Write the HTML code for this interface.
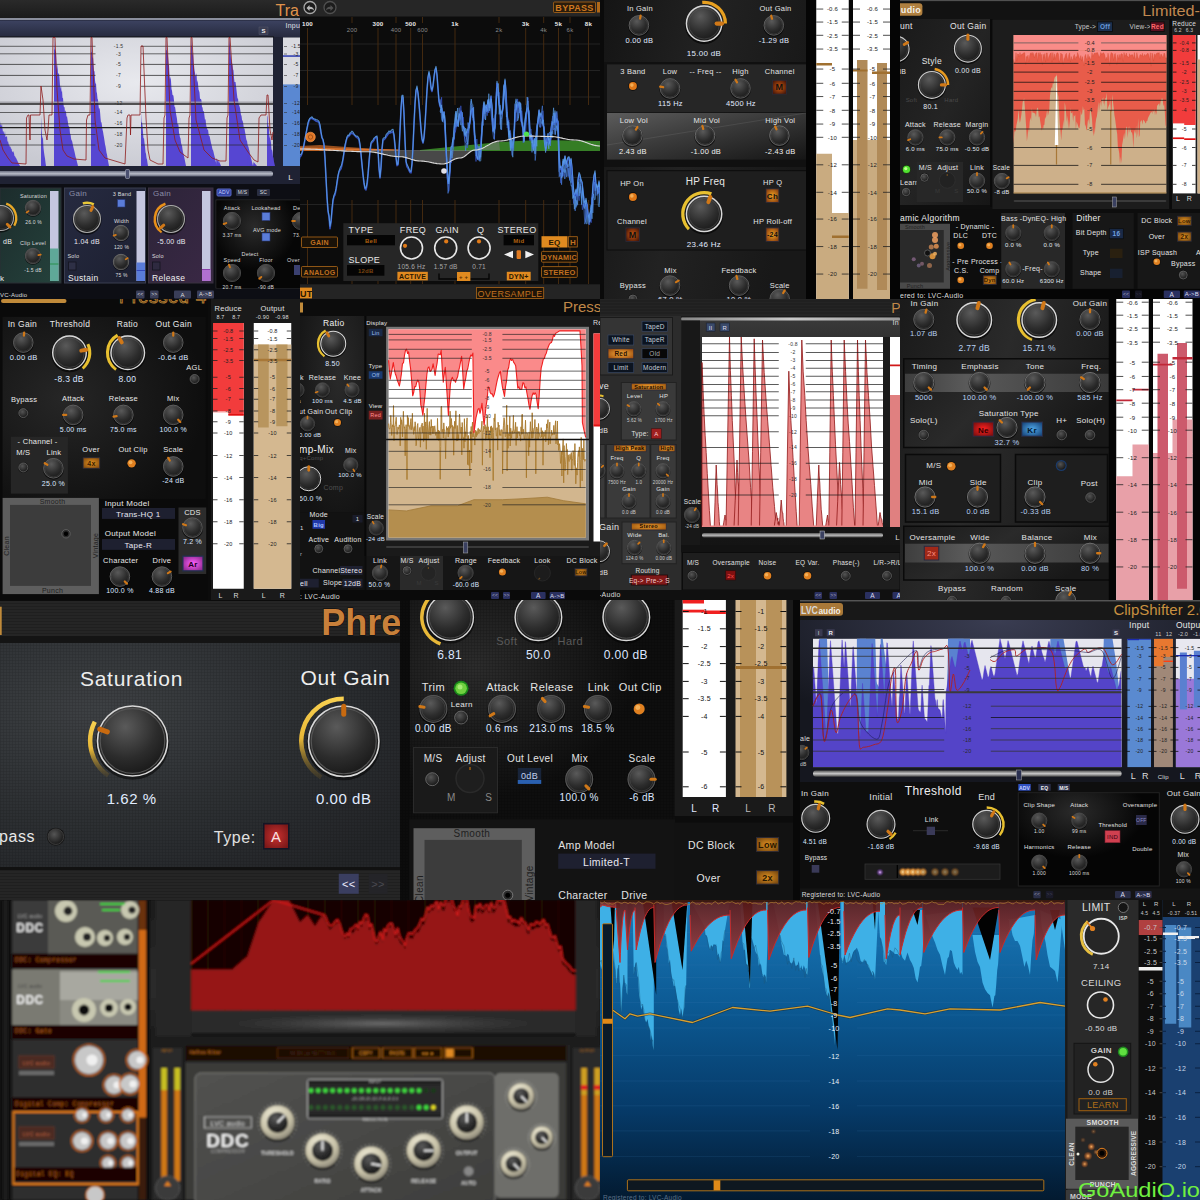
<!DOCTYPE html>
<html><head><meta charset="utf-8"><style>html,body{margin:0;padding:0;background:#000;overflow:hidden}svg{display:block}text{font-family:"Liberation Sans",sans-serif}</style></head>
<body><svg width="1200" height="1200" viewBox="0 0 1200 1200">
<defs>
<radialGradient id="kb" cx="0.4" cy="0.3" r="0.8"><stop offset="0" stop-color="#5a5a5a"/><stop offset="0.55" stop-color="#2c2c2c"/><stop offset="1" stop-color="#111"/></radialGradient>
<radialGradient id="ledd" cx="0.4" cy="0.35" r="0.7"><stop offset="0" stop-color="#555"/><stop offset="1" stop-color="#151515"/></radialGradient>
<radialGradient id="kbw" cx="0.4" cy="0.3" r="0.8"><stop offset="0" stop-color="#f0ecd8"/><stop offset="0.6" stop-color="#c8c2a8"/><stop offset="1" stop-color="#7a766a"/></radialGradient>
<clipPath id="cA"><rect x="0" y="0" width="300" height="299"/></clipPath>
<linearGradient id="hdrA" x1="0" y1="0" x2="0" y2="1"><stop offset="0" stop-color="#2a2a2a"/><stop offset="1" stop-color="#1a1a1a"/></linearGradient>
<linearGradient id="navA" x1="0" y1="0" x2="0" y2="1"><stop offset="0" stop-color="#3c4260"/><stop offset="1" stop-color="#262a3e"/></linearGradient>
<radialGradient id="grA" cx="0.5" cy="0.35" r="0.7"><stop offset="0" stop-color="#e8e9ee"/><stop offset="1" stop-color="#c9cad2"/></radialGradient>
<linearGradient id="slA" x1="0" y1="0" x2="0" y2="1"><stop offset="0" stop-color="#6a6e80"/><stop offset="0.5" stop-color="#b8bcc8"/><stop offset="1" stop-color="#5a5e70"/></linearGradient>
<linearGradient id="grnA" x1="0" y1="0" x2="1" y2="1"><stop offset="0" stop-color="#1c2c2c"/><stop offset="1" stop-color="#25423c"/></linearGradient>
<linearGradient id="nvA" x1="0" y1="0" x2="1" y2="1"><stop offset="0" stop-color="#262a40"/><stop offset="1" stop-color="#1c1f30"/></linearGradient>
<linearGradient id="ppA" x1="0" y1="0" x2="1" y2="1"><stop offset="0" stop-color="#2c2438"/><stop offset="1" stop-color="#3a2845"/></linearGradient>
<radialGradient id="blkA" cx="0.45" cy="0.3" r="0.5"><stop offset="0" stop-color="#2a2a2a"/><stop offset="1" stop-color="#060606"/></radialGradient>
<clipPath id="cB"><rect x="300" y="0" width="300" height="300"/></clipPath>
<clipPath id="cC"><rect x="600" y="0" width="210" height="300"/></clipPath>
<linearGradient id="p2C" x1="0" y1="0" x2="1" y2="1"><stop offset="0" stop-color="#5c5c5c"/><stop offset="0.45" stop-color="#3a3a3a"/><stop offset="1" stop-color="#151515"/></linearGradient>
<linearGradient id="bgC" x1="0" y1="0" x2="1" y2="0.3"><stop offset="0" stop-color="#141414"/><stop offset="0.5" stop-color="#222"/><stop offset="1" stop-color="#181818"/></linearGradient>
<radialGradient id="vb77280" cx="0.5" cy="0.5" r="0.6"><stop offset="0" stop-color="#d05a10"/><stop offset="1" stop-color="#4a1808"/></radialGradient>
<radialGradient id="vb766188" cx="0.5" cy="0.5" r="0.6"><stop offset="0" stop-color="#f0a020"/><stop offset="1" stop-color="#8a4010"/></radialGradient>
<radialGradient id="vb625227" cx="0.5" cy="0.5" r="0.6"><stop offset="0" stop-color="#d05a10"/><stop offset="1" stop-color="#4a1808"/></radialGradient>
<radialGradient id="vb766227" cx="0.5" cy="0.5" r="0.6"><stop offset="0" stop-color="#f0a020"/><stop offset="1" stop-color="#8a4010"/></radialGradient>
<clipPath id="cCm"><rect x="806" y="0" width="94" height="300"/></clipPath>
<clipPath id="cD"><rect x="900" y="0" width="300" height="300"/></clipPath>
<linearGradient id="bgD" x1="0" y1="0" x2="1" y2="1"><stop offset="0" stop-color="#1a1a1a"/><stop offset="0.5" stop-color="#242424"/><stop offset="1" stop-color="#161616"/></linearGradient>
<radialGradient id="vb983275" cx="0.5" cy="0.5" r="0.6"><stop offset="0" stop-color="#e09020"/><stop offset="1" stop-color="#8a5010"/></radialGradient>
<radialGradient id="vb1177216" cx="0.5" cy="0.5" r="0.6"><stop offset="0" stop-color="#e09020"/><stop offset="1" stop-color="#7a4a10"/></radialGradient>
<radialGradient id="vb1177232" cx="0.5" cy="0.5" r="0.6"><stop offset="0" stop-color="#e09020"/><stop offset="1" stop-color="#7a4a10"/></radialGradient>
<clipPath id="cE"><rect x="0" y="299" width="300" height="301"/></clipPath>
<radialGradient id="bgE" cx="0.3" cy="0.45" r="0.7"><stop offset="0" stop-color="#262626"/><stop offset="1" stop-color="#0e0e0e"/></radialGradient>
<radialGradient id="vb83457" cx="0.5" cy="0.5" r="0.6"><stop offset="0" stop-color="#e09020"/><stop offset="1" stop-color="#8a5010"/></radialGradient>
<radialGradient id="arE" cx="0.5" cy="0.5" r="0.6"><stop offset="0" stop-color="#ff60ff"/><stop offset="1" stop-color="#902a90"/></radialGradient>
<clipPath id="cF"><rect x="300" y="299" width="300" height="301"/></clipPath>
<radialGradient id="bgF" cx="0.6" cy="0.3" r="0.8"><stop offset="0" stop-color="#2a2a2a"/><stop offset="1" stop-color="#121212"/></radialGradient>
<radialGradient id="vb575568" cx="0.5" cy="0.5" r="0.6"><stop offset="0" stop-color="#e09020"/><stop offset="1" stop-color="#7a4a10"/></radialGradient>
<clipPath id="cG"><rect x="600" y="299" width="300" height="301"/></clipPath>
<radialGradient id="vb608348" cx="0.5" cy="0.5" r="0.6"><stop offset="0" stop-color="#f8b040"/><stop offset="1" stop-color="#a05010"/></radialGradient>
<radialGradient id="vb631383" cx="0.5" cy="0.5" r="0.6"><stop offset="0" stop-color="#f0a030"/><stop offset="1" stop-color="#a05810"/></radialGradient>
<radialGradient id="vb613445" cx="0.5" cy="0.5" r="0.6"><stop offset="0" stop-color="#f0a030"/><stop offset="1" stop-color="#a05810"/></radialGradient>
<radialGradient id="vb658445" cx="0.5" cy="0.5" r="0.6"><stop offset="0" stop-color="#f0a030"/><stop offset="1" stop-color="#a05810"/></radialGradient>
<radialGradient id="vb631523" cx="0.5" cy="0.5" r="0.6"><stop offset="0" stop-color="#f0a030"/><stop offset="1" stop-color="#a05810"/></radialGradient>
<linearGradient id="frG" x1="0" y1="0" x2="0" y2="1"><stop offset="0" stop-color="#3a3a3a"/><stop offset="0.3" stop-color="#202020"/><stop offset="1" stop-color="#141414"/></linearGradient>
<linearGradient id="ftG" x1="0" y1="0" x2="1" y2="0"><stop offset="0" stop-color="#888"/><stop offset="0.5" stop-color="#c8c8c8"/><stop offset="1" stop-color="#999"/></linearGradient>
<linearGradient id="slG" x1="0" y1="0" x2="0" y2="1"><stop offset="0" stop-color="#555"/><stop offset="0.5" stop-color="#bbb"/><stop offset="1" stop-color="#444"/></linearGradient>
<clipPath id="cH"><rect x="900" y="299" width="300" height="301"/></clipPath>
<linearGradient id="bgH" x1="0" y1="0" x2="1" y2="0.4"><stop offset="0" stop-color="#1a1a1a"/><stop offset="0.5" stop-color="#2a2a2a"/><stop offset="1" stop-color="#181818"/></linearGradient>
<linearGradient id="stH" x1="0" y1="0" x2="1" y2="0"><stop offset="0" stop-color="#3e3e3e"/><stop offset="0.3" stop-color="#5a5a5a"/><stop offset="1" stop-color="#3a3a3a"/></linearGradient>
<radialGradient id="neH" cx="0.5" cy="0.5" r="0.6"><stop offset="0" stop-color="#ff2020"/><stop offset="1" stop-color="#801010"/></radialGradient>
<radialGradient id="krH" cx="0.5" cy="0.5" r="0.6"><stop offset="0" stop-color="#50a8e8"/><stop offset="1" stop-color="#1a4a80"/></radialGradient>
<clipPath id="cI"><rect x="0" y="600" width="400" height="300"/></clipPath>
<radialGradient id="bgI" cx="0.25" cy="0.3" r="0.9"><stop offset="0" stop-color="#3e4144"/><stop offset="0.5" stop-color="#2e3134"/><stop offset="1" stop-color="#232528"/></radialGradient>
<pattern id="grdI" width="3" height="3" patternUnits="userSpaceOnUse"><rect width="3" height="3" fill="none"/><path d="M0,0.5 H3 M0.5,0 V3" stroke="#000" stroke-width="0.5" opacity="0.18"/></pattern>
<pattern id="strI" width="4" height="3" patternUnits="userSpaceOnUse"><rect width="4" height="3" fill="#1f1f1f"/><rect y="1.5" width="4" height="1" fill="#2a2a2a"/></pattern>
<linearGradient id="arcI1" x1="0" y1="1" x2="0" y2="0"><stop offset="0" stop-color="#8a6a20" stop-opacity="0.2"/><stop offset="0.5" stop-color="#e8b838"/><stop offset="1" stop-color="#f8d050"/></linearGradient>
<radialGradient id="tyI" cx="0.5" cy="0.5" r="0.6"><stop offset="0" stop-color="#c83030"/><stop offset="1" stop-color="#7a1818"/></radialGradient>
<clipPath id="cJ"><rect x="400" y="600" width="400" height="300"/></clipPath>
<radialGradient id="bgJ" cx="0.25" cy="0.3" r="0.6"><stop offset="0" stop-color="#2c2c2c"/><stop offset="1" stop-color="#0e0e0e"/></radialGradient>
<pattern id="grdJ" width="3" height="3" patternUnits="userSpaceOnUse"><path d="M0,0.5 H3 M0.5,0 V3" stroke="#000" stroke-width="0.5" opacity="0.25"/></pattern>
<radialGradient id="vb756837" cx="0.5" cy="0.5" r="0.6"><stop offset="0" stop-color="#e09020"/><stop offset="1" stop-color="#7a4a10"/></radialGradient>
<radialGradient id="vb756870" cx="0.5" cy="0.5" r="0.6"><stop offset="0" stop-color="#e09020"/><stop offset="1" stop-color="#7a4a10"/></radialGradient>
<clipPath id="cK"><rect x="800" y="600" width="400" height="300"/></clipPath>
<radialGradient id="frK" cx="0.5" cy="0" r="0.7"><stop offset="0" stop-color="#3a3d52"/><stop offset="1" stop-color="#15171f"/></radialGradient>
<radialGradient id="advK" cx="0.4" cy="0.2" r="0.5"><stop offset="0" stop-color="#2a2a2a"/><stop offset="1" stop-color="#050505"/></radialGradient>
<linearGradient id="slK" x1="0" y1="0" x2="0" y2="1"><stop offset="0" stop-color="#555"/><stop offset="0.5" stop-color="#c8c8c8"/><stop offset="1" stop-color="#444"/></linearGradient>
<radialGradient id="glK"><stop offset="0" stop-color="#ffe0a0"/><stop offset="0.5" stop-color="#f0a040" stop-opacity="0.8"/><stop offset="1" stop-color="#a05010" stop-opacity="0"/></radialGradient>
<radialGradient id="glP"><stop offset="0" stop-color="#e0b0ff"/><stop offset="1" stop-color="#6020a0" stop-opacity="0"/></radialGradient>
<clipPath id="cL"><rect x="0" y="900" width="600" height="300"/></clipPath>
<linearGradient id="bzL" x1="0" y1="0" x2="0" y2="1"><stop offset="0" stop-color="#1c1c1c"/><stop offset="0.6" stop-color="#2c2c2c"/><stop offset="1" stop-color="#1a1a1a"/></linearGradient>
<radialGradient id="hlL" cx="0.5" cy="0.5" r="0.5"><stop offset="0" stop-color="#6a6a6a"/><stop offset="1" stop-color="#2a2a2a" stop-opacity="0"/></radialGradient>
<filter id="blL" x="0" y="0" width="1" height="1"><feGaussianBlur stdDeviation="1.0"/></filter>
<linearGradient id="fpL" x1="0" y1="0" x2="1" y2="1"><stop offset="0" stop-color="#525250"/><stop offset="1" stop-color="#3e3e3c"/></linearGradient>
<clipPath id="cM"><rect x="600" y="900" width="600" height="300"/></clipPath>
<linearGradient id="bgM" x1="0" y1="0" x2="0" y2="1"><stop offset="0" stop-color="#1a78b8"/><stop offset="0.35" stop-color="#0c5a94"/><stop offset="0.7" stop-color="#063a68"/><stop offset="1" stop-color="#031a30"/></linearGradient>
<linearGradient id="rdM" x1="0" y1="0" x2="0" y2="1"><stop offset="0" stop-color="#5a1a1a"/><stop offset="1" stop-color="#9a3a3a"/></linearGradient>
<radialGradient id="obM"><stop offset="0" stop-color="#ffb060"/><stop offset="1" stop-color="#c05010" stop-opacity="0.2"/></radialGradient></defs>
<rect x="0" y="0" width="1200" height="1200" fill="#101010"/>
<g clip-path="url(#cA)">
<rect x="0" y="0" width="300" height="19" fill="url(#hdrA)"/>
<text x="275.5" y="15.5" fill="#e0934c" font-size="16">Tra</text>
<rect x="0" y="18" width="300" height="2.5" fill="#8a8e9c"/>
<rect x="0" y="20" width="300" height="164" fill="#1f2233"/>
<rect x="0" y="20.5" width="300" height="16.5" fill="url(#navA)"/>
<rect x="0" y="36.5" width="274" height="1.0" fill="#111"/>
<text x="285.5" y="27.5" fill="#e0e0e8" font-size="7" letter-spacing="0.25">Input</text>
<rect x="259" y="27" width="9" height="7.5" fill="#3a3d52" stroke="#55596e" stroke-width="0.5"/>
<text x="263.5" y="33.2" fill="#f0f0f0" font-size="6" text-anchor="middle" font-weight="bold" letter-spacing="0.21">S</text>
<rect x="0" y="37.5" width="273" height="128.5" fill="url(#grA)"/>
<polygon points="-6.0,166.0 -6.0,99.0 -5.5,99.4 -5.0,105.3 -4.5,105.4 -4.0,109.9 -3.5,111.9 -3.0,107.7 -2.5,108.8 -2.0,118.9 -1.5,114.6 -1.0,115.9 -0.5,124.6 0.0,121.0 0.5,125.7 1.0,123.8 1.5,126.6 2.0,123.8 2.5,129.1 3.0,132.1 3.5,130.7 4.0,133.5 4.5,134.2 5.0,131.1 5.5,137.1 6.0,137.1 6.5,136.4 7.0,136.0 7.5,142.1 8.0,141.0 8.5,143.4 9.0,145.3 9.5,145.5 10.0,147.5 10.5,146.2 11.0,149.0 11.5,148.6 12.0,151.5 12.5,152.2 13.0,150.7 13.5,151.9 14.0,153.2 14.5,156.2 15.0,155.9 15.5,157.4 16.0,157.7 16.5,159.1 17.0,160.0 17.5,160.9 18.0,162.2 18.5,163.1 19.0,164.2 19.5,165.1 20.0,166.0 20.0,166.0" fill="#5646d2"/>
<polygon points="41.0,166.0 41.0,116.0 41.5,128.7 42.0,135.7 42.5,137.7 43.0,138.7 43.5,147.9 44.0,152.3 44.5,155.7 45.0,158.5 45.5,162.5 46.0,166.0 46.0,166.0" fill="#5646d2"/>
<polygon points="54.0,166.0 54.0,37.5 54.5,48.4 55.0,50.2 55.5,51.1 56.0,52.6 56.5,64.9 57.0,69.7 57.5,63.6 58.0,74.0 58.5,73.2 59.0,73.8 59.5,78.2 60.0,85.4 60.5,89.0 61.0,84.6 61.5,92.2 62.0,90.2 62.5,98.2 63.0,97.8 63.5,104.4 64.0,107.5 64.5,106.7 65.0,112.3 65.5,110.3 66.0,111.4 66.5,116.9 67.0,116.1 67.5,119.4 68.0,122.8 68.5,126.1 69.0,126.3 69.5,128.1 70.0,133.8 70.5,133.8 71.0,138.3 71.5,140.2 72.0,140.7 72.5,143.1 73.0,145.4 73.5,147.8 74.0,149.8 74.5,151.8 75.0,153.9 75.5,156.4 76.0,157.9 76.5,159.9 77.0,162.1 77.5,163.9 78.0,166.0 78.0,166.0" fill="#5646d2"/>
<polygon points="91.0,166.0 91.0,37.5 91.5,51.8 92.0,52.4 92.5,58.0 93.0,57.0 93.5,65.9 94.0,71.8 94.5,70.5 95.0,80.2 95.5,84.1 96.0,82.9 96.5,91.4 97.0,93.6 97.5,98.7 98.0,99.7 98.5,105.6 99.0,109.0 99.5,107.7 100.0,111.3 100.5,118.1 101.0,122.7 101.5,122.0 102.0,126.1 102.5,129.7 103.0,131.6 103.5,134.8 104.0,137.5 104.5,140.7 105.0,144.2 105.5,146.3 106.0,149.3 106.5,152.8 107.0,154.5 107.5,158.0 108.0,160.8 108.5,163.3 109.0,166.0 109.0,166.0" fill="#5646d2"/>
<polygon points="141.0,166.0 141.0,112.0 141.5,122.8 142.0,121.9 142.5,126.1 143.0,132.5 143.5,138.5 144.0,137.9 144.5,143.0 145.0,146.6 145.5,152.2 146.0,153.7 146.5,158.0 147.0,159.5 147.5,162.9 148.0,166.0 148.0,166.0" fill="#5646d2"/>
<polygon points="166.0,166.0 166.0,37.5 166.5,50.1 167.0,50.5 167.5,52.9 168.0,56.3 168.5,64.8 169.0,65.3 169.5,75.3 170.0,79.2 170.5,76.5 171.0,80.9 171.5,89.0 172.0,90.8 172.5,95.3 173.0,94.8 173.5,96.3 174.0,100.6 174.5,107.2 175.0,106.6 175.5,110.1 176.0,113.4 176.5,116.3 177.0,119.1 177.5,124.5 178.0,123.5 178.5,125.6 179.0,132.4 179.5,134.7 180.0,137.6 180.5,138.2 181.0,142.4 181.5,144.8 182.0,145.5 182.5,149.3 183.0,151.9 183.5,154.0 184.0,156.3 184.5,158.5 185.0,161.1 185.5,163.5 186.0,166.0 186.0,166.0" fill="#5646d2"/>
<polygon points="191.0,166.0 191.0,37.5 191.5,45.2 192.0,46.2 192.5,56.1 193.0,51.2 193.5,64.1 194.0,65.0 194.5,70.5 195.0,73.1 195.5,75.9 196.0,75.6 196.5,73.0 197.0,82.5 197.5,80.0 198.0,83.8 198.5,89.5 199.0,90.8 199.5,92.4 200.0,98.9 200.5,98.7 201.0,99.1 201.5,100.8 202.0,107.4 202.5,107.0 203.0,111.3 203.5,110.8 204.0,112.1 204.5,116.3 205.0,120.0 205.5,118.7 206.0,124.0 206.5,126.7 207.0,128.2 207.5,130.3 208.0,128.9 208.5,133.5 209.0,136.4 209.5,135.5 210.0,138.3 210.5,140.4 211.0,143.1 211.5,144.8 212.0,146.9 212.5,149.5 213.0,149.9 213.5,152.1 214.0,154.2 214.5,156.2 215.0,158.1 215.5,160.7 216.0,162.4 216.5,164.0 217.0,166.0 217.0,166.0" fill="#5646d2"/>
<polygon points="229.0,166.0 229.0,37.5 229.5,42.4 230.0,47.2 230.5,51.9 231.0,59.0 231.5,62.0 232.0,63.1 232.5,64.7 233.0,69.3 233.5,70.4 234.0,77.7 234.5,82.1 235.0,81.9 235.5,82.1 236.0,85.8 236.5,90.2 237.0,94.7 237.5,98.7 238.0,98.2 238.5,103.8 239.0,105.0 239.5,106.2 240.0,108.3 240.5,111.5 241.0,115.1 241.5,115.8 242.0,119.7 242.5,120.8 243.0,122.0 243.5,125.7 244.0,128.7 244.5,128.3 245.0,132.0 245.5,134.2 246.0,138.0 246.5,140.3 247.0,140.7 247.5,144.3 248.0,146.1 248.5,146.9 249.0,149.5 249.5,151.0 250.0,154.2 250.5,156.0 251.0,158.3 251.5,160.1 252.0,162.0 252.5,164.0 253.0,166.0 253.0,166.0" fill="#5646d2"/>
<polygon points="267.0,166.0 267.0,115.0 267.5,116.9 268.0,126.6 268.5,124.7 269.0,129.8 269.5,138.6 270.0,136.0 270.5,139.7 271.0,142.9 271.5,150.1 272.0,149.4 272.5,151.7 273.0,157.1 273.5,157.8 274.0,161.7 274.5,163.7 275.0,166.0 275.0,166.0" fill="#5646d2"/>
<polygon points="216.0,166.0 216.5,158.0 220.0,166.0" fill="#5646d2"/>
<polygon points="218.0,166.0 218.5,160.0 221.0,166.0" fill="#5646d2"/>
<polygon points="247.0,166.0 247.5,150.0 250.0,166.0" fill="#5646d2"/>
<polygon points="253.0,166.0 253.5,162.0 257.0,166.0" fill="#5646d2"/>
<line x1="0" y1="46.3" x2="95.5" y2="46.3" stroke="#2a2a2a" stroke-width="0.8" opacity="0.85"/>
<line x1="141" y1="46.3" x2="273" y2="46.3" stroke="#2a2a2a" stroke-width="0.8" opacity="0.85"/>
<line x1="0" y1="53.8" x2="95.5" y2="53.8" stroke="#2a2a2a" stroke-width="0.8" opacity="0.85"/>
<line x1="141" y1="53.8" x2="273" y2="53.8" stroke="#2a2a2a" stroke-width="0.8" opacity="0.85"/>
<line x1="0" y1="64.4" x2="95.5" y2="64.4" stroke="#2a2a2a" stroke-width="0.9" opacity="0.85"/>
<line x1="141" y1="64.4" x2="273" y2="64.4" stroke="#2a2a2a" stroke-width="0.9" opacity="0.85"/>
<line x1="0" y1="75.4" x2="95.5" y2="75.4" stroke="#2a2a2a" stroke-width="0.9" opacity="0.85"/>
<line x1="141" y1="75.4" x2="273" y2="75.4" stroke="#2a2a2a" stroke-width="0.9" opacity="0.85"/>
<line x1="0" y1="86.3" x2="95.5" y2="86.3" stroke="#2a2a2a" stroke-width="0.8" opacity="0.85"/>
<line x1="141" y1="86.3" x2="273" y2="86.3" stroke="#2a2a2a" stroke-width="0.8" opacity="0.85"/>
<line x1="0" y1="112.5" x2="95.5" y2="112.5" stroke="#2a2a2a" stroke-width="0.8" opacity="0.85"/>
<line x1="141" y1="112.5" x2="273" y2="112.5" stroke="#2a2a2a" stroke-width="0.8" opacity="0.85"/>
<line x1="0" y1="123.8" x2="95.5" y2="123.8" stroke="#2a2a2a" stroke-width="0.8" opacity="0.85"/>
<line x1="141" y1="123.8" x2="273" y2="123.8" stroke="#2a2a2a" stroke-width="0.8" opacity="0.85"/>
<line x1="0" y1="134.4" x2="95.5" y2="134.4" stroke="#2a2a2a" stroke-width="0.8" opacity="0.85"/>
<line x1="141" y1="134.4" x2="273" y2="134.4" stroke="#2a2a2a" stroke-width="0.8" opacity="0.85"/>
<line x1="0" y1="145" x2="95.5" y2="145" stroke="#2a2a2a" stroke-width="0.8" opacity="0.85"/>
<line x1="141" y1="145" x2="273" y2="145" stroke="#2a2a2a" stroke-width="0.8" opacity="0.85"/>
<rect x="0" y="101.5" width="273" height="1.5" fill="#9a9aa0" opacity="0.8"/>
<line x1="0" y1="104" x2="273" y2="104" stroke="#202020" stroke-width="1.3"/>
<line x1="0" y1="127.6" x2="273" y2="127.6" stroke="#202020" stroke-width="1.3"/>
<text x="118.5" y="48" fill="#333" font-size="5" text-anchor="middle" letter-spacing="0.18">-1.5</text>
<text x="118.5" y="55.5" fill="#333" font-size="5" text-anchor="middle" letter-spacing="0.18">-3</text>
<text x="118.5" y="66" fill="#333" font-size="5" text-anchor="middle" letter-spacing="0.18">-5</text>
<text x="118.5" y="77" fill="#333" font-size="5" text-anchor="middle" letter-spacing="0.18">-7</text>
<text x="118.5" y="88" fill="#333" font-size="5" text-anchor="middle" letter-spacing="0.18">-9</text>
<text x="118.5" y="105" fill="#333" font-size="5" text-anchor="middle" letter-spacing="0.18">-12</text>
<text x="118.5" y="114" fill="#333" font-size="5" text-anchor="middle" letter-spacing="0.18">-14</text>
<text x="118.5" y="125" fill="#333" font-size="5" text-anchor="middle" letter-spacing="0.18">-16</text>
<text x="118.5" y="136" fill="#333" font-size="5" text-anchor="middle" letter-spacing="0.18">-18</text>
<text x="118.5" y="147" fill="#333" font-size="5" text-anchor="middle" letter-spacing="0.18">-20</text>
<polyline points="0.0,140.0 3.0,150.0 8.0,158.0 12.0,163.0 13.0,163.0 26.0,164.0 26.5,118.0 28.0,115.0 29.0,115.0 30.0,140.0 30.5,115.0 40.0,115.0 41.0,86.0 43.0,100.0 45.0,130.0 47.0,140.0 48.0,130.0 49.0,115.0 52.0,115.0 53.0,37.5 55.0,37.5 57.0,90.0 60.0,130.0 63.0,150.0 67.0,156.0 74.0,159.0 86.0,160.0 86.5,120.0 88.0,115.0 90.0,115.0 91.0,37.5 92.0,37.5 95.0,120.0 99.0,150.0 105.0,158.0 125.0,164.0 127.0,118.0 128.0,115.0 130.0,115.0 130.5,135.0 131.0,115.0 140.0,115.0 141.0,46.0 143.0,46.0 146.0,118.0 148.0,150.0 150.0,160.0 158.0,164.0 163.0,164.0 164.0,118.0 165.0,115.0 166.0,37.5 167.0,37.5 170.0,110.0 175.0,140.0 180.0,152.0 188.0,158.0 189.0,118.0 190.0,115.0 191.0,37.5 192.0,37.5 196.0,120.0 204.0,150.0 212.0,158.0 220.0,161.0 226.0,161.0 227.0,118.0 228.0,115.0 229.0,37.5 230.0,37.5 234.0,100.0 240.0,140.0 248.0,152.0 254.0,160.0 258.0,162.0 259.0,118.0 261.0,115.0 266.0,115.0 267.0,95.0 268.0,95.0 270.0,130.0 272.0,140.0 273.0,132.0" fill="none" stroke="#8e1c1c" stroke-width="0.8" stroke-linejoin="round"/>
<rect x="283" y="37.5" width="17" height="128.5" fill="#d9dae0"/>
<rect x="283" y="84.4" width="17" height="81.6" fill="#5a88d2"/>
<rect x="283" y="55.3" width="17" height="1.5" fill="#2b3ab0"/>
<line x1="284" y1="46.5" x2="287" y2="46.5" stroke="#333" stroke-width="0.6"/>
<text x="296" y="48" fill="#222" font-size="5" text-anchor="middle" letter-spacing="0.18">-1.5</text>
<line x1="284" y1="54" x2="287" y2="54" stroke="#333" stroke-width="0.6"/>
<text x="296" y="55.5" fill="#222" font-size="5" text-anchor="middle" letter-spacing="0.18">-3</text>
<line x1="284" y1="64.5" x2="287" y2="64.5" stroke="#333" stroke-width="0.6"/>
<text x="296" y="66" fill="#222" font-size="5" text-anchor="middle" letter-spacing="0.18">-5</text>
<line x1="284" y1="75.5" x2="287" y2="75.5" stroke="#333" stroke-width="0.6"/>
<text x="296" y="77" fill="#222" font-size="5" text-anchor="middle" letter-spacing="0.18">-7</text>
<line x1="284" y1="86.5" x2="287" y2="86.5" stroke="#333" stroke-width="0.6"/>
<text x="296" y="88" fill="#222" font-size="5" text-anchor="middle" letter-spacing="0.18">-9</text>
<line x1="284" y1="103.5" x2="287" y2="103.5" stroke="#333" stroke-width="0.6"/>
<text x="296" y="105" fill="#222" font-size="5" text-anchor="middle" letter-spacing="0.18">-12</text>
<line x1="284" y1="112.5" x2="287" y2="112.5" stroke="#333" stroke-width="0.6"/>
<text x="296" y="114" fill="#222" font-size="5" text-anchor="middle" letter-spacing="0.18">-14</text>
<line x1="284" y1="123.5" x2="287" y2="123.5" stroke="#333" stroke-width="0.6"/>
<text x="296" y="125" fill="#222" font-size="5" text-anchor="middle" letter-spacing="0.18">-16</text>
<line x1="284" y1="134.5" x2="287" y2="134.5" stroke="#333" stroke-width="0.6"/>
<text x="296" y="136" fill="#222" font-size="5" text-anchor="middle" letter-spacing="0.18">-18</text>
<line x1="284" y1="145.5" x2="287" y2="145.5" stroke="#333" stroke-width="0.6"/>
<text x="296" y="147" fill="#222" font-size="5" text-anchor="middle" letter-spacing="0.18">-20</text>
<rect x="-3" y="171" width="276" height="5.5" fill="url(#slA)" rx="2.5"/>
<rect x="125.5" y="169.5" width="4.0" height="9.0" fill="#4a5070" rx="1" stroke="#c0c4d0" stroke-width="0.5"/>
<text x="290.5" y="180" fill="#e8e8e8" font-size="8" text-anchor="middle" letter-spacing="0.28">L</text>
<rect x="0" y="184" width="300" height="115" fill="#0d0e14"/>
<rect x="0" y="188" width="61" height="95" fill="url(#grnA)" stroke="#2a2e35" stroke-width="1"/>
<rect x="64.5" y="188" width="81.0" height="95" fill="url(#nvA)" stroke="#3a3e50" stroke-width="1"/>
<rect x="148.5" y="188" width="64.5" height="95" fill="url(#ppA)" stroke="#3a3240" stroke-width="1"/>
<rect x="216" y="200" width="84" height="88" fill="#060606" stroke="#2a2a2a" stroke-width="1"/>
<path d="M6.20,203.72 A15.2,15.2 0 0 1 14.16,225.60" fill="none" stroke="#e8a828" stroke-width="2.34" stroke-linecap="butt"/>
<circle cx="1" cy="219.04" r="13.52" fill="#000" opacity="0.6"/>
<circle cx="1" cy="218" r="13" fill="url(#kb)"/>
<circle cx="1" cy="218" r="12.48" fill="none" stroke="#aaa" stroke-width="1.04"/>
<circle cx="1" cy="218" r="10.92" fill="none" stroke="#5a5a5a" stroke-width="0.45500000000000007" opacity="0.8"/>
<line x1="7.25" y1="224.25" x2="10.01" y2="227.01" stroke="#d07818" stroke-width="2.86" stroke-linecap="round"/>
<text x="33.5" y="197.5" fill="#d8d8d8" font-size="5.5" text-anchor="middle" letter-spacing="0.19">Saturation</text>
<circle cx="33" cy="208.64" r="8.32" fill="#000" opacity="0.6"/>
<circle cx="33" cy="208" r="8" fill="url(#kb)"/>
<circle cx="33" cy="208" r="7.68" fill="none" stroke="#666" stroke-width="0.64"/>
<circle cx="33" cy="208" r="6.72" fill="none" stroke="#5a5a5a" stroke-width="0.4" opacity="0.8"/>
<line x1="28.54" y1="211.12" x2="26.58" y2="212.5" stroke="#d07818" stroke-width="1.76" stroke-linecap="round"/>
<text x="33.5" y="224" fill="#ddd" font-size="5" text-anchor="middle" letter-spacing="0.18">26.0 %</text>
<text x="33" y="245" fill="#d8d8d8" font-size="5.5" text-anchor="middle" letter-spacing="0.19">Clip Level</text>
<circle cx="33" cy="256.64" r="8.32" fill="#000" opacity="0.6"/>
<circle cx="33" cy="256" r="8" fill="url(#kb)"/>
<circle cx="33" cy="256" r="7.68" fill="none" stroke="#666" stroke-width="0.64"/>
<circle cx="33" cy="256" r="6.72" fill="none" stroke="#5a5a5a" stroke-width="0.4" opacity="0.8"/>
<line x1="38.36" y1="255.06" x2="40.72" y2="254.64" stroke="#d07818" stroke-width="1.76" stroke-linecap="round"/>
<text x="33" y="272" fill="#ddd" font-size="5" text-anchor="middle" letter-spacing="0.18">-1.5 dB</text>
<text x="3" y="244" fill="#eee" font-size="7" letter-spacing="0.25">dB</text>
<text x="0" y="281" fill="#eee" font-size="8" letter-spacing="0.28">k</text>
<rect x="50" y="191" width="8.5" height="90" fill="#c4c6df"/>
<rect x="50" y="248.5" width="8.5" height="32.5" fill="#5fa898"/>
<line x1="50" y1="264" x2="58.5" y2="264" stroke="#1c8a3a" stroke-width="0.8"/>
<text x="69" y="196" fill="#8a8ea8" font-size="8" letter-spacing="0.28">Gain</text>
<path d="M82.81,203.35 A16.2,16.2 0 0 1 93.85,204.32" fill="none" stroke="#e8c838" stroke-width="2.52" stroke-linecap="butt"/>
<circle cx="87" cy="220.12" r="14.56" fill="#000" opacity="0.6"/>
<circle cx="87" cy="219" r="14" fill="url(#kb)"/>
<circle cx="87" cy="219" r="13.44" fill="none" stroke="#aaa" stroke-width="1.12"/>
<circle cx="87" cy="219" r="11.76" fill="none" stroke="#5a5a5a" stroke-width="0.49000000000000005" opacity="0.8"/>
<line x1="91.02" y1="210.37" x2="92.8" y2="206.57" stroke="#d07818" stroke-width="3.08" stroke-linecap="round"/>
<text x="87" y="244" fill="#e8e8f0" font-size="7" text-anchor="middle" letter-spacing="0.25">1.04 dB</text>
<text x="67.5" y="257.5" fill="#ddd" font-size="5.5" letter-spacing="0.19">Solo</text>
<rect x="68.5" y="262" width="7.5" height="8" fill="#2e3046" stroke="#151520" stroke-width="0.8"/>
<text x="68" y="281" fill="#eee" font-size="8.5" letter-spacing="0.3">Sustain</text>
<text x="122" y="195.5" fill="#ddd" font-size="5.5" text-anchor="middle" letter-spacing="0.19">3 Band</text>
<rect x="117.5" y="199.5" width="7.5" height="7.5" fill="#5a7cd8" stroke="#2a3a7a" stroke-width="0.6"/>
<text x="121.5" y="223" fill="#ddd" font-size="5.5" text-anchor="middle" letter-spacing="0.19">Width</text>
<circle cx="121" cy="233.64" r="8.32" fill="#000" opacity="0.6"/>
<circle cx="121" cy="233" r="8" fill="url(#kb)"/>
<circle cx="121" cy="233" r="7.68" fill="none" stroke="#888" stroke-width="0.64"/>
<circle cx="121" cy="233" r="6.72" fill="none" stroke="#5a5a5a" stroke-width="0.4" opacity="0.8"/>
<line x1="115.89" y1="234.86" x2="113.63" y2="235.68" stroke="#d07818" stroke-width="1.76" stroke-linecap="round"/>
<text x="121.5" y="249" fill="#ddd" font-size="5" text-anchor="middle" letter-spacing="0.18">120 %</text>
<circle cx="121" cy="262.64" r="8.32" fill="#000" opacity="0.6"/>
<circle cx="121" cy="262" r="8" fill="url(#kb)"/>
<circle cx="121" cy="262" r="7.68" fill="none" stroke="#888" stroke-width="0.64"/>
<circle cx="121" cy="262" r="6.72" fill="none" stroke="#5a5a5a" stroke-width="0.4" opacity="0.8"/>
<line x1="125.71" y1="259.28" x2="127.79" y2="258.08" stroke="#d07818" stroke-width="1.76" stroke-linecap="round"/>
<text x="121.5" y="277" fill="#ddd" font-size="5" text-anchor="middle" letter-spacing="0.18">75 %</text>
<rect x="136.5" y="191" width="8.5" height="90" fill="#c4c6df"/>
<rect x="136.5" y="262.5" width="8.5" height="18.5" fill="#5a7cd8"/>
<line x1="136.5" y1="270.5" x2="145" y2="270.5" stroke="#2a3ab0" stroke-width="0.8"/>
<text x="153" y="196" fill="#8a8ea8" font-size="8" letter-spacing="0.28">Gain</text>
<path d="M161.71,232.27 A16.2,16.2 0 0 1 165.46,203.78" fill="none" stroke="#e8901a" stroke-width="2.52" stroke-linecap="butt"/>
<circle cx="171" cy="220.12" r="14.56" fill="#000" opacity="0.6"/>
<circle cx="171" cy="219" r="14" fill="url(#kb)"/>
<circle cx="171" cy="219" r="13.44" fill="none" stroke="#aaa" stroke-width="1.12"/>
<circle cx="171" cy="219" r="11.76" fill="none" stroke="#5a5a5a" stroke-width="0.49000000000000005" opacity="0.8"/>
<line x1="163.71" y1="225.12" x2="160.49" y2="227.82" stroke="#d07818" stroke-width="3.08" stroke-linecap="round"/>
<text x="171.5" y="244" fill="#e8e8f0" font-size="7" text-anchor="middle" letter-spacing="0.25">-5.00 dB</text>
<text x="152" y="257.5" fill="#ddd" font-size="5.5" letter-spacing="0.19">Solo</text>
<rect x="152.5" y="262" width="7.5" height="8" fill="#2e2a40" stroke="#151520" stroke-width="0.8"/>
<text x="152" y="281" fill="#eee" font-size="8.5" letter-spacing="0.3">Release</text>
<rect x="202" y="191" width="8.5" height="90" fill="#c4c6df"/>
<rect x="202" y="269" width="8.5" height="12" fill="#b070d0"/>
<line x1="202" y1="269.5" x2="210.5" y2="269.5" stroke="#8030a0" stroke-width="0.8"/>
<rect x="217" y="189" width="14" height="7" fill="#3040a0" rx="1" stroke="#5a68c0" stroke-width="1"/>
<text x="224.0" y="194.3" fill="#c8d0ff" font-size="5" text-anchor="middle" letter-spacing="0.18">ADV</text>
<rect x="236" y="189" width="13" height="7" fill="#2a2e40" rx="1"/>
<text x="242.5" y="194.3" fill="#ddd" font-size="5" text-anchor="middle" letter-spacing="0.18">M/S</text>
<rect x="257" y="189" width="13" height="7" fill="#2a2e40" rx="1"/>
<text x="263.5" y="194.3" fill="#ddd" font-size="5" text-anchor="middle" letter-spacing="0.18">SC</text>
<rect x="216.5" y="200.5" width="83.5" height="87.5" fill="url(#blkA)"/>
<text x="232" y="210" fill="#ddd" font-size="5.5" text-anchor="middle" letter-spacing="0.19">Attack</text>
<circle cx="232" cy="221.72" r="9.36" fill="#000" opacity="0.6"/>
<circle cx="232" cy="221" r="9" fill="url(#kb)"/>
<circle cx="232" cy="221" r="8.64" fill="none" stroke="#555" stroke-width="0.72"/>
<circle cx="232" cy="221" r="7.56" fill="none" stroke="#5a5a5a" stroke-width="0.4" opacity="0.8"/>
<line x1="226.25" y1="223.09" x2="223.71" y2="224.02" stroke="#d07818" stroke-width="1.98" stroke-linecap="round"/>
<text x="232" y="237" fill="#ddd" font-size="5" text-anchor="middle" letter-spacing="0.18">3.37 ms</text>
<text x="266" y="210" fill="#ddd" font-size="5.5" text-anchor="middle" letter-spacing="0.19">Lookahead</text>
<rect x="262" y="212.5" width="8" height="8.0" fill="#5a7cd8" stroke="#2a3a7a" stroke-width="0.6"/>
<text x="267" y="231.5" fill="#ddd" font-size="5.5" text-anchor="middle" letter-spacing="0.19">AVG mode</text>
<rect x="262" y="233" width="8" height="8" fill="#5a7cd8" stroke="#2a3a7a" stroke-width="0.6"/>
<text x="250" y="255.5" fill="#ddd" font-size="5.5" text-anchor="middle" letter-spacing="0.19">Detect</text>
<text x="232" y="262" fill="#ddd" font-size="5.5" text-anchor="middle" letter-spacing="0.19">Speed</text>
<circle cx="232" cy="273.72" r="9.36" fill="#000" opacity="0.6"/>
<circle cx="232" cy="273" r="9" fill="url(#kb)"/>
<circle cx="232" cy="273" r="8.64" fill="none" stroke="#555" stroke-width="0.72"/>
<circle cx="232" cy="273" r="7.56" fill="none" stroke="#5a5a5a" stroke-width="0.4" opacity="0.8"/>
<line x1="229.91" y1="267.25" x2="228.98" y2="264.71" stroke="#d07818" stroke-width="1.98" stroke-linecap="round"/>
<text x="232" y="289" fill="#ddd" font-size="5" text-anchor="middle" letter-spacing="0.18">20.7 ms</text>
<text x="266" y="262" fill="#ddd" font-size="5.5" text-anchor="middle" letter-spacing="0.19">Floor</text>
<circle cx="266" cy="273.72" r="9.36" fill="#000" opacity="0.6"/>
<circle cx="266" cy="273" r="9" fill="url(#kb)"/>
<circle cx="266" cy="273" r="8.64" fill="none" stroke="#555" stroke-width="0.72"/>
<circle cx="266" cy="273" r="7.56" fill="none" stroke="#5a5a5a" stroke-width="0.4" opacity="0.8"/>
<line x1="261.31" y1="276.93" x2="259.24" y2="278.67" stroke="#d07818" stroke-width="1.98" stroke-linecap="round"/>
<text x="266" y="289" fill="#ddd" font-size="5" text-anchor="middle" letter-spacing="0.18">-90 dB</text>
<text x="293" y="210" fill="#ddd" font-size="5.5" letter-spacing="0.19">Decay</text>
<circle cx="301" cy="221.72" r="9.36" fill="#000" opacity="0.6"/>
<circle cx="301" cy="221" r="9" fill="url(#kb)"/>
<circle cx="301" cy="221" r="8.64" fill="none" stroke="#555" stroke-width="0.72"/>
<circle cx="301" cy="221" r="7.56" fill="none" stroke="#5a5a5a" stroke-width="0.4" opacity="0.8"/>
<line x1="294.88" y1="221" x2="292.18" y2="221" stroke="#d07818" stroke-width="1.98" stroke-linecap="round"/>
<text x="293" y="237" fill="#ddd" font-size="5" letter-spacing="0.18">73.2</text>
<text x="287" y="262" fill="#ddd" font-size="5.5" letter-spacing="0.19">Oversample</text>
<rect x="294" y="265" width="8" height="10" fill="#3a4070"/>
<text x="0" y="297" fill="#ddd" font-size="6" letter-spacing="0.21">VC-Audio</text>
<rect x="136" y="290.5" width="8.5" height="8.0" fill="#3a3e58" rx="1"/>
<text x="140.25" y="296.3" fill="#ddd" font-size="5" text-anchor="middle" letter-spacing="0.18">&lt;&lt;</text>
<rect x="150" y="290.5" width="8.5" height="8.0" fill="#3a3e58" rx="1"/>
<text x="154.25" y="296.3" fill="#ddd" font-size="5" text-anchor="middle" letter-spacing="0.18">&gt;&gt;</text>
<rect x="174" y="290.5" width="17" height="8.0" fill="#3a3e58" rx="1"/>
<text x="182.5" y="296.66" fill="#ddd" font-size="6" text-anchor="middle" letter-spacing="0.21">A</text>
<rect x="197" y="290.5" width="17" height="8.0" fill="#3a3e58" rx="1"/>
<text x="205.5" y="296.48" fill="#ddd" font-size="5.5" text-anchor="middle" letter-spacing="0.19">A-&gt;B</text>
</g>
<g clip-path="url(#cB)">
<rect x="300" y="0" width="300" height="300" fill="#0c0c0c"/>
<rect x="300" y="0" width="300" height="16.5" fill="#262626"/>
<circle cx="310" cy="7.5" r="6" fill="#1c1c1c" stroke="#a8a8a8" stroke-width="1.3"/>
<path d="M306.5,8 L309.5,5 L309.5,6.8 Q313.5,6.5 314,10.5 Q312,8.5 309.5,9.2 L309.5,11 Z" fill="#b8b8b8"/>
<circle cx="330" cy="7.5" r="6" fill="#1c1c1c" stroke="#505050" stroke-width="1.3"/>
<path d="M333.5,8 L330.5,5 L330.5,6.8 Q326.5,6.5 326,10.5 Q328,8.5 330.5,9.2 L330.5,11 Z" fill="#505050"/>
<rect x="553.5" y="2" width="42.0" height="10.5" fill="#2a1c0c" rx="1" stroke="#b06818" stroke-width="0.8"/>
<text x="574.5" y="11" fill="#d07a20" font-size="9" text-anchor="middle" font-weight="bold" letter-spacing="0.32">BYPASS</text>
<rect x="597" y="2" width="4" height="10.5" fill="#b06818"/>
<line x1="300" y1="44" x2="600" y2="44" stroke="#2a2a2a" stroke-width="0.8"/>
<line x1="300" y1="70.5" x2="600" y2="70.5" stroke="#2a2a2a" stroke-width="0.8"/>
<line x1="300" y1="97" x2="600" y2="97" stroke="#2a2a2a" stroke-width="0.8"/>
<line x1="300" y1="124" x2="600" y2="124" stroke="#2a2a2a" stroke-width="0.8"/>
<line x1="300" y1="150.5" x2="600" y2="150.5" stroke="#2a2a2a" stroke-width="0.8"/>
<line x1="300" y1="177.5" x2="600" y2="177.5" stroke="#2a2a2a" stroke-width="0.8"/>
<line x1="300" y1="204.5" x2="600" y2="204.5" stroke="#2a2a2a" stroke-width="0.8"/>
<line x1="307.5" y1="28" x2="307.5" y2="105" stroke="#4a2c10" stroke-width="0.9"/>
<line x1="307.5" y1="200" x2="307.5" y2="284" stroke="#4a2c10" stroke-width="0.9"/>
<text x="307.5" y="25.5" fill="#e8e8e8" font-size="6.2" text-anchor="middle" font-weight="bold" letter-spacing="0.22">100</text>
<line x1="352" y1="17" x2="352" y2="23" stroke="#4a2c10" stroke-width="0.9"/>
<line x1="352" y1="34" x2="352" y2="105" stroke="#4a2c10" stroke-width="0.9"/>
<line x1="352" y1="200" x2="352" y2="284" stroke="#4a2c10" stroke-width="0.9"/>
<text x="352" y="31.7" fill="#8a8a8a" font-size="6" text-anchor="middle" letter-spacing="0.21">200</text>
<line x1="378" y1="28" x2="378" y2="105" stroke="#4a2c10" stroke-width="0.9"/>
<line x1="378" y1="200" x2="378" y2="284" stroke="#4a2c10" stroke-width="0.9"/>
<text x="378" y="25.5" fill="#e8e8e8" font-size="6.2" text-anchor="middle" font-weight="bold" letter-spacing="0.22">300</text>
<line x1="396" y1="17" x2="396" y2="23" stroke="#4a2c10" stroke-width="0.9"/>
<line x1="396" y1="34" x2="396" y2="105" stroke="#4a2c10" stroke-width="0.9"/>
<line x1="396" y1="200" x2="396" y2="284" stroke="#4a2c10" stroke-width="0.9"/>
<text x="396" y="31.7" fill="#8a8a8a" font-size="6" text-anchor="middle" letter-spacing="0.21">400</text>
<line x1="410.7" y1="28" x2="410.7" y2="105" stroke="#4a2c10" stroke-width="0.9"/>
<line x1="410.7" y1="200" x2="410.7" y2="284" stroke="#4a2c10" stroke-width="0.9"/>
<text x="410.7" y="25.5" fill="#e8e8e8" font-size="6.2" text-anchor="middle" font-weight="bold" letter-spacing="0.22">500</text>
<line x1="422.5" y1="17" x2="422.5" y2="23" stroke="#4a2c10" stroke-width="0.9"/>
<line x1="422.5" y1="34" x2="422.5" y2="105" stroke="#4a2c10" stroke-width="0.9"/>
<line x1="422.5" y1="200" x2="422.5" y2="284" stroke="#4a2c10" stroke-width="0.9"/>
<text x="422.5" y="31.7" fill="#8a8a8a" font-size="6" text-anchor="middle" letter-spacing="0.21">600</text>
<line x1="455" y1="28" x2="455" y2="105" stroke="#4a2c10" stroke-width="0.9"/>
<line x1="455" y1="200" x2="455" y2="284" stroke="#4a2c10" stroke-width="0.9"/>
<text x="455" y="25.5" fill="#e8e8e8" font-size="6.2" text-anchor="middle" font-weight="bold" letter-spacing="0.22">1k</text>
<line x1="499" y1="17" x2="499" y2="23" stroke="#4a2c10" stroke-width="0.9"/>
<line x1="499" y1="34" x2="499" y2="105" stroke="#4a2c10" stroke-width="0.9"/>
<line x1="499" y1="200" x2="499" y2="284" stroke="#4a2c10" stroke-width="0.9"/>
<text x="499" y="31.7" fill="#8a8a8a" font-size="6" text-anchor="middle" letter-spacing="0.21">2k</text>
<line x1="525.7" y1="28" x2="525.7" y2="105" stroke="#4a2c10" stroke-width="0.9"/>
<line x1="525.7" y1="200" x2="525.7" y2="284" stroke="#4a2c10" stroke-width="0.9"/>
<text x="525.7" y="25.5" fill="#e8e8e8" font-size="6.2" text-anchor="middle" font-weight="bold" letter-spacing="0.22">3k</text>
<line x1="543.7" y1="17" x2="543.7" y2="23" stroke="#4a2c10" stroke-width="0.9"/>
<line x1="543.7" y1="34" x2="543.7" y2="105" stroke="#4a2c10" stroke-width="0.9"/>
<line x1="543.7" y1="200" x2="543.7" y2="284" stroke="#4a2c10" stroke-width="0.9"/>
<text x="543.7" y="31.7" fill="#8a8a8a" font-size="6" text-anchor="middle" letter-spacing="0.21">4k</text>
<line x1="558.5" y1="28" x2="558.5" y2="105" stroke="#4a2c10" stroke-width="0.9"/>
<line x1="558.5" y1="200" x2="558.5" y2="284" stroke="#4a2c10" stroke-width="0.9"/>
<text x="558.5" y="25.5" fill="#e8e8e8" font-size="6.2" text-anchor="middle" font-weight="bold" letter-spacing="0.22">5k</text>
<line x1="570" y1="17" x2="570" y2="23" stroke="#4a2c10" stroke-width="0.9"/>
<line x1="570" y1="34" x2="570" y2="105" stroke="#4a2c10" stroke-width="0.9"/>
<line x1="570" y1="200" x2="570" y2="284" stroke="#4a2c10" stroke-width="0.9"/>
<text x="570" y="31.7" fill="#8a8a8a" font-size="6" text-anchor="middle" letter-spacing="0.21">6k</text>
<line x1="588.5" y1="28" x2="588.5" y2="105" stroke="#4a2c10" stroke-width="0.9"/>
<line x1="588.5" y1="200" x2="588.5" y2="284" stroke="#4a2c10" stroke-width="0.9"/>
<text x="588.5" y="25.5" fill="#e8e8e8" font-size="6.2" text-anchor="middle" font-weight="bold" letter-spacing="0.22">8k</text>
<text x="600" y="31.7" fill="#8a8a8a" font-size="6" letter-spacing="0.21">10k</text>
<polygon points="300.0,146.0 320.0,145.0 340.0,146.5 370.0,148.5 400.0,150.0 400.0,151.0 300.0,151.0" fill="#b05a20" opacity="0.85"/>
<polygon points="300.0,147.5 400.0,149.5 400.0,150.5 300.0,150.5" fill="#e07830" opacity="0.9"/>
<polygon points="420.0,150.0 460.0,146.0 500.0,142.0 540.0,140.0 600.0,141.0 600.0,151.0 420.0,151.0" fill="#3a8a28" opacity="0.9"/>
<polygon points="370.0,151.8 371.0,151.9 372.0,152.0 373.0,152.1 374.0,152.3 375.0,152.4 376.0,152.6 377.0,152.8 378.0,153.0 379.0,153.2 380.0,153.4 381.0,153.7 382.0,153.9 383.0,154.1 384.0,154.4 385.0,154.6 386.0,154.8 387.0,155.0 388.0,155.3 389.0,155.5 390.0,155.7 391.0,155.9 392.0,156.0 393.0,156.2 394.0,156.3 395.0,156.4 396.0,156.5 397.0,156.6 398.0,156.7 399.0,156.7 400.0,156.7 401.0,156.7 402.0,156.8 403.0,156.9 404.0,157.1 405.0,157.3 406.0,157.6 407.0,157.9 408.0,158.2 409.0,158.5 410.0,158.8 411.0,159.2 412.0,159.5 413.0,159.8 414.0,160.1 415.0,160.4 416.0,160.6 417.0,160.8 418.0,160.9 419.0,161.0 420.0,161.0 421.0,161.0 422.0,161.1 423.0,161.1 424.0,161.2 425.0,161.4 426.0,161.5 427.0,161.7 428.0,161.8 429.0,162.0 430.0,162.2 431.0,162.4 432.0,162.7 433.0,162.9 434.0,163.1 435.0,163.2 436.0,163.4 437.0,163.6 438.0,163.7 439.0,163.8 440.0,163.9 441.0,164.0 442.0,164.0 443.0,164.0 444.0,163.9 445.0,163.7 446.0,163.4 447.0,163.1 448.0,162.7 449.0,162.2 450.0,161.7 451.0,161.1 452.0,160.6 453.0,160.1 454.0,159.6 455.0,159.1 456.0,158.7 457.0,158.4 458.0,158.2 459.0,158.0 460.0,158.0 461.0,157.9 462.0,157.7 463.0,157.2 464.0,156.7 465.0,156.0 466.0,155.2 467.0,154.4 468.0,153.6 469.0,152.8 470.0,152.0 471.0,151.3 472.0,150.8 473.0,150.3 474.0,150.1 475.0,150.0 476.0,150.0 477.0,149.9 478.0,149.7 479.0,149.4 480.0,149.1 481.0,148.8 482.0,148.4 483.0,147.9 484.0,147.4 485.0,146.9 486.0,146.3 487.0,145.8 488.0,145.2 489.0,144.7 490.0,144.1 491.0,143.6 492.0,143.1 493.0,142.6 494.0,142.2 495.0,141.9 496.0,141.6 497.0,141.3 498.0,141.1 499.0,141.0 500.0,150.0 370.0,150.0" fill="#7a7a7a" opacity="0.55"/>
<polyline points="298.0,165.0 299.0,160.8 300.0,156.7 301.0,155.9 302.0,153.5 303.0,149.8 304.0,145.1 305.0,139.7 306.0,134.2 307.0,128.9 308.0,124.3 309.0,120.9 310.0,118.8 311.0,118.3 312.0,118.5 313.0,119.0 314.0,119.6 315.0,120.3 316.0,121.0 317.0,121.5 318.0,121.7 319.0,122.7 320.0,127.0 321.0,133.0 322.0,138.0 323.0,140.0 324.0,145.1 325.0,159.2 326.0,178.3 327.0,197.5 328.0,211.6 329.0,216.7 330.0,228.6 331.0,222.2 332.0,211.1 333.0,200.8 334.0,196.7 335.0,194.9 336.0,190.0 337.0,183.3 338.0,176.7 339.0,171.8 340.0,170.0 341.0,168.7 342.0,165.1 343.0,159.7 344.0,153.3 345.0,147.0 346.0,141.6 347.0,138.0 348.0,136.7 349.0,136.1 350.0,134.8 351.0,133.6 352.0,133.3 353.0,133.8 354.0,134.7 355.0,135.8 356.0,136.9 357.0,137.7 358.0,138.0 359.0,140.1 360.0,146.0 361.0,154.8 362.0,165.0 363.0,175.1 364.0,183.5 365.0,188.7 366.0,189.9 367.0,185.3 368.0,175.5 369.0,163.1 370.0,151.6 371.0,144.1 372.0,142.4 373.0,141.6 374.0,140.0 375.0,138.2 376.0,137.0 377.0,137.5 378.0,150.6 379.0,169.3 380.0,178.0 381.0,168.5 382.0,149.5 383.0,140.0 384.0,139.7 385.0,138.7 386.0,137.3 387.0,135.7 388.0,134.3 389.0,133.3 390.0,133.0 391.0,132.7 392.0,132.0 393.0,131.7 394.0,135.8 395.0,146.2 396.0,157.9 397.0,165.6 398.0,164.9 399.0,151.9 400.0,130.8 401.0,109.8 402.0,96.8 403.0,97.5 404.0,115.3 405.0,141.4 406.0,161.9 407.0,166.8 408.0,168.1 409.0,170.4 410.0,172.4 411.0,172.8 412.0,164.6 413.0,147.0 414.0,124.9 415.0,104.3 416.0,90.9 417.0,88.3 418.0,93.6 419.0,104.2 420.0,117.6 421.0,130.4 422.0,139.7 423.0,143.0 424.0,138.3 425.0,125.5 426.0,108.0 427.0,90.5 428.0,77.7 429.0,73.0 430.0,78.6 431.0,88.8 432.0,91.4 433.0,86.4 434.0,77.8 435.0,70.4 436.0,68.5 437.0,75.5 438.0,88.9 439.0,101.6 440.0,106.7 441.0,107.0 442.0,110.7 443.0,118.0 444.0,112.5 445.0,123.4 446.0,149.2 447.0,168.3 448.0,183.2 449.0,180.0 450.0,170.6 451.0,149.2 452.0,147.2 453.0,139.9 454.0,139.3 455.0,127.1 456.0,113.6 457.0,126.0 458.0,124.0 459.0,117.9 460.0,116.6 461.0,111.9 462.0,114.5 463.0,127.9 464.0,127.6 465.0,134.0 466.0,136.4 467.0,131.6 468.0,132.5 469.0,124.9 470.0,122.8 471.0,111.9 472.0,109.9 473.0,109.6 474.0,126.3 475.0,141.4 476.0,146.9 477.0,157.7 478.0,159.4 479.0,159.0 480.0,157.9 481.0,145.8 482.0,128.7 483.0,113.6 484.0,104.0 485.0,113.1 486.0,106.1 487.0,109.9 488.0,100.9 489.0,107.1 490.0,104.9 491.0,97.4 492.0,110.9 493.0,131.4 494.0,129.6 495.0,128.7 496.0,102.6 497.0,83.6 498.0,90.9 499.0,104.0 500.0,110.7 501.0,114.2 502.0,112.7 503.0,109.5 504.0,94.6 505.0,80.7 506.0,93.4 507.0,113.4 508.0,123.8 509.0,136.5 510.0,133.8 511.0,145.8 512.0,148.7 513.0,143.7 514.0,137.7 515.0,112.4 516.0,112.0 517.0,104.3 518.0,107.6 519.0,103.8 520.0,104.3 521.0,118.1 522.0,125.5 523.0,128.2 524.0,140.4 525.0,125.3 526.0,115.2 527.0,111.4 528.0,108.7 529.0,113.0 530.0,140.3 531.0,136.0 532.0,138.1 533.0,148.8 534.0,146.1 535.0,147.1 536.0,138.9 537.0,126.8 538.0,121.3 539.0,111.4 540.0,116.9 541.0,114.7 542.0,116.7 543.0,125.3 544.0,128.0 545.0,140.9 546.0,150.1 547.0,139.5 548.0,136.4 549.0,144.3 550.0,141.9 551.0,131.1 552.0,123.4 553.0,124.2 554.0,124.2 555.0,113.2 556.0,122.5 557.0,120.5 558.0,122.2 559.0,153.2 560.0,169.5 561.0,167.1 562.0,176.3 563.0,161.5 564.0,164.3 565.0,156.6 566.0,164.8 567.0,162.2 568.0,158.7 569.0,157.7 570.0,165.6 571.0,159.6 572.0,169.9 573.0,184.6 574.0,196.8 575.0,196.6 576.0,190.5 577.0,195.7 578.0,181.0 579.0,174.7 580.0,176.8 581.0,181.6 582.0,182.5 583.0,191.8 584.0,200.8 585.0,206.0 586.0,200.6 587.0,205.7 588.0,215.4 589.0,218.5 590.0,214.7 591.0,212.1 592.0,202.5 593.0,186.2 594.0,176.6 595.0,173.3 596.0,186.7 597.0,186.3 598.0,193.0 599.0,182.3 600.0,191.9 601.0,194.8 602.0,203.2" fill="none" stroke="#3a58d0" stroke-width="1.6" stroke-linejoin="round" opacity="0.9"/>
<polyline points="298.0,163.1 299.0,160.3 300.0,154.4 301.0,154.5 302.0,152.5 303.0,149.1 304.0,144.1 305.0,138.6 306.0,133.3 307.0,128.2 308.0,122.5 309.0,119.7 310.0,118.1 311.0,117.5 312.0,116.8 313.0,118.1 314.0,118.8 315.0,119.0 316.0,119.7 317.0,119.7 318.0,120.4 319.0,121.4 320.0,124.7 321.0,131.7 322.0,137.5 323.0,139.3 324.0,144.1 325.0,157.5 326.0,177.3 327.0,196.2 328.0,209.9 329.0,215.9 330.0,226.3 331.0,221.2 332.0,208.6 333.0,199.5 334.0,195.2 335.0,192.9 336.0,188.9 337.0,181.8 338.0,175.4 339.0,171.1 340.0,168.0 341.0,166.3 342.0,163.2 343.0,158.6 344.0,151.3 345.0,144.8 346.0,140.9 347.0,136.8 348.0,135.1 349.0,135.4 350.0,132.9 351.0,132.4 352.0,131.2 353.0,132.1 354.0,133.8 355.0,135.2 356.0,136.2 357.0,136.0 358.0,136.7 359.0,138.2 360.0,143.8 361.0,153.3 362.0,164.2 363.0,174.3 364.0,182.4 365.0,188.1 366.0,187.9 367.0,183.2 368.0,173.9 369.0,161.1 370.0,149.5 371.0,142.5 372.0,141.2 373.0,140.1 374.0,138.1 375.0,137.4 376.0,136.4 377.0,135.9 378.0,148.2 379.0,166.9 380.0,177.2 381.0,166.1 382.0,148.4 383.0,138.6 384.0,137.8 385.0,137.8 386.0,134.8 387.0,133.5 388.0,132.7 389.0,130.9 390.0,132.2 391.0,130.6 392.0,129.8 393.0,129.3 394.0,134.6 395.0,144.6 396.0,156.7 397.0,164.5 398.0,164.1 399.0,151.3 400.0,129.7 401.0,107.7 402.0,95.2 403.0,95.3 404.0,112.8 405.0,139.9 406.0,160.8 407.0,164.6 408.0,166.2 409.0,168.6 410.0,171.3 411.0,171.3 412.0,163.3 413.0,146.0 414.0,123.1 415.0,103.3 416.0,90.2 417.0,86.0 418.0,92.9 419.0,103.1 420.0,115.3 421.0,128.8 422.0,138.4 423.0,142.3 424.0,136.6 425.0,124.1 426.0,107.3 427.0,89.6 428.0,77.1 429.0,71.4 430.0,77.4 431.0,86.7 432.0,90.3 433.0,85.5 434.0,76.6 435.0,69.4 436.0,66.4 437.0,74.8 438.0,88.4 439.0,101.0 440.0,105.3 441.0,106.0 442.0,108.8 443.0,117.3 444.0,111.7 445.0,121.6 446.0,146.9 447.0,166.7 448.0,181.8 449.0,179.0 450.0,169.1 451.0,146.7 452.0,146.4 453.0,137.5 454.0,138.4 455.0,124.9 456.0,111.8 457.0,125.1 458.0,121.8 459.0,115.7 460.0,115.2 461.0,110.8 462.0,113.6 463.0,126.8 464.0,127.0 465.0,132.5 466.0,135.8 467.0,129.2 468.0,130.4 469.0,123.4 470.0,120.9 471.0,110.8 472.0,108.7 473.0,108.1 474.0,125.5 475.0,140.0 476.0,145.0 477.0,156.0 478.0,158.6 479.0,158.3 480.0,155.8 481.0,145.0 482.0,128.2 483.0,112.2 484.0,102.6 485.0,111.0 486.0,104.7 487.0,108.4 488.0,99.6 489.0,104.6 490.0,104.3 491.0,95.9 492.0,109.2 493.0,130.5 494.0,128.2 495.0,127.2 496.0,101.5 497.0,81.3 498.0,89.5 499.0,102.4 500.0,110.1 501.0,113.6 502.0,110.7 503.0,107.9 504.0,92.3 505.0,79.0 506.0,92.6 507.0,112.7 508.0,122.3 509.0,134.6 510.0,131.6 511.0,144.6 512.0,148.0 513.0,141.4 514.0,136.8 515.0,109.9 516.0,109.9 517.0,102.2 518.0,106.5 519.0,102.0 520.0,102.5 521.0,116.9 522.0,123.2 523.0,127.2 524.0,138.1 525.0,123.8 526.0,113.2 527.0,109.3 528.0,107.3 529.0,111.4 530.0,138.5 531.0,134.3 532.0,136.6 533.0,146.6 534.0,144.0 535.0,145.9 536.0,137.7 537.0,125.3 538.0,120.5 539.0,110.1 540.0,116.1 541.0,112.7 542.0,115.7 543.0,124.4 544.0,127.3 545.0,139.0 546.0,148.3 547.0,138.8 548.0,134.3 549.0,143.8 550.0,141.2 551.0,128.9 552.0,121.4 553.0,123.2 554.0,122.2 555.0,110.9 556.0,121.6 557.0,118.8 558.0,121.3 559.0,150.9 560.0,167.8 561.0,166.0 562.0,173.8 563.0,159.4 564.0,163.2 565.0,155.9 566.0,164.2 567.0,159.9 568.0,157.3 569.0,156.7 570.0,164.1 571.0,158.4 572.0,167.8 573.0,182.2 574.0,194.5 575.0,194.2 576.0,189.1 577.0,194.2 578.0,179.7 579.0,172.5 580.0,174.6 581.0,179.5 582.0,181.7 583.0,191.3 584.0,200.1 585.0,203.7 586.0,198.2 587.0,205.1 588.0,213.8 589.0,217.5 590.0,212.9 591.0,210.5 592.0,201.0 593.0,184.6 594.0,175.3 595.0,170.8 596.0,185.6 597.0,185.5 598.0,190.9 599.0,180.8 600.0,190.9 601.0,193.1 602.0,201.1" fill="none" stroke="#5aa0e8" stroke-width="1.1" stroke-linejoin="round" opacity="0.85"/>
<polyline points="440.0,98.7 440.8,107.6 441.6,97.2 442.4,120.3 443.2,119.6 444.0,117.9 444.8,128.3 445.6,140.3 446.4,156.5 447.2,178.7 448.0,183.1 448.8,191.4 449.6,178.9 450.4,155.6 451.2,163.0 452.0,155.9 452.8,153.8 453.6,147.2 454.4,128.1 455.2,132.4 456.0,129.1 456.8,124.2 457.6,124.7 458.4,123.1 459.2,113.2 460.0,120.3 460.8,105.8 461.6,115.3 462.4,122.9 463.2,117.1 464.0,130.3 464.8,140.9 465.6,142.7 466.4,133.3 467.2,148.0 468.0,137.0 468.8,123.4 469.6,124.8 470.4,116.8 471.2,111.4 472.0,105.3 472.8,120.3 473.6,120.5 474.4,136.4 475.2,151.0 476.0,161.5 476.8,139.0 477.6,154.5 478.4,159.0 479.2,148.7 480.0,152.6 480.8,139.9 481.6,132.1 482.4,122.6 483.2,104.7 484.0,104.0 484.8,119.3 485.6,109.5 486.4,106.7 487.2,115.7 488.0,104.1 488.8,112.8 489.6,103.4 490.4,108.2 491.2,96.0 492.0,117.3 492.8,130.0 493.6,118.3 494.4,139.0 495.2,110.7 496.0,103.3 496.8,83.6 497.6,87.5 498.4,95.2 499.2,92.4 500.0,124.6 500.8,117.8 501.6,118.8 502.4,113.1 503.2,97.1 504.0,85.8 504.8,89.9 505.6,91.7 506.4,100.5 507.2,127.9 508.0,125.1 508.8,119.9 509.6,129.5 510.4,130.1 511.2,137.9 512.0,155.5 512.8,146.6 513.6,150.6 514.4,133.3 515.2,104.1 516.0,121.7 516.8,120.4 517.6,98.9 518.4,118.1 519.2,106.0 520.0,107.0 520.8,121.5 521.6,110.9 522.4,126.1 523.2,142.9 524.0,140.3 524.8,130.5 525.6,133.5 526.4,119.3 527.2,108.0 528.0,97.5 528.8,118.6 529.6,126.8 530.4,130.4 531.2,129.3 532.0,142.1 532.8,135.2 533.6,145.9 534.4,153.5 535.2,148.7 536.0,139.2 536.8,137.2 537.6,122.6 538.4,123.6 539.2,115.8 540.0,127.4 540.8,127.2 541.6,122.7 542.4,111.2 543.2,110.9 544.0,137.6 544.8,144.6 545.6,147.1 546.4,141.4 547.2,138.0 548.0,145.7 548.8,140.6 549.6,139.9 550.4,140.2 551.2,139.6 552.0,120.3 552.8,116.0 553.6,130.0 554.4,127.9 555.2,134.3 556.0,113.1 556.8,112.7 557.6,117.7 558.4,138.4 559.2,172.0 560.0,173.5 560.8,183.1 561.6,169.3 562.4,166.0 563.2,176.5 564.0,170.6 564.8,171.2 565.6,165.0 566.4,167.9 567.2,162.1 568.0,165.9 568.8,176.0 569.6,178.6 570.4,160.8 571.2,165.8 572.0,189.1 572.8,192.8 573.6,203.6 574.4,195.0 575.2,201.1 576.0,195.8 576.8,206.1 577.6,191.9 578.4,195.2 579.2,200.7 580.0,183.8 580.8,190.7 581.6,199.7 582.4,209.8 583.2,204.1 584.0,207.5 584.8,203.2 585.6,222.3 586.4,204.2 587.2,206.0 588.0,219.5 588.8,219.1 589.6,224.8 590.4,215.2 591.2,222.7 592.0,199.1 592.8,194.3 593.6,197.8 594.4,179.1 595.2,183.3 596.0,194.4 596.8,195.5 597.6,188.1 598.4,187.1 599.2,194.0 600.0,203.4 600.8,198.2 601.6,197.9" fill="none" stroke="#3a58d0" stroke-width="0.9" stroke-linejoin="round" opacity="0.7"/>
<polyline points="440.0,111.7 440.8,109.0 441.6,118.9 442.4,121.4 443.2,122.3 444.0,111.5 444.8,127.0 445.6,132.5 446.4,154.4 447.2,173.9 448.0,193.4 448.8,189.3 449.6,165.6 450.4,158.1 451.2,149.9 452.0,146.7 452.8,144.6 453.6,136.9 454.4,123.0 455.2,124.4 456.0,127.1 456.8,120.5 457.6,126.3 458.4,118.2 459.2,107.7 460.0,121.2 460.8,125.2 461.6,113.9 462.4,112.2 463.2,129.2 464.0,134.8 464.8,139.2 465.6,150.9 466.4,143.3 467.2,144.6 468.0,122.5 468.8,128.4 469.6,127.9 470.4,105.2 471.2,100.6 472.0,113.7 472.8,117.8 473.6,107.1 474.4,134.8 475.2,136.2 476.0,155.9 476.8,154.1 477.6,145.6 478.4,146.6 479.2,160.9 480.0,155.5 480.8,157.1 481.6,136.9 482.4,121.7 483.2,125.5 484.0,114.1 484.8,109.4 485.6,109.2 486.4,111.8 487.2,109.5 488.0,112.5 488.8,98.8 489.6,107.9 490.4,104.7 491.2,114.7 492.0,122.3 492.8,131.8 493.6,138.6 494.4,139.6 495.2,122.2 496.0,104.6 496.8,96.6 497.6,94.8 498.4,90.6 499.2,101.1 500.0,105.4 500.8,125.5 501.6,129.9 502.4,107.7 503.2,92.4 504.0,83.9 504.8,84.4 505.6,85.2 506.4,117.0 507.2,112.1 508.0,125.4 508.8,122.3 509.6,139.2 510.4,147.7 511.2,138.5 512.0,138.9 512.8,148.3 513.6,143.0 514.4,137.1 515.2,103.8 516.0,100.6 516.8,102.2 517.6,102.4 518.4,102.0 519.2,113.0 520.0,109.8 520.8,103.5 521.6,109.4 522.4,120.2 523.2,124.5 524.0,141.2 524.8,126.8 525.6,123.2 526.4,119.3 527.2,105.0 528.0,101.0 528.8,124.9 529.6,137.8 530.4,133.7 531.2,141.2 532.0,152.4 532.8,143.8 533.6,140.6 534.4,138.6 535.2,160.5 536.0,152.1 536.8,132.5 537.6,125.2 538.4,117.3 539.2,109.6 540.0,127.2 540.8,120.1 541.6,110.8 542.4,105.8 543.2,119.5 544.0,125.1 544.8,144.9 545.6,149.2 546.4,147.4 547.2,135.2 548.0,133.0 548.8,134.8 549.6,131.9 550.4,145.9 551.2,133.9 552.0,131.0 552.8,133.9 553.6,112.9 554.4,118.7 555.2,116.8 556.0,130.7 556.8,111.3 557.6,131.0 558.4,148.5 559.2,176.8 560.0,173.0 560.8,176.6 561.6,184.7 562.4,166.3 563.2,171.8 564.0,168.7 564.8,179.0 565.6,170.2 566.4,177.0 567.2,164.3 568.0,176.6 568.8,168.2 569.6,180.5 570.4,161.2 571.2,182.7 572.0,174.7 572.8,190.8 573.6,197.7 574.4,193.6 575.2,210.9 576.0,197.0 576.8,194.2 577.6,184.9 578.4,186.8 579.2,188.1 580.0,193.2 580.8,186.2 581.6,198.3 582.4,190.3 583.2,203.3 584.0,209.7 584.8,224.1 585.6,221.2 586.4,218.1 587.2,204.3 588.0,215.0 588.8,224.5 589.6,214.1 590.4,221.5 591.2,215.1 592.0,197.5 592.8,213.0 593.6,201.1 594.4,182.1 595.2,190.8 596.0,183.9 596.8,187.9 597.6,194.3 598.4,190.8 599.2,193.5 600.0,195.4 600.8,205.5 601.6,201.2" fill="none" stroke="#4a80e0" stroke-width="0.9" stroke-linejoin="round" opacity="0.7"/>
<polyline points="440.0,99.5 440.8,112.9 441.6,104.8 442.4,121.5 443.2,113.9 444.0,118.4 444.8,115.6 445.6,145.0 446.4,149.0 447.2,167.7 448.0,173.3 448.8,184.1 449.6,176.6 450.4,153.7 451.2,150.8 452.0,158.1 452.8,149.4 453.6,129.8 454.4,123.8 455.2,114.6 456.0,111.0 456.8,117.3 457.6,108.0 458.4,126.8 459.2,113.7 460.0,115.3 460.8,119.6 461.6,125.5 462.4,131.3 463.2,126.1 464.0,129.7 464.8,135.5 465.6,128.1 466.4,137.3 467.2,142.1 468.0,144.5 468.8,134.2 469.6,124.9 470.4,117.8 471.2,99.0 472.0,103.9 472.8,104.5 473.6,120.7 474.4,122.2 475.2,141.8 476.0,150.2 476.8,157.4 477.6,159.5 478.4,155.9 479.2,146.3 480.0,161.4 480.8,160.4 481.6,140.6 482.4,122.0 483.2,114.3 484.0,101.4 484.8,114.7 485.6,120.0 486.4,106.9 487.2,109.6 488.0,110.6 488.8,93.7 489.6,110.8 490.4,103.8 491.2,98.9 492.0,105.0 492.8,117.7 493.6,131.1 494.4,133.4 495.2,114.7 496.0,114.3 496.8,88.2 497.6,86.7 498.4,83.5 499.2,114.4 500.0,105.1 500.8,129.4 501.6,119.2 502.4,112.2 503.2,101.8 504.0,85.3 504.8,96.0 505.6,102.0 506.4,113.3 507.2,125.2 508.0,120.9 508.8,139.3 509.6,130.5 510.4,150.6 511.2,139.9 512.0,151.2 512.8,157.2 513.6,133.5 514.4,128.5 515.2,104.8 516.0,98.8 516.8,102.1 517.6,120.8 518.4,118.9 519.2,111.5 520.0,102.9 520.8,114.2 521.6,122.7 522.4,122.7 523.2,134.6 524.0,142.3 524.8,119.7 525.6,114.8 526.4,111.0 527.2,97.0 528.0,104.0 528.8,117.3 529.6,120.1 530.4,138.0 531.2,134.4 532.0,143.1 532.8,140.2 533.6,150.7 534.4,138.4 535.2,153.9 536.0,136.3 536.8,146.3 537.6,127.0 538.4,116.2 539.2,112.9 540.0,118.4 540.8,120.8 541.6,123.3 542.4,123.5 543.2,119.8 544.0,140.1 544.8,145.9 545.6,152.6 546.4,142.6 547.2,141.9 548.0,142.8 548.8,148.8 549.6,138.3 550.4,137.6 551.2,131.9 552.0,137.5 552.8,117.7 553.6,107.8 554.4,123.3 555.2,134.8 556.0,129.7 556.8,125.6 557.6,129.3 558.4,135.5 559.2,171.3 560.0,172.7 560.8,173.1 561.6,178.2 562.4,176.0 563.2,169.8 564.0,158.7 564.8,172.7 565.6,168.7 566.4,162.2 567.2,164.4 568.0,167.1 568.8,163.8 569.6,160.1 570.4,180.9 571.2,186.1 572.0,185.7 572.8,198.6 573.6,195.2 574.4,209.2 575.2,196.3 576.0,207.5 576.8,200.3 577.6,204.7 578.4,181.8 579.2,195.9 580.0,179.0 580.8,190.4 581.6,204.6 582.4,187.7 583.2,199.7 584.0,205.8 584.8,208.7 585.6,202.8 586.4,223.8 587.2,223.6 588.0,215.4 588.8,216.0 589.6,222.4 590.4,209.1 591.2,204.8 592.0,218.8 592.8,196.6 593.6,193.9 594.4,199.6 595.2,199.5 596.0,188.3 596.8,183.8 597.6,188.4 598.4,205.8 599.2,206.9 600.0,190.7 600.8,209.6 601.6,203.5" fill="none" stroke="#5aa0e8" stroke-width="0.9" stroke-linejoin="round" opacity="0.7"/>
<polyline points="300.0,149.0 301.0,149.0 302.0,149.0 303.0,149.0 304.0,149.0 305.0,149.0 306.0,149.1 307.0,149.1 308.0,149.1 309.0,149.1 310.0,149.1 311.0,149.2 312.0,149.2 313.0,149.2 314.0,149.3 315.0,149.3 316.0,149.4 317.0,149.4 318.0,149.5 319.0,149.5 320.0,149.6 321.0,149.6 322.0,149.7 323.0,149.7 324.0,149.8 325.0,149.8 326.0,149.9 327.0,150.0 328.0,150.0 329.0,150.1 330.0,150.1 331.0,150.2 332.0,150.3 333.0,150.3 334.0,150.4 335.0,150.5 336.0,150.5 337.0,150.6 338.0,150.6 339.0,150.7 340.0,150.8 341.0,150.8 342.0,150.9 343.0,150.9 344.0,151.0 345.0,151.1 346.0,151.1 347.0,151.2 348.0,151.2 349.0,151.3 350.0,151.3 351.0,151.3 352.0,151.4 353.0,151.4 354.0,151.5 355.0,151.5 356.0,151.5 357.0,151.6 358.0,151.6 359.0,151.6 360.0,151.6 361.0,151.7 362.0,151.7 363.0,151.7 364.0,151.7 365.0,151.7 366.0,151.7 367.0,151.7 368.0,151.7 369.0,151.8 370.0,151.8 371.0,151.9 372.0,152.0 373.0,152.1 374.0,152.3 375.0,152.4 376.0,152.6 377.0,152.8 378.0,153.0 379.0,153.2 380.0,153.4 381.0,153.7 382.0,153.9 383.0,154.1 384.0,154.4 385.0,154.6 386.0,154.8 387.0,155.0 388.0,155.3 389.0,155.5 390.0,155.7 391.0,155.9 392.0,156.0 393.0,156.2 394.0,156.3 395.0,156.4 396.0,156.5 397.0,156.6 398.0,156.7 399.0,156.7 400.0,156.7 401.0,156.7 402.0,156.8 403.0,156.9 404.0,157.1 405.0,157.3 406.0,157.6 407.0,157.9 408.0,158.2 409.0,158.5 410.0,158.8 411.0,159.2 412.0,159.5 413.0,159.8 414.0,160.1 415.0,160.4 416.0,160.6 417.0,160.8 418.0,160.9 419.0,161.0 420.0,161.0 421.0,161.0 422.0,161.1 423.0,161.1 424.0,161.2 425.0,161.4 426.0,161.5 427.0,161.7 428.0,161.8 429.0,162.0 430.0,162.2 431.0,162.4 432.0,162.7 433.0,162.9 434.0,163.1 435.0,163.2 436.0,163.4 437.0,163.6 438.0,163.7 439.0,163.8 440.0,163.9 441.0,164.0 442.0,164.0 443.0,164.0 444.0,163.9 445.0,163.7 446.0,163.4 447.0,163.1 448.0,162.7 449.0,162.2 450.0,161.7 451.0,161.1 452.0,160.6 453.0,160.1 454.0,159.6 455.0,159.1 456.0,158.7 457.0,158.4 458.0,158.2 459.0,158.0 460.0,158.0 461.0,157.9 462.0,157.7 463.0,157.2 464.0,156.7 465.0,156.0 466.0,155.2 467.0,154.4 468.0,153.6 469.0,152.8 470.0,152.0 471.0,151.3 472.0,150.8 473.0,150.3 474.0,150.1 475.0,150.0 476.0,150.0 477.0,149.9 478.0,149.7 479.0,149.4 480.0,149.1 481.0,148.8 482.0,148.4 483.0,147.9 484.0,147.4 485.0,146.9 486.0,146.3 487.0,145.8 488.0,145.2 489.0,144.7 490.0,144.1 491.0,143.6 492.0,143.1 493.0,142.6 494.0,142.2 495.0,141.9 496.0,141.6 497.0,141.3 498.0,141.1 499.0,141.0 500.0,141.0 501.0,141.0 502.0,140.9 503.0,140.8 504.0,140.7 505.0,140.5 506.0,140.3 507.0,140.1 508.0,139.8 509.0,139.6 510.0,139.3 511.0,139.0 512.0,138.7 513.0,138.3 514.0,138.0 515.0,137.7 516.0,137.4 517.0,137.2 518.0,136.9 519.0,136.7 520.0,136.5 521.0,136.3 522.0,136.2 523.0,136.1 524.0,136.0 525.0,136.0 526.0,136.0 527.0,136.0 528.0,136.0 529.0,136.0 530.0,136.0 531.0,136.1 532.0,136.1 533.0,136.1 534.0,136.1 535.0,136.2 536.0,136.2 537.0,136.2 538.0,136.3 539.0,136.3 540.0,136.3 541.0,136.4 542.0,136.4 543.0,136.4 544.0,136.4 545.0,136.5 546.0,136.5 547.0,136.5 548.0,136.5 549.0,136.5 550.0,136.5 551.0,136.5 552.0,136.6 553.0,136.6 554.0,136.7 555.0,136.8 556.0,137.0 557.0,137.1 558.0,137.3 559.0,137.5 560.0,137.7 561.0,137.9 562.0,138.1 563.0,138.4 564.0,138.6 565.0,138.8 566.0,139.0 567.0,139.2 568.0,139.4 569.0,139.5 570.0,139.7 571.0,139.8 572.0,139.9 573.0,139.9 574.0,140.0 575.0,140.0 576.0,140.0 577.0,140.1 578.0,140.2 579.0,140.4 580.0,140.6 581.0,140.8 582.0,141.1 583.0,141.4 584.0,141.7 585.0,142.1 586.0,142.4 587.0,142.8 588.0,143.2 589.0,143.6 590.0,143.9 591.0,144.3 592.0,144.6 593.0,144.9 594.0,145.2 595.0,145.4 596.0,145.6 597.0,145.8 598.0,145.9 599.0,146.0 600.0,146.0" fill="none" stroke="#d8d8d8" stroke-width="1.1" stroke-linejoin="round"/>
<circle cx="310.5" cy="137" r="4.8" fill="#e07828" stroke="#ffa050" stroke-width="0.6"/>
<circle cx="310.5" cy="137" r="2.2" fill="none" stroke="#7a3a10" stroke-width="0.6"/>
<circle cx="444" cy="171" r="2.8" fill="#e0e0e8"/>
<circle cx="526.5" cy="134" r="2.6" fill="#50e050"/>
<rect x="301.5" y="237" width="36.0" height="10.5" fill="#1a1208" rx="1" stroke="#b06818" stroke-width="0.8"/>
<text x="319.5" y="245.2" fill="#c07020" font-size="7" text-anchor="middle" font-weight="bold" letter-spacing="0.25">GAIN</text>
<rect x="301.5" y="266.5" width="36.0" height="10.5" fill="#1a1208" rx="1" stroke="#b06818" stroke-width="0.8"/>
<text x="319.5" y="274.7" fill="#c07020" font-size="7" text-anchor="middle" font-weight="bold" letter-spacing="0.25">ANALOG</text>
<rect x="343.3" y="223.2" width="194.99999999999994" height="57.80000000000001" fill="#262626"/>
<text x="348.5" y="232.8" fill="#e8e8e8" font-size="9" letter-spacing="0.32">TYPE</text>
<rect x="347" y="235" width="48" height="10.300000000000011" fill="#050505"/>
<text x="371" y="242.5" fill="#b06010" font-size="6" text-anchor="middle" font-weight="bold" letter-spacing="0.21">Bell</text>
<text x="348.5" y="262.7" fill="#e8e8e8" font-size="9" letter-spacing="0.32">SLOPE</text>
<rect x="347" y="265" width="37.39999999999998" height="10.699999999999989" fill="#050505"/>
<text x="365.7" y="272.8" fill="#7a4410" font-size="6" text-anchor="middle" font-weight="bold" letter-spacing="0.21">12dB</text>
<text x="413.0" y="232.8" fill="#e8e8e8" font-size="9" text-anchor="middle" letter-spacing="0.32">FREQ</text>
<circle cx="411.5" cy="248" r="11" fill="#222" stroke="#e8e8e8" stroke-width="1.6"/>
<circle cx="405" cy="245.8" r="2.1" fill="#e07a18"/>
<text x="411.5" y="269" fill="#a8a8a8" font-size="6.5" text-anchor="middle" letter-spacing="0.23">105.6 Hz</text>
<text x="447.2" y="232.8" fill="#e8e8e8" font-size="9" text-anchor="middle" letter-spacing="0.32">GAIN</text>
<circle cx="445.7" cy="248" r="11" fill="#222" stroke="#e8e8e8" stroke-width="1.6"/>
<circle cx="446.2" cy="241.4" r="2.1" fill="#e07a18"/>
<text x="445.7" y="269" fill="#a8a8a8" font-size="6.5" text-anchor="middle" letter-spacing="0.23">1.57 dB</text>
<text x="480.6" y="232.8" fill="#e8e8e8" font-size="9" text-anchor="middle" letter-spacing="0.32">Q</text>
<circle cx="479.1" cy="248" r="11" fill="#222" stroke="#e8e8e8" stroke-width="1.6"/>
<circle cx="479" cy="241.4" r="2.1" fill="#e07a18"/>
<text x="479.1" y="269" fill="#a8a8a8" font-size="6.5" text-anchor="middle" letter-spacing="0.23">0.71</text>
<rect x="397.4" y="271.8" width="30.400000000000034" height="8.599999999999966" fill="#e08a20"/>
<text x="412.6" y="278.6" fill="#2a1800" font-size="7" text-anchor="middle" font-weight="bold" letter-spacing="0.25">ACTIVE</text>
<path d="M439,273.5 L439,279 L489,279 L489,273.5" fill="none" stroke="#050505" stroke-width="1.4"/>
<rect x="457" y="272" width="13.399999999999977" height="9" fill="#e08a20"/>
<text x="463.7" y="278.5" fill="#5a3000" font-size="6" text-anchor="middle" font-weight="bold" letter-spacing="0.21">+ +</text>
<text x="517" y="232.8" fill="#e8e8e8" font-size="9" text-anchor="middle" letter-spacing="0.32">STEREO</text>
<rect x="503.6" y="235" width="30.399999999999977" height="10.300000000000011" fill="#050505"/>
<text x="518.8" y="242.5" fill="#b06010" font-size="6" text-anchor="middle" font-weight="bold" letter-spacing="0.21">Mid</text>
<polygon points="504.0,254.5 513.0,250.8 513.0,258.3" fill="#f0f0f0"/>
<rect x="516.6" y="250.3" width="4.399999999999977" height="8.699999999999989" fill="#e07a20" rx="1"/>
<polygon points="534.0,254.5 525.3,250.8 525.3,258.3" fill="#f0f0f0"/>
<rect x="506.8" y="271.8" width="23.900000000000034" height="8.599999999999966" fill="#e08a20"/>
<text x="518.7" y="278.6" fill="#2a1800" font-size="7" text-anchor="middle" font-weight="bold" letter-spacing="0.25">DYN+</text>
<rect x="541.5" y="236.2" width="26.0" height="11.300000000000011" fill="#e08a20"/>
<text x="554.5" y="245" fill="#2a1800" font-size="8" text-anchor="middle" font-weight="bold" letter-spacing="0.28">EQ</text>
<rect x="568.6" y="236.7" width="8.699999999999932" height="10.300000000000011" fill="#1a1208" stroke="#b06818" stroke-width="0.8"/>
<text x="573" y="245" fill="#c07020" font-size="8" text-anchor="middle" font-weight="bold" letter-spacing="0.28">H</text>
<rect x="541.5" y="251.4" width="35.799999999999955" height="10.799999999999983" fill="#1a1208" rx="1" stroke="#b06818" stroke-width="0.8"/>
<text x="559.4" y="259.8" fill="#c07020" font-size="7.2" text-anchor="middle" font-weight="bold" letter-spacing="0.25">DYNAMIC</text>
<rect x="541.5" y="266.6" width="35.799999999999955" height="10.799999999999955" fill="#1a1208" rx="1" stroke="#b06818" stroke-width="0.8"/>
<text x="559.4" y="275" fill="#c07020" font-size="7.5" text-anchor="middle" font-weight="bold" letter-spacing="0.26">STEREO</text>
<rect x="300" y="284.3" width="300" height="15.699999999999989" fill="#242424"/>
<rect x="300" y="287.6" width="12" height="10.799999999999955" fill="#e08a20"/>
<text x="300" y="296.5" fill="#2a1800" font-size="9" font-weight="bold" letter-spacing="0.32">UT</text>
<rect x="476.5" y="287.6" width="67.20000000000005" height="10.799999999999955" fill="#1e1408" stroke="#b06818" stroke-width="0.8"/>
<text x="510.1" y="296.6" fill="#c07020" font-size="9" text-anchor="middle" letter-spacing="0.32">OVERSAMPLE</text>
</g>
<g clip-path="url(#cC)">
<rect x="600" y="0" width="210" height="300" fill="url(#bgC)"/>
<rect x="600" y="0" width="4" height="300" fill="#0a0a0a"/>
<text x="639.9" y="11.4" fill="#e4e4e4" font-size="7.5" text-anchor="middle" letter-spacing="0.26">In Gain</text>
<circle cx="638.9" cy="26.215999999999998" r="10.607999999999999" fill="#000" opacity="0.6"/>
<circle cx="638.9" cy="25.4" r="10.2" fill="url(#kb)"/>
<circle cx="638.9" cy="25.4" r="9.792" fill="none" stroke="#666" stroke-width="0.816"/>
<circle cx="638.9" cy="25.4" r="8.568" fill="none" stroke="#5a5a5a" stroke-width="0.4" opacity="0.8"/>
<line x1="640.1" y1="18.57" x2="640.64" y2="15.56" stroke="#d07818" stroke-width="2.24" stroke-linecap="round"/>
<text x="639.4" y="42.5" fill="#e0eaff" font-size="7.5" text-anchor="middle" letter-spacing="0.26">0.00 dB</text>
<path d="M702.24,2.39 A21.29142857142857,21.29142857142857 0 0 1 725.39,23.60" fill="none" stroke="#e8a020" stroke-width="3.312" stroke-linecap="butt"/>
<circle cx="704.1" cy="25.072000000000003" r="19.136" fill="#000" opacity="0.6"/>
<circle cx="704.1" cy="23.6" r="18.4" fill="url(#kb)"/>
<circle cx="704.1" cy="23.6" r="17.663999999999998" fill="none" stroke="#d8d8d8" stroke-width="1.472"/>
<circle cx="704.1" cy="23.6" r="15.455999999999998" fill="none" stroke="#5a5a5a" stroke-width="0.644" opacity="0.8"/>
<line x1="716.61" y1="23.6" x2="722.13" y2="23.6" stroke="#d07818" stroke-width="4.05" stroke-linecap="round"/>
<text x="704" y="55.7" fill="#e0eaff" font-size="8" text-anchor="middle" letter-spacing="0.28">15.00 dB</text>
<text x="775.5" y="11.4" fill="#e4e4e4" font-size="7.5" text-anchor="middle" letter-spacing="0.26">Out Gain</text>
<circle cx="773.8" cy="26.215999999999998" r="10.607999999999999" fill="#000" opacity="0.6"/>
<circle cx="773.8" cy="25.4" r="10.2" fill="url(#kb)"/>
<circle cx="773.8" cy="25.4" r="9.792" fill="none" stroke="#666" stroke-width="0.816"/>
<circle cx="773.8" cy="25.4" r="8.568" fill="none" stroke="#5a5a5a" stroke-width="0.4" opacity="0.8"/>
<line x1="772" y1="18.7" x2="771.21" y2="15.74" stroke="#d07818" stroke-width="2.24" stroke-linecap="round"/>
<text x="774" y="42.5" fill="#e0eaff" font-size="7.5" text-anchor="middle" letter-spacing="0.26">-1.29 dB</text>
<rect x="604" y="62" width="204" height="105" fill="#101010"/>
<rect x="607" y="64.4" width="199.5" height="47.599999999999994" fill="#262626"/>
<text x="632.9" y="74.4" fill="#e4e4e4" font-size="7.5" text-anchor="middle" letter-spacing="0.26">3 Band</text>
<circle cx="632.9" cy="86.1" r="4.8" fill="#111"/>
<circle cx="632.9" cy="86.1" r="4" fill="#e07818"/>
<circle cx="631.9" cy="85.1" r="1.8" fill="#ffd080" opacity="0.6"/>
<text x="670" y="74.4" fill="#e4e4e4" font-size="7.5" text-anchor="middle" letter-spacing="0.26">Low</text>
<circle cx="670" cy="89.21600000000001" r="10.607999999999999" fill="#000" opacity="0.6"/>
<circle cx="670" cy="88.4" r="10.2" fill="url(#kb)"/>
<circle cx="670" cy="88.4" r="9.792" fill="none" stroke="#666" stroke-width="0.816"/>
<circle cx="670" cy="88.4" r="8.568" fill="none" stroke="#5a5a5a" stroke-width="0.4" opacity="0.8"/>
<line x1="663.17" y1="87.2" x2="660.16" y2="86.66" stroke="#d07818" stroke-width="2.24" stroke-linecap="round"/>
<text x="670.5" y="105.5" fill="#e0eaff" font-size="7.5" text-anchor="middle" letter-spacing="0.26">115 Hz</text>
<text x="705.5" y="74.4" fill="#e4e4e4" font-size="7.5" text-anchor="middle" letter-spacing="0.26">-- Freq --</text>
<text x="740.5" y="74.4" fill="#e4e4e4" font-size="7.5" text-anchor="middle" letter-spacing="0.26">High</text>
<circle cx="740.5" cy="89.21600000000001" r="10.607999999999999" fill="#000" opacity="0.6"/>
<circle cx="740.5" cy="88.4" r="10.2" fill="url(#kb)"/>
<circle cx="740.5" cy="88.4" r="9.792" fill="none" stroke="#666" stroke-width="0.816"/>
<circle cx="740.5" cy="88.4" r="8.568" fill="none" stroke="#5a5a5a" stroke-width="0.4" opacity="0.8"/>
<line x1="737.03" y1="82.39" x2="735.5" y2="79.74" stroke="#d07818" stroke-width="2.24" stroke-linecap="round"/>
<text x="741" y="105.5" fill="#e0eaff" font-size="7.5" text-anchor="middle" letter-spacing="0.26">4500 Hz</text>
<text x="779.7" y="74.4" fill="#e4e4e4" font-size="7.5" text-anchor="middle" letter-spacing="0.26">Channel</text>
<rect x="772.4" y="80.2" width="14.0" height="14.0" fill="url(#vb77280)" stroke="#2a2a3a" stroke-width="0.8"/>
<text x="779.4" y="90.44" fill="#111" font-size="9" text-anchor="middle" font-weight="bold" letter-spacing="0.32">M</text>
<rect x="607" y="112.9" width="199.5" height="46.69999999999999" fill="url(#p2C)"/>
<line x1="607" y1="145" x2="806.5" y2="112.9" stroke="#888" stroke-width="0.6" opacity="0.35"/>
<text x="633.8" y="122.5" fill="#e4e4e4" font-size="7.5" text-anchor="middle" letter-spacing="0.26">Low Vol</text>
<circle cx="632.4" cy="136.416" r="10.607999999999999" fill="#000" opacity="0.6"/>
<circle cx="632.4" cy="135.6" r="10.2" fill="url(#kb)"/>
<circle cx="632.4" cy="135.6" r="9.792" fill="none" stroke="#777" stroke-width="0.816"/>
<circle cx="632.4" cy="135.6" r="8.568" fill="none" stroke="#5a5a5a" stroke-width="0.4" opacity="0.8"/>
<line x1="635.87" y1="129.59" x2="637.4" y2="126.94" stroke="#d07818" stroke-width="2.24" stroke-linecap="round"/>
<text x="632.9" y="154" fill="#f0f0f0" font-size="7.5" text-anchor="middle" letter-spacing="0.26">2.43 dB</text>
<text x="706.8" y="122.5" fill="#e4e4e4" font-size="7.5" text-anchor="middle" letter-spacing="0.26">Mid Vol</text>
<circle cx="705" cy="136.416" r="10.607999999999999" fill="#000" opacity="0.6"/>
<circle cx="705" cy="135.6" r="10.2" fill="url(#kb)"/>
<circle cx="705" cy="135.6" r="9.792" fill="none" stroke="#777" stroke-width="0.816"/>
<circle cx="705" cy="135.6" r="8.568" fill="none" stroke="#5a5a5a" stroke-width="0.4" opacity="0.8"/>
<line x1="703.2" y1="128.9" x2="702.41" y2="125.94" stroke="#d07818" stroke-width="2.24" stroke-linecap="round"/>
<text x="705.9" y="154" fill="#f0f0f0" font-size="7.5" text-anchor="middle" letter-spacing="0.26">-1.00 dB</text>
<text x="780.3" y="122.5" fill="#e4e4e4" font-size="7.5" text-anchor="middle" letter-spacing="0.26">High Vol</text>
<circle cx="779.4" cy="136.416" r="10.607999999999999" fill="#000" opacity="0.6"/>
<circle cx="779.4" cy="135.6" r="10.2" fill="url(#kb)"/>
<circle cx="779.4" cy="135.6" r="9.792" fill="none" stroke="#777" stroke-width="0.816"/>
<circle cx="779.4" cy="135.6" r="8.568" fill="none" stroke="#5a5a5a" stroke-width="0.4" opacity="0.8"/>
<line x1="776.47" y1="129.31" x2="775.18" y2="126.54" stroke="#d07818" stroke-width="2.24" stroke-linecap="round"/>
<text x="780.3" y="154" fill="#f0f0f0" font-size="7.5" text-anchor="middle" letter-spacing="0.26">-2.43 dB</text>
<rect x="607" y="170.7" width="199.5" height="79.30000000000001" fill="#1e1e1e" stroke="#0c0c0c" stroke-width="1"/>
<text x="632" y="185.9" fill="#e4e4e4" font-size="7.5" text-anchor="middle" letter-spacing="0.26">HP On</text>
<circle cx="632.9" cy="196.9" r="4.8" fill="#111"/>
<circle cx="632.9" cy="196.9" r="4" fill="#e07818"/>
<circle cx="631.9" cy="195.9" r="1.8" fill="#ffd080" opacity="0.6"/>
<text x="705.5" y="185" fill="#e8e8e8" font-size="10" text-anchor="middle" letter-spacing="0.35">HP Freq</text>
<path d="M689.04,228.96 A21.29142857142857,21.29142857142857 0 0 1 711.38,193.89" fill="none" stroke="#e8c030" stroke-width="3.312" stroke-linecap="butt"/>
<circle cx="704.1" cy="215.372" r="19.136" fill="#000" opacity="0.6"/>
<circle cx="704.1" cy="213.9" r="18.4" fill="url(#kb)"/>
<circle cx="704.1" cy="213.9" r="17.663999999999998" fill="none" stroke="#d8d8d8" stroke-width="1.472"/>
<circle cx="704.1" cy="213.9" r="15.455999999999998" fill="none" stroke="#5a5a5a" stroke-width="0.644" opacity="0.8"/>
<line x1="708.38" y1="202.14" x2="710.27" y2="196.96" stroke="#d07818" stroke-width="4.05" stroke-linecap="round"/>
<text x="704" y="246.8" fill="#e0eaff" font-size="8" text-anchor="middle" letter-spacing="0.28">23.46 Hz</text>
<text x="772.7" y="184.7" fill="#e4e4e4" font-size="7.5" text-anchor="middle" letter-spacing="0.26">HP Q</text>
<rect x="766" y="188.9" width="12.899999999999977" height="13.599999999999994" fill="url(#vb766188)" stroke="#2a2a3a" stroke-width="0.8"/>
<text x="772.45" y="198.57999999999998" fill="#111" font-size="8" text-anchor="middle" font-weight="bold" letter-spacing="0.28">Ch</text>
<text x="632" y="223.5" fill="#e4e4e4" font-size="7.5" text-anchor="middle" letter-spacing="0.26">Channel</text>
<rect x="625.9" y="227.9" width="13.5" height="13.5" fill="url(#vb625227)" stroke="#2a2a3a" stroke-width="0.8"/>
<text x="632.65" y="237.89000000000001" fill="#111" font-size="9" text-anchor="middle" font-weight="bold" letter-spacing="0.32">M</text>
<text x="772.7" y="223.5" fill="#e4e4e4" font-size="7.5" text-anchor="middle" letter-spacing="0.26">HP Roll-off</text>
<rect x="766" y="227.9" width="12.899999999999977" height="13.5" fill="url(#vb766227)" stroke="#2a2a3a" stroke-width="0.8"/>
<text x="772.45" y="237.17000000000002" fill="#111" font-size="7" text-anchor="middle" font-weight="bold" letter-spacing="0.25">-24</text>
<text x="670.5" y="273.4" fill="#e4e4e4" font-size="7.5" text-anchor="middle" letter-spacing="0.26">Mix</text>
<circle cx="670" cy="286.416" r="10.607999999999999" fill="#000" opacity="0.6"/>
<circle cx="670" cy="285.6" r="10.2" fill="url(#kb)"/>
<circle cx="670" cy="285.6" r="9.792" fill="none" stroke="#666" stroke-width="0.816"/>
<circle cx="670" cy="285.6" r="8.568" fill="none" stroke="#5a5a5a" stroke-width="0.4" opacity="0.8"/>
<line x1="676.01" y1="282.13" x2="678.66" y2="280.6" stroke="#d07818" stroke-width="2.24" stroke-linecap="round"/>
<text x="670.5" y="302" fill="#e0eaff" font-size="7.5" text-anchor="middle" letter-spacing="0.26">67.0 %</text>
<text x="632.9" y="288.3" fill="#e4e4e4" font-size="7.5" text-anchor="middle" letter-spacing="0.26">Bypass</text>
<circle cx="632.9" cy="299" r="4.8" fill="#111"/>
<circle cx="632.9" cy="299" r="4" fill="url(#ledd)" stroke="#7a7a7a" stroke-width="0.6"/>
<text x="739" y="273.4" fill="#e4e4e4" font-size="7.5" text-anchor="middle" letter-spacing="0.26">Feedback</text>
<circle cx="739.1" cy="286.416" r="10.607999999999999" fill="#000" opacity="0.6"/>
<circle cx="739.1" cy="285.6" r="10.2" fill="url(#kb)"/>
<circle cx="739.1" cy="285.6" r="9.792" fill="none" stroke="#666" stroke-width="0.816"/>
<circle cx="739.1" cy="285.6" r="8.568" fill="none" stroke="#5a5a5a" stroke-width="0.4" opacity="0.8"/>
<line x1="737.3" y1="278.9" x2="736.51" y2="275.94" stroke="#d07818" stroke-width="2.24" stroke-linecap="round"/>
<text x="739" y="302" fill="#e0eaff" font-size="7.5" text-anchor="middle" letter-spacing="0.26">10.0 %</text>
<text x="779.7" y="288.3" fill="#e4e4e4" font-size="7.5" text-anchor="middle" letter-spacing="0.26">Scale</text>
<circle cx="779.7" cy="299.816" r="10.607999999999999" fill="#000" opacity="0.6"/>
<circle cx="779.7" cy="299" r="10.2" fill="url(#kb)"/>
<circle cx="779.7" cy="299" r="9.792" fill="none" stroke="#666" stroke-width="0.816"/>
<circle cx="779.7" cy="299" r="8.568" fill="none" stroke="#5a5a5a" stroke-width="0.4" opacity="0.8"/>
<line x1="783.17" y1="292.99" x2="784.7" y2="290.34" stroke="#d07818" stroke-width="2.24" stroke-linecap="round"/>
</g>
<g clip-path="url(#cCm)">
<rect x="806" y="0" width="94" height="300" fill="#050505"/>
<rect x="816.25" y="0" width="32.5" height="300" fill="#ffffff"/>
<rect x="816.25" y="153.75" width="15.75" height="60.25" fill="#c9ab80"/>
<rect x="816.25" y="213" width="32.5" height="87" fill="#c9ab80"/>
<rect x="816.25" y="63" width="15.75" height="2.5" fill="#a07030"/>
<rect x="832" y="235.5" width="16.75" height="2.5" fill="#a07030"/>
<rect x="853" y="0" width="37" height="300" fill="#ffffff"/>
<rect x="853" y="140" width="37" height="160" fill="#c9ab80"/>
<rect x="857" y="60" width="10.5" height="228.75" fill="#b08a58"/>
<rect x="877" y="63" width="10" height="227" fill="#b08a58"/>
<rect x="853" y="69.5" width="14.5" height="2.0" fill="#a07030"/>
<rect x="872" y="71.5" width="18" height="2.5" fill="#a07030"/>
<line x1="816.25" y1="9.05" x2="823.25" y2="9.05" stroke="#222" stroke-width="0.8"/>
<line x1="841.75" y1="9.05" x2="848.75" y2="9.05" stroke="#222" stroke-width="0.8"/>
<text x="832.5" y="11.25" fill="#222" font-size="6" text-anchor="middle" letter-spacing="0.21">-0.6</text>
<line x1="853" y1="9.05" x2="860" y2="9.05" stroke="#222" stroke-width="0.8"/>
<line x1="883" y1="9.05" x2="890" y2="9.05" stroke="#222" stroke-width="0.8"/>
<text x="872.5" y="11.25" fill="#222" font-size="6" text-anchor="middle" letter-spacing="0.21">-0.6</text>
<line x1="816.25" y1="22.05" x2="823.25" y2="22.05" stroke="#222" stroke-width="0.8"/>
<line x1="841.75" y1="22.05" x2="848.75" y2="22.05" stroke="#222" stroke-width="0.8"/>
<text x="832.5" y="24.25" fill="#222" font-size="6" text-anchor="middle" letter-spacing="0.21">-1.5</text>
<line x1="853" y1="22.05" x2="860" y2="22.05" stroke="#222" stroke-width="0.8"/>
<line x1="883" y1="22.05" x2="890" y2="22.05" stroke="#222" stroke-width="0.8"/>
<text x="872.5" y="24.25" fill="#222" font-size="6" text-anchor="middle" letter-spacing="0.21">-1.5</text>
<line x1="816.25" y1="35.3" x2="823.25" y2="35.3" stroke="#222" stroke-width="0.8"/>
<line x1="841.75" y1="35.3" x2="848.75" y2="35.3" stroke="#222" stroke-width="0.8"/>
<text x="832.5" y="37.5" fill="#222" font-size="6" text-anchor="middle" letter-spacing="0.21">-2.5</text>
<line x1="853" y1="35.3" x2="860" y2="35.3" stroke="#222" stroke-width="0.8"/>
<line x1="883" y1="35.3" x2="890" y2="35.3" stroke="#222" stroke-width="0.8"/>
<text x="872.5" y="37.5" fill="#222" font-size="6" text-anchor="middle" letter-spacing="0.21">-2.5</text>
<line x1="816.25" y1="49.05" x2="823.25" y2="49.05" stroke="#222" stroke-width="0.8"/>
<line x1="841.75" y1="49.05" x2="848.75" y2="49.05" stroke="#222" stroke-width="0.8"/>
<text x="832.5" y="51.25" fill="#222" font-size="6" text-anchor="middle" letter-spacing="0.21">-3.5</text>
<line x1="853" y1="49.05" x2="860" y2="49.05" stroke="#222" stroke-width="0.8"/>
<line x1="883" y1="49.05" x2="890" y2="49.05" stroke="#222" stroke-width="0.8"/>
<text x="872.5" y="51.25" fill="#222" font-size="6" text-anchor="middle" letter-spacing="0.21">-3.5</text>
<line x1="816.25" y1="69.05" x2="823.25" y2="69.05" stroke="#222" stroke-width="0.8"/>
<line x1="841.75" y1="69.05" x2="848.75" y2="69.05" stroke="#222" stroke-width="0.8"/>
<text x="832.5" y="71.25" fill="#222" font-size="6" text-anchor="middle" letter-spacing="0.21">-5</text>
<line x1="853" y1="69.05" x2="860" y2="69.05" stroke="#222" stroke-width="0.8"/>
<line x1="883" y1="69.05" x2="890" y2="69.05" stroke="#222" stroke-width="0.8"/>
<text x="872.5" y="71.25" fill="#222" font-size="6" text-anchor="middle" letter-spacing="0.21">-5</text>
<line x1="816.25" y1="83.3" x2="823.25" y2="83.3" stroke="#222" stroke-width="0.8"/>
<line x1="841.75" y1="83.3" x2="848.75" y2="83.3" stroke="#222" stroke-width="0.8"/>
<text x="832.5" y="85.5" fill="#222" font-size="6" text-anchor="middle" letter-spacing="0.21">-6</text>
<line x1="853" y1="83.3" x2="860" y2="83.3" stroke="#222" stroke-width="0.8"/>
<line x1="883" y1="83.3" x2="890" y2="83.3" stroke="#222" stroke-width="0.8"/>
<text x="872.5" y="85.5" fill="#222" font-size="6" text-anchor="middle" letter-spacing="0.21">-6</text>
<line x1="816.25" y1="96.55" x2="823.25" y2="96.55" stroke="#222" stroke-width="0.8"/>
<line x1="841.75" y1="96.55" x2="848.75" y2="96.55" stroke="#222" stroke-width="0.8"/>
<text x="832.5" y="98.75" fill="#222" font-size="6" text-anchor="middle" letter-spacing="0.21">-7</text>
<line x1="853" y1="96.55" x2="860" y2="96.55" stroke="#222" stroke-width="0.8"/>
<line x1="883" y1="96.55" x2="890" y2="96.55" stroke="#222" stroke-width="0.8"/>
<text x="872.5" y="98.75" fill="#222" font-size="6" text-anchor="middle" letter-spacing="0.21">-7</text>
<line x1="816.25" y1="110.3" x2="823.25" y2="110.3" stroke="#222" stroke-width="0.8"/>
<line x1="841.75" y1="110.3" x2="848.75" y2="110.3" stroke="#222" stroke-width="0.8"/>
<text x="832.5" y="112.5" fill="#222" font-size="6" text-anchor="middle" letter-spacing="0.21">-8</text>
<line x1="853" y1="110.3" x2="860" y2="110.3" stroke="#222" stroke-width="0.8"/>
<line x1="883" y1="110.3" x2="890" y2="110.3" stroke="#222" stroke-width="0.8"/>
<text x="872.5" y="112.5" fill="#222" font-size="6" text-anchor="middle" letter-spacing="0.21">-8</text>
<line x1="816.25" y1="124.05" x2="823.25" y2="124.05" stroke="#222" stroke-width="0.8"/>
<line x1="841.75" y1="124.05" x2="848.75" y2="124.05" stroke="#222" stroke-width="0.8"/>
<text x="832.5" y="126.25" fill="#222" font-size="6" text-anchor="middle" letter-spacing="0.21">-9</text>
<line x1="853" y1="124.05" x2="860" y2="124.05" stroke="#222" stroke-width="0.8"/>
<line x1="883" y1="124.05" x2="890" y2="124.05" stroke="#222" stroke-width="0.8"/>
<text x="872.5" y="126.25" fill="#222" font-size="6" text-anchor="middle" letter-spacing="0.21">-9</text>
<line x1="816.25" y1="137.3" x2="823.25" y2="137.3" stroke="#222" stroke-width="0.8"/>
<line x1="841.75" y1="137.3" x2="848.75" y2="137.3" stroke="#222" stroke-width="0.8"/>
<text x="832.5" y="139.5" fill="#222" font-size="6" text-anchor="middle" letter-spacing="0.21">-10</text>
<line x1="853" y1="137.3" x2="860" y2="137.3" stroke="#222" stroke-width="0.8"/>
<line x1="883" y1="137.3" x2="890" y2="137.3" stroke="#222" stroke-width="0.8"/>
<text x="872.5" y="139.5" fill="#222" font-size="6" text-anchor="middle" letter-spacing="0.21">-10</text>
<line x1="816.25" y1="164.8" x2="823.25" y2="164.8" stroke="#222" stroke-width="0.8"/>
<line x1="841.75" y1="164.8" x2="848.75" y2="164.8" stroke="#222" stroke-width="0.8"/>
<text x="832.5" y="167" fill="#222" font-size="6" text-anchor="middle" letter-spacing="0.21">-12</text>
<line x1="853" y1="164.8" x2="860" y2="164.8" stroke="#222" stroke-width="0.8"/>
<line x1="883" y1="164.8" x2="890" y2="164.8" stroke="#222" stroke-width="0.8"/>
<text x="872.5" y="167" fill="#222" font-size="6" text-anchor="middle" letter-spacing="0.21">-12</text>
<line x1="816.25" y1="192.3" x2="823.25" y2="192.3" stroke="#222" stroke-width="0.8"/>
<line x1="841.75" y1="192.3" x2="848.75" y2="192.3" stroke="#222" stroke-width="0.8"/>
<text x="832.5" y="194.5" fill="#222" font-size="6" text-anchor="middle" letter-spacing="0.21">-14</text>
<line x1="853" y1="192.3" x2="860" y2="192.3" stroke="#222" stroke-width="0.8"/>
<line x1="883" y1="192.3" x2="890" y2="192.3" stroke="#222" stroke-width="0.8"/>
<text x="872.5" y="194.5" fill="#222" font-size="6" text-anchor="middle" letter-spacing="0.21">-14</text>
<line x1="816.25" y1="219.05" x2="823.25" y2="219.05" stroke="#222" stroke-width="0.8"/>
<line x1="841.75" y1="219.05" x2="848.75" y2="219.05" stroke="#222" stroke-width="0.8"/>
<text x="832.5" y="221.25" fill="#222" font-size="6" text-anchor="middle" letter-spacing="0.21">-16</text>
<line x1="853" y1="219.05" x2="860" y2="219.05" stroke="#222" stroke-width="0.8"/>
<line x1="883" y1="219.05" x2="890" y2="219.05" stroke="#222" stroke-width="0.8"/>
<text x="872.5" y="221.25" fill="#222" font-size="6" text-anchor="middle" letter-spacing="0.21">-16</text>
<line x1="816.25" y1="246.55" x2="823.25" y2="246.55" stroke="#222" stroke-width="0.8"/>
<line x1="841.75" y1="246.55" x2="848.75" y2="246.55" stroke="#222" stroke-width="0.8"/>
<text x="832.5" y="248.75" fill="#222" font-size="6" text-anchor="middle" letter-spacing="0.21">-18</text>
<line x1="853" y1="246.55" x2="860" y2="246.55" stroke="#222" stroke-width="0.8"/>
<line x1="883" y1="246.55" x2="890" y2="246.55" stroke="#222" stroke-width="0.8"/>
<text x="872.5" y="248.75" fill="#222" font-size="6" text-anchor="middle" letter-spacing="0.21">-18</text>
<line x1="816.25" y1="274.05" x2="823.25" y2="274.05" stroke="#222" stroke-width="0.8"/>
<line x1="841.75" y1="274.05" x2="848.75" y2="274.05" stroke="#222" stroke-width="0.8"/>
<text x="832.5" y="276.25" fill="#222" font-size="6" text-anchor="middle" letter-spacing="0.21">-20</text>
<line x1="853" y1="274.05" x2="860" y2="274.05" stroke="#222" stroke-width="0.8"/>
<line x1="883" y1="274.05" x2="890" y2="274.05" stroke="#222" stroke-width="0.8"/>
<text x="872.5" y="276.25" fill="#222" font-size="6" text-anchor="middle" letter-spacing="0.21">-20</text>
</g>
<g clip-path="url(#cD)">
<rect x="900" y="0" width="300" height="300" fill="#0e0e0e"/>
<rect x="900" y="0" width="300" height="1.4" fill="#505050"/>
<rect x="900" y="1.4" width="300" height="17.6" fill="#121212"/>
<rect x="898" y="3.2" width="24.399999999999977" height="12.55" fill="#b08040" rx="3"/>
<text x="911" y="13.2" fill="#f4f0e8" font-size="9" text-anchor="middle" font-weight="bold" letter-spacing="0.32">udio</text>
<text x="1142.3" y="16.1" fill="#c08850" font-size="15" textLength="67.5" lengthAdjust="spacingAndGlyphs">Limited-Z</text>
<rect x="900" y="19" width="90" height="186" fill="url(#bgD)"/>
<rect x="990" y="19" width="2.5" height="188" fill="#0a0a0a"/>
<text x="900" y="28.9" fill="#e4e4e4" font-size="8.5" letter-spacing="0.3">unt</text>
<circle cx="896.5" cy="50.048" r="13.624" fill="#000" opacity="0.6"/>
<circle cx="896.5" cy="49" r="13.1" fill="url(#kb)"/>
<circle cx="896.5" cy="49" r="12.576" fill="none" stroke="#ccc" stroke-width="1.048"/>
<circle cx="896.5" cy="49" r="11.004" fill="none" stroke="#5a5a5a" stroke-width="0.4585" opacity="0.8"/>
<line x1="904.21" y1="44.55" x2="907.62" y2="42.58" stroke="#d07818" stroke-width="2.88" stroke-linecap="round"/>
<text x="897" y="73.5" fill="#e4e4e4" font-size="7" letter-spacing="0.25">dB</text>
<text x="968.25" y="28.9" fill="#e4e4e4" font-size="8.5" text-anchor="middle" letter-spacing="0.3">Out Gain</text>
<circle cx="967.9" cy="49.769999999999996" r="14.56" fill="#000" opacity="0.6"/>
<circle cx="967.9" cy="48.65" r="14" fill="url(#kb)"/>
<circle cx="967.9" cy="48.65" r="13.44" fill="none" stroke="#ccc" stroke-width="1.12"/>
<circle cx="967.9" cy="48.65" r="11.76" fill="none" stroke="#5a5a5a" stroke-width="0.49000000000000005" opacity="0.8"/>
<line x1="967.9" y1="39.13" x2="967.9" y2="34.93" stroke="#d07818" stroke-width="3.08" stroke-linecap="round"/>
<text x="967.9" y="73.2" fill="#e0e8f0" font-size="7" text-anchor="middle" letter-spacing="0.25">0.00 dB</text>
<text x="931.85" y="63.9" fill="#e4e4e4" font-size="8.5" text-anchor="middle" letter-spacing="0.3">Style</text>
<path d="M934.66,68.95 A16.2,16.2 0 0 1 948.05,84.90" fill="none" stroke="#e89a20" stroke-width="2.52" stroke-linecap="butt"/>
<circle cx="931.85" cy="86.02000000000001" r="14.56" fill="#000" opacity="0.6"/>
<circle cx="931.85" cy="84.9" r="14" fill="url(#kb)"/>
<circle cx="931.85" cy="84.9" r="13.44" fill="none" stroke="#ccc" stroke-width="1.12"/>
<circle cx="931.85" cy="84.9" r="11.76" fill="none" stroke="#5a5a5a" stroke-width="0.49000000000000005" opacity="0.8"/>
<line x1="941.37" y1="84.9" x2="945.57" y2="84.9" stroke="#d07818" stroke-width="3.08" stroke-linecap="round"/>
<text x="911.4" y="101.5" fill="#4a4a4a" font-size="6" text-anchor="middle" letter-spacing="0.21">Soft</text>
<text x="951.3" y="101.5" fill="#4a4a4a" font-size="6" text-anchor="middle" letter-spacing="0.21">Hard</text>
<text x="930.6" y="109.4" fill="#e0e8f0" font-size="7" text-anchor="middle" letter-spacing="0.25">80.1</text>
<text x="915.4" y="126.9" fill="#e4e4e4" font-size="7" text-anchor="middle" letter-spacing="0.25">Attack</text>
<circle cx="915.4" cy="138.04" r="8.32" fill="#000" opacity="0.6"/>
<circle cx="915.4" cy="137.4" r="8" fill="url(#kb)"/>
<circle cx="915.4" cy="137.4" r="7.68" fill="none" stroke="#666" stroke-width="0.64"/>
<circle cx="915.4" cy="137.4" r="6.72" fill="none" stroke="#5a5a5a" stroke-width="0.4" opacity="0.8"/>
<line x1="910.29" y1="139.26" x2="908.03" y2="140.08" stroke="#d07818" stroke-width="1.76" stroke-linecap="round"/>
<text x="915.4" y="150.5" fill="#e0e8f0" font-size="6" text-anchor="middle" letter-spacing="0.21">6.0 ms</text>
<text x="947.25" y="126.9" fill="#e4e4e4" font-size="7" text-anchor="middle" letter-spacing="0.25">Release</text>
<circle cx="947.25" cy="138.04" r="8.32" fill="#000" opacity="0.6"/>
<circle cx="947.25" cy="137.4" r="8" fill="url(#kb)"/>
<circle cx="947.25" cy="137.4" r="7.68" fill="none" stroke="#666" stroke-width="0.64"/>
<circle cx="947.25" cy="137.4" r="6.72" fill="none" stroke="#5a5a5a" stroke-width="0.4" opacity="0.8"/>
<line x1="941.81" y1="137.4" x2="939.41" y2="137.4" stroke="#d07818" stroke-width="1.76" stroke-linecap="round"/>
<text x="947.25" y="150.5" fill="#e0e8f0" font-size="6" text-anchor="middle" letter-spacing="0.21">75.0 ms</text>
<text x="977" y="126.9" fill="#e4e4e4" font-size="7" text-anchor="middle" letter-spacing="0.25">Margin</text>
<circle cx="977" cy="138.04" r="8.32" fill="#000" opacity="0.6"/>
<circle cx="977" cy="137.4" r="8" fill="url(#kb)"/>
<circle cx="977" cy="137.4" r="7.68" fill="none" stroke="#666" stroke-width="0.64"/>
<circle cx="977" cy="137.4" r="6.72" fill="none" stroke="#5a5a5a" stroke-width="0.4" opacity="0.8"/>
<line x1="980.85" y1="133.55" x2="982.54" y2="131.86" stroke="#d07818" stroke-width="1.76" stroke-linecap="round"/>
<text x="977" y="150.5" fill="#e0e8f0" font-size="6" text-anchor="middle" letter-spacing="0.21">-0.50 dB</text>
<circle cx="906.5" cy="169.4" r="4.5" fill="#1a3a10"/>
<circle cx="906.5" cy="169.4" r="3.6" fill="#50e030"/>
<circle cx="905.8" cy="168.6" r="1.6" fill="#c0ff90"/>
<text x="900" y="184.6" fill="#e4e4e4" font-size="7" letter-spacing="0.25">Learn</text>
<circle cx="906.1" cy="192" r="4.6" fill="#111"/>
<circle cx="906.1" cy="192" r="3.8" fill="url(#ledd)" stroke="#7a7a7a" stroke-width="0.6"/>
<rect x="916.6" y="161.9" width="46.39999999999998" height="40.19999999999999" fill="#272727"/>
<text x="925.4" y="169.75" fill="#e4e4e4" font-size="7" text-anchor="middle" letter-spacing="0.25">M/S</text>
<circle cx="924.5" cy="177.6" r="4.6" fill="#111"/>
<circle cx="924.5" cy="177.6" r="3.8" fill="url(#ledd)" stroke="#7a7a7a" stroke-width="0.6"/>
<text x="947.8" y="169.75" fill="#e4e4e4" font-size="7" text-anchor="middle" letter-spacing="0.25">Adjust</text>
<circle cx="947.25" cy="180.25" r="8" fill="#222" stroke="#2e2e2e" stroke-width="1"/>
<line x1="947.25" y1="174" x2="947.25" y2="176" stroke="#6a4a20" stroke-width="1.2"/>
<text x="937.6" y="192.5" fill="#3a3a3a" font-size="6" text-anchor="middle" letter-spacing="0.21">M</text>
<text x="956.35" y="192.5" fill="#3a3a3a" font-size="6" text-anchor="middle" letter-spacing="0.21">S</text>
<text x="977" y="169.75" fill="#e4e4e4" font-size="7" text-anchor="middle" letter-spacing="0.25">Link</text>
<circle cx="977" cy="181.44" r="8.32" fill="#000" opacity="0.6"/>
<circle cx="977" cy="180.8" r="8" fill="url(#kb)"/>
<circle cx="977" cy="180.8" r="7.68" fill="none" stroke="#666" stroke-width="0.64"/>
<circle cx="977" cy="180.8" r="6.72" fill="none" stroke="#5a5a5a" stroke-width="0.4" opacity="0.8"/>
<line x1="977" y1="175.36" x2="977" y2="172.96" stroke="#d07818" stroke-width="1.76" stroke-linecap="round"/>
<text x="977" y="193.4" fill="#e0e8f0" font-size="6" text-anchor="middle" letter-spacing="0.21">50.0 %</text>
<rect x="992.5" y="19.6" width="176.9000000000001" height="189.4" fill="#1c1c1c"/>
<text x="1085.4" y="28.9" fill="#ccc" font-size="6.5" text-anchor="middle" letter-spacing="0.23">Type-&gt;</text>
<rect x="1097.6" y="21.9" width="14.900000000000091" height="9.600000000000001" fill="#1a3050" stroke="#0a0a0a" stroke-width="0.8"/>
<text x="1105" y="29.3" fill="#6a9ad8" font-size="6.5" text-anchor="middle" font-weight="bold" letter-spacing="0.23">Off</text>
<text x="1140.2" y="28.9" fill="#ccc" font-size="6.5" text-anchor="middle" letter-spacing="0.23">View-&gt;</text>
<rect x="1150.7" y="21.9" width="13.399999999999864" height="9.600000000000001" fill="#5a1020" stroke="#0a0a0a" stroke-width="0.8"/>
<text x="1157.4" y="29.3" fill="#ff6868" font-size="6.5" text-anchor="middle" font-weight="bold" letter-spacing="0.23">Red</text>
<rect x="1013.6" y="35" width="152.80000000000007" height="158.4" fill="#cdb08a"/>
<rect x="1013.6" y="35" width="152.80000000000007" height="15.75" fill="#f98c88"/>
<polygon points="1013.6,50.8 1013.6,144.0 1014.3,132.5 1015.0,130.3 1015.7,131.7 1016.4,125.3 1017.1,122.0 1017.8,118.8 1018.5,108.9 1019.2,118.8 1019.9,123.0 1020.6,119.5 1021.3,115.3 1022.0,109.3 1022.7,101.8 1023.4,100.8 1024.1,98.1 1024.8,106.5 1025.5,117.2 1026.2,127.7 1026.9,141.5 1027.6,135.8 1028.3,127.2 1029.0,132.8 1029.7,122.1 1030.4,117.3 1031.1,120.9 1031.8,107.9 1032.5,112.7 1033.2,112.6 1033.9,113.0 1034.6,113.3 1035.3,113.7 1036.0,117.2 1036.7,109.8 1037.4,107.4 1038.1,108.4 1038.8,117.5 1039.5,116.0 1040.2,121.3 1040.9,125.6 1041.6,130.7 1042.3,127.3 1043.0,130.1 1043.7,124.9 1044.4,124.7 1045.1,116.4 1045.8,119.0 1046.5,114.1 1047.2,109.1 1047.9,116.0 1048.6,112.8 1049.3,109.2 1050.0,95.8 1050.7,90.0 1051.4,87.1 1052.1,88.7 1052.8,82.9 1053.5,84.1 1054.2,79.2 1054.9,76.9 1055.6,76.4 1056.3,76.0 1057.0,75.3 1057.7,93.0 1058.4,96.7 1059.1,111.4 1059.8,124.3 1060.5,130.8 1061.2,140.5 1061.9,130.2 1062.6,129.0 1063.3,119.7 1064.0,127.6 1064.7,102.2 1065.4,105.7 1066.1,112.9 1066.8,121.8 1067.5,115.5 1068.2,129.3 1068.9,119.4 1069.6,128.9 1070.3,108.1 1071.0,113.5 1071.7,112.7 1072.4,112.3 1073.1,121.9 1073.8,115.1 1074.5,116.5 1075.2,114.4 1075.9,129.7 1076.6,121.4 1077.3,123.6 1078.0,125.7 1078.7,127.8 1079.4,128.5 1080.1,123.6 1080.8,110.8 1081.5,115.2 1082.2,113.3 1082.9,106.0 1083.6,110.5 1084.3,108.8 1085.0,127.1 1085.7,124.2 1086.4,130.6 1087.1,128.6 1087.8,121.0 1088.5,119.1 1089.2,124.5 1089.9,111.7 1090.6,108.6 1091.3,113.4 1092.0,119.0 1092.7,129.9 1093.4,136.5 1094.1,127.7 1094.8,134.8 1095.5,123.8 1096.2,118.8 1096.9,116.3 1097.6,110.8 1098.3,101.4 1099.0,112.4 1099.7,103.4 1100.4,101.3 1101.1,106.7 1101.8,99.2 1102.5,98.1 1103.2,104.6 1103.9,96.4 1104.6,106.5 1105.3,97.8 1106.0,98.5 1106.7,92.4 1107.4,110.2 1108.1,107.6 1108.8,105.6 1109.5,104.2 1110.2,97.8 1110.9,110.9 1111.6,112.0 1112.3,94.3 1113.0,102.0 1113.7,107.6 1114.4,114.9 1115.1,118.8 1115.8,124.4 1116.5,129.4 1117.2,134.1 1117.9,147.5 1118.6,149.3 1119.3,153.8 1120.0,164.5 1120.7,156.7 1121.4,163.2 1122.1,144.9 1122.8,141.2 1123.5,137.0 1124.2,132.8 1124.9,139.6 1125.6,130.3 1126.3,127.4 1127.0,126.5 1127.7,137.9 1128.4,129.0 1129.1,126.1 1129.8,132.8 1130.5,127.6 1131.2,132.8 1131.9,132.0 1132.6,135.5 1133.3,148.6 1134.0,133.9 1134.7,129.7 1135.4,133.9 1136.1,125.4 1136.8,138.3 1137.5,133.0 1138.2,118.3 1138.9,137.3 1139.6,135.2 1140.3,122.1 1141.0,121.0 1141.7,119.9 1142.4,124.8 1143.1,119.8 1143.8,120.5 1144.5,121.2 1145.2,122.8 1145.9,123.4 1146.6,120.9 1147.3,121.0 1148.0,118.0 1148.7,116.6 1149.4,115.2 1150.1,113.8 1150.8,112.4 1151.5,111.5 1152.2,114.0 1152.9,110.1 1153.6,112.3 1154.3,108.7 1155.0,115.6 1155.7,110.7 1156.4,115.1 1157.1,105.7 1157.8,104.9 1158.5,104.1 1159.2,103.2 1159.9,106.6 1160.6,101.5 1161.3,99.7 1162.0,97.9 1162.7,99.2 1163.4,106.3 1164.1,103.9 1164.8,111.6 1165.5,124.8 1166.2,127.2 1166.4,50.8" fill="#e85c4a"/>
<polygon points="1013.6,50.8 1013.6,59.0 1014.4,63.0 1015.2,62.1 1016.0,52.7 1016.8,61.1 1017.6,53.9 1018.4,54.1 1019.2,56.9 1020.0,52.5 1020.8,56.1 1021.6,54.2 1022.4,54.0 1023.2,53.6 1024.0,52.5 1024.8,53.1 1025.6,64.5 1026.4,56.4 1027.2,57.6 1028.0,55.2 1028.8,61.8 1029.6,56.2 1030.4,53.3 1031.2,52.6 1032.0,55.0 1032.8,52.5 1033.6,54.0 1034.4,58.0 1035.2,54.6 1036.0,53.1 1036.8,52.8 1037.6,61.4 1038.4,52.7 1039.2,55.5 1040.0,52.5 1040.8,54.9 1041.6,54.6 1042.4,64.8 1043.2,54.2 1044.0,58.2 1044.8,53.6 1045.6,62.1 1046.4,53.0 1047.2,52.9 1048.0,60.4 1048.8,56.9 1049.6,54.9 1050.4,53.3 1051.2,52.7 1052.0,62.1 1052.8,52.6 1053.6,59.9 1054.4,53.8 1055.2,59.4 1056.0,55.2 1056.8,53.2 1057.6,52.7 1058.4,54.0 1059.2,62.2 1060.0,59.5 1060.8,53.1 1061.6,54.3 1062.4,54.4 1063.2,64.4 1064.0,58.7 1064.8,57.5 1065.6,54.5 1066.4,53.3 1067.2,57.7 1068.0,60.9 1068.8,54.9 1069.6,52.8 1070.4,62.0 1071.2,56.5 1072.0,60.0 1072.8,59.6 1073.6,56.1 1074.4,54.4 1075.2,59.9 1076.0,56.4 1076.8,57.8 1077.6,52.6 1078.4,54.9 1079.2,57.8 1080.0,59.7 1080.8,55.6 1081.6,61.1 1082.4,56.6 1083.2,60.9 1084.0,65.6 1084.8,56.3 1085.6,54.4 1086.4,58.8 1087.2,59.5 1088.0,54.3 1088.8,58.8 1089.6,56.4 1090.4,59.3 1091.2,58.9 1092.0,52.6 1092.8,56.5 1093.6,54.6 1094.4,52.9 1095.2,54.0 1096.0,52.6 1096.8,53.3 1097.6,52.6 1098.4,55.0 1099.2,57.6 1100.0,55.5 1100.8,52.5 1101.6,54.1 1102.4,53.8 1103.2,52.7 1104.0,53.3 1104.8,55.1 1105.6,60.3 1106.4,57.3 1107.2,59.8 1108.0,53.2 1108.8,57.2 1109.6,65.5 1110.4,55.5 1111.2,52.5 1112.0,53.4 1112.8,53.7 1113.6,60.4 1114.4,54.8 1115.2,53.4 1116.0,57.7 1116.8,64.8 1117.6,54.7 1118.4,59.3 1119.2,54.4 1120.0,59.3 1120.8,54.4 1121.6,53.6 1122.4,54.3 1123.2,61.5 1124.0,52.6 1124.8,56.1 1125.6,55.2 1126.4,53.1 1127.2,56.6 1128.0,56.5 1128.8,58.0 1129.6,53.7 1130.4,55.7 1131.2,55.0 1132.0,54.7 1132.8,54.8 1133.6,58.7 1134.4,52.6 1135.2,58.3 1136.0,59.3 1136.8,52.7 1137.6,55.9 1138.4,58.8 1139.2,58.7 1140.0,54.6 1140.8,54.8 1141.6,55.9 1142.4,53.3 1143.2,56.7 1144.0,55.6 1144.8,54.3 1145.6,56.2 1146.4,54.8 1147.2,53.8 1148.0,53.3 1148.8,55.1 1149.6,59.9 1150.4,52.8 1151.2,66.2 1152.0,53.0 1152.8,55.1 1153.6,61.1 1154.4,53.8 1155.2,56.3 1156.0,53.8 1156.8,53.4 1157.6,52.9 1158.4,53.1 1159.2,52.6 1160.0,58.5 1160.8,54.2 1161.6,54.4 1162.4,56.6 1163.2,57.4 1164.0,53.0 1164.8,53.8 1165.6,58.9 1166.4,57.3 1166.4,50.8" fill="#f98c88"/>
<polyline points="1013.6,59.0 1014.4,63.0 1015.2,62.1 1016.0,52.7 1016.8,61.1 1017.6,53.9 1018.4,54.1 1019.2,56.9 1020.0,52.5 1020.8,56.1 1021.6,54.2 1022.4,54.0 1023.2,53.6 1024.0,52.5 1024.8,53.1 1025.6,64.5 1026.4,56.4 1027.2,57.6 1028.0,55.2 1028.8,61.8 1029.6,56.2 1030.4,53.3 1031.2,52.6 1032.0,55.0 1032.8,52.5 1033.6,54.0 1034.4,58.0 1035.2,54.6 1036.0,53.1 1036.8,52.8 1037.6,61.4 1038.4,52.7 1039.2,55.5 1040.0,52.5 1040.8,54.9 1041.6,54.6 1042.4,64.8 1043.2,54.2 1044.0,58.2 1044.8,53.6 1045.6,62.1 1046.4,53.0 1047.2,52.9 1048.0,60.4 1048.8,56.9 1049.6,54.9 1050.4,53.3 1051.2,52.7 1052.0,62.1 1052.8,52.6 1053.6,59.9 1054.4,53.8 1055.2,59.4 1056.0,55.2 1056.8,53.2 1057.6,52.7 1058.4,54.0 1059.2,62.2 1060.0,59.5 1060.8,53.1 1061.6,54.3 1062.4,54.4 1063.2,64.4 1064.0,58.7 1064.8,57.5 1065.6,54.5 1066.4,53.3 1067.2,57.7 1068.0,60.9 1068.8,54.9 1069.6,52.8 1070.4,62.0 1071.2,56.5 1072.0,60.0 1072.8,59.6 1073.6,56.1 1074.4,54.4 1075.2,59.9 1076.0,56.4 1076.8,57.8 1077.6,52.6 1078.4,54.9 1079.2,57.8 1080.0,59.7 1080.8,55.6 1081.6,61.1 1082.4,56.6 1083.2,60.9 1084.0,65.6 1084.8,56.3 1085.6,54.4 1086.4,58.8 1087.2,59.5 1088.0,54.3 1088.8,58.8 1089.6,56.4 1090.4,59.3 1091.2,58.9 1092.0,52.6 1092.8,56.5 1093.6,54.6 1094.4,52.9 1095.2,54.0 1096.0,52.6 1096.8,53.3 1097.6,52.6 1098.4,55.0 1099.2,57.6 1100.0,55.5 1100.8,52.5 1101.6,54.1 1102.4,53.8 1103.2,52.7 1104.0,53.3 1104.8,55.1 1105.6,60.3 1106.4,57.3 1107.2,59.8 1108.0,53.2 1108.8,57.2 1109.6,65.5 1110.4,55.5 1111.2,52.5 1112.0,53.4 1112.8,53.7 1113.6,60.4 1114.4,54.8 1115.2,53.4 1116.0,57.7 1116.8,64.8 1117.6,54.7 1118.4,59.3 1119.2,54.4 1120.0,59.3 1120.8,54.4 1121.6,53.6 1122.4,54.3 1123.2,61.5 1124.0,52.6 1124.8,56.1 1125.6,55.2 1126.4,53.1 1127.2,56.6 1128.0,56.5 1128.8,58.0 1129.6,53.7 1130.4,55.7 1131.2,55.0 1132.0,54.7 1132.8,54.8 1133.6,58.7 1134.4,52.6 1135.2,58.3 1136.0,59.3 1136.8,52.7 1137.6,55.9 1138.4,58.8 1139.2,58.7 1140.0,54.6 1140.8,54.8 1141.6,55.9 1142.4,53.3 1143.2,56.7 1144.0,55.6 1144.8,54.3 1145.6,56.2 1146.4,54.8 1147.2,53.8 1148.0,53.3 1148.8,55.1 1149.6,59.9 1150.4,52.8 1151.2,66.2 1152.0,53.0 1152.8,55.1 1153.6,61.1 1154.4,53.8 1155.2,56.3 1156.0,53.8 1156.8,53.4 1157.6,52.9 1158.4,53.1 1159.2,52.6 1160.0,58.5 1160.8,54.2 1161.6,54.4 1162.4,56.6 1163.2,57.4 1164.0,53.0 1164.8,53.8 1165.6,58.9 1166.4,57.3" fill="none" stroke="#d04a30" stroke-width="0.5" stroke-linejoin="round" opacity="0.7"/>
<polygon points="1054.8,145.0 1056.5,73.5 1058.3,145.0" fill="#ffffff"/>
<line x1="1056.5" y1="145" x2="1056.5" y2="164.5" stroke="#a87838" stroke-width="1.2"/>
<line x1="1110.75" y1="110" x2="1110.75" y2="164.5" stroke="#a87838" stroke-width="1.2"/>
<line x1="1013.6" y1="42.9" x2="1078.4" y2="42.9" stroke="#555" stroke-width="0.9" opacity="0.85"/>
<line x1="1101.1" y1="42.9" x2="1166.4" y2="42.9" stroke="#555" stroke-width="0.9" opacity="0.85"/>
<text x="1089.75" y="44.9" fill="#222" font-size="5.5" text-anchor="middle" letter-spacing="0.19">-0.4</text>
<line x1="1013.6" y1="50.4" x2="1078.4" y2="50.4" stroke="#111" stroke-width="0.9" opacity="0.85"/>
<line x1="1101.1" y1="50.4" x2="1166.4" y2="50.4" stroke="#111" stroke-width="0.9" opacity="0.85"/>
<text x="1089.75" y="52.4" fill="#222" font-size="5.5" text-anchor="middle" letter-spacing="0.19">-0.8</text>
<line x1="1013.6" y1="63.35" x2="1078.4" y2="63.35" stroke="#111" stroke-width="0.9" opacity="0.85"/>
<line x1="1101.1" y1="63.35" x2="1166.4" y2="63.35" stroke="#111" stroke-width="0.9" opacity="0.85"/>
<text x="1089.75" y="65.35" fill="#222" font-size="5.5" text-anchor="middle" letter-spacing="0.19">-1.5</text>
<line x1="1013.6" y1="72.1" x2="1078.4" y2="72.1" stroke="#111" stroke-width="0.9" opacity="0.85"/>
<line x1="1101.1" y1="72.1" x2="1166.4" y2="72.1" stroke="#111" stroke-width="0.9" opacity="0.85"/>
<text x="1089.75" y="74.1" fill="#222" font-size="5.5" text-anchor="middle" letter-spacing="0.19">-2</text>
<line x1="1013.6" y1="82.25" x2="1078.4" y2="82.25" stroke="#111" stroke-width="0.9" opacity="0.85"/>
<line x1="1101.1" y1="82.25" x2="1166.4" y2="82.25" stroke="#111" stroke-width="0.9" opacity="0.85"/>
<text x="1089.75" y="84.25" fill="#222" font-size="5.5" text-anchor="middle" letter-spacing="0.19">-2.5</text>
<line x1="1013.6" y1="91.35" x2="1078.4" y2="91.35" stroke="#111" stroke-width="0.9" opacity="0.85"/>
<line x1="1101.1" y1="91.35" x2="1166.4" y2="91.35" stroke="#111" stroke-width="0.9" opacity="0.85"/>
<text x="1089.75" y="93.35" fill="#222" font-size="5.5" text-anchor="middle" letter-spacing="0.19">-3</text>
<line x1="1013.6" y1="100.3" x2="1078.4" y2="100.3" stroke="#111" stroke-width="0.9" opacity="0.85"/>
<line x1="1101.1" y1="100.3" x2="1166.4" y2="100.3" stroke="#111" stroke-width="0.9" opacity="0.85"/>
<text x="1089.75" y="102.3" fill="#222" font-size="5.5" text-anchor="middle" letter-spacing="0.19">-3.5</text>
<line x1="1013.6" y1="110.25" x2="1078.4" y2="110.25" stroke="#111" stroke-width="0.9" opacity="0.85"/>
<line x1="1101.1" y1="110.25" x2="1166.4" y2="110.25" stroke="#111" stroke-width="0.9" opacity="0.85"/>
<text x="1089.75" y="112.25" fill="#222" font-size="5.5" text-anchor="middle" letter-spacing="0.19">-4</text>
<line x1="1013.6" y1="129" x2="1078.4" y2="129" stroke="#111" stroke-width="0.9" opacity="0.85"/>
<line x1="1101.1" y1="129" x2="1166.4" y2="129" stroke="#111" stroke-width="0.9" opacity="0.85"/>
<text x="1089.75" y="131" fill="#222" font-size="5.5" text-anchor="middle" letter-spacing="0.19">-5</text>
<line x1="1013.6" y1="147.5" x2="1078.4" y2="147.5" stroke="#111" stroke-width="0.9" opacity="0.85"/>
<line x1="1101.1" y1="147.5" x2="1166.4" y2="147.5" stroke="#111" stroke-width="0.9" opacity="0.85"/>
<text x="1089.75" y="149.5" fill="#222" font-size="5.5" text-anchor="middle" letter-spacing="0.19">-6</text>
<line x1="1013.6" y1="165.4" x2="1078.4" y2="165.4" stroke="#111" stroke-width="0.9" opacity="0.85"/>
<line x1="1101.1" y1="165.4" x2="1166.4" y2="165.4" stroke="#111" stroke-width="0.9" opacity="0.85"/>
<text x="1089.75" y="167.4" fill="#222" font-size="5.5" text-anchor="middle" letter-spacing="0.19">-7</text>
<line x1="1013.6" y1="184.3" x2="1078.4" y2="184.3" stroke="#111" stroke-width="0.9" opacity="0.85"/>
<line x1="1101.1" y1="184.3" x2="1166.4" y2="184.3" stroke="#111" stroke-width="0.9" opacity="0.85"/>
<text x="1089.75" y="186.3" fill="#222" font-size="5.5" text-anchor="middle" letter-spacing="0.19">-8</text>
<rect x="1013.6" y="192.5" width="152.80000000000007" height="0.9000000000000057" fill="#a07a40"/>
<text x="1001.4" y="169.75" fill="#e4e4e4" font-size="6.5" text-anchor="middle" letter-spacing="0.23">Scale</text>
<circle cx="1001.9" cy="181.73999999999998" r="8.32" fill="#000" opacity="0.6"/>
<circle cx="1001.9" cy="181.1" r="8" fill="url(#kb)"/>
<circle cx="1001.9" cy="181.1" r="7.68" fill="none" stroke="#666" stroke-width="0.64"/>
<circle cx="1001.9" cy="181.1" r="6.72" fill="none" stroke="#5a5a5a" stroke-width="0.4" opacity="0.8"/>
<line x1="1006.61" y1="178.38" x2="1008.69" y2="177.18" stroke="#d07818" stroke-width="1.76" stroke-linecap="round"/>
<text x="1001.9" y="193.9" fill="#e0e8f0" font-size="6" text-anchor="middle" letter-spacing="0.21">-8 dB</text>
<rect x="1013.6" y="200" width="152.80000000000007" height="2" fill="#3a3a3a" rx="1"/>
<rect x="1112.5" y="197" width="3.900000000000091" height="10" fill="#3a4060" stroke="#aaa" stroke-width="0.5"/>
<rect x="1169.4" y="19.6" width="2.599999999999909" height="189.4" fill="#0a0a0a"/>
<rect x="1172" y="19.6" width="28" height="189.4" fill="#1e1e1e"/>
<text x="1184.25" y="25.9" fill="#ddd" font-size="6.5" text-anchor="middle" letter-spacing="0.23">Reduce</text>
<text x="1178.1" y="32.4" fill="#ccc" font-size="5" text-anchor="middle" letter-spacing="0.18">6.2</text>
<text x="1189.5" y="32.4" fill="#ccc" font-size="5" text-anchor="middle" letter-spacing="0.18">6.3</text>
<rect x="1172.9" y="35" width="22.699999999999818" height="158.4" fill="#ffffff"/>
<rect x="1172.9" y="35" width="22.699999999999818" height="88.4" fill="#f23c3c"/>
<rect x="1184.2" y="123" width="11.399999999999864" height="2" fill="#f23c3c"/>
<rect x="1172.9" y="137.4" width="11.299999999999955" height="1.6999999999999886" fill="#e01010"/>
<rect x="1184.2" y="138.3" width="11.399999999999864" height="1.6999999999999886" fill="#e01010"/>
<line x1="1172.9" y1="42.9" x2="1176.5" y2="42.9" stroke="#111" stroke-width="0.8"/>
<line x1="1192" y1="42.9" x2="1195.6" y2="42.9" stroke="#111" stroke-width="0.8"/>
<text x="1184.25" y="44.9" fill="#222" font-size="5" text-anchor="middle" letter-spacing="0.18">-0.4</text>
<line x1="1172.9" y1="50.4" x2="1176.5" y2="50.4" stroke="#111" stroke-width="0.8"/>
<line x1="1192" y1="50.4" x2="1195.6" y2="50.4" stroke="#111" stroke-width="0.8"/>
<text x="1184.25" y="52.4" fill="#222" font-size="5" text-anchor="middle" letter-spacing="0.18">-0.8</text>
<line x1="1172.9" y1="63.35" x2="1176.5" y2="63.35" stroke="#111" stroke-width="0.8"/>
<line x1="1192" y1="63.35" x2="1195.6" y2="63.35" stroke="#111" stroke-width="0.8"/>
<text x="1184.25" y="65.35" fill="#222" font-size="5" text-anchor="middle" letter-spacing="0.18">-1.5</text>
<line x1="1172.9" y1="72.1" x2="1176.5" y2="72.1" stroke="#111" stroke-width="0.8"/>
<line x1="1192" y1="72.1" x2="1195.6" y2="72.1" stroke="#111" stroke-width="0.8"/>
<text x="1184.25" y="74.1" fill="#222" font-size="5" text-anchor="middle" letter-spacing="0.18">-2</text>
<line x1="1172.9" y1="82.25" x2="1176.5" y2="82.25" stroke="#111" stroke-width="0.8"/>
<line x1="1192" y1="82.25" x2="1195.6" y2="82.25" stroke="#111" stroke-width="0.8"/>
<text x="1184.25" y="84.25" fill="#222" font-size="5" text-anchor="middle" letter-spacing="0.18">-2.5</text>
<line x1="1172.9" y1="91.35" x2="1176.5" y2="91.35" stroke="#111" stroke-width="0.8"/>
<line x1="1192" y1="91.35" x2="1195.6" y2="91.35" stroke="#111" stroke-width="0.8"/>
<text x="1184.25" y="93.35" fill="#222" font-size="5" text-anchor="middle" letter-spacing="0.18">-3</text>
<line x1="1172.9" y1="100.3" x2="1176.5" y2="100.3" stroke="#111" stroke-width="0.8"/>
<line x1="1192" y1="100.3" x2="1195.6" y2="100.3" stroke="#111" stroke-width="0.8"/>
<text x="1184.25" y="102.3" fill="#222" font-size="5" text-anchor="middle" letter-spacing="0.18">-3.5</text>
<line x1="1172.9" y1="110.25" x2="1176.5" y2="110.25" stroke="#111" stroke-width="0.8"/>
<line x1="1192" y1="110.25" x2="1195.6" y2="110.25" stroke="#111" stroke-width="0.8"/>
<text x="1184.25" y="112.25" fill="#222" font-size="5" text-anchor="middle" letter-spacing="0.18">-4</text>
<line x1="1172.9" y1="129" x2="1176.5" y2="129" stroke="#111" stroke-width="0.8"/>
<line x1="1192" y1="129" x2="1195.6" y2="129" stroke="#111" stroke-width="0.8"/>
<text x="1184.25" y="131" fill="#222" font-size="5" text-anchor="middle" letter-spacing="0.18">-5</text>
<line x1="1172.9" y1="147.5" x2="1176.5" y2="147.5" stroke="#111" stroke-width="0.8"/>
<line x1="1192" y1="147.5" x2="1195.6" y2="147.5" stroke="#111" stroke-width="0.8"/>
<text x="1184.25" y="149.5" fill="#222" font-size="5" text-anchor="middle" letter-spacing="0.18">-6</text>
<line x1="1172.9" y1="165.4" x2="1176.5" y2="165.4" stroke="#111" stroke-width="0.8"/>
<line x1="1192" y1="165.4" x2="1195.6" y2="165.4" stroke="#111" stroke-width="0.8"/>
<text x="1184.25" y="167.4" fill="#222" font-size="5" text-anchor="middle" letter-spacing="0.18">-7</text>
<line x1="1172.9" y1="184.3" x2="1176.5" y2="184.3" stroke="#111" stroke-width="0.8"/>
<line x1="1192" y1="184.3" x2="1195.6" y2="184.3" stroke="#111" stroke-width="0.8"/>
<text x="1184.25" y="186.3" fill="#222" font-size="5" text-anchor="middle" letter-spacing="0.18">-8</text>
<rect x="1197.5" y="35" width="2.5" height="158.4" fill="#ffffff"/>
<rect x="1197.5" y="59.5" width="2.5" height="133.9" fill="#cdb08a"/>
<text x="1178.1" y="201" fill="#ddd" font-size="7" text-anchor="middle" letter-spacing="0.25">L</text>
<text x="1189.5" y="201" fill="#ddd" font-size="7" text-anchor="middle" letter-spacing="0.25">R</text>
<rect x="900" y="209" width="300" height="80" fill="#0d0d0d"/>
<text x="900" y="221.25" fill="#eee" font-size="8.5" letter-spacing="0.3">amic Algorithm</text>
<rect x="900" y="223.75" width="50" height="65.0" fill="#4a4a4a"/>
<rect x="900" y="230" width="43.75" height="52.5" fill="#2a2a2a"/>
<text x="915" y="228.5" fill="#222" font-size="5.5" text-anchor="middle" letter-spacing="0.19">Smooth</text>
<text x="915" y="287.5" fill="#222" font-size="5.5" text-anchor="middle" letter-spacing="0.19">Punch</text>
<text x="947.5" y="256.25" fill="#222" font-size="5.5" text-anchor="middle" letter-spacing="0.19" transform="rotate(-90 947.5 256.25)" dy="2">Aggressive</text>
<circle cx="935.0" cy="235.0" r="3" fill="#f0a060" opacity="0.85"/>
<circle cx="935.0" cy="240.0" r="3" fill="#f0a060" opacity="0.85"/>
<circle cx="936.25" cy="246.25" r="2.5" fill="#e09050" opacity="0.85"/>
<circle cx="931.25" cy="247.0" r="2.5" fill="#c08050" opacity="0.85"/>
<circle cx="932.5" cy="256.25" r="3" fill="#f0a040" opacity="0.85"/>
<circle cx="929.5" cy="265.5" r="2.5" fill="#a07050" opacity="0.85"/>
<circle cx="913.75" cy="259.25" r="2" fill="#806080" opacity="0.85"/>
<circle cx="918.75" cy="265.5" r="2" fill="#706080" opacity="0.85"/>
<circle cx="922.0" cy="263.75" r="2" fill="#806070" opacity="0.85"/>
<circle cx="935.0" cy="253.75" r="2" fill="#f0b060" opacity="0.85"/>
<circle cx="927.5" cy="253" r="3" fill="#111" stroke="#777" stroke-width="0.6"/>
<text x="975" y="229.25" fill="#e4e4e4" font-size="7" text-anchor="middle" letter-spacing="0.25">- Dynamic -</text>
<text x="960.75" y="238.25" fill="#e4e4e4" font-size="7" text-anchor="middle" letter-spacing="0.25">DLC</text>
<circle cx="960.75" cy="245.75" r="4.1" fill="#111"/>
<circle cx="960.75" cy="245.75" r="3.3" fill="#e08020"/>
<circle cx="959.925" cy="244.925" r="1.4849999999999999" fill="#ffd080" opacity="0.6"/>
<text x="989.5" y="238.25" fill="#e4e4e4" font-size="7" text-anchor="middle" letter-spacing="0.25">DTC</text>
<circle cx="989.5" cy="245.75" r="4.1" fill="#111"/>
<circle cx="989.5" cy="245.75" r="3.3" fill="#e08020"/>
<circle cx="988.675" cy="244.925" r="1.4849999999999999" fill="#ffd080" opacity="0.6"/>
<text x="977.5" y="264.25" fill="#e4e4e4" font-size="7" text-anchor="middle" letter-spacing="0.25">- Pre Process -</text>
<text x="961.25" y="272.5" fill="#e4e4e4" font-size="7" text-anchor="middle" letter-spacing="0.25">C.S.</text>
<circle cx="960.75" cy="280" r="4.1" fill="#111"/>
<circle cx="960.75" cy="280" r="3.3" fill="#e08020"/>
<circle cx="959.925" cy="279.175" r="1.4849999999999999" fill="#ffd080" opacity="0.6"/>
<text x="989.5" y="272.5" fill="#e4e4e4" font-size="7" text-anchor="middle" letter-spacing="0.25">Comp</text>
<rect x="983.25" y="275.75" width="13.0" height="8.75" fill="url(#vb983275)" stroke="#2a2a3a" stroke-width="0.8"/>
<text x="989.75" y="282.285" fill="#3a2000" font-size="6" text-anchor="middle" font-weight="bold" letter-spacing="0.21">Dyn</text>
<rect x="1001.25" y="213" width="63.75" height="75.75" fill="#282828"/>
<text x="1033.75" y="221.25" fill="#e4e4e4" font-size="7" text-anchor="middle" letter-spacing="0.25">Bass -DynEQ- High</text>
<circle cx="1013.25" cy="233.64" r="8.32" fill="#000" opacity="0.6"/>
<circle cx="1013.25" cy="233" r="8" fill="url(#kb)"/>
<circle cx="1013.25" cy="233" r="7.68" fill="none" stroke="#555" stroke-width="0.64"/>
<circle cx="1013.25" cy="233" r="6.72" fill="none" stroke="#5a5a5a" stroke-width="0.4" opacity="0.8"/>
<line x1="1013.25" y1="227.56" x2="1013.25" y2="225.16" stroke="#d07818" stroke-width="1.76" stroke-linecap="round"/>
<text x="1013.25" y="246.75" fill="#e0e8f0" font-size="6" text-anchor="middle" letter-spacing="0.21">0.0 %</text>
<circle cx="1051.75" cy="233.64" r="8.32" fill="#000" opacity="0.6"/>
<circle cx="1051.75" cy="233" r="8" fill="url(#kb)"/>
<circle cx="1051.75" cy="233" r="7.68" fill="none" stroke="#555" stroke-width="0.64"/>
<circle cx="1051.75" cy="233" r="6.72" fill="none" stroke="#5a5a5a" stroke-width="0.4" opacity="0.8"/>
<line x1="1051.75" y1="227.56" x2="1051.75" y2="225.16" stroke="#d07818" stroke-width="1.76" stroke-linecap="round"/>
<text x="1051.75" y="246.75" fill="#e0e8f0" font-size="6" text-anchor="middle" letter-spacing="0.21">0.0 %</text>
<circle cx="1013.25" cy="269.89" r="8.32" fill="#000" opacity="0.6"/>
<circle cx="1013.25" cy="269.25" r="8" fill="url(#kb)"/>
<circle cx="1013.25" cy="269.25" r="7.68" fill="none" stroke="#555" stroke-width="0.64"/>
<circle cx="1013.25" cy="269.25" r="6.72" fill="none" stroke="#5a5a5a" stroke-width="0.4" opacity="0.8"/>
<line x1="1010.53" y1="264.54" x2="1009.33" y2="262.46" stroke="#d07818" stroke-width="1.76" stroke-linecap="round"/>
<text x="1013.25" y="283.0" fill="#e0e8f0" font-size="6" text-anchor="middle" letter-spacing="0.21">60.0 Hz</text>
<circle cx="1051.75" cy="269.89" r="8.32" fill="#000" opacity="0.6"/>
<circle cx="1051.75" cy="269.25" r="8" fill="url(#kb)"/>
<circle cx="1051.75" cy="269.25" r="7.68" fill="none" stroke="#555" stroke-width="0.64"/>
<circle cx="1051.75" cy="269.25" r="6.72" fill="none" stroke="#5a5a5a" stroke-width="0.4" opacity="0.8"/>
<line x1="1049.03" y1="264.54" x2="1047.83" y2="262.46" stroke="#d07818" stroke-width="1.76" stroke-linecap="round"/>
<text x="1051.75" y="283.0" fill="#e0e8f0" font-size="6" text-anchor="middle" letter-spacing="0.21">6300 Hz</text>
<text x="1032.5" y="271.25" fill="#e4e4e4" font-size="7" text-anchor="middle" letter-spacing="0.25">-Freq-</text>
<rect x="1072.5" y="213" width="61.25" height="75.75" fill="#171717"/>
<text x="1076.25" y="220.5" fill="#eee" font-size="8.5" letter-spacing="0.3">Dither</text>
<text x="1091.25" y="235" fill="#e4e4e4" font-size="7" text-anchor="middle" letter-spacing="0.25">Bit Depth</text>
<rect x="1109.5" y="228.75" width="13.75" height="10.0" fill="#1a2a48" stroke="#0a0a0a" stroke-width="0.6"/>
<text x="1116.4" y="236.2" fill="#70a0e0" font-size="6.5" text-anchor="middle" font-weight="bold" letter-spacing="0.23">16</text>
<text x="1090.75" y="255" fill="#e4e4e4" font-size="7" text-anchor="middle" letter-spacing="0.25">Type</text>
<rect x="1110" y="248.75" width="12.5" height="9.25" fill="#2a2010"/>
<text x="1090.75" y="275" fill="#e4e4e4" font-size="7" text-anchor="middle" letter-spacing="0.25">Shape</text>
<rect x="1110" y="268.75" width="12.5" height="9.25" fill="#182030"/>
<rect x="1137.5" y="213" width="62.5" height="75.75" fill="#171717"/>
<text x="1156.75" y="223" fill="#e4e4e4" font-size="7" text-anchor="middle" letter-spacing="0.25">DC Block</text>
<rect x="1177.5" y="216.25" width="13.75" height="9.25" fill="url(#vb1177216)" stroke="#2a2a3a" stroke-width="0.8"/>
<text x="1184.375" y="223.035" fill="#3a2000" font-size="6" text-anchor="middle" font-weight="bold" letter-spacing="0.21">Low</text>
<text x="1156.75" y="238.75" fill="#e4e4e4" font-size="7" text-anchor="middle" letter-spacing="0.25">Over</text>
<rect x="1177.5" y="232" width="13.75" height="9.25" fill="url(#vb1177232)" stroke="#2a2a3a" stroke-width="0.8"/>
<text x="1184.375" y="238.965" fill="#3a2000" font-size="6.5" text-anchor="middle" font-weight="bold" letter-spacing="0.23">2x</text>
<text x="1157.5" y="254.5" fill="#e4e4e4" font-size="7" text-anchor="middle" letter-spacing="0.25">ISP Squash</text>
<circle cx="1156.75" cy="261.75" r="4.1" fill="#111"/>
<circle cx="1156.75" cy="261.75" r="3.3" fill="#e08020"/>
<circle cx="1155.925" cy="260.925" r="1.4849999999999999" fill="#ffd080" opacity="0.6"/>
<text x="1183.25" y="266.25" fill="#e4e4e4" font-size="7" text-anchor="middle" letter-spacing="0.25">Bypass</text>
<circle cx="1183.25" cy="275" r="4.8" fill="#111"/>
<circle cx="1183.25" cy="275" r="4" fill="url(#ledd)" stroke="#7a7a7a" stroke-width="0.6"/>
<text x="1196" y="254.5" fill="#e4e4e4" font-size="7" letter-spacing="0.25">A</text>
<rect x="900" y="289" width="300" height="11" fill="#050505"/>
<text x="900" y="298" fill="#ddd" font-size="7" letter-spacing="0.25">ered to: LVC-Audio</text>
<rect x="1122" y="290.5" width="8" height="7.5" fill="#2a3060" rx="1"/>
<text x="1126.0" y="296.05" fill="#aab" font-size="5" text-anchor="middle" letter-spacing="0.18">&lt;&lt;</text>
<rect x="1135" y="290.5" width="7" height="7.5" fill="#151520" rx="1"/>
<text x="1138.5" y="296.05" fill="#334" font-size="5" text-anchor="middle" letter-spacing="0.18">&gt;&gt;</text>
<rect x="1163.75" y="290.5" width="16.25" height="7.5" fill="#2a3060" rx="1"/>
<text x="1171.875" y="296.59" fill="#dde" font-size="6.5" text-anchor="middle" letter-spacing="0.23">A</text>
<rect x="1183.75" y="290.5" width="16.25" height="7.5" fill="#2a3060" rx="1"/>
<text x="1191.875" y="296.41" fill="#dde" font-size="6" text-anchor="middle" letter-spacing="0.21">A-&gt;B</text>
</g>
<g clip-path="url(#cE)">
<rect x="0" y="299" width="300" height="301" fill="#0a0a0a"/>
<rect x="1" y="299" width="65.5" height="4" fill="#c08a3a" rx="2"/>
<text x="119" y="302.5" fill="none" font-size="18" letter-spacing="0.63" stroke="#b07a30" stroke-width="1">Pressed-4</text>
<rect x="2.6" y="316.9" width="203.0" height="182.0" fill="url(#bgE)"/>
<text x="22.4" y="326.85" fill="#e8e8e8" font-size="8.5" text-anchor="middle" letter-spacing="0.3">In Gain</text>
<circle cx="23.3" cy="343.416" r="10.607999999999999" fill="#000" opacity="0.6"/>
<circle cx="23.3" cy="342.6" r="10.2" fill="url(#kb)"/>
<circle cx="23.3" cy="342.6" r="9.792" fill="none" stroke="#666" stroke-width="0.816"/>
<circle cx="23.3" cy="342.6" r="8.568" fill="none" stroke="#5a5a5a" stroke-width="0.4" opacity="0.8"/>
<line x1="23.9" y1="335.69" x2="24.17" y2="332.64" stroke="#d07818" stroke-width="2.24" stroke-linecap="round"/>
<text x="23.6" y="359.75" fill="#dce6ff" font-size="7.5" text-anchor="middle" letter-spacing="0.26">0.00 dB</text>
<text x="70" y="326.85" fill="#e8e8e8" font-size="8.5" text-anchor="middle" letter-spacing="0.3">Threshold</text>
<path d="M87.85,344.19 A20.25,20.25 0 0 1 82.52,368.26" fill="none" stroke="#e8c030" stroke-width="3.15" stroke-linecap="butt"/>
<circle cx="69.5" cy="354.15" r="18.2" fill="#000" opacity="0.6"/>
<circle cx="69.5" cy="352.75" r="17.5" fill="url(#kb)"/>
<circle cx="69.5" cy="352.75" r="16.8" fill="none" stroke="#d8d8d8" stroke-width="1.4000000000000001"/>
<circle cx="69.5" cy="352.75" r="14.7" fill="none" stroke="#5a5a5a" stroke-width="0.6125" opacity="0.8"/>
<line x1="81.22" y1="350.68" x2="86.39" y2="349.77" stroke="#d07818" stroke-width="3.85" stroke-linecap="round"/>
<text x="69.1" y="381.6" fill="#dce6ff" font-size="8.5" text-anchor="middle" letter-spacing="0.3">-8.3 dB</text>
<text x="127.4" y="326.85" fill="#e8e8e8" font-size="8.5" text-anchor="middle" letter-spacing="0.3">Ratio</text>
<path d="M116.14,369.34 A20.25,20.25 0 0 1 117.62,335.21" fill="none" stroke="#e8c030" stroke-width="3.15" stroke-linecap="butt"/>
<circle cx="127.75" cy="354.15" r="18.2" fill="#000" opacity="0.6"/>
<circle cx="127.75" cy="352.75" r="17.5" fill="url(#kb)"/>
<circle cx="127.75" cy="352.75" r="16.8" fill="none" stroke="#d8d8d8" stroke-width="1.4000000000000001"/>
<circle cx="127.75" cy="352.75" r="14.7" fill="none" stroke="#5a5a5a" stroke-width="0.6125" opacity="0.8"/>
<line x1="121.8" y1="342.44" x2="119.17" y2="337.9" stroke="#d07818" stroke-width="3.85" stroke-linecap="round"/>
<text x="127.4" y="381.6" fill="#dce6ff" font-size="8.5" text-anchor="middle" letter-spacing="0.3">8.00</text>
<text x="173.8" y="326.85" fill="#e8e8e8" font-size="8.5" text-anchor="middle" letter-spacing="0.3">Out Gain</text>
<circle cx="173.25" cy="343.416" r="10.607999999999999" fill="#000" opacity="0.6"/>
<circle cx="173.25" cy="342.6" r="10.2" fill="url(#kb)"/>
<circle cx="173.25" cy="342.6" r="9.792" fill="none" stroke="#666" stroke-width="0.816"/>
<circle cx="173.25" cy="342.6" r="8.568" fill="none" stroke="#5a5a5a" stroke-width="0.4" opacity="0.8"/>
<line x1="173.25" y1="335.66" x2="173.25" y2="332.6" stroke="#d07818" stroke-width="2.24" stroke-linecap="round"/>
<text x="173.25" y="359.75" fill="#dce6ff" font-size="7.5" text-anchor="middle" letter-spacing="0.26">-0.64 dB</text>
<text x="194.25" y="370.25" fill="#e8e8e8" font-size="7.5" text-anchor="middle" letter-spacing="0.26">AGL</text>
<circle cx="194.6" cy="379" r="5.3" fill="#111"/>
<circle cx="194.6" cy="379" r="4.5" fill="url(#ledd)" stroke="#7a7a7a" stroke-width="0.6"/>
<text x="24.15" y="402.1" fill="#e8e8e8" font-size="7.5" text-anchor="middle" letter-spacing="0.26">Bypass</text>
<circle cx="23.3" cy="413.1" r="5.3" fill="#111"/>
<circle cx="23.3" cy="413.1" r="4.5" fill="url(#ledd)" stroke="#7a7a7a" stroke-width="0.6"/>
<text x="73.15" y="400.9" fill="#e8e8e8" font-size="7.5" text-anchor="middle" letter-spacing="0.26">Attack</text>
<circle cx="73.15" cy="415.71599999999995" r="10.607999999999999" fill="#000" opacity="0.6"/>
<circle cx="73.15" cy="414.9" r="10.2" fill="url(#kb)"/>
<circle cx="73.15" cy="414.9" r="9.792" fill="none" stroke="#666" stroke-width="0.816"/>
<circle cx="73.15" cy="414.9" r="8.568" fill="none" stroke="#5a5a5a" stroke-width="0.4" opacity="0.8"/>
<line x1="66.21" y1="414.9" x2="63.15" y2="414.9" stroke="#d07818" stroke-width="2.24" stroke-linecap="round"/>
<text x="73.15" y="431.5" fill="#dce6ff" font-size="7" text-anchor="middle" letter-spacing="0.25">5.00 ms</text>
<text x="123.4" y="400.9" fill="#e8e8e8" font-size="7.5" text-anchor="middle" letter-spacing="0.26">Release</text>
<circle cx="123.4" cy="415.71599999999995" r="10.607999999999999" fill="#000" opacity="0.6"/>
<circle cx="123.4" cy="414.9" r="10.2" fill="url(#kb)"/>
<circle cx="123.4" cy="414.9" r="9.792" fill="none" stroke="#666" stroke-width="0.816"/>
<circle cx="123.4" cy="414.9" r="8.568" fill="none" stroke="#5a5a5a" stroke-width="0.4" opacity="0.8"/>
<line x1="116.57" y1="416.1" x2="113.56" y2="416.64" stroke="#d07818" stroke-width="2.24" stroke-linecap="round"/>
<text x="123.4" y="431.5" fill="#dce6ff" font-size="7" text-anchor="middle" letter-spacing="0.25">75.0 ms</text>
<text x="173.25" y="400.9" fill="#e8e8e8" font-size="7.5" text-anchor="middle" letter-spacing="0.26">Mix</text>
<circle cx="173.25" cy="415.71599999999995" r="10.607999999999999" fill="#000" opacity="0.6"/>
<circle cx="173.25" cy="414.9" r="10.2" fill="url(#kb)"/>
<circle cx="173.25" cy="414.9" r="9.792" fill="none" stroke="#666" stroke-width="0.816"/>
<circle cx="173.25" cy="414.9" r="8.568" fill="none" stroke="#5a5a5a" stroke-width="0.4" opacity="0.8"/>
<line x1="178.15" y1="419.8" x2="180.32" y2="421.97" stroke="#d07818" stroke-width="2.24" stroke-linecap="round"/>
<text x="173.25" y="431.5" fill="#dce6ff" font-size="7" text-anchor="middle" letter-spacing="0.25">100.0 %</text>
<rect x="10.85" y="436.75" width="57.050000000000004" height="56.85000000000002" fill="#262626"/>
<text x="37.6" y="443.75" fill="#e8e8e8" font-size="7.5" text-anchor="middle" letter-spacing="0.26">- Channel -</text>
<text x="23.3" y="455.1" fill="#e8e8e8" font-size="7.5" text-anchor="middle" letter-spacing="0.26">M/S</text>
<circle cx="23.3" cy="467.4" r="5.3" fill="#111"/>
<circle cx="23.3" cy="467.4" r="4.5" fill="url(#ledd)" stroke="#7a7a7a" stroke-width="0.6"/>
<text x="53.9" y="455.1" fill="#e8e8e8" font-size="7.5" text-anchor="middle" letter-spacing="0.26">Link</text>
<circle cx="53.4" cy="469.066" r="10.607999999999999" fill="#000" opacity="0.6"/>
<circle cx="53.4" cy="468.25" r="10.2" fill="url(#kb)"/>
<circle cx="53.4" cy="468.25" r="9.792" fill="none" stroke="#666" stroke-width="0.816"/>
<circle cx="53.4" cy="468.25" r="8.568" fill="none" stroke="#5a5a5a" stroke-width="0.4" opacity="0.8"/>
<line x1="47.39" y1="464.78" x2="44.74" y2="463.25" stroke="#d07818" stroke-width="2.24" stroke-linecap="round"/>
<text x="53.4" y="486.1" fill="#dce6ff" font-size="7" text-anchor="middle" letter-spacing="0.25">25.0 %</text>
<text x="91" y="452.15" fill="#e8e8e8" font-size="7.5" text-anchor="middle" letter-spacing="0.26">Over</text>
<rect x="83.1" y="457.75" width="16.650000000000006" height="10.5" fill="url(#vb83457)" stroke="#2a2a3a" stroke-width="0.8"/>
<text x="91.425" y="465.52" fill="#3a2000" font-size="7" text-anchor="middle" font-weight="bold" letter-spacing="0.25">4x</text>
<text x="133" y="452.15" fill="#e8e8e8" font-size="7.5" text-anchor="middle" letter-spacing="0.26">Out Clip</text>
<circle cx="131.6" cy="463.35" r="5.0" fill="#111"/>
<circle cx="131.6" cy="463.35" r="4.2" fill="#e08020"/>
<circle cx="130.54999999999998" cy="462.3" r="1.8900000000000001" fill="#ffd080" opacity="0.6"/>
<text x="173.25" y="452.15" fill="#e8e8e8" font-size="7.5" text-anchor="middle" letter-spacing="0.26">Scale</text>
<circle cx="173.25" cy="467.316" r="10.607999999999999" fill="#000" opacity="0.6"/>
<circle cx="173.25" cy="466.5" r="10.2" fill="url(#kb)"/>
<circle cx="173.25" cy="466.5" r="9.792" fill="none" stroke="#666" stroke-width="0.816"/>
<circle cx="173.25" cy="466.5" r="8.568" fill="none" stroke="#5a5a5a" stroke-width="0.4" opacity="0.8"/>
<line x1="169.78" y1="460.49" x2="168.25" y2="457.84" stroke="#d07818" stroke-width="2.24" stroke-linecap="round"/>
<text x="173.25" y="483.1" fill="#dce6ff" font-size="7" text-anchor="middle" letter-spacing="0.25">-24 dB</text>
<rect x="2.6" y="497.9" width="96.30000000000001" height="96.20000000000005" fill="#5e5e5e"/>
<rect x="10" y="504.9" width="81" height="81.0" fill="#3c3c3c"/>
<text x="52.5" y="504" fill="#1e1e1e" font-size="7" text-anchor="middle" letter-spacing="0.25">Smooth</text>
<text x="52.5" y="592.9" fill="#1e1e1e" font-size="7" text-anchor="middle" letter-spacing="0.25">Punch</text>
<text x="8.8" y="546" fill="#1e1e1e" font-size="7" text-anchor="middle" letter-spacing="0.25" transform="rotate(-90 8.8 546)">Clean</text>
<text x="98" y="545.6" fill="#1e1e1e" font-size="7" text-anchor="middle" letter-spacing="0.25" transform="rotate(-90 98 545.6)">Vintage</text>
<circle cx="66" cy="533.75" r="4.2" fill="#2a2a2a" stroke="#777" stroke-width="0.6"/>
<circle cx="66" cy="533.75" r="2.2" fill="#000"/>
<text x="104.65" y="505.75" fill="#e8e8e8" font-size="8" letter-spacing="0.28">Input Model</text>
<rect x="102" y="508" width="73" height="10.899999999999977" fill="#1e2030"/>
<text x="138.25" y="516.6" fill="#e8e8f0" font-size="8" text-anchor="middle" letter-spacing="0.28">Trans-HQ 1</text>
<text x="104.65" y="536.4" fill="#e8e8e8" font-size="8" letter-spacing="0.28">Output Model</text>
<rect x="102" y="539" width="73" height="10.850000000000023" fill="#1e2030"/>
<text x="138.25" y="547.75" fill="#e8e8f0" font-size="8" text-anchor="middle" letter-spacing="0.28">Tape-R</text>
<text x="120.75" y="563.15" fill="#e8e8e8" font-size="7.5" text-anchor="middle" letter-spacing="0.26">Character</text>
<circle cx="119.9" cy="577.416" r="10.607999999999999" fill="#000" opacity="0.6"/>
<circle cx="119.9" cy="576.6" r="10.2" fill="url(#kb)"/>
<circle cx="119.9" cy="576.6" r="9.792" fill="none" stroke="#666" stroke-width="0.816"/>
<circle cx="119.9" cy="576.6" r="8.568" fill="none" stroke="#5a5a5a" stroke-width="0.4" opacity="0.8"/>
<line x1="124.8" y1="581.5" x2="126.97" y2="583.67" stroke="#d07818" stroke-width="2.24" stroke-linecap="round"/>
<text x="119.9" y="593.25" fill="#dce6ff" font-size="7" text-anchor="middle" letter-spacing="0.25">100.0 %</text>
<text x="161.9" y="563.15" fill="#e8e8e8" font-size="7.5" text-anchor="middle" letter-spacing="0.26">Drive</text>
<circle cx="161.9" cy="577.416" r="10.607999999999999" fill="#000" opacity="0.6"/>
<circle cx="161.9" cy="576.6" r="10.2" fill="url(#kb)"/>
<circle cx="161.9" cy="576.6" r="9.792" fill="none" stroke="#666" stroke-width="0.816"/>
<circle cx="161.9" cy="576.6" r="8.568" fill="none" stroke="#5a5a5a" stroke-width="0.4" opacity="0.8"/>
<line x1="167.91" y1="573.13" x2="170.56" y2="571.6" stroke="#d07818" stroke-width="2.24" stroke-linecap="round"/>
<text x="161.9" y="593.25" fill="#dce6ff" font-size="7" text-anchor="middle" letter-spacing="0.25">4.88 dB</text>
<rect x="178.5" y="507.5" width="27.69999999999999" height="66.5" fill="#2c2c2c"/>
<text x="192.5" y="514.5" fill="#e8e8e8" font-size="7.5" text-anchor="middle" letter-spacing="0.26">CDS</text>
<circle cx="192.5" cy="528.416" r="10.607999999999999" fill="#000" opacity="0.6"/>
<circle cx="192.5" cy="527.6" r="10.2" fill="url(#kb)"/>
<circle cx="192.5" cy="527.6" r="9.792" fill="none" stroke="#666" stroke-width="0.816"/>
<circle cx="192.5" cy="527.6" r="8.568" fill="none" stroke="#5a5a5a" stroke-width="0.4" opacity="0.8"/>
<line x1="185.98" y1="525.23" x2="183.11" y2="524.18" stroke="#d07818" stroke-width="2.24" stroke-linecap="round"/>
<text x="192.5" y="544.25" fill="#dce6ff" font-size="7" text-anchor="middle" letter-spacing="0.25">7.2 %</text>
<rect x="182.9" y="556.15" width="20.099999999999994" height="14.700000000000045" fill="url(#arE)" stroke="#203050" stroke-width="1.2"/>
<text x="193" y="566.5" fill="#200020" font-size="8" text-anchor="middle" font-weight="bold" letter-spacing="0.28">Ar</text>
<rect x="208" y="299" width="92" height="301" fill="#1a1a1a"/>
<rect x="208" y="299" width="3" height="301" fill="#0c0c0c"/>
<text x="228.25" y="310.5" fill="#e0e0e0" font-size="7.5" text-anchor="middle" letter-spacing="0.26">Reduce</text>
<text x="220.5" y="318.75" fill="#ddd" font-size="5.5" text-anchor="middle" letter-spacing="0.19">8.7</text>
<text x="236.25" y="318.75" fill="#ddd" font-size="5.5" text-anchor="middle" letter-spacing="0.19">8.7</text>
<text x="272.5" y="310.5" fill="#e0e0e0" font-size="7.5" text-anchor="middle" letter-spacing="0.26">Output</text>
<text x="262.5" y="318.75" fill="#ddd" font-size="5.5" text-anchor="middle" letter-spacing="0.19">-0.90</text>
<text x="282" y="318.75" fill="#ddd" font-size="5.5" text-anchor="middle" letter-spacing="0.19">-0.98</text>
<rect x="213" y="323" width="30.75" height="265.75" fill="#ffffff"/>
<rect x="213" y="323" width="30.75" height="89.5" fill="#f23c3c"/>
<rect x="228.4" y="412" width="15.349999999999994" height="3.5" fill="#f23c3c"/>
<rect x="213" y="411.5" width="15.400000000000006" height="1.0" fill="#ffffff"/>
<rect x="228.4" y="414" width="15.349999999999994" height="1.5" fill="#e01010"/>
<rect x="253.75" y="323" width="37.5" height="265.75" fill="#ffffff"/>
<rect x="253.75" y="344.5" width="37.5" height="244.25" fill="#d4b890"/>
<rect x="258" y="344.5" width="10.75" height="83.0" fill="#b8955e"/>
<rect x="276.25" y="344.5" width="11.25" height="81.75" fill="#b8955e"/>
<rect x="253.75" y="358.75" width="37.5" height="2.5" fill="#a87838"/>
<line x1="213" y1="331" x2="217.5" y2="331" stroke="#222" stroke-width="0.8"/>
<line x1="239.25" y1="331" x2="243.75" y2="331" stroke="#222" stroke-width="0.8"/>
<text x="228.25" y="333" fill="#222" font-size="5.5" text-anchor="middle" letter-spacing="0.19">-0.8</text>
<line x1="253.75" y1="331" x2="258.25" y2="331" stroke="#222" stroke-width="0.8"/>
<line x1="286.75" y1="331" x2="291.25" y2="331" stroke="#222" stroke-width="0.8"/>
<text x="272.5" y="333" fill="#222" font-size="5.5" text-anchor="middle" letter-spacing="0.19">-0.8</text>
<line x1="213" y1="338.5" x2="217.5" y2="338.5" stroke="#222" stroke-width="0.8"/>
<line x1="239.25" y1="338.5" x2="243.75" y2="338.5" stroke="#222" stroke-width="0.8"/>
<text x="228.25" y="340.5" fill="#222" font-size="5.5" text-anchor="middle" letter-spacing="0.19">-1.5</text>
<line x1="253.75" y1="338.5" x2="258.25" y2="338.5" stroke="#222" stroke-width="0.8"/>
<line x1="286.75" y1="338.5" x2="291.25" y2="338.5" stroke="#222" stroke-width="0.8"/>
<text x="272.5" y="340.5" fill="#222" font-size="5.5" text-anchor="middle" letter-spacing="0.19">-1.5</text>
<line x1="213" y1="349.75" x2="217.5" y2="349.75" stroke="#222" stroke-width="0.8"/>
<line x1="239.25" y1="349.75" x2="243.75" y2="349.75" stroke="#222" stroke-width="0.8"/>
<text x="228.25" y="351.75" fill="#222" font-size="5.5" text-anchor="middle" letter-spacing="0.19">-2.5</text>
<line x1="253.75" y1="349.75" x2="258.25" y2="349.75" stroke="#222" stroke-width="0.8"/>
<line x1="286.75" y1="349.75" x2="291.25" y2="349.75" stroke="#222" stroke-width="0.8"/>
<text x="272.5" y="351.75" fill="#222" font-size="5.5" text-anchor="middle" letter-spacing="0.19">-2.5</text>
<line x1="213" y1="360.5" x2="217.5" y2="360.5" stroke="#222" stroke-width="0.8"/>
<line x1="239.25" y1="360.5" x2="243.75" y2="360.5" stroke="#222" stroke-width="0.8"/>
<text x="228.25" y="362.5" fill="#222" font-size="5.5" text-anchor="middle" letter-spacing="0.19">-3.5</text>
<line x1="253.75" y1="360.5" x2="258.25" y2="360.5" stroke="#222" stroke-width="0.8"/>
<line x1="286.75" y1="360.5" x2="291.25" y2="360.5" stroke="#222" stroke-width="0.8"/>
<text x="272.5" y="362.5" fill="#222" font-size="5.5" text-anchor="middle" letter-spacing="0.19">-3.5</text>
<line x1="213" y1="377.25" x2="217.5" y2="377.25" stroke="#222" stroke-width="0.8"/>
<line x1="239.25" y1="377.25" x2="243.75" y2="377.25" stroke="#222" stroke-width="0.8"/>
<text x="228.25" y="379.25" fill="#222" font-size="5.5" text-anchor="middle" letter-spacing="0.19">-5</text>
<line x1="253.75" y1="377.25" x2="258.25" y2="377.25" stroke="#222" stroke-width="0.8"/>
<line x1="286.75" y1="377.25" x2="291.25" y2="377.25" stroke="#222" stroke-width="0.8"/>
<text x="272.5" y="379.25" fill="#222" font-size="5.5" text-anchor="middle" letter-spacing="0.19">-5</text>
<line x1="213" y1="388.5" x2="217.5" y2="388.5" stroke="#222" stroke-width="0.8"/>
<line x1="239.25" y1="388.5" x2="243.75" y2="388.5" stroke="#222" stroke-width="0.8"/>
<text x="228.25" y="390.5" fill="#222" font-size="5.5" text-anchor="middle" letter-spacing="0.19">-6</text>
<line x1="253.75" y1="388.5" x2="258.25" y2="388.5" stroke="#222" stroke-width="0.8"/>
<line x1="286.75" y1="388.5" x2="291.25" y2="388.5" stroke="#222" stroke-width="0.8"/>
<text x="272.5" y="390.5" fill="#222" font-size="5.5" text-anchor="middle" letter-spacing="0.19">-6</text>
<line x1="213" y1="399.25" x2="217.5" y2="399.25" stroke="#222" stroke-width="0.8"/>
<line x1="239.25" y1="399.25" x2="243.75" y2="399.25" stroke="#222" stroke-width="0.8"/>
<text x="228.25" y="401.25" fill="#222" font-size="5.5" text-anchor="middle" letter-spacing="0.19">-7</text>
<line x1="253.75" y1="399.25" x2="258.25" y2="399.25" stroke="#222" stroke-width="0.8"/>
<line x1="286.75" y1="399.25" x2="291.25" y2="399.25" stroke="#222" stroke-width="0.8"/>
<text x="272.5" y="401.25" fill="#222" font-size="5.5" text-anchor="middle" letter-spacing="0.19">-7</text>
<line x1="213" y1="411" x2="217.5" y2="411" stroke="#222" stroke-width="0.8"/>
<line x1="239.25" y1="411" x2="243.75" y2="411" stroke="#222" stroke-width="0.8"/>
<text x="228.25" y="413" fill="#222" font-size="5.5" text-anchor="middle" letter-spacing="0.19">-8</text>
<line x1="253.75" y1="411" x2="258.25" y2="411" stroke="#222" stroke-width="0.8"/>
<line x1="286.75" y1="411" x2="291.25" y2="411" stroke="#222" stroke-width="0.8"/>
<text x="272.5" y="413" fill="#222" font-size="5.5" text-anchor="middle" letter-spacing="0.19">-8</text>
<line x1="213" y1="421.75" x2="217.5" y2="421.75" stroke="#222" stroke-width="0.8"/>
<line x1="239.25" y1="421.75" x2="243.75" y2="421.75" stroke="#222" stroke-width="0.8"/>
<text x="228.25" y="423.75" fill="#222" font-size="5.5" text-anchor="middle" letter-spacing="0.19">-9</text>
<line x1="253.75" y1="421.75" x2="258.25" y2="421.75" stroke="#222" stroke-width="0.8"/>
<line x1="286.75" y1="421.75" x2="291.25" y2="421.75" stroke="#222" stroke-width="0.8"/>
<text x="272.5" y="423.75" fill="#222" font-size="5.5" text-anchor="middle" letter-spacing="0.19">-9</text>
<line x1="213" y1="433" x2="217.5" y2="433" stroke="#222" stroke-width="0.8"/>
<line x1="239.25" y1="433" x2="243.75" y2="433" stroke="#222" stroke-width="0.8"/>
<text x="228.25" y="435" fill="#222" font-size="5.5" text-anchor="middle" letter-spacing="0.19">-10</text>
<line x1="253.75" y1="433" x2="258.25" y2="433" stroke="#222" stroke-width="0.8"/>
<line x1="286.75" y1="433" x2="291.25" y2="433" stroke="#222" stroke-width="0.8"/>
<text x="272.5" y="435" fill="#222" font-size="5.5" text-anchor="middle" letter-spacing="0.19">-10</text>
<line x1="213" y1="455.5" x2="217.5" y2="455.5" stroke="#222" stroke-width="0.8"/>
<line x1="239.25" y1="455.5" x2="243.75" y2="455.5" stroke="#222" stroke-width="0.8"/>
<text x="228.25" y="457.5" fill="#222" font-size="5.5" text-anchor="middle" letter-spacing="0.19">-12</text>
<line x1="253.75" y1="455.5" x2="258.25" y2="455.5" stroke="#222" stroke-width="0.8"/>
<line x1="286.75" y1="455.5" x2="291.25" y2="455.5" stroke="#222" stroke-width="0.8"/>
<text x="272.5" y="457.5" fill="#222" font-size="5.5" text-anchor="middle" letter-spacing="0.19">-12</text>
<line x1="213" y1="477.5" x2="217.5" y2="477.5" stroke="#222" stroke-width="0.8"/>
<line x1="239.25" y1="477.5" x2="243.75" y2="477.5" stroke="#222" stroke-width="0.8"/>
<text x="228.25" y="479.5" fill="#222" font-size="5.5" text-anchor="middle" letter-spacing="0.19">-14</text>
<line x1="253.75" y1="477.5" x2="258.25" y2="477.5" stroke="#222" stroke-width="0.8"/>
<line x1="286.75" y1="477.5" x2="291.25" y2="477.5" stroke="#222" stroke-width="0.8"/>
<text x="272.5" y="479.5" fill="#222" font-size="5.5" text-anchor="middle" letter-spacing="0.19">-14</text>
<line x1="213" y1="499.75" x2="217.5" y2="499.75" stroke="#222" stroke-width="0.8"/>
<line x1="239.25" y1="499.75" x2="243.75" y2="499.75" stroke="#222" stroke-width="0.8"/>
<text x="228.25" y="501.75" fill="#222" font-size="5.5" text-anchor="middle" letter-spacing="0.19">-16</text>
<line x1="253.75" y1="499.75" x2="258.25" y2="499.75" stroke="#222" stroke-width="0.8"/>
<line x1="286.75" y1="499.75" x2="291.25" y2="499.75" stroke="#222" stroke-width="0.8"/>
<text x="272.5" y="501.75" fill="#222" font-size="5.5" text-anchor="middle" letter-spacing="0.19">-16</text>
<line x1="213" y1="521.75" x2="217.5" y2="521.75" stroke="#222" stroke-width="0.8"/>
<line x1="239.25" y1="521.75" x2="243.75" y2="521.75" stroke="#222" stroke-width="0.8"/>
<text x="228.25" y="523.75" fill="#222" font-size="5.5" text-anchor="middle" letter-spacing="0.19">-18</text>
<line x1="253.75" y1="521.75" x2="258.25" y2="521.75" stroke="#222" stroke-width="0.8"/>
<line x1="286.75" y1="521.75" x2="291.25" y2="521.75" stroke="#222" stroke-width="0.8"/>
<text x="272.5" y="523.75" fill="#222" font-size="5.5" text-anchor="middle" letter-spacing="0.19">-18</text>
<line x1="213" y1="543.75" x2="217.5" y2="543.75" stroke="#222" stroke-width="0.8"/>
<line x1="239.25" y1="543.75" x2="243.75" y2="543.75" stroke="#222" stroke-width="0.8"/>
<text x="228.25" y="545.75" fill="#222" font-size="5.5" text-anchor="middle" letter-spacing="0.19">-20</text>
<line x1="253.75" y1="543.75" x2="258.25" y2="543.75" stroke="#222" stroke-width="0.8"/>
<line x1="286.75" y1="543.75" x2="291.25" y2="543.75" stroke="#222" stroke-width="0.8"/>
<text x="272.5" y="545.75" fill="#222" font-size="5.5" text-anchor="middle" letter-spacing="0.19">-20</text>
<text x="220.5" y="598" fill="#ddd" font-size="7" text-anchor="middle" letter-spacing="0.25">L</text>
<text x="236.25" y="598" fill="#ddd" font-size="7" text-anchor="middle" letter-spacing="0.25">R</text>
<text x="263.75" y="598" fill="#ddd" font-size="7" text-anchor="middle" letter-spacing="0.25">L</text>
<text x="282.5" y="598" fill="#ddd" font-size="7" text-anchor="middle" letter-spacing="0.25">R</text>
</g>
<g clip-path="url(#cF)">
<rect x="300" y="299" width="300" height="301" fill="#0c0c0c"/>
<rect x="300" y="302.5" width="3" height="10.0" fill="#c08a3a"/>
<text x="563" y="311.5" fill="#c08848" font-size="15">Pressure</text>
<rect x="300" y="316" width="64.5" height="196.5" fill="url(#bgF)"/>
<text x="333.75" y="325.75" fill="#f0f0f0" font-size="8.5" text-anchor="middle" letter-spacing="0.3">Ratio</text>
<path d="M324.53,356.20 A15.2,15.2 0 0 1 325.65,330.59" fill="none" stroke="#e8c030" stroke-width="2.34" stroke-linecap="butt"/>
<circle cx="333.25" cy="344.79" r="13.52" fill="#000" opacity="0.6"/>
<circle cx="333.25" cy="343.75" r="13" fill="url(#kb)"/>
<circle cx="333.25" cy="343.75" r="12.48" fill="none" stroke="#d8d8d8" stroke-width="1.04"/>
<circle cx="333.25" cy="343.75" r="10.92" fill="none" stroke="#5a5a5a" stroke-width="0.45500000000000007" opacity="0.8"/>
<line x1="328.83" y1="336.09" x2="326.88" y2="332.72" stroke="#d07818" stroke-width="2.86" stroke-linecap="round"/>
<text x="332.5" y="365.5" fill="#dce6ff" font-size="7" text-anchor="middle" letter-spacing="0.25">8.50</text>
<text x="300" y="379.5" fill="#e4e4e4" font-size="7" letter-spacing="0.25">k</text>
<circle cx="297" cy="390.6" r="7.800000000000001" fill="#000" opacity="0.6"/>
<circle cx="297" cy="390" r="7.5" fill="url(#kb)"/>
<circle cx="297" cy="390" r="7.2" fill="none" stroke="#555" stroke-width="0.6"/>
<circle cx="297" cy="390" r="6.3" fill="none" stroke="#5a5a5a" stroke-width="0.4" opacity="0.8"/>
<line x1="291.9" y1="390" x2="289.65" y2="390" stroke="#d07818" stroke-width="1.65" stroke-linecap="round"/>
<text x="301" y="402.5" fill="#dce6ff" font-size="6" text-anchor="end" letter-spacing="0.21">ms</text>
<text x="322.5" y="379.5" fill="#e4e4e4" font-size="7" text-anchor="middle" letter-spacing="0.25">Release</text>
<circle cx="322.5" cy="390.6" r="7.800000000000001" fill="#000" opacity="0.6"/>
<circle cx="322.5" cy="390" r="7.5" fill="url(#kb)"/>
<circle cx="322.5" cy="390" r="7.2" fill="none" stroke="#555" stroke-width="0.6"/>
<circle cx="322.5" cy="390" r="6.3" fill="none" stroke="#5a5a5a" stroke-width="0.4" opacity="0.8"/>
<line x1="317.71" y1="391.74" x2="315.59" y2="392.51" stroke="#d07818" stroke-width="1.65" stroke-linecap="round"/>
<text x="322.5" y="402.5" fill="#dce6ff" font-size="6" text-anchor="middle" letter-spacing="0.21">100 ms</text>
<text x="352.5" y="379.5" fill="#e4e4e4" font-size="7" text-anchor="middle" letter-spacing="0.25">Knee</text>
<circle cx="352" cy="390.6" r="7.800000000000001" fill="#000" opacity="0.6"/>
<circle cx="352" cy="390" r="7.5" fill="url(#kb)"/>
<circle cx="352" cy="390" r="7.2" fill="none" stroke="#555" stroke-width="0.6"/>
<circle cx="352" cy="390" r="6.3" fill="none" stroke="#5a5a5a" stroke-width="0.4" opacity="0.8"/>
<line x1="348.72" y1="386.09" x2="347.28" y2="384.37" stroke="#d07818" stroke-width="1.65" stroke-linecap="round"/>
<text x="352.5" y="402.5" fill="#dce6ff" font-size="6" text-anchor="middle" letter-spacing="0.21">4.5 dB</text>
<text x="299" y="413.75" fill="#e4e4e4" font-size="7" letter-spacing="0.25">ut Gain</text>
<circle cx="307.5" cy="424.35" r="7.800000000000001" fill="#000" opacity="0.6"/>
<circle cx="307.5" cy="423.75" r="7.5" fill="url(#kb)"/>
<circle cx="307.5" cy="423.75" r="7.2" fill="none" stroke="#555" stroke-width="0.6"/>
<circle cx="307.5" cy="423.75" r="6.3" fill="none" stroke="#5a5a5a" stroke-width="0.4" opacity="0.8"/>
<line x1="307.5" y1="418.65" x2="307.5" y2="416.4" stroke="#d07818" stroke-width="1.65" stroke-linecap="round"/>
<text x="299" y="437" fill="#dce6ff" font-size="6" letter-spacing="0.21">0.00 dB</text>
<text x="338.75" y="413.75" fill="#e4e4e4" font-size="7" text-anchor="middle" letter-spacing="0.25">Out Clip</text>
<circle cx="337.5" cy="422.5" r="4.3" fill="#111"/>
<circle cx="337.5" cy="422.5" r="3.5" fill="#e08020"/>
<circle cx="336.625" cy="421.625" r="1.575" fill="#ffd080" opacity="0.6"/>
<text x="299" y="452.5" fill="#f0f0f0" font-size="10" letter-spacing="0.35">mp-Mix</text>
<text x="311.25" y="459.5" fill="#505050" font-size="6" text-anchor="middle" letter-spacing="0.21">q+Comp</text>
<circle cx="308.75" cy="479.75" r="13.0" fill="#000" opacity="0.6"/>
<circle cx="308.75" cy="478.75" r="12.5" fill="url(#kb)"/>
<circle cx="308.75" cy="478.75" r="12.0" fill="none" stroke="#d8d8d8" stroke-width="1.0"/>
<circle cx="308.75" cy="478.75" r="10.5" fill="none" stroke="#5a5a5a" stroke-width="0.43750000000000006" opacity="0.8"/>
<line x1="308.75" y1="470.25" x2="308.75" y2="466.5" stroke="#d07818" stroke-width="2.75" stroke-linecap="round"/>
<text x="333.25" y="490" fill="#505050" font-size="7" text-anchor="middle" letter-spacing="0.25">Comp</text>
<text x="299" y="500.5" fill="#dce6ff" font-size="7" letter-spacing="0.25">60.0 %</text>
<text x="350.75" y="453" fill="#e4e4e4" font-size="7" text-anchor="middle" letter-spacing="0.25">Mix</text>
<circle cx="350.75" cy="465.6" r="7.800000000000001" fill="#000" opacity="0.6"/>
<circle cx="350.75" cy="465" r="7.5" fill="url(#kb)"/>
<circle cx="350.75" cy="465" r="7.2" fill="none" stroke="#555" stroke-width="0.6"/>
<circle cx="350.75" cy="465" r="6.3" fill="none" stroke="#5a5a5a" stroke-width="0.4" opacity="0.8"/>
<line x1="353.3" y1="469.42" x2="354.43" y2="471.37" stroke="#d07818" stroke-width="1.65" stroke-linecap="round"/>
<text x="350" y="477" fill="#dce6ff" font-size="6" text-anchor="middle" letter-spacing="0.21">100.0 %</text>
<rect x="300" y="512.5" width="64.5" height="78.75" fill="#121212"/>
<text x="318.75" y="517" fill="#e4e4e4" font-size="7" text-anchor="middle" letter-spacing="0.25">Mode</text>
<rect x="312.5" y="520" width="12.5" height="8.75" fill="#2038a8"/>
<text x="318.75" y="527" fill="#a8c0ff" font-size="6" text-anchor="middle" font-weight="bold" letter-spacing="0.21">Big</text>
<rect x="352.5" y="515" width="10.0" height="7.5" fill="#1a1c2a"/>
<text x="357.5" y="521" fill="#ddd" font-size="6" text-anchor="middle" letter-spacing="0.21">1</text>
<text x="300" y="530" fill="#ddd" font-size="6" letter-spacing="0.21">1</text>
<text x="318.75" y="542" fill="#e4e4e4" font-size="7" text-anchor="middle" letter-spacing="0.25">Active</text>
<circle cx="318.75" cy="548.75" r="4.8" fill="#111"/>
<circle cx="318.75" cy="548.75" r="4" fill="url(#ledd)" stroke="#7a7a7a" stroke-width="0.6"/>
<text x="348" y="542" fill="#e4e4e4" font-size="7" text-anchor="middle" letter-spacing="0.25">Audition</text>
<circle cx="348" cy="548.75" r="4.8" fill="#111"/>
<circle cx="348" cy="548.75" r="4" fill="url(#ledd)" stroke="#7a7a7a" stroke-width="0.6"/>
<text x="300" y="556" fill="#aab" font-size="6" letter-spacing="0.21">r</text>
<text x="327.5" y="572.5" fill="#e4e4e4" font-size="7" text-anchor="middle" letter-spacing="0.25">Channel:</text>
<rect x="340" y="566" width="22.5" height="9" fill="#1e2030"/>
<text x="351.25" y="573" fill="#e8e8f0" font-size="7" text-anchor="middle" letter-spacing="0.25">Stereo</text>
<rect x="300" y="578.75" width="18.75" height="8.75" fill="#1e2030"/>
<text x="300" y="585.5" fill="#e8e8f0" font-size="7" letter-spacing="0.25">ell</text>
<text x="333.75" y="585" fill="#e4e4e4" font-size="7" text-anchor="middle" letter-spacing="0.25">Slope:</text>
<rect x="342.5" y="578.75" width="20.0" height="8.75" fill="#1e2030"/>
<text x="352.5" y="585.5" fill="#e8e8f0" font-size="7" text-anchor="middle" letter-spacing="0.25">12dB</text>
<rect x="364.5" y="316" width="2.0" height="240" fill="#080808"/>
<rect x="366.5" y="316" width="226.5" height="240" fill="#1a1a1a"/>
<text x="376.75" y="325" fill="#e4e4e4" font-size="6" text-anchor="middle" letter-spacing="0.21">Display</text>
<rect x="368.75" y="328.75" width="13.75" height="7.5" fill="#1a2a48"/>
<text x="375.6" y="334.5" fill="#a0c0f0" font-size="5.5" text-anchor="middle" letter-spacing="0.19">Lin</text>
<text x="375.5" y="368" fill="#e4e4e4" font-size="6" text-anchor="middle" letter-spacing="0.21">Type</text>
<rect x="368.75" y="371.25" width="13.75" height="7.5" fill="#1a3a70"/>
<text x="375.6" y="377" fill="#a0c0f0" font-size="5.5" text-anchor="middle" letter-spacing="0.19">Off</text>
<text x="375.5" y="408.25" fill="#e4e4e4" font-size="6" text-anchor="middle" letter-spacing="0.21">View</text>
<rect x="368.75" y="410.75" width="13.75" height="8.75" fill="#7a2020"/>
<text x="375.6" y="417" fill="#ff9090" font-size="5.5" text-anchor="middle" letter-spacing="0.19">Red</text>
<text x="375.5" y="518.75" fill="#e4e4e4" font-size="6.5" text-anchor="middle" letter-spacing="0.23">Scale</text>
<circle cx="376.25" cy="528.6" r="7.800000000000001" fill="#000" opacity="0.6"/>
<circle cx="376.25" cy="528" r="7.5" fill="url(#kb)"/>
<circle cx="376.25" cy="528" r="7.2" fill="none" stroke="#555" stroke-width="0.6"/>
<circle cx="376.25" cy="528" r="6.3" fill="none" stroke="#5a5a5a" stroke-width="0.4" opacity="0.8"/>
<line x1="373.7" y1="523.58" x2="372.57" y2="521.63" stroke="#d07818" stroke-width="1.65" stroke-linecap="round"/>
<text x="375.5" y="541.25" fill="#dce6ff" font-size="6" text-anchor="middle" letter-spacing="0.21">-24 dB</text>
<rect x="386.1" y="326.8" width="203.10000000000002" height="213.7" fill="#787878"/>
<rect x="388.6" y="329.3" width="197.10000000000002" height="208.09999999999997" fill="#ffffff"/>
<polygon points="388.6,329.3 388.6,360.3 390.2,379.2 391.2,374.2 392.2,368.6 393.3,362.6 394.3,369.5 395.3,373.7 396.3,376.3 397.3,380.3 398.4,383.1 399.4,386.0 400.4,380.4 401.4,373.9 402.4,363.9 403.5,362.7 404.5,355.2 405.5,350.4 406.5,349.2 407.6,353.5 408.6,351.9 409.6,361.2 410.6,368.6 411.6,380.1 412.7,395.8 413.7,392.5 414.7,386.6 415.7,386.6 416.7,382.4 417.8,380.0 418.8,381.9 419.8,389.7 420.8,404.9 421.8,408.6 422.9,415.3 423.9,405.0 424.9,396.6 425.9,384.9 426.9,374.0 428.0,367.8 429.0,366.8 430.0,371.5 431.0,370.7 432.0,369.3 433.1,363.9 434.1,369.3 435.1,375.5 436.1,368.5 437.1,363.1 438.2,354.0 439.2,354.3 440.2,354.7 441.2,350.3 442.2,368.1 443.3,382.2 444.3,373.7 445.3,367.4 446.3,382.8 447.3,397.4 448.4,415.4 449.4,399.1 450.4,384.1 451.4,379.3 452.4,377.3 453.5,380.7 454.5,380.3 455.5,382.3 456.5,379.2 457.6,376.8 458.6,370.8 459.6,367.2 460.6,361.5 461.6,356.4 462.7,371.6 463.7,388.9 464.7,382.6 465.7,378.3 466.7,371.4 467.8,368.5 468.8,363.0 469.8,358.0 470.8,355.0 471.8,356.0 472.9,353.1 473.9,432.8 474.9,426.1 475.9,417.9 476.9,413.9 478.0,409.1 479.0,408.4 480.0,413.3 481.0,409.1 482.0,403.2 483.1,415.9 484.1,425.2 485.1,415.4 486.1,405.6 487.1,399.5 488.2,386.8 489.2,387.7 490.2,392.7 491.2,393.9 492.2,393.8 493.3,396.9 494.3,394.4 495.3,390.0 496.3,384.7 497.3,379.9 498.4,376.0 499.4,372.8 500.4,371.3 501.4,380.2 502.4,386.8 503.5,391.7 504.5,396.5 505.5,386.6 506.5,381.2 507.6,370.2 508.6,367.8 509.6,361.0 510.6,358.5 511.6,360.5 512.7,359.3 513.7,362.4 514.7,363.8 515.7,365.7 516.7,376.6 517.8,388.1 518.8,386.8 519.8,389.3 520.8,389.4 521.8,389.1 522.9,382.7 523.9,383.3 524.9,388.0 525.9,386.8 526.9,393.0 528.0,398.7 529.0,405.2 530.0,409.3 531.0,401.6 532.0,396.2 533.1,392.8 534.1,394.5 535.1,392.8 536.1,394.6 537.1,401.8 538.2,408.6 539.2,395.7 540.2,379.2 541.2,367.8 542.2,364.2 543.3,359.1 544.3,358.6 545.3,355.0 546.3,353.2 547.3,349.3 548.4,346.5 549.4,344.1 550.4,343.0 551.4,342.6 552.4,339.7 553.5,335.2 554.5,336.4 555.5,333.4 556.5,332.8 557.6,332.1 558.6,331.5 559.6,330.9 560.6,330.9 561.6,330.9 562.7,330.9 563.7,330.9 564.7,330.9 565.7,330.9 566.7,330.9 567.8,330.9 568.8,330.9 569.8,330.9 570.8,330.9 571.8,330.9 572.9,330.9 573.9,330.9 574.9,330.9 575.9,330.9 576.9,330.9 578.0,330.9 579.0,330.9 580.0,330.9 581.0,347.4 582.0,365.8 582.4,422.5 584.1,430.7 585.7,437.4 585.7,329.3" fill="#fa8a8a"/>
<polygon points="388.6,537.4 388.6,423.6 389.0,427.8 389.5,429.1 389.9,428.8 390.4,422.7 390.8,415.4 391.3,427.2 391.7,435.4 392.2,427.0 392.6,424.8 393.1,427.1 393.5,405.6 394.0,440.6 394.4,427.2 394.9,425.9 395.3,424.4 395.8,420.9 396.2,417.2 396.7,426.5 397.1,434.5 397.6,430.9 398.0,426.9 398.4,429.0 398.9,428.7 399.3,424.9 399.8,426.0 400.2,445.9 400.7,417.3 401.1,424.4 401.6,419.8 402.0,423.0 402.5,436.9 402.9,425.0 403.4,411.3 403.8,423.8 404.3,428.2 404.7,426.8 405.2,455.8 405.6,431.2 406.1,424.7 406.5,428.7 407.0,479.6 407.4,415.5 407.9,426.2 408.3,417.6 408.8,426.3 409.2,425.5 409.7,428.2 410.1,429.5 410.6,421.3 411.0,418.5 411.5,429.8 411.9,429.4 412.4,413.3 412.8,428.4 413.3,428.3 413.7,434.4 414.2,426.7 414.6,430.5 415.1,421.8 415.5,425.7 416.0,445.8 416.4,445.0 416.9,431.6 417.3,425.7 417.8,423.5 418.2,437.3 418.7,440.2 419.1,432.2 419.6,429.0 420.0,427.3 420.4,447.2 420.9,430.3 421.3,425.2 421.8,425.2 422.2,423.1 422.7,432.9 423.1,426.1 423.6,441.5 424.0,431.8 424.5,413.3 424.9,439.7 425.4,423.6 425.8,421.9 426.3,449.4 426.7,426.5 427.2,408.3 427.6,432.5 428.1,438.7 428.5,432.3 429.0,424.5 429.4,421.6 429.9,435.0 430.3,426.7 430.8,435.2 431.2,419.5 431.7,427.7 432.1,426.1 432.6,433.7 433.0,426.0 433.5,429.0 433.9,433.8 434.4,426.4 434.8,425.8 435.3,431.4 435.7,435.4 436.2,431.8 436.6,433.4 437.1,438.9 437.5,418.4 438.0,438.1 438.4,430.0 438.9,440.6 439.3,430.8 439.8,434.0 440.2,479.3 440.7,446.4 441.1,406.9 441.6,406.3 442.0,432.1 442.4,431.7 442.9,429.1 443.3,438.1 443.8,422.9 444.2,430.0 444.7,429.9 445.1,434.9 445.6,458.7 446.0,438.2 446.5,426.5 446.9,430.0 447.4,427.9 447.8,432.6 448.3,437.1 448.7,426.5 449.2,434.2 449.6,427.4 450.1,411.2 450.5,428.3 451.0,423.2 451.4,418.5 451.9,427.1 452.3,425.3 452.8,438.7 453.2,426.6 453.7,455.2 454.1,432.5 454.6,421.3 455.0,428.5 455.5,424.1 455.9,410.8 456.4,440.8 456.8,440.6 457.3,425.5 457.7,440.8 458.2,434.6 458.6,438.8 459.1,422.8 459.5,414.2 460.0,421.4 460.4,432.7 460.9,433.3 461.3,427.0 461.8,454.9 462.2,422.5 462.7,432.8 463.1,438.1 463.6,437.7 464.0,448.2 464.4,418.7 464.9,441.9 465.3,431.7 465.8,436.5 466.2,429.0 466.7,423.2 467.1,417.9 467.6,464.6 468.0,436.0 468.5,435.5 468.9,465.3 469.4,450.0 469.8,475.8 470.3,431.2 470.7,440.4 471.2,426.5 471.6,462.8 472.1,427.7 472.5,422.1 473.0,437.0 473.4,433.7 473.9,431.1 474.3,435.9 474.8,445.1 475.2,436.7 475.7,430.2 476.1,437.1 476.6,431.5 477.0,435.4 477.5,434.1 477.9,428.6 478.4,428.3 478.8,433.6 479.3,431.6 479.7,429.5 480.2,430.6 480.6,431.9 481.1,429.5 481.5,426.9 482.0,421.1 482.4,465.2 482.9,430.9 483.3,431.3 483.8,426.1 484.2,428.1 484.7,428.7 485.1,424.7 485.6,440.2 486.0,426.7 486.4,429.7 486.9,438.6 487.3,414.8 487.8,432.3 488.2,426.8 488.7,439.2 489.1,430.3 489.6,441.0 490.0,457.7 490.5,426.7 490.9,431.9 491.4,425.9 491.8,438.4 492.3,428.4 492.7,427.7 493.2,480.5 493.6,432.7 494.1,418.0 494.5,421.4 495.0,413.8 495.4,429.8 495.9,428.3 496.3,436.1 496.8,435.7 497.2,427.5 497.7,450.1 498.1,422.2 498.6,427.0 499.0,425.0 499.5,435.3 499.9,429.7 500.4,433.8 500.8,435.7 501.3,431.0 501.7,429.6 502.2,430.3 502.6,473.7 503.1,430.3 503.5,425.2 504.0,417.7 504.4,419.8 504.9,427.8 505.3,436.7 505.8,435.8 506.2,429.8 506.7,405.2 507.1,470.8 507.6,424.9 508.0,448.3 508.4,434.0 508.9,433.5 509.3,436.0 509.8,416.2 510.2,446.0 510.7,428.2 511.1,433.0 511.6,438.3 512.0,430.8 512.5,431.2 512.9,433.8 513.4,415.4 513.8,428.8 514.3,431.1 514.7,433.2 515.2,431.2 515.6,422.3 516.1,445.5 516.5,435.0 517.0,426.7 517.4,437.9 517.9,431.3 518.3,432.6 518.8,432.9 519.2,431.5 519.7,435.7 520.1,434.6 520.6,441.1 521.0,426.8 521.5,434.3 521.9,414.7 522.4,414.2 522.8,434.1 523.3,429.2 523.7,432.7 524.2,438.6 524.6,439.6 525.1,429.0 525.5,420.2 526.0,437.1 526.4,477.8 526.9,432.5 527.3,433.7 527.8,434.1 528.2,436.9 528.7,455.7 529.1,431.9 529.6,447.2 530.0,431.6 530.4,421.7 530.9,430.8 531.3,431.1 531.8,438.4 532.2,412.8 532.7,438.1 533.1,437.2 533.6,431.0 534.0,427.9 534.5,427.9 534.9,419.5 535.4,433.6 535.8,473.8 536.3,432.3 536.7,427.0 537.2,428.5 537.6,430.3 538.1,439.2 538.5,423.5 539.0,434.0 539.4,433.5 539.9,436.8 540.3,437.5 540.8,437.5 541.2,427.6 541.7,437.0 542.1,434.8 542.6,430.7 543.0,465.2 543.5,435.9 543.9,431.9 544.4,436.4 544.8,436.0 545.3,430.3 545.7,441.9 546.2,438.8 546.6,423.9 547.1,428.0 547.5,424.5 548.0,419.6 548.4,444.9 548.9,437.7 549.3,429.4 549.8,422.1 550.2,443.8 550.7,436.7 551.1,436.4 551.6,430.2 552.0,435.2 552.4,433.3 552.9,434.6 553.3,432.5 553.8,425.4 554.2,434.7 554.7,432.9 555.1,426.3 555.6,420.8 556.0,443.8 556.5,436.3 556.9,432.2 557.4,421.0 557.8,444.9 558.3,440.4 558.7,450.4 559.2,446.2 559.6,443.7 560.1,449.9 560.5,463.4 561.0,460.9 561.4,451.2 561.9,476.0 562.3,455.6 562.8,446.0 563.2,438.9 563.7,482.8 564.1,445.6 564.6,463.0 565.0,470.9 565.5,464.8 565.9,456.5 566.4,443.5 566.8,451.7 567.3,449.5 567.7,474.6 568.2,454.8 568.6,459.9 569.1,461.5 569.5,458.7 570.0,454.3 570.4,457.2 570.9,459.5 571.3,452.5 571.8,470.2 572.2,461.8 572.7,458.2 573.1,450.6 573.6,454.2 574.0,462.7 574.4,465.4 574.9,443.6 575.3,459.7 575.8,483.8 576.2,467.8 576.7,470.0 577.1,475.1 577.6,462.6 578.0,453.6 578.5,450.7 578.9,456.4 579.4,446.9 579.8,465.0 580.3,487.6 580.7,459.3 581.2,437.4 581.6,452.7 582.1,480.9 582.5,448.4 583.0,456.6 583.4,459.6 583.9,439.5 584.3,458.7 584.8,461.3 585.2,460.5 585.7,459.3 585.7,537.4" fill="#d2b68e"/>
<polyline points="388.6,423.6 389.0,427.8 389.5,429.1 389.9,428.8 390.4,422.7 390.8,415.4 391.3,427.2 391.7,435.4 392.2,427.0 392.6,424.8 393.1,427.1 393.5,405.6 394.0,440.6 394.4,427.2 394.9,425.9 395.3,424.4 395.8,420.9 396.2,417.2 396.7,426.5 397.1,434.5 397.6,430.9 398.0,426.9 398.4,429.0 398.9,428.7 399.3,424.9 399.8,426.0 400.2,445.9 400.7,417.3 401.1,424.4 401.6,419.8 402.0,423.0 402.5,436.9 402.9,425.0 403.4,411.3 403.8,423.8 404.3,428.2 404.7,426.8 405.2,455.8 405.6,431.2 406.1,424.7 406.5,428.7 407.0,479.6 407.4,415.5 407.9,426.2 408.3,417.6 408.8,426.3 409.2,425.5 409.7,428.2 410.1,429.5 410.6,421.3 411.0,418.5 411.5,429.8 411.9,429.4 412.4,413.3 412.8,428.4 413.3,428.3 413.7,434.4 414.2,426.7 414.6,430.5 415.1,421.8 415.5,425.7 416.0,445.8 416.4,445.0 416.9,431.6 417.3,425.7 417.8,423.5 418.2,437.3 418.7,440.2 419.1,432.2 419.6,429.0 420.0,427.3 420.4,447.2 420.9,430.3 421.3,425.2 421.8,425.2 422.2,423.1 422.7,432.9 423.1,426.1 423.6,441.5 424.0,431.8 424.5,413.3 424.9,439.7 425.4,423.6 425.8,421.9 426.3,449.4 426.7,426.5 427.2,408.3 427.6,432.5 428.1,438.7 428.5,432.3 429.0,424.5 429.4,421.6 429.9,435.0 430.3,426.7 430.8,435.2 431.2,419.5 431.7,427.7 432.1,426.1 432.6,433.7 433.0,426.0 433.5,429.0 433.9,433.8 434.4,426.4 434.8,425.8 435.3,431.4 435.7,435.4 436.2,431.8 436.6,433.4 437.1,438.9 437.5,418.4 438.0,438.1 438.4,430.0 438.9,440.6 439.3,430.8 439.8,434.0 440.2,479.3 440.7,446.4 441.1,406.9 441.6,406.3 442.0,432.1 442.4,431.7 442.9,429.1 443.3,438.1 443.8,422.9 444.2,430.0 444.7,429.9 445.1,434.9 445.6,458.7 446.0,438.2 446.5,426.5 446.9,430.0 447.4,427.9 447.8,432.6 448.3,437.1 448.7,426.5 449.2,434.2 449.6,427.4 450.1,411.2 450.5,428.3 451.0,423.2 451.4,418.5 451.9,427.1 452.3,425.3 452.8,438.7 453.2,426.6 453.7,455.2 454.1,432.5 454.6,421.3 455.0,428.5 455.5,424.1 455.9,410.8 456.4,440.8 456.8,440.6 457.3,425.5 457.7,440.8 458.2,434.6 458.6,438.8 459.1,422.8 459.5,414.2 460.0,421.4 460.4,432.7 460.9,433.3 461.3,427.0 461.8,454.9 462.2,422.5 462.7,432.8 463.1,438.1 463.6,437.7 464.0,448.2 464.4,418.7 464.9,441.9 465.3,431.7 465.8,436.5 466.2,429.0 466.7,423.2 467.1,417.9 467.6,464.6 468.0,436.0 468.5,435.5 468.9,465.3 469.4,450.0 469.8,475.8 470.3,431.2 470.7,440.4 471.2,426.5 471.6,462.8 472.1,427.7 472.5,422.1 473.0,437.0 473.4,433.7 473.9,431.1 474.3,435.9 474.8,445.1 475.2,436.7 475.7,430.2 476.1,437.1 476.6,431.5 477.0,435.4 477.5,434.1 477.9,428.6 478.4,428.3 478.8,433.6 479.3,431.6 479.7,429.5 480.2,430.6 480.6,431.9 481.1,429.5 481.5,426.9 482.0,421.1 482.4,465.2 482.9,430.9 483.3,431.3 483.8,426.1 484.2,428.1 484.7,428.7 485.1,424.7 485.6,440.2 486.0,426.7 486.4,429.7 486.9,438.6 487.3,414.8 487.8,432.3 488.2,426.8 488.7,439.2 489.1,430.3 489.6,441.0 490.0,457.7 490.5,426.7 490.9,431.9 491.4,425.9 491.8,438.4 492.3,428.4 492.7,427.7 493.2,480.5 493.6,432.7 494.1,418.0 494.5,421.4 495.0,413.8 495.4,429.8 495.9,428.3 496.3,436.1 496.8,435.7 497.2,427.5 497.7,450.1 498.1,422.2 498.6,427.0 499.0,425.0 499.5,435.3 499.9,429.7 500.4,433.8 500.8,435.7 501.3,431.0 501.7,429.6 502.2,430.3 502.6,473.7 503.1,430.3 503.5,425.2 504.0,417.7 504.4,419.8 504.9,427.8 505.3,436.7 505.8,435.8 506.2,429.8 506.7,405.2 507.1,470.8 507.6,424.9 508.0,448.3 508.4,434.0 508.9,433.5 509.3,436.0 509.8,416.2 510.2,446.0 510.7,428.2 511.1,433.0 511.6,438.3 512.0,430.8 512.5,431.2 512.9,433.8 513.4,415.4 513.8,428.8 514.3,431.1 514.7,433.2 515.2,431.2 515.6,422.3 516.1,445.5 516.5,435.0 517.0,426.7 517.4,437.9 517.9,431.3 518.3,432.6 518.8,432.9 519.2,431.5 519.7,435.7 520.1,434.6 520.6,441.1 521.0,426.8 521.5,434.3 521.9,414.7 522.4,414.2 522.8,434.1 523.3,429.2 523.7,432.7 524.2,438.6 524.6,439.6 525.1,429.0 525.5,420.2 526.0,437.1 526.4,477.8 526.9,432.5 527.3,433.7 527.8,434.1 528.2,436.9 528.7,455.7 529.1,431.9 529.6,447.2 530.0,431.6 530.4,421.7 530.9,430.8 531.3,431.1 531.8,438.4 532.2,412.8 532.7,438.1 533.1,437.2 533.6,431.0 534.0,427.9 534.5,427.9 534.9,419.5 535.4,433.6 535.8,473.8 536.3,432.3 536.7,427.0 537.2,428.5 537.6,430.3 538.1,439.2 538.5,423.5 539.0,434.0 539.4,433.5 539.9,436.8 540.3,437.5 540.8,437.5 541.2,427.6 541.7,437.0 542.1,434.8 542.6,430.7 543.0,465.2 543.5,435.9 543.9,431.9 544.4,436.4 544.8,436.0 545.3,430.3 545.7,441.9 546.2,438.8 546.6,423.9 547.1,428.0 547.5,424.5 548.0,419.6 548.4,444.9 548.9,437.7 549.3,429.4 549.8,422.1 550.2,443.8 550.7,436.7 551.1,436.4 551.6,430.2 552.0,435.2 552.4,433.3 552.9,434.6 553.3,432.5 553.8,425.4 554.2,434.7 554.7,432.9 555.1,426.3 555.6,420.8 556.0,443.8 556.5,436.3 556.9,432.2 557.4,421.0 557.8,444.9 558.3,440.4 558.7,450.4 559.2,446.2 559.6,443.7 560.1,449.9 560.5,463.4 561.0,460.9 561.4,451.2 561.9,476.0 562.3,455.6 562.8,446.0 563.2,438.9 563.7,482.8 564.1,445.6 564.6,463.0 565.0,470.9 565.5,464.8 565.9,456.5 566.4,443.5 566.8,451.7 567.3,449.5 567.7,474.6 568.2,454.8 568.6,459.9 569.1,461.5 569.5,458.7 570.0,454.3 570.4,457.2 570.9,459.5 571.3,452.5 571.8,470.2 572.2,461.8 572.7,458.2 573.1,450.6 573.6,454.2 574.0,462.7 574.4,465.4 574.9,443.6 575.3,459.7 575.8,483.8 576.2,467.8 576.7,470.0 577.1,475.1 577.6,462.6 578.0,453.6 578.5,450.7 578.9,456.4 579.4,446.9 579.8,465.0 580.3,487.6 580.7,459.3 581.2,437.4 581.6,452.7 582.1,480.9 582.5,448.4 583.0,456.6 583.4,459.6 583.9,439.5 584.3,458.7 584.8,461.3 585.2,460.5 585.7,459.3" fill="none" stroke="#a8792e" stroke-width="0.9" stroke-linejoin="round"/>
<polygon points="388.6,537.4 388.6,509.9 406.5,510.9 431.0,505.8 457.6,505.8 473.9,499.7 502.4,499.7 522.9,498.7 547.3,497.2 563.7,500.7 585.7,503.8 585.7,537.4" fill="#b48e4e"/>
<polyline points="388.6,509.9 406.5,510.9 431.0,505.8 457.6,505.8 473.9,499.7 502.4,499.7 522.9,498.7 547.3,497.2 563.7,500.7 585.7,503.8" fill="none" stroke="#a07838" stroke-width="0.8" stroke-linejoin="round"/>
<polyline points="388.6,360.3 390.2,379.2 391.2,374.2 392.2,368.6 393.3,362.6 394.3,369.5 395.3,373.7 396.3,376.3 397.3,380.3 398.4,383.1 399.4,386.0 400.4,380.4 401.4,373.9 402.4,363.9 403.5,362.7 404.5,355.2 405.5,350.4 406.5,349.2 407.6,353.5 408.6,351.9 409.6,361.2 410.6,368.6 411.6,380.1 412.7,395.8 413.7,392.5 414.7,386.6 415.7,386.6 416.7,382.4 417.8,380.0 418.8,381.9 419.8,389.7 420.8,404.9 421.8,408.6 422.9,415.3 423.9,405.0 424.9,396.6 425.9,384.9 426.9,374.0 428.0,367.8 429.0,366.8 430.0,371.5 431.0,370.7 432.0,369.3 433.1,363.9 434.1,369.3 435.1,375.5 436.1,368.5 437.1,363.1 438.2,354.0 439.2,354.3 440.2,354.7 441.2,350.3 442.2,368.1 443.3,382.2 444.3,373.7 445.3,367.4 446.3,382.8 447.3,397.4 448.4,415.4 449.4,399.1 450.4,384.1 451.4,379.3 452.4,377.3 453.5,380.7 454.5,380.3 455.5,382.3 456.5,379.2 457.6,376.8 458.6,370.8 459.6,367.2 460.6,361.5 461.6,356.4 462.7,371.6 463.7,388.9 464.7,382.6 465.7,378.3 466.7,371.4 467.8,368.5 468.8,363.0 469.8,358.0 470.8,355.0 471.8,356.0 472.9,353.1 473.9,432.8 474.9,426.1 475.9,417.9 476.9,413.9 478.0,409.1 479.0,408.4 480.0,413.3 481.0,409.1 482.0,403.2 483.1,415.9 484.1,425.2 485.1,415.4 486.1,405.6 487.1,399.5 488.2,386.8 489.2,387.7 490.2,392.7 491.2,393.9 492.2,393.8 493.3,396.9 494.3,394.4 495.3,390.0 496.3,384.7 497.3,379.9 498.4,376.0 499.4,372.8 500.4,371.3 501.4,380.2 502.4,386.8 503.5,391.7 504.5,396.5 505.5,386.6 506.5,381.2 507.6,370.2 508.6,367.8 509.6,361.0 510.6,358.5 511.6,360.5 512.7,359.3 513.7,362.4 514.7,363.8 515.7,365.7 516.7,376.6 517.8,388.1 518.8,386.8 519.8,389.3 520.8,389.4 521.8,389.1 522.9,382.7 523.9,383.3 524.9,388.0 525.9,386.8 526.9,393.0 528.0,398.7 529.0,405.2 530.0,409.3 531.0,401.6 532.0,396.2 533.1,392.8 534.1,394.5 535.1,392.8 536.1,394.6 537.1,401.8 538.2,408.6 539.2,395.7 540.2,379.2 541.2,367.8 542.2,364.2 543.3,359.1 544.3,358.6 545.3,355.0 546.3,353.2 547.3,349.3 548.4,346.5 549.4,344.1 550.4,343.0 551.4,342.6 552.4,339.7 553.5,335.2 554.5,336.4 555.5,333.4 556.5,332.8 557.6,332.1 558.6,331.5 559.6,330.9 560.6,330.9 561.6,330.9 562.7,330.9 563.7,330.9 564.7,330.9 565.7,330.9 566.7,330.9 567.8,330.9 568.8,330.9 569.8,330.9 570.8,330.9 571.8,330.9 572.9,330.9 573.9,330.9 574.9,330.9 575.9,330.9 576.9,330.9 578.0,330.9 579.0,330.9 580.0,330.9 581.0,347.4 582.0,365.8 582.4,422.5 584.1,430.7 585.7,437.4" fill="none" stroke="#f02020" stroke-width="1.1" stroke-linejoin="round"/>
<line x1="388.6" y1="334.39" x2="471.8" y2="334.39" stroke="#222" stroke-width="0.8" opacity="0.85"/>
<line x1="502.4" y1="334.39" x2="585.7" y2="334.39" stroke="#222" stroke-width="0.8" opacity="0.85"/>
<text x="487.1" y="336.18775510204085" fill="#333" font-size="5" text-anchor="middle" letter-spacing="0.18">-0.8</text>
<line x1="388.6" y1="339.9" x2="471.8" y2="339.9" stroke="#222" stroke-width="0.8" opacity="0.85"/>
<line x1="502.4" y1="339.9" x2="585.7" y2="339.9" stroke="#222" stroke-width="0.8" opacity="0.85"/>
<text x="487.1" y="341.6979591836735" fill="#333" font-size="5" text-anchor="middle" letter-spacing="0.18">-1.5</text>
<line x1="388.6" y1="349.29" x2="471.8" y2="349.29" stroke="#222" stroke-width="0.8" opacity="0.85"/>
<line x1="502.4" y1="349.29" x2="585.7" y2="349.29" stroke="#222" stroke-width="0.8" opacity="0.85"/>
<text x="487.1" y="351.0857142857143" fill="#333" font-size="5" text-anchor="middle" letter-spacing="0.18">-2.5</text>
<line x1="388.6" y1="358.27" x2="471.8" y2="358.27" stroke="#222" stroke-width="0.8" opacity="0.85"/>
<line x1="502.4" y1="358.27" x2="585.7" y2="358.27" stroke="#222" stroke-width="0.8" opacity="0.85"/>
<text x="487.1" y="360.065306122449" fill="#333" font-size="5" text-anchor="middle" letter-spacing="0.18">-3.5</text>
<line x1="388.6" y1="371.12" x2="471.8" y2="371.12" stroke="#222" stroke-width="0.8" opacity="0.85"/>
<line x1="502.4" y1="371.12" x2="585.7" y2="371.12" stroke="#222" stroke-width="0.8" opacity="0.85"/>
<text x="487.1" y="372.9224489795918" fill="#333" font-size="5" text-anchor="middle" letter-spacing="0.18">-5</text>
<line x1="388.6" y1="380.31" x2="471.8" y2="380.31" stroke="#222" stroke-width="0.8" opacity="0.85"/>
<line x1="502.4" y1="380.31" x2="585.7" y2="380.31" stroke="#222" stroke-width="0.8" opacity="0.85"/>
<text x="487.1" y="382.1061224489796" fill="#333" font-size="5" text-anchor="middle" letter-spacing="0.18">-6</text>
<line x1="388.6" y1="389.49" x2="471.8" y2="389.49" stroke="#222" stroke-width="0.8" opacity="0.85"/>
<line x1="502.4" y1="389.49" x2="585.7" y2="389.49" stroke="#222" stroke-width="0.8" opacity="0.85"/>
<text x="487.1" y="391.28979591836736" fill="#333" font-size="5" text-anchor="middle" letter-spacing="0.18">-7</text>
<line x1="388.6" y1="398.27" x2="471.8" y2="398.27" stroke="#222" stroke-width="0.8" opacity="0.85"/>
<line x1="502.4" y1="398.27" x2="585.7" y2="398.27" stroke="#222" stroke-width="0.8" opacity="0.85"/>
<text x="487.1" y="400.065306122449" fill="#333" font-size="5" text-anchor="middle" letter-spacing="0.18">-8</text>
<line x1="388.6" y1="406.84" x2="471.8" y2="406.84" stroke="#222" stroke-width="0.8" opacity="0.85"/>
<line x1="502.4" y1="406.84" x2="585.7" y2="406.84" stroke="#222" stroke-width="0.8" opacity="0.85"/>
<text x="487.1" y="408.63673469387754" fill="#333" font-size="5" text-anchor="middle" letter-spacing="0.18">-9</text>
<line x1="388.6" y1="416.02" x2="471.8" y2="416.02" stroke="#222" stroke-width="0.8" opacity="0.85"/>
<line x1="502.4" y1="416.02" x2="585.7" y2="416.02" stroke="#222" stroke-width="0.8" opacity="0.85"/>
<text x="487.1" y="417.8204081632653" fill="#333" font-size="5" text-anchor="middle" letter-spacing="0.18">-10</text>
<line x1="388.6" y1="432.96" x2="471.8" y2="432.96" stroke="#222" stroke-width="0.8" opacity="0.85"/>
<line x1="502.4" y1="432.96" x2="585.7" y2="432.96" stroke="#222" stroke-width="0.8" opacity="0.85"/>
<text x="487.1" y="434.7591836734694" fill="#333" font-size="5" text-anchor="middle" letter-spacing="0.18">-12</text>
<line x1="388.6" y1="451.33" x2="471.8" y2="451.33" stroke="#222" stroke-width="0.8" opacity="0.85"/>
<line x1="502.4" y1="451.33" x2="585.7" y2="451.33" stroke="#222" stroke-width="0.8" opacity="0.85"/>
<text x="487.1" y="453.1265306122449" fill="#333" font-size="5" text-anchor="middle" letter-spacing="0.18">-14</text>
<line x1="388.6" y1="469.49" x2="471.8" y2="469.49" stroke="#222" stroke-width="0.8" opacity="0.85"/>
<line x1="502.4" y1="469.49" x2="585.7" y2="469.49" stroke="#222" stroke-width="0.8" opacity="0.85"/>
<text x="487.1" y="471.28979591836736" fill="#333" font-size="5" text-anchor="middle" letter-spacing="0.18">-16</text>
<line x1="388.6" y1="487.45" x2="471.8" y2="487.45" stroke="#222" stroke-width="0.8" opacity="0.85"/>
<line x1="502.4" y1="487.45" x2="585.7" y2="487.45" stroke="#222" stroke-width="0.8" opacity="0.85"/>
<text x="487.1" y="489.24897959183676" fill="#333" font-size="5" text-anchor="middle" letter-spacing="0.18">-18</text>
<line x1="388.6" y1="504.8" x2="471.8" y2="504.8" stroke="#222" stroke-width="0.8" opacity="0.85"/>
<line x1="502.4" y1="504.8" x2="585.7" y2="504.8" stroke="#222" stroke-width="0.8" opacity="0.85"/>
<text x="487.1" y="506.59591836734694" fill="#333" font-size="5" text-anchor="middle" letter-spacing="0.18">-20</text>
<line x1="386.1" y1="439.5" x2="589.2" y2="439.5" stroke="#101010" stroke-width="1.5"/>
<rect x="386" y="546" width="203" height="2" fill="#3a3a3a" rx="1"/>
<rect x="463.3" y="542" width="4.5" height="11" fill="#3a4060" stroke="#aaa" stroke-width="0.5"/>
<rect x="589.2" y="316" width="10.799999999999955" height="240" fill="#1a1a1a"/>
<text x="593" y="325" fill="#ddd" font-size="7" letter-spacing="0.25">Re</text>
<rect x="593.5" y="333.4" width="6.5" height="208.10000000000002" fill="#ffffff"/>
<rect x="593.5" y="333.4" width="6.5" height="91.80000000000001" fill="#f23c3c"/>
<rect x="593.5" y="424.5" width="6.5" height="2.0" fill="#e01010"/>
<rect x="366.5" y="556" width="233.5" height="34" fill="#161616"/>
<text x="380" y="563.4" fill="#e4e4e4" font-size="7" text-anchor="middle" letter-spacing="0.25">Link</text>
<circle cx="380" cy="573.64" r="8.32" fill="#000" opacity="0.6"/>
<circle cx="380" cy="573" r="8" fill="url(#kb)"/>
<circle cx="380" cy="573" r="7.68" fill="none" stroke="#555" stroke-width="0.64"/>
<circle cx="380" cy="573" r="6.72" fill="none" stroke="#5a5a5a" stroke-width="0.4" opacity="0.8"/>
<line x1="380.94" y1="567.64" x2="381.36" y2="565.28" stroke="#d07818" stroke-width="1.76" stroke-linecap="round"/>
<text x="379.4" y="586.6" fill="#dce6ff" font-size="6.5" text-anchor="middle" letter-spacing="0.23">50.0 %</text>
<rect x="400" y="556" width="43" height="34" fill="#2a2a2a"/>
<text x="407" y="563.4" fill="#e4e4e4" font-size="7" text-anchor="middle" letter-spacing="0.25">M/S</text>
<circle cx="407" cy="570.6" r="4.8" fill="#111"/>
<circle cx="407" cy="570.6" r="4" fill="url(#ledd)" stroke="#7a7a7a" stroke-width="0.6"/>
<text x="429" y="563.4" fill="#e4e4e4" font-size="7" text-anchor="middle" letter-spacing="0.25">Adjust</text>
<circle cx="428.4" cy="573" r="7.5" fill="#242424" stroke="#303030" stroke-width="1"/>
<line x1="428.4" y1="567" x2="428.4" y2="569" stroke="#6a4a20" stroke-width="1.2"/>
<text x="419" y="585" fill="#3a3a3a" font-size="6" text-anchor="middle" letter-spacing="0.21">M</text>
<text x="436.6" y="585" fill="#3a3a3a" font-size="6" text-anchor="middle" letter-spacing="0.21">S</text>
<text x="466" y="563.4" fill="#e4e4e4" font-size="7" text-anchor="middle" letter-spacing="0.25">Range</text>
<circle cx="465.6" cy="573.64" r="8.32" fill="#000" opacity="0.6"/>
<circle cx="465.6" cy="573" r="8" fill="url(#kb)"/>
<circle cx="465.6" cy="573" r="7.68" fill="none" stroke="#555" stroke-width="0.64"/>
<circle cx="465.6" cy="573" r="6.72" fill="none" stroke="#5a5a5a" stroke-width="0.4" opacity="0.8"/>
<line x1="461.75" y1="576.85" x2="460.06" y2="578.54" stroke="#d07818" stroke-width="1.76" stroke-linecap="round"/>
<text x="466" y="586.6" fill="#dce6ff" font-size="6.5" text-anchor="middle" letter-spacing="0.23">-60.0 dB</text>
<text x="504" y="563.4" fill="#e4e4e4" font-size="7" text-anchor="middle" letter-spacing="0.25">Feedback</text>
<circle cx="502.4" cy="572" r="4.3" fill="#111"/>
<circle cx="502.4" cy="572" r="3.5" fill="#e08020"/>
<circle cx="501.525" cy="571.125" r="1.575" fill="#ffd080" opacity="0.6"/>
<text x="542.4" y="563.4" fill="#e4e4e4" font-size="7" text-anchor="middle" letter-spacing="0.25">Look</text>
<circle cx="542.4" cy="573" r="8" fill="#1c1c1c" stroke="#262626" stroke-width="1"/>
<line x1="540" y1="578" x2="538.5" y2="579.5" stroke="#6a4a20" stroke-width="1.2"/>
<text x="582" y="563.4" fill="#e4e4e4" font-size="7" text-anchor="middle" letter-spacing="0.25">DC Block</text>
<rect x="575" y="568.6" width="12" height="7.399999999999977" fill="url(#vb575568)" stroke="#2a2a3a" stroke-width="0.8"/>
<text x="581.0" y="574.28" fill="#3a2000" font-size="5.5" text-anchor="middle" font-weight="bold" letter-spacing="0.19">Low</text>
<rect x="300" y="590" width="300" height="10" fill="#0a0a0a"/>
<text x="300" y="598.75" fill="#ddd" font-size="7" letter-spacing="0.25">: LVC-Audio</text>
<rect x="491" y="592" width="8" height="7" fill="#2a3060" rx="1"/>
<text x="495.0" y="597.3" fill="#aab" font-size="5" text-anchor="middle" letter-spacing="0.18">&lt;&lt;</text>
<rect x="503" y="592" width="7" height="7" fill="#2a3060" rx="1"/>
<text x="506.5" y="597.3" fill="#aab" font-size="5" text-anchor="middle" letter-spacing="0.18">&gt;&gt;</text>
<rect x="531" y="592" width="14.600000000000023" height="7" fill="#2a3060" rx="1"/>
<text x="538.3" y="597.84" fill="#dde" font-size="6.5" text-anchor="middle" letter-spacing="0.23">A</text>
<rect x="549.6" y="592" width="15.399999999999977" height="7" fill="#2a3060" rx="1"/>
<text x="557.3" y="597.66" fill="#dde" font-size="6" text-anchor="middle" letter-spacing="0.21">A-&gt;B</text>
</g>
<g clip-path="url(#cG)">
<rect x="600" y="299" width="300" height="301" fill="#1a1a1a"/>
<rect x="600" y="299" width="300" height="17" fill="#242424"/>
<line x1="600" y1="301" x2="900" y2="301" stroke="#1c1c1c" stroke-width="1"/>
<line x1="600" y1="304" x2="900" y2="304" stroke="#1c1c1c" stroke-width="1"/>
<line x1="600" y1="307" x2="900" y2="307" stroke="#1c1c1c" stroke-width="1"/>
<line x1="600" y1="310" x2="900" y2="310" stroke="#1c1c1c" stroke-width="1"/>
<line x1="600" y1="313" x2="900" y2="313" stroke="#1c1c1c" stroke-width="1"/>
<text x="891.25" y="312.5" fill="#c08848" font-size="14" letter-spacing="0.49">P</text>
<rect x="600" y="316" width="81" height="274" fill="#2c2c2c"/>
<rect x="600" y="317.5" width="72.5" height="57.5" fill="#343434" stroke="#1a1a1a" stroke-width="1"/>
<rect x="642" y="321.25" width="25.5" height="10.0" fill="#0c1420" stroke="#3a4a6a" stroke-width="0.6"/>
<text x="654.75" y="328.59" fill="#c8d0d8" font-size="6.5" text-anchor="middle" letter-spacing="0.23">TapeD</text>
<rect x="608" y="335" width="25.75" height="10" fill="#0c1420" stroke="#3a4a6a" stroke-width="0.6"/>
<text x="620.875" y="342.34" fill="#c8d0d8" font-size="6.5" text-anchor="middle" letter-spacing="0.23">White</text>
<rect x="642" y="335" width="25.5" height="10" fill="#0c1420" stroke="#3a4a6a" stroke-width="0.6"/>
<text x="654.75" y="342.34" fill="#c8d0d8" font-size="6.5" text-anchor="middle" letter-spacing="0.23">TapeR</text>
<rect x="608" y="348.75" width="25.75" height="10.0" fill="url(#vb608348)" stroke="#2a2a3a" stroke-width="0.8"/>
<text x="620.875" y="356.09" fill="#2a1000" font-size="6.5" text-anchor="middle" font-weight="bold" letter-spacing="0.23">Red</text>
<rect x="642" y="348.75" width="25.5" height="10.0" fill="#080808" stroke="#3a4a6a" stroke-width="0.6"/>
<text x="654.75" y="356.09" fill="#a8a8a8" font-size="6.5" text-anchor="middle" letter-spacing="0.23">Old</text>
<rect x="608" y="362.5" width="25.75" height="10.0" fill="#0c1420" stroke="#3a4a6a" stroke-width="0.6"/>
<text x="620.875" y="369.84" fill="#c8d0d8" font-size="6.5" text-anchor="middle" letter-spacing="0.23">Limit</text>
<rect x="642" y="362.5" width="25.5" height="10.0" fill="#0c1420" stroke="#3a4a6a" stroke-width="0.6"/>
<text x="654.75" y="369.84" fill="#c8d0d8" font-size="6.5" text-anchor="middle" letter-spacing="0.23">Modern</text>
<text x="599" y="388.75" fill="#e0e0e0" font-size="9" letter-spacing="0.32">ve</text>
<path d="M587.57,402.15 A13.2,13.2 0 0 1 603.51,396.35" fill="none" stroke="#e8c030" stroke-width="1.98" stroke-linecap="butt"/>
<circle cx="599" cy="409.63" r="11.440000000000001" fill="#000" opacity="0.6"/>
<circle cx="599" cy="408.75" r="11" fill="url(#kb)"/>
<circle cx="599" cy="408.75" r="10.56" fill="none" stroke="#ccc" stroke-width="0.88"/>
<circle cx="599" cy="408.75" r="9.24" fill="none" stroke="#5a5a5a" stroke-width="0.4" opacity="0.8"/>
<line x1="595.26" y1="402.27" x2="593.61" y2="399.41" stroke="#d07818" stroke-width="2.42" stroke-linecap="round"/>
<text x="599" y="432.5" fill="#e0e0e0" font-size="7" letter-spacing="0.25">dB</text>
<rect x="621.25" y="382.5" width="55.0" height="57.5" fill="#3a3a3a" stroke="#222" stroke-width="1"/>
<rect x="631.25" y="383.25" width="35.0" height="6.75" fill="url(#vb631383)" stroke="#2a2a3a" stroke-width="0.8"/>
<text x="648.75" y="388.605" fill="#1a0a00" font-size="5.5" text-anchor="middle" font-weight="bold" letter-spacing="0.19">Saturation</text>
<text x="634.5" y="398" fill="#e0e0e0" font-size="6" text-anchor="middle" letter-spacing="0.21">Level</text>
<circle cx="633.75" cy="409.35" r="7.800000000000001" fill="#000" opacity="0.6"/>
<circle cx="633.75" cy="408.75" r="7.5" fill="url(#kb)"/>
<circle cx="633.75" cy="408.75" r="7.2" fill="none" stroke="#666" stroke-width="0.6"/>
<circle cx="633.75" cy="408.75" r="6.3" fill="none" stroke="#5a5a5a" stroke-width="0.4" opacity="0.8"/>
<line x1="629.33" y1="406.2" x2="627.38" y2="405.07" stroke="#d07818" stroke-width="1.65" stroke-linecap="round"/>
<text x="634.5" y="421.75" fill="#ccc" font-size="4.5" text-anchor="middle" letter-spacing="0.16">5.62 %</text>
<text x="663.75" y="398" fill="#e0e0e0" font-size="6" text-anchor="middle" letter-spacing="0.21">HP</text>
<circle cx="663" cy="409.35" r="7.800000000000001" fill="#000" opacity="0.6"/>
<circle cx="663" cy="408.75" r="7.5" fill="url(#kb)"/>
<circle cx="663" cy="408.75" r="7.2" fill="none" stroke="#666" stroke-width="0.6"/>
<circle cx="663" cy="408.75" r="6.3" fill="none" stroke="#5a5a5a" stroke-width="0.4" opacity="0.8"/>
<line x1="659.39" y1="405.14" x2="657.8" y2="403.55" stroke="#d07818" stroke-width="1.65" stroke-linecap="round"/>
<text x="663.75" y="421.75" fill="#ccc" font-size="4.5" text-anchor="middle" letter-spacing="0.16">1700 Hz</text>
<text x="640" y="435.5" fill="#e0e0e0" font-size="6.5" text-anchor="middle" letter-spacing="0.23">Type:</text>
<rect x="651.25" y="428.75" width="10.0" height="10.0" fill="#a02020" stroke="#401010" stroke-width="0.6"/>
<text x="656.25" y="436" fill="#ffd0d0" font-size="6" text-anchor="middle" letter-spacing="0.21">A</text>
<rect x="600" y="444.5" width="5" height="73.5" fill="#3a3a3a" stroke="#222" stroke-width="1"/>
<circle cx="598" cy="471.35" r="7.800000000000001" fill="#000" opacity="0.6"/>
<circle cx="598" cy="470.75" r="7.5" fill="url(#kb)"/>
<circle cx="598" cy="470.75" r="7.2" fill="none" stroke="#666" stroke-width="0.6"/>
<circle cx="598" cy="470.75" r="6.3" fill="none" stroke="#5a5a5a" stroke-width="0.4" opacity="0.8"/>
<line x1="601.61" y1="467.14" x2="603.2" y2="465.55" stroke="#d07818" stroke-width="1.65" stroke-linecap="round"/>
<rect x="606.25" y="444.5" width="43.75" height="73.5" fill="#3a3a3a" stroke="#222" stroke-width="1"/>
<rect x="613.75" y="445" width="32.5" height="6.75" fill="url(#vb613445)" stroke="#2a2a3a" stroke-width="0.8"/>
<text x="630.0" y="450.355" fill="#1a0a00" font-size="5.5" text-anchor="middle" font-weight="bold" letter-spacing="0.19">High Peak</text>
<text x="617" y="460.0" fill="#e0e0e0" font-size="6" text-anchor="middle" letter-spacing="0.21">Freq</text>
<circle cx="617" cy="471.35" r="7.800000000000001" fill="#000" opacity="0.6"/>
<circle cx="617" cy="470.75" r="7.5" fill="url(#kb)"/>
<circle cx="617" cy="470.75" r="7.2" fill="none" stroke="#666" stroke-width="0.6"/>
<circle cx="617" cy="470.75" r="6.3" fill="none" stroke="#5a5a5a" stroke-width="0.4" opacity="0.8"/>
<line x1="617" y1="465.65" x2="617" y2="463.4" stroke="#d07818" stroke-width="1.65" stroke-linecap="round"/>
<text x="617" y="483.75" fill="#ccc" font-size="4.5" text-anchor="middle" letter-spacing="0.16">7500 Hz</text>
<text x="638.75" y="460.0" fill="#e0e0e0" font-size="6" text-anchor="middle" letter-spacing="0.21">Q</text>
<circle cx="638.75" cy="471.35" r="7.800000000000001" fill="#000" opacity="0.6"/>
<circle cx="638.75" cy="470.75" r="7.5" fill="url(#kb)"/>
<circle cx="638.75" cy="470.75" r="7.2" fill="none" stroke="#666" stroke-width="0.6"/>
<circle cx="638.75" cy="470.75" r="6.3" fill="none" stroke="#5a5a5a" stroke-width="0.4" opacity="0.8"/>
<line x1="638.75" y1="465.65" x2="638.75" y2="463.4" stroke="#d07818" stroke-width="1.65" stroke-linecap="round"/>
<text x="638.75" y="483.75" fill="#ccc" font-size="4.5" text-anchor="middle" letter-spacing="0.16">1.0</text>
<text x="629" y="490.5" fill="#e0e0e0" font-size="6" text-anchor="middle" letter-spacing="0.21">Gain</text>
<circle cx="629" cy="501.85" r="7.800000000000001" fill="#000" opacity="0.6"/>
<circle cx="629" cy="501.25" r="7.5" fill="url(#kb)"/>
<circle cx="629" cy="501.25" r="7.2" fill="none" stroke="#666" stroke-width="0.6"/>
<circle cx="629" cy="501.25" r="6.3" fill="none" stroke="#5a5a5a" stroke-width="0.4" opacity="0.8"/>
<line x1="629" y1="496.15" x2="629" y2="493.9" stroke="#d07818" stroke-width="1.65" stroke-linecap="round"/>
<text x="629" y="514.25" fill="#ccc" font-size="4.5" text-anchor="middle" letter-spacing="0.16">0.0 dB</text>
<rect x="650.75" y="444.5" width="25.5" height="73.5" fill="#3a3a3a" stroke="#222" stroke-width="1"/>
<rect x="658.75" y="445" width="16.25" height="6.75" fill="url(#vb658445)" stroke="#2a2a3a" stroke-width="0.8"/>
<text x="666.875" y="450.355" fill="#1a0a00" font-size="5.5" text-anchor="middle" font-weight="bold" letter-spacing="0.19">High</text>
<text x="663" y="460.0" fill="#e0e0e0" font-size="6" text-anchor="middle" letter-spacing="0.21">Freq</text>
<circle cx="663" cy="471.35" r="7.800000000000001" fill="#000" opacity="0.6"/>
<circle cx="663" cy="470.75" r="7.5" fill="url(#kb)"/>
<circle cx="663" cy="470.75" r="7.2" fill="none" stroke="#666" stroke-width="0.6"/>
<circle cx="663" cy="470.75" r="6.3" fill="none" stroke="#5a5a5a" stroke-width="0.4" opacity="0.8"/>
<line x1="666.61" y1="474.36" x2="668.2" y2="475.95" stroke="#d07818" stroke-width="1.65" stroke-linecap="round"/>
<text x="663" y="483.75" fill="#ccc" font-size="4.5" text-anchor="middle" letter-spacing="0.16">20000 Hz</text>
<text x="663" y="490.5" fill="#e0e0e0" font-size="6" text-anchor="middle" letter-spacing="0.21">Gain</text>
<circle cx="663" cy="501.85" r="7.800000000000001" fill="#000" opacity="0.6"/>
<circle cx="663" cy="501.25" r="7.5" fill="url(#kb)"/>
<circle cx="663" cy="501.25" r="7.2" fill="none" stroke="#666" stroke-width="0.6"/>
<circle cx="663" cy="501.25" r="6.3" fill="none" stroke="#5a5a5a" stroke-width="0.4" opacity="0.8"/>
<line x1="663" y1="496.15" x2="663" y2="493.9" stroke="#d07818" stroke-width="1.65" stroke-linecap="round"/>
<text x="663" y="514.25" fill="#ccc" font-size="4.5" text-anchor="middle" letter-spacing="0.16">0.0 dB</text>
<text x="599" y="530" fill="#e0e0e0" font-size="9" letter-spacing="0.32">Gain</text>
<circle cx="599" cy="552.13" r="11.440000000000001" fill="#000" opacity="0.6"/>
<circle cx="599" cy="551.25" r="11" fill="url(#kb)"/>
<circle cx="599" cy="551.25" r="10.56" fill="none" stroke="#ccc" stroke-width="0.88"/>
<circle cx="599" cy="551.25" r="9.24" fill="none" stroke="#5a5a5a" stroke-width="0.4" opacity="0.8"/>
<line x1="604.29" y1="545.96" x2="606.62" y2="543.63" stroke="#d07818" stroke-width="2.42" stroke-linecap="round"/>
<text x="599" y="575" fill="#e0e0e0" font-size="7" letter-spacing="0.25">dB</text>
<rect x="622" y="522" width="54.25" height="41.75" fill="#3a3a3a" stroke="#222" stroke-width="1"/>
<rect x="631.25" y="523" width="35.0" height="7" fill="url(#vb631523)" stroke="#2a2a3a" stroke-width="0.8"/>
<text x="648.75" y="528.48" fill="#1a0a00" font-size="5.5" text-anchor="middle" font-weight="bold" letter-spacing="0.19">Stereo</text>
<text x="634.5" y="537" fill="#e0e0e0" font-size="6" text-anchor="middle" letter-spacing="0.21">Wide</text>
<circle cx="634.5" cy="548.1" r="7.800000000000001" fill="#000" opacity="0.6"/>
<circle cx="634.5" cy="547.5" r="7.5" fill="url(#kb)"/>
<circle cx="634.5" cy="547.5" r="7.2" fill="none" stroke="#666" stroke-width="0.6"/>
<circle cx="634.5" cy="547.5" r="6.3" fill="none" stroke="#5a5a5a" stroke-width="0.4" opacity="0.8"/>
<line x1="638.11" y1="543.89" x2="639.7" y2="542.3" stroke="#d07818" stroke-width="1.65" stroke-linecap="round"/>
<text x="634.5" y="560" fill="#ccc" font-size="4.5" text-anchor="middle" letter-spacing="0.16">124.0 %</text>
<text x="663.75" y="537" fill="#e0e0e0" font-size="6" text-anchor="middle" letter-spacing="0.21">Bal.</text>
<circle cx="663.75" cy="548.1" r="7.800000000000001" fill="#000" opacity="0.6"/>
<circle cx="663.75" cy="547.5" r="7.5" fill="url(#kb)"/>
<circle cx="663.75" cy="547.5" r="7.2" fill="none" stroke="#666" stroke-width="0.6"/>
<circle cx="663.75" cy="547.5" r="6.3" fill="none" stroke="#5a5a5a" stroke-width="0.4" opacity="0.8"/>
<line x1="663.75" y1="542.4" x2="663.75" y2="540.15" stroke="#d07818" stroke-width="1.65" stroke-linecap="round"/>
<text x="663.75" y="560" fill="#ccc" font-size="4.5" text-anchor="middle" letter-spacing="0.16">0.00 dB</text>
<text x="647.5" y="572.5" fill="#e0e0e0" font-size="6.5" text-anchor="middle" letter-spacing="0.23">Routing</text>
<rect x="631.25" y="575" width="36.25" height="10" fill="#801818" stroke="#200808" stroke-width="0.8"/>
<text x="649.4" y="582.6" fill="#f0d0d0" font-size="6.5" text-anchor="middle" letter-spacing="0.23">Eq-&gt; Pre-&gt; S</text>
<rect x="681.25" y="317.5" width="218.75" height="227.5" fill="url(#frG)"/>
<rect x="681.25" y="317.5" width="218.75" height="3.0" fill="url(#ftG)" rx="1"/>
<rect x="681.25" y="320.5" width="18.75" height="224.5" fill="#181818"/>
<rect x="706.25" y="323" width="8.75" height="8.25" fill="#3a4a6a" stroke="#1a2030" stroke-width="0.6"/>
<text x="710.6" y="329.8" fill="#dde" font-size="6" text-anchor="middle" letter-spacing="0.21">II</text>
<rect x="720" y="323" width="9.5" height="8.25" fill="#3a4a6a" stroke="#1a2030" stroke-width="0.6"/>
<text x="724.75" y="329.8" fill="#dde" font-size="6" text-anchor="middle" letter-spacing="0.21">R</text>
<rect x="702" y="337" width="181" height="190" fill="#ffffff"/>
<polygon points="702.0,527.0 702.0,461.2 702.0,362.5 703.1,390.8 704.1,413.8 705.2,435.8 706.2,452.4 707.3,473.7 708.4,493.1 709.4,510.5 710.5,527.0" fill="#e88484"/>
<polyline points="702.0,527.0 702.0,461.2 702.0,362.5 703.1,390.8 704.1,413.8 705.2,435.8 706.2,452.4 707.3,473.7 708.4,493.1 709.4,510.5 710.5,527.0" fill="none" stroke="#901818" stroke-width="0.8" stroke-linejoin="round"/>
<polygon points="714.2,527.0 715.0,502.2 716.2,465.0 716.7,476.0 717.1,484.6 717.6,492.0 718.0,502.3 718.4,506.7 718.9,513.3 719.3,521.6 719.8,527.0" fill="#e88484"/>
<polyline points="714.2,527.0 715.0,502.2 716.2,465.0 716.7,476.0 717.1,484.6 717.6,492.0 718.0,502.3 718.4,506.7 718.9,513.3 719.3,521.6 719.8,527.0" fill="none" stroke="#901818" stroke-width="0.8" stroke-linejoin="round"/>
<polygon points="723.0,527.0 723.8,522.2 725.0,515.0 725.4,516.5 725.8,517.8 726.1,520.2 726.5,518.9 726.9,523.7 727.2,525.5 727.6,525.5 728.0,527.0" fill="#e88484"/>
<polyline points="723.0,527.0 723.8,522.2 725.0,515.0 725.4,516.5 725.8,517.8 726.1,520.2 726.5,518.9 726.9,523.7 727.2,525.5 727.6,525.5 728.0,527.0" fill="none" stroke="#901818" stroke-width="0.8" stroke-linejoin="round"/>
<polygon points="726.0,527.0 727.4,451.0 729.5,337.0 730.4,370.6 731.4,395.7 732.3,420.6 733.2,440.0 734.2,461.8 735.1,488.0 736.1,506.0 737.0,527.0" fill="#e88484"/>
<polyline points="726.0,527.0 727.4,451.0 729.5,337.0 730.4,370.6 731.4,395.7 732.3,420.6 733.2,440.0 734.2,461.8 735.1,488.0 736.1,506.0 737.0,527.0" fill="none" stroke="#901818" stroke-width="0.8" stroke-linejoin="round"/>
<polygon points="734.0,527.0 735.2,500.2 737.0,460.0 737.6,472.5 738.1,481.8 738.7,486.9 739.2,496.1 739.8,503.4 740.4,511.4 740.9,518.5 741.5,527.0" fill="#e88484"/>
<polyline points="734.0,527.0 735.2,500.2 737.0,460.0 737.6,472.5 738.1,481.8 738.7,486.9 739.2,496.1 739.8,503.4 740.4,511.4 740.9,518.5 741.5,527.0" fill="none" stroke="#901818" stroke-width="0.8" stroke-linejoin="round"/>
<polygon points="738.2,527.0 739.5,451.0 741.2,337.0 742.8,368.9 744.4,395.0 745.9,417.7 747.5,440.0 749.1,461.7 750.6,487.5 752.2,507.3 753.8,527.0" fill="#e88484"/>
<polyline points="738.2,527.0 739.5,451.0 741.2,337.0 742.8,368.9 744.4,395.0 745.9,417.7 747.5,440.0 749.1,461.7 750.6,487.5 752.2,507.3 753.8,527.0" fill="none" stroke="#901818" stroke-width="0.8" stroke-linejoin="round"/>
<polygon points="751.2,527.0 752.5,451.7 754.2,338.8 755.2,369.9 756.1,395.0 757.1,418.3 758.0,442.0 758.9,462.4 759.9,485.1 760.8,506.0 761.8,527.0" fill="#e88484"/>
<polyline points="751.2,527.0 752.5,451.7 754.2,338.8 755.2,369.9 756.1,395.0 757.1,418.3 758.0,442.0 758.9,462.4 759.9,485.1 760.8,506.0 761.8,527.0" fill="none" stroke="#901818" stroke-width="0.8" stroke-linejoin="round"/>
<polygon points="759.5,527.0 760.7,452.2 762.5,340.0 764.2,372.4 765.9,397.4 767.7,421.1 769.4,442.9 771.1,465.6 772.8,487.8 774.5,506.4 776.2,527.0" fill="#e88484"/>
<polyline points="759.5,527.0 760.7,452.2 762.5,340.0 764.2,372.4 765.9,397.4 767.7,421.1 769.4,442.9 771.1,465.6 772.8,487.8 774.5,506.4 776.2,527.0" fill="none" stroke="#901818" stroke-width="0.8" stroke-linejoin="round"/>
<polygon points="774.2,527.0 775.0,521.2 776.2,512.5 776.6,514.9 777.0,516.4 777.4,520.4 777.8,518.1 778.1,524.4 778.5,521.6 778.9,525.6 779.2,527.0" fill="#e88484"/>
<polyline points="774.2,527.0 775.0,521.2 776.2,512.5 776.6,514.9 777.0,516.4 777.4,520.4 777.8,518.1 778.1,524.4 778.5,521.6 778.9,525.6 779.2,527.0" fill="none" stroke="#901818" stroke-width="0.8" stroke-linejoin="round"/>
<polygon points="779.2,527.0 780.0,516.2 781.2,500.0 781.6,504.1 782.0,510.1 782.4,512.9 782.8,512.9 783.1,518.1 783.5,521.7 783.9,522.8 784.2,527.0" fill="#e88484"/>
<polyline points="779.2,527.0 780.0,516.2 781.2,500.0 781.6,504.1 782.0,510.1 782.4,512.9 782.8,512.9 783.1,518.1 783.5,521.7 783.9,522.8 784.2,527.0" fill="none" stroke="#901818" stroke-width="0.8" stroke-linejoin="round"/>
<polygon points="786.2,527.0 787.2,464.7 788.8,371.2 789.8,398.1 790.9,420.3 791.9,438.7 793.0,457.2 794.1,475.7 795.1,492.1 796.2,511.3 797.2,527.0" fill="#e88484"/>
<polyline points="786.2,527.0 787.2,464.7 788.8,371.2 789.8,398.1 790.9,420.3 791.9,438.7 793.0,457.2 794.1,475.7 795.1,492.1 796.2,511.3 797.2,527.0" fill="none" stroke="#901818" stroke-width="0.8" stroke-linejoin="round"/>
<polygon points="799.2,527.0 800.2,452.2 801.8,340.0 803.2,371.9 804.8,395.3 806.2,420.6 807.8,445.6 809.2,464.4 810.8,484.6 812.2,506.1 813.8,527.0" fill="#e88484"/>
<polyline points="799.2,527.0 800.2,452.2 801.8,340.0 803.2,371.9 804.8,395.3 806.2,420.6 807.8,445.6 809.2,464.4 810.8,484.6 812.2,506.1 813.8,527.0" fill="none" stroke="#901818" stroke-width="0.8" stroke-linejoin="round"/>
<polygon points="816.2,527.0 817.2,502.2 818.8,465.0 819.2,475.9 819.8,483.1 820.2,492.7 820.8,501.0 821.2,509.3 821.8,515.1 822.2,520.2 822.8,527.0" fill="#e88484"/>
<polyline points="816.2,527.0 817.2,502.2 818.8,465.0 819.2,475.9 819.8,483.1 820.2,492.7 820.8,501.0 821.2,509.3 821.8,515.1 822.2,520.2 822.8,527.0" fill="none" stroke="#901818" stroke-width="0.8" stroke-linejoin="round"/>
<polygon points="825.5,527.0 826.3,522.2 827.5,515.0 827.9,518.2 828.2,520.4 828.6,521.7 829.0,522.2 829.4,523.1 829.8,526.0 830.1,526.1 830.5,527.0" fill="#e88484"/>
<polyline points="825.5,527.0 826.3,522.2 827.5,515.0 827.9,518.2 828.2,520.4 828.6,521.7 829.0,522.2 829.4,523.1 829.8,526.0 830.1,526.1 830.5,527.0" fill="none" stroke="#901818" stroke-width="0.8" stroke-linejoin="round"/>
<polygon points="828.8,527.0 829.8,452.2 831.2,340.0 832.3,371.2 833.4,395.6 834.4,419.9 835.5,444.3 836.6,465.8 837.6,485.0 838.7,506.1 839.8,527.0" fill="#e88484"/>
<polyline points="828.8,527.0 829.8,452.2 831.2,340.0 832.3,371.2 833.4,395.6 834.4,419.9 835.5,444.3 836.6,465.8 837.6,485.0 838.7,506.1 839.8,527.0" fill="none" stroke="#901818" stroke-width="0.8" stroke-linejoin="round"/>
<polygon points="836.5,527.0 837.7,501.2 839.5,462.5 840.1,472.3 840.6,484.4 841.2,492.1 841.8,498.7 842.3,508.7 842.9,513.9 843.4,518.7 844.0,527.0" fill="#e88484"/>
<polyline points="836.5,527.0 837.7,501.2 839.5,462.5 840.1,472.3 840.6,484.4 841.2,492.1 841.8,498.7 842.3,508.7 842.9,513.9 843.4,518.7 844.0,527.0" fill="none" stroke="#901818" stroke-width="0.8" stroke-linejoin="round"/>
<polygon points="841.8,527.0 842.8,452.2 844.2,340.0 845.6,371.7 846.9,399.5 848.2,423.1 849.5,441.5 850.8,462.7 852.1,484.2 853.4,507.7 854.8,527.0" fill="#e88484"/>
<polyline points="841.8,527.0 842.8,452.2 844.2,340.0 845.6,371.7 846.9,399.5 848.2,423.1 849.5,441.5 850.8,462.7 852.1,484.2 853.4,507.7 854.8,527.0" fill="none" stroke="#901818" stroke-width="0.8" stroke-linejoin="round"/>
<polygon points="855.0,527.0 856.0,452.2 857.5,340.0 858.4,371.2 859.2,395.7 860.1,420.5 861.0,445.6 861.9,466.8 862.8,488.2 863.6,508.2 864.5,527.0" fill="#e88484"/>
<polyline points="855.0,527.0 856.0,452.2 857.5,340.0 858.4,371.2 859.2,395.7 860.1,420.5 861.0,445.6 861.9,466.8 862.8,488.2 863.6,508.2 864.5,527.0" fill="none" stroke="#901818" stroke-width="0.8" stroke-linejoin="round"/>
<polygon points="863.0,527.0 864.0,452.2 865.5,340.0 867.0,372.8 868.5,395.3 870.0,418.3 871.5,446.0 873.0,466.1 874.5,485.6 876.0,505.9 877.5,527.0" fill="#e88484"/>
<polyline points="863.0,527.0 864.0,452.2 865.5,340.0 867.0,372.8 868.5,395.3 870.0,418.3 871.5,446.0 873.0,466.1 874.5,485.6 876.0,505.9 877.5,527.0" fill="none" stroke="#901818" stroke-width="0.8" stroke-linejoin="round"/>
<polygon points="878.0,527.0 878.8,521.2 880.0,512.5 880.4,514.5 880.8,516.9 881.1,518.5 881.5,518.7 881.9,519.8 882.2,522.5 882.6,524.4 883.0,527.0" fill="#e88484"/>
<polyline points="878.0,527.0 878.8,521.2 880.0,512.5 880.4,514.5 880.8,516.9 881.1,518.5 881.5,518.7 881.9,519.8 882.2,522.5 882.6,524.4 883.0,527.0" fill="none" stroke="#901818" stroke-width="0.8" stroke-linejoin="round"/>
<rect x="702" y="525.5" width="181" height="1.5" fill="#e88484"/>
<line x1="702" y1="343.75" x2="778.75" y2="343.75" stroke="#1a1a1a" stroke-width="0.8" opacity="0.9"/>
<line x1="805.75" y1="343.75" x2="883" y2="343.75" stroke="#1a1a1a" stroke-width="0.8" opacity="0.9"/>
<text x="793" y="345.55" fill="#333" font-size="5" text-anchor="middle" letter-spacing="0.18">-0.8</text>
<line x1="702" y1="352.5" x2="778.75" y2="352.5" stroke="#1a1a1a" stroke-width="0.8" opacity="0.9"/>
<line x1="805.75" y1="352.5" x2="883" y2="352.5" stroke="#1a1a1a" stroke-width="0.8" opacity="0.9"/>
<text x="793" y="354.3" fill="#333" font-size="5" text-anchor="middle" letter-spacing="0.18">-2</text>
<line x1="702" y1="360.5" x2="778.75" y2="360.5" stroke="#1a1a1a" stroke-width="0.8" opacity="0.9"/>
<line x1="805.75" y1="360.5" x2="883" y2="360.5" stroke="#1a1a1a" stroke-width="0.8" opacity="0.9"/>
<text x="793" y="362.3" fill="#333" font-size="5" text-anchor="middle" letter-spacing="0.18">-3</text>
<line x1="702" y1="368.25" x2="778.75" y2="368.25" stroke="#1a1a1a" stroke-width="0.8" opacity="0.9"/>
<line x1="805.75" y1="368.25" x2="883" y2="368.25" stroke="#1a1a1a" stroke-width="0.8" opacity="0.9"/>
<text x="793" y="370.05" fill="#333" font-size="5" text-anchor="middle" letter-spacing="0.18">-4</text>
<line x1="702" y1="376.25" x2="778.75" y2="376.25" stroke="#1a1a1a" stroke-width="0.8" opacity="0.9"/>
<line x1="805.75" y1="376.25" x2="883" y2="376.25" stroke="#1a1a1a" stroke-width="0.8" opacity="0.9"/>
<text x="793" y="378.05" fill="#333" font-size="5" text-anchor="middle" letter-spacing="0.18">-5</text>
<line x1="702" y1="384.5" x2="778.75" y2="384.5" stroke="#1a1a1a" stroke-width="0.8" opacity="0.9"/>
<line x1="805.75" y1="384.5" x2="883" y2="384.5" stroke="#1a1a1a" stroke-width="0.8" opacity="0.9"/>
<text x="793" y="386.3" fill="#333" font-size="5" text-anchor="middle" letter-spacing="0.18">-6</text>
<line x1="702" y1="391.75" x2="778.75" y2="391.75" stroke="#1a1a1a" stroke-width="0.8" opacity="0.9"/>
<line x1="805.75" y1="391.75" x2="883" y2="391.75" stroke="#1a1a1a" stroke-width="0.8" opacity="0.9"/>
<text x="793" y="393.55" fill="#333" font-size="5" text-anchor="middle" letter-spacing="0.18">-7</text>
<line x1="702" y1="400" x2="778.75" y2="400" stroke="#1a1a1a" stroke-width="0.8" opacity="0.9"/>
<line x1="805.75" y1="400" x2="883" y2="400" stroke="#1a1a1a" stroke-width="0.8" opacity="0.9"/>
<text x="793" y="401.8" fill="#333" font-size="5" text-anchor="middle" letter-spacing="0.18">-8</text>
<line x1="702" y1="408" x2="778.75" y2="408" stroke="#1a1a1a" stroke-width="0.8" opacity="0.9"/>
<line x1="805.75" y1="408" x2="883" y2="408" stroke="#1a1a1a" stroke-width="0.8" opacity="0.9"/>
<text x="793" y="409.8" fill="#333" font-size="5" text-anchor="middle" letter-spacing="0.18">-9</text>
<line x1="702" y1="415.75" x2="778.75" y2="415.75" stroke="#1a1a1a" stroke-width="0.8" opacity="0.9"/>
<line x1="805.75" y1="415.75" x2="883" y2="415.75" stroke="#1a1a1a" stroke-width="0.8" opacity="0.9"/>
<text x="793" y="417.55" fill="#333" font-size="5" text-anchor="middle" letter-spacing="0.18">-10</text>
<line x1="702" y1="431.75" x2="778.75" y2="431.75" stroke="#1a1a1a" stroke-width="0.8" opacity="0.9"/>
<line x1="805.75" y1="431.75" x2="883" y2="431.75" stroke="#1a1a1a" stroke-width="0.8" opacity="0.9"/>
<text x="793" y="433.55" fill="#333" font-size="5" text-anchor="middle" letter-spacing="0.18">-12</text>
<line x1="702" y1="447.5" x2="778.75" y2="447.5" stroke="#1a1a1a" stroke-width="0.8" opacity="0.9"/>
<line x1="805.75" y1="447.5" x2="883" y2="447.5" stroke="#1a1a1a" stroke-width="0.8" opacity="0.9"/>
<text x="793" y="449.3" fill="#333" font-size="5" text-anchor="middle" letter-spacing="0.18">-14</text>
<line x1="702" y1="463.25" x2="778.75" y2="463.25" stroke="#1a1a1a" stroke-width="0.8" opacity="0.9"/>
<line x1="805.75" y1="463.25" x2="883" y2="463.25" stroke="#1a1a1a" stroke-width="0.8" opacity="0.9"/>
<text x="793" y="465.05" fill="#333" font-size="5" text-anchor="middle" letter-spacing="0.18">-16</text>
<line x1="702" y1="479.25" x2="778.75" y2="479.25" stroke="#1a1a1a" stroke-width="0.8" opacity="0.9"/>
<line x1="805.75" y1="479.25" x2="883" y2="479.25" stroke="#1a1a1a" stroke-width="0.8" opacity="0.9"/>
<text x="793" y="481.05" fill="#333" font-size="5" text-anchor="middle" letter-spacing="0.18">-18</text>
<line x1="702" y1="495" x2="778.75" y2="495" stroke="#1a1a1a" stroke-width="0.8" opacity="0.9"/>
<line x1="805.75" y1="495" x2="883" y2="495" stroke="#1a1a1a" stroke-width="0.8" opacity="0.9"/>
<text x="793" y="496.8" fill="#333" font-size="5" text-anchor="middle" letter-spacing="0.18">-20</text>
<rect x="883" y="337" width="7" height="190" fill="#1a1a1a"/>
<rect x="890" y="337" width="10" height="190" fill="#ffffff"/>
<rect x="890" y="395" width="10" height="132" fill="#e08080"/>
<rect x="890" y="364.5" width="10" height="1.75" fill="#d01818"/>
<text x="892.5" y="325" fill="#ddd" font-size="7" letter-spacing="0.25">In</text>
<text x="692.5" y="503.75" fill="#e0e0e0" font-size="6.5" text-anchor="middle" letter-spacing="0.23">Scale</text>
<circle cx="692" cy="515.64" r="8.32" fill="#000" opacity="0.6"/>
<circle cx="692" cy="515" r="8" fill="url(#kb)"/>
<circle cx="692" cy="515" r="7.68" fill="none" stroke="#555" stroke-width="0.64"/>
<circle cx="692" cy="515" r="6.72" fill="none" stroke="#5a5a5a" stroke-width="0.4" opacity="0.8"/>
<line x1="694.72" y1="510.29" x2="695.92" y2="508.21" stroke="#d07818" stroke-width="1.76" stroke-linecap="round"/>
<text x="692" y="528" fill="#ccc" font-size="4.5" text-anchor="middle" letter-spacing="0.16">-24 dB</text>
<rect x="702" y="533" width="181" height="4.5" fill="url(#slG)" rx="2"/>
<rect x="820" y="531" width="4.5" height="8" fill="#3a4060" stroke="#ccc" stroke-width="0.5"/>
<text x="897.5" y="539.5" fill="#ddd" font-size="8" text-anchor="middle" letter-spacing="0.28">L</text>
<rect x="681" y="545" width="219" height="7.5" fill="#121212"/>
<rect x="682.5" y="552.5" width="217.5" height="37.5" fill="#1e1e1e" stroke="#0c0c0c" stroke-width="1"/>
<text x="693" y="564.5" fill="#e0e0e0" font-size="6.5" text-anchor="middle" letter-spacing="0.23">M/S</text>
<circle cx="692.5" cy="575.75" r="5.3" fill="#111"/>
<circle cx="692.5" cy="575.75" r="4.5" fill="url(#ledd)" stroke="#7a7a7a" stroke-width="0.6"/>
<text x="731.25" y="564.5" fill="#e0e0e0" font-size="6.5" text-anchor="middle" letter-spacing="0.23">Oversample</text>
<rect x="725.75" y="570.75" width="9.75" height="9.25" fill="#801010" stroke="#300808" stroke-width="0.6"/>
<text x="730.6" y="577.8" fill="#ff5050" font-size="6" text-anchor="middle" letter-spacing="0.21">2x</text>
<text x="767.5" y="564.5" fill="#e0e0e0" font-size="6.5" text-anchor="middle" letter-spacing="0.23">Noise</text>
<circle cx="767.5" cy="575.75" r="4.6" fill="#111"/>
<circle cx="767.5" cy="575.75" r="3.8" fill="#e08020"/>
<circle cx="766.55" cy="574.8" r="1.71" fill="#ffd080" opacity="0.6"/>
<text x="807.5" y="564.5" fill="#e0e0e0" font-size="6.5" text-anchor="middle" letter-spacing="0.23">EQ Var.</text>
<circle cx="807.5" cy="575.75" r="4.6" fill="#111"/>
<circle cx="807.5" cy="575.75" r="3.8" fill="#e08020"/>
<circle cx="806.55" cy="574.8" r="1.71" fill="#ffd080" opacity="0.6"/>
<text x="846.25" y="564.5" fill="#e0e0e0" font-size="6.5" text-anchor="middle" letter-spacing="0.23">Phase(-)</text>
<circle cx="845.75" cy="575.75" r="5.3" fill="#111"/>
<circle cx="845.75" cy="575.75" r="4.5" fill="url(#ledd)" stroke="#7a7a7a" stroke-width="0.6"/>
<text x="887.5" y="564.5" fill="#e0e0e0" font-size="6.5" text-anchor="middle" letter-spacing="0.23">L/R-&gt;R/L</text>
<circle cx="887.0" cy="575.75" r="5.3" fill="#111"/>
<circle cx="887.0" cy="575.75" r="4.5" fill="url(#ledd)" stroke="#7a7a7a" stroke-width="0.6"/>
<rect x="600" y="590" width="300" height="10" fill="#101010"/>
<text x="599" y="597" fill="#ddd" font-size="7" letter-spacing="0.25">-Audio</text>
<rect x="814.5" y="592" width="7.5" height="7" fill="#2a3060" rx="1"/>
<text x="818.25" y="597.3" fill="#aab" font-size="5" text-anchor="middle" letter-spacing="0.18">&lt;&lt;</text>
<rect x="829.5" y="592" width="7.5" height="7" fill="#2a3060" rx="1"/>
<text x="833.25" y="597.3" fill="#aab" font-size="5" text-anchor="middle" letter-spacing="0.18">&gt;&gt;</text>
<rect x="865" y="592" width="15" height="7" fill="#2a3060" rx="1"/>
<text x="872.5" y="597.84" fill="#dde" font-size="6.5" text-anchor="middle" letter-spacing="0.23">A</text>
<rect x="892.5" y="592" width="12.5" height="7" fill="#2a3060" rx="1"/>
<text x="898.75" y="597.84" fill="#dde" font-size="6.5" text-anchor="middle" letter-spacing="0.23">A</text>
</g>
<g clip-path="url(#cH)">
<rect x="900" y="299" width="210" height="301" fill="url(#bgH)"/>
<text x="924.5" y="305.5" fill="#e4e4e4" font-size="8" text-anchor="middle" letter-spacing="0.28">In Gain</text>
<circle cx="923.75" cy="320.34" r="10.92" fill="#000" opacity="0.6"/>
<circle cx="923.75" cy="319.5" r="10.5" fill="url(#kb)"/>
<circle cx="923.75" cy="319.5" r="10.08" fill="none" stroke="#666" stroke-width="0.84"/>
<circle cx="923.75" cy="319.5" r="8.82" fill="none" stroke="#5a5a5a" stroke-width="0.4" opacity="0.8"/>
<line x1="925.6" y1="312.6" x2="926.41" y2="309.56" stroke="#d07818" stroke-width="2.31" stroke-linecap="round"/>
<text x="923.75" y="336.25" fill="#b8d0f0" font-size="7.5" text-anchor="middle" letter-spacing="0.26">1.07 dB</text>
<circle cx="974.25" cy="321.44" r="18.72" fill="#000" opacity="0.6"/>
<circle cx="974.25" cy="320" r="18" fill="url(#kb)"/>
<circle cx="974.25" cy="320" r="17.28" fill="none" stroke="#d8d8d8" stroke-width="1.44"/>
<circle cx="974.25" cy="320" r="15.12" fill="none" stroke="#5a5a5a" stroke-width="0.6300000000000001" opacity="0.8"/>
<line x1="977.42" y1="308.18" x2="978.82" y2="302.96" stroke="#d07818" stroke-width="3.96" stroke-linecap="round"/>
<text x="974.25" y="351.25" fill="#b8d0f0" font-size="8.5" text-anchor="middle" letter-spacing="0.3">2.77 dB</text>
<path d="M1032.13,339.57 A20.82857142857143,20.82857142857143 0 0 1 1035.63,299.49" fill="none" stroke="#e8c030" stroke-width="3.2399999999999998" stroke-linecap="butt"/>
<circle cx="1039.25" cy="321.44" r="18.72" fill="#000" opacity="0.6"/>
<circle cx="1039.25" cy="320" r="18" fill="url(#kb)"/>
<circle cx="1039.25" cy="320" r="17.28" fill="none" stroke="#d8d8d8" stroke-width="1.44"/>
<circle cx="1039.25" cy="320" r="15.12" fill="none" stroke="#5a5a5a" stroke-width="0.6300000000000001" opacity="0.8"/>
<line x1="1042.42" y1="308.18" x2="1043.82" y2="302.96" stroke="#d07818" stroke-width="3.96" stroke-linecap="round"/>
<text x="1039.25" y="351.25" fill="#b8d0f0" font-size="8.5" text-anchor="middle" letter-spacing="0.3">15.71 %</text>
<text x="1090" y="305.5" fill="#e4e4e4" font-size="8" text-anchor="middle" letter-spacing="0.28">Out Gain</text>
<circle cx="1090" cy="320.34" r="10.92" fill="#000" opacity="0.6"/>
<circle cx="1090" cy="319.5" r="10.5" fill="url(#kb)"/>
<circle cx="1090" cy="319.5" r="10.08" fill="none" stroke="#666" stroke-width="0.84"/>
<circle cx="1090" cy="319.5" r="8.82" fill="none" stroke="#5a5a5a" stroke-width="0.4" opacity="0.8"/>
<line x1="1090" y1="312.36" x2="1090" y2="309.21" stroke="#d07818" stroke-width="2.31" stroke-linecap="round"/>
<text x="1090" y="336.25" fill="#b8d0f0" font-size="7.5" text-anchor="middle" letter-spacing="0.26">0.00 dB</text>
<rect x="903.75" y="358.75" width="207.5" height="88.75" fill="url(#bgH)" stroke="#0a0a0a" stroke-width="1.5"/>
<text x="924.5" y="368.75" fill="#e4e4e4" font-size="8" text-anchor="middle" letter-spacing="0.28">Timing</text>
<text x="980" y="368.75" fill="#e4e4e4" font-size="8" text-anchor="middle" letter-spacing="0.28">Emphasis</text>
<text x="1035" y="368.75" fill="#e4e4e4" font-size="8" text-anchor="middle" letter-spacing="0.28">Tone</text>
<text x="1091.25" y="368.75" fill="#e4e4e4" font-size="8" text-anchor="middle" letter-spacing="0.28">Freq.</text>
<rect x="905" y="373.75" width="203.75" height="18.25" fill="url(#stH)"/>
<circle cx="923.75" cy="383.34" r="10.92" fill="#000" opacity="0.6"/>
<circle cx="923.75" cy="382.5" r="10.5" fill="url(#kb)"/>
<circle cx="923.75" cy="382.5" r="10.08" fill="none" stroke="#777" stroke-width="0.84"/>
<circle cx="923.75" cy="382.5" r="8.82" fill="none" stroke="#5a5a5a" stroke-width="0.4" opacity="0.8"/>
<line x1="928.8" y1="387.55" x2="931.03" y2="389.78" stroke="#d07818" stroke-width="2.31" stroke-linecap="round"/>
<text x="923.75" y="399.5" fill="#b8d0f0" font-size="7.5" text-anchor="middle" letter-spacing="0.26">5000</text>
<circle cx="979.5" cy="383.34" r="10.92" fill="#000" opacity="0.6"/>
<circle cx="979.5" cy="382.5" r="10.5" fill="url(#kb)"/>
<circle cx="979.5" cy="382.5" r="10.08" fill="none" stroke="#777" stroke-width="0.84"/>
<circle cx="979.5" cy="382.5" r="8.82" fill="none" stroke="#5a5a5a" stroke-width="0.4" opacity="0.8"/>
<line x1="984.55" y1="387.55" x2="986.78" y2="389.78" stroke="#d07818" stroke-width="2.31" stroke-linecap="round"/>
<text x="979.5" y="399.5" fill="#b8d0f0" font-size="7.5" text-anchor="middle" letter-spacing="0.26">100.00 %</text>
<circle cx="1035" cy="383.34" r="10.92" fill="#000" opacity="0.6"/>
<circle cx="1035" cy="382.5" r="10.5" fill="url(#kb)"/>
<circle cx="1035" cy="382.5" r="10.08" fill="none" stroke="#777" stroke-width="0.84"/>
<circle cx="1035" cy="382.5" r="8.82" fill="none" stroke="#5a5a5a" stroke-width="0.4" opacity="0.8"/>
<line x1="1029.95" y1="387.55" x2="1027.72" y2="389.78" stroke="#d07818" stroke-width="2.31" stroke-linecap="round"/>
<text x="1035" y="399.5" fill="#b8d0f0" font-size="7.5" text-anchor="middle" letter-spacing="0.26">-100.00 %</text>
<circle cx="1090" cy="383.34" r="10.92" fill="#000" opacity="0.6"/>
<circle cx="1090" cy="382.5" r="10.5" fill="url(#kb)"/>
<circle cx="1090" cy="382.5" r="10.08" fill="none" stroke="#777" stroke-width="0.84"/>
<circle cx="1090" cy="382.5" r="8.82" fill="none" stroke="#5a5a5a" stroke-width="0.4" opacity="0.8"/>
<line x1="1083.82" y1="378.93" x2="1081.09" y2="377.36" stroke="#d07818" stroke-width="2.31" stroke-linecap="round"/>
<text x="1090" y="399.5" fill="#b8d0f0" font-size="7.5" text-anchor="middle" letter-spacing="0.26">585 Hz</text>
<text x="1008.75" y="415.5" fill="#e4e4e4" font-size="8" text-anchor="middle" letter-spacing="0.28">Saturation Type</text>
<text x="923.75" y="422.5" fill="#e4e4e4" font-size="8" text-anchor="middle" letter-spacing="0.28">Solo(L)</text>
<circle cx="923.75" cy="435" r="5.6" fill="#111"/>
<circle cx="923.75" cy="435" r="4.8" fill="url(#ledd)" stroke="#7a7a7a" stroke-width="0.6"/>
<rect x="973" y="422" width="20.75" height="14.25" fill="url(#neH)" stroke="#2a2a40" stroke-width="1"/>
<text x="983.4" y="432.5" fill="#300000" font-size="8" text-anchor="middle" font-weight="bold" letter-spacing="0.28">Ne</text>
<circle cx="1007" cy="428.34" r="10.92" fill="#000" opacity="0.6"/>
<circle cx="1007" cy="427.5" r="10.5" fill="url(#kb)"/>
<circle cx="1007" cy="427.5" r="10.08" fill="none" stroke="#777" stroke-width="0.84"/>
<circle cx="1007" cy="427.5" r="8.82" fill="none" stroke="#5a5a5a" stroke-width="0.4" opacity="0.8"/>
<line x1="1001.95" y1="422.45" x2="999.72" y2="420.22" stroke="#d07818" stroke-width="2.31" stroke-linecap="round"/>
<text x="1007" y="444.5" fill="#b8d0f0" font-size="7.5" text-anchor="middle" letter-spacing="0.26">32.7 %</text>
<rect x="1021.75" y="422" width="20.75" height="14.25" fill="url(#krH)" stroke="#2a2a40" stroke-width="1"/>
<text x="1032.1" y="432.5" fill="#001830" font-size="8" text-anchor="middle" font-weight="bold" letter-spacing="0.28">Kr</text>
<text x="1061.75" y="422.5" fill="#e4e4e4" font-size="8" text-anchor="middle" letter-spacing="0.28">H+</text>
<circle cx="1061.75" cy="435" r="5.6" fill="#111"/>
<circle cx="1061.75" cy="435" r="4.8" fill="url(#ledd)" stroke="#7a7a7a" stroke-width="0.6"/>
<text x="1090.75" y="422.5" fill="#e4e4e4" font-size="8" text-anchor="middle" letter-spacing="0.28">Solo(H)</text>
<circle cx="1090" cy="435" r="5.6" fill="#111"/>
<circle cx="1090" cy="435" r="4.8" fill="url(#ledd)" stroke="#7a7a7a" stroke-width="0.6"/>
<rect x="905.5" y="454.5" width="95.0" height="67.5" fill="#1e1e1e" stroke="#0a0a0a" stroke-width="1.5"/>
<text x="933.75" y="468" fill="#e4e4e4" font-size="8" text-anchor="middle" letter-spacing="0.28">M/S</text>
<circle cx="951.25" cy="466.25" r="5.1" fill="#111"/>
<circle cx="951.25" cy="466.25" r="4.3" fill="#e08020"/>
<circle cx="950.175" cy="465.175" r="1.935" fill="#ffd080" opacity="0.6"/>
<text x="925.7" y="485" fill="#e4e4e4" font-size="8" text-anchor="middle" letter-spacing="0.28">Mid</text>
<circle cx="925" cy="497.84" r="10.92" fill="#000" opacity="0.6"/>
<circle cx="925" cy="497" r="10.5" fill="url(#kb)"/>
<circle cx="925" cy="497" r="10.08" fill="none" stroke="#777" stroke-width="0.84"/>
<circle cx="925" cy="497" r="8.82" fill="none" stroke="#5a5a5a" stroke-width="0.4" opacity="0.8"/>
<line x1="932.14" y1="497" x2="935.29" y2="497" stroke="#d07818" stroke-width="2.31" stroke-linecap="round"/>
<text x="925.7" y="513.75" fill="#b8d0f0" font-size="7.5" text-anchor="middle" letter-spacing="0.26">15.1 dB</text>
<text x="978.2" y="485" fill="#e4e4e4" font-size="8" text-anchor="middle" letter-spacing="0.28">Side</text>
<circle cx="977.5" cy="497.84" r="10.92" fill="#000" opacity="0.6"/>
<circle cx="977.5" cy="497" r="10.5" fill="url(#kb)"/>
<circle cx="977.5" cy="497" r="10.08" fill="none" stroke="#777" stroke-width="0.84"/>
<circle cx="977.5" cy="497" r="8.82" fill="none" stroke="#5a5a5a" stroke-width="0.4" opacity="0.8"/>
<line x1="977.5" y1="489.86" x2="977.5" y2="486.71" stroke="#d07818" stroke-width="2.31" stroke-linecap="round"/>
<text x="978.2" y="513.75" fill="#b8d0f0" font-size="7.5" text-anchor="middle" letter-spacing="0.26">0.0 dB</text>
<rect x="1015.5" y="454.5" width="92.0" height="67.5" fill="#1e1e1e" stroke="#0a0a0a" stroke-width="1.5"/>
<circle cx="1061.25" cy="465.5" r="5.5" fill="#1a3a6a"/>
<circle cx="1061.25" cy="465.5" r="4.3" fill="url(#ledd)"/>
<text x="1035" y="485" fill="#e4e4e4" font-size="8" text-anchor="middle" letter-spacing="0.28">Clip</text>
<circle cx="1035" cy="497.84" r="10.92" fill="#000" opacity="0.6"/>
<circle cx="1035" cy="497" r="10.5" fill="url(#kb)"/>
<circle cx="1035" cy="497" r="10.08" fill="none" stroke="#777" stroke-width="0.84"/>
<circle cx="1035" cy="497" r="8.82" fill="none" stroke="#5a5a5a" stroke-width="0.4" opacity="0.8"/>
<line x1="1040.05" y1="502.05" x2="1042.28" y2="504.28" stroke="#d07818" stroke-width="2.31" stroke-linecap="round"/>
<text x="1035.75" y="513.75" fill="#b8d0f0" font-size="7.5" text-anchor="middle" letter-spacing="0.26">-0.33 dB</text>
<text x="1089.25" y="485.5" fill="#e4e4e4" font-size="8" text-anchor="middle" letter-spacing="0.28">Post</text>
<circle cx="1090.5" cy="497.5" r="5.6" fill="#111"/>
<circle cx="1090.5" cy="497.5" r="4.8" fill="url(#ledd)" stroke="#7a7a7a" stroke-width="0.6"/>
<rect x="903.75" y="526.25" width="207.5" height="53.75" fill="url(#bgH)" stroke="#0a0a0a" stroke-width="1.5"/>
<text x="932.5" y="539.5" fill="#e4e4e4" font-size="8" text-anchor="middle" letter-spacing="0.28">Oversample</text>
<text x="980" y="539.5" fill="#e4e4e4" font-size="8" text-anchor="middle" letter-spacing="0.28">Wide</text>
<text x="1037" y="539.5" fill="#e4e4e4" font-size="8" text-anchor="middle" letter-spacing="0.28">Balance</text>
<text x="1090.5" y="539.5" fill="#e4e4e4" font-size="8" text-anchor="middle" letter-spacing="0.28">Mix</text>
<rect x="905" y="543.75" width="203.75" height="18.75" fill="url(#stH)"/>
<rect x="924.25" y="546.25" width="14.5" height="13.75" fill="#a02818" stroke="#2a2a40" stroke-width="1"/>
<text x="931.5" y="556" fill="#ff9080" font-size="8" text-anchor="middle" letter-spacing="0.28">2x</text>
<circle cx="979.5" cy="554.09" r="10.92" fill="#000" opacity="0.6"/>
<circle cx="979.5" cy="553.25" r="10.5" fill="url(#kb)"/>
<circle cx="979.5" cy="553.25" r="10.08" fill="none" stroke="#777" stroke-width="0.84"/>
<circle cx="979.5" cy="553.25" r="8.82" fill="none" stroke="#5a5a5a" stroke-width="0.4" opacity="0.8"/>
<line x1="983.07" y1="547.07" x2="984.64" y2="544.34" stroke="#d07818" stroke-width="2.31" stroke-linecap="round"/>
<text x="979.5" y="570.5" fill="#b8d0f0" font-size="7.5" text-anchor="middle" letter-spacing="0.26">100.0 %</text>
<circle cx="1035" cy="554.09" r="10.92" fill="#000" opacity="0.6"/>
<circle cx="1035" cy="553.25" r="10.5" fill="url(#kb)"/>
<circle cx="1035" cy="553.25" r="10.08" fill="none" stroke="#777" stroke-width="0.84"/>
<circle cx="1035" cy="553.25" r="8.82" fill="none" stroke="#5a5a5a" stroke-width="0.4" opacity="0.8"/>
<line x1="1035" y1="546.11" x2="1035" y2="542.96" stroke="#d07818" stroke-width="2.31" stroke-linecap="round"/>
<text x="1035" y="570.5" fill="#b8d0f0" font-size="7.5" text-anchor="middle" letter-spacing="0.26">0.00 dB</text>
<circle cx="1090" cy="554.09" r="10.92" fill="#000" opacity="0.6"/>
<circle cx="1090" cy="553.25" r="10.5" fill="url(#kb)"/>
<circle cx="1090" cy="553.25" r="10.08" fill="none" stroke="#777" stroke-width="0.84"/>
<circle cx="1090" cy="553.25" r="8.82" fill="none" stroke="#5a5a5a" stroke-width="0.4" opacity="0.8"/>
<line x1="1097.14" y1="553.25" x2="1100.29" y2="553.25" stroke="#d07818" stroke-width="2.31" stroke-linecap="round"/>
<text x="1090" y="570.5" fill="#b8d0f0" font-size="7.5" text-anchor="middle" letter-spacing="0.26">80 %</text>
<text x="952" y="590.5" fill="#e4e4e4" font-size="8" text-anchor="middle" letter-spacing="0.28">Bypass</text>
<text x="1007" y="590.5" fill="#e4e4e4" font-size="8" text-anchor="middle" letter-spacing="0.28">Random</text>
<text x="1065.75" y="590.5" fill="#e4e4e4" font-size="8" text-anchor="middle" letter-spacing="0.28">Scale</text>
<circle cx="952" cy="601" r="5.6" fill="#111"/>
<circle cx="952" cy="601" r="4.8" fill="url(#ledd)" stroke="#7a7a7a" stroke-width="0.6"/>
<circle cx="1006" cy="601" r="5.6" fill="#111"/>
<circle cx="1006" cy="601" r="4.8" fill="url(#ledd)" stroke="#7a7a7a" stroke-width="0.6"/>
<circle cx="1065.75" cy="601.84" r="10.92" fill="#000" opacity="0.6"/>
<circle cx="1065.75" cy="601" r="10.5" fill="url(#kb)"/>
<circle cx="1065.75" cy="601" r="10.08" fill="none" stroke="#777" stroke-width="0.84"/>
<circle cx="1065.75" cy="601" r="8.82" fill="none" stroke="#5a5a5a" stroke-width="0.4" opacity="0.8"/>
<line x1="1069.32" y1="594.82" x2="1070.89" y2="592.09" stroke="#d07818" stroke-width="2.31" stroke-linecap="round"/>
<rect x="1108.75" y="299" width="91.25" height="301" fill="#050505"/>
<rect x="1116.25" y="299" width="32.5" height="301" fill="#ffffff"/>
<rect x="1116.25" y="476.25" width="32.5" height="123.75" fill="#e8a0a8"/>
<rect x="1132.5" y="444.5" width="16.25" height="32.5" fill="#e8a0a8"/>
<rect x="1116.25" y="399.5" width="16.25" height="1.75" fill="#c02838"/>
<rect x="1132.5" y="388.75" width="16.25" height="1.75" fill="#c02838"/>
<rect x="1153" y="299" width="39.5" height="301" fill="#ffffff"/>
<rect x="1153" y="453" width="39.5" height="147" fill="#e8a0a8"/>
<rect x="1172.5" y="419.5" width="20.0" height="34.5" fill="#e8a0a8"/>
<rect x="1157.5" y="353.75" width="10.5" height="246.25" fill="#cc5a6c"/>
<rect x="1177" y="343" width="10" height="245.75" fill="#cc5a6c"/>
<rect x="1153" y="363.75" width="19.5" height="1.75" fill="#c02838"/>
<rect x="1172.5" y="357" width="20.0" height="2.5" fill="#c02838"/>
<line x1="1116.25" y1="302.2" x2="1123.25" y2="302.2" stroke="#222" stroke-width="0.8"/>
<line x1="1141.75" y1="302.2" x2="1148.75" y2="302.2" stroke="#222" stroke-width="0.8"/>
<text x="1132.5" y="304.5" fill="#222" font-size="6" text-anchor="middle" letter-spacing="0.21">-0.6</text>
<line x1="1153" y1="302.2" x2="1160" y2="302.2" stroke="#222" stroke-width="0.8"/>
<line x1="1185.5" y1="302.2" x2="1192.5" y2="302.2" stroke="#222" stroke-width="0.8"/>
<text x="1172.5" y="304.5" fill="#222" font-size="6" text-anchor="middle" letter-spacing="0.21">-0.6</text>
<line x1="1116.25" y1="315.2" x2="1123.25" y2="315.2" stroke="#222" stroke-width="0.8"/>
<line x1="1141.75" y1="315.2" x2="1148.75" y2="315.2" stroke="#222" stroke-width="0.8"/>
<text x="1132.5" y="317.5" fill="#222" font-size="6" text-anchor="middle" letter-spacing="0.21">-1.5</text>
<line x1="1153" y1="315.2" x2="1160" y2="315.2" stroke="#222" stroke-width="0.8"/>
<line x1="1185.5" y1="315.2" x2="1192.5" y2="315.2" stroke="#222" stroke-width="0.8"/>
<text x="1172.5" y="317.5" fill="#222" font-size="6" text-anchor="middle" letter-spacing="0.21">-1.5</text>
<line x1="1116.25" y1="328.2" x2="1123.25" y2="328.2" stroke="#222" stroke-width="0.8"/>
<line x1="1141.75" y1="328.2" x2="1148.75" y2="328.2" stroke="#222" stroke-width="0.8"/>
<text x="1132.5" y="330.5" fill="#222" font-size="6" text-anchor="middle" letter-spacing="0.21">-2.5</text>
<line x1="1153" y1="328.2" x2="1160" y2="328.2" stroke="#222" stroke-width="0.8"/>
<line x1="1185.5" y1="328.2" x2="1192.5" y2="328.2" stroke="#222" stroke-width="0.8"/>
<text x="1172.5" y="330.5" fill="#222" font-size="6" text-anchor="middle" letter-spacing="0.21">-2.5</text>
<line x1="1116.25" y1="342.2" x2="1123.25" y2="342.2" stroke="#222" stroke-width="0.8"/>
<line x1="1141.75" y1="342.2" x2="1148.75" y2="342.2" stroke="#222" stroke-width="0.8"/>
<text x="1132.5" y="344.5" fill="#222" font-size="6" text-anchor="middle" letter-spacing="0.21">-3.5</text>
<line x1="1153" y1="342.2" x2="1160" y2="342.2" stroke="#222" stroke-width="0.8"/>
<line x1="1185.5" y1="342.2" x2="1192.5" y2="342.2" stroke="#222" stroke-width="0.8"/>
<text x="1172.5" y="344.5" fill="#222" font-size="6" text-anchor="middle" letter-spacing="0.21">-3.5</text>
<line x1="1116.25" y1="362.2" x2="1123.25" y2="362.2" stroke="#222" stroke-width="0.8"/>
<line x1="1141.75" y1="362.2" x2="1148.75" y2="362.2" stroke="#222" stroke-width="0.8"/>
<text x="1132.5" y="364.5" fill="#222" font-size="6" text-anchor="middle" letter-spacing="0.21">-5</text>
<line x1="1153" y1="362.2" x2="1160" y2="362.2" stroke="#222" stroke-width="0.8"/>
<line x1="1185.5" y1="362.2" x2="1192.5" y2="362.2" stroke="#222" stroke-width="0.8"/>
<text x="1172.5" y="364.5" fill="#222" font-size="6" text-anchor="middle" letter-spacing="0.21">-5</text>
<line x1="1116.25" y1="376.45" x2="1123.25" y2="376.45" stroke="#222" stroke-width="0.8"/>
<line x1="1141.75" y1="376.45" x2="1148.75" y2="376.45" stroke="#222" stroke-width="0.8"/>
<text x="1132.5" y="378.75" fill="#222" font-size="6" text-anchor="middle" letter-spacing="0.21">-6</text>
<line x1="1153" y1="376.45" x2="1160" y2="376.45" stroke="#222" stroke-width="0.8"/>
<line x1="1185.5" y1="376.45" x2="1192.5" y2="376.45" stroke="#222" stroke-width="0.8"/>
<text x="1172.5" y="378.75" fill="#222" font-size="6" text-anchor="middle" letter-spacing="0.21">-6</text>
<line x1="1116.25" y1="389.7" x2="1123.25" y2="389.7" stroke="#222" stroke-width="0.8"/>
<line x1="1141.75" y1="389.7" x2="1148.75" y2="389.7" stroke="#222" stroke-width="0.8"/>
<text x="1132.5" y="392" fill="#222" font-size="6" text-anchor="middle" letter-spacing="0.21">-7</text>
<line x1="1153" y1="389.7" x2="1160" y2="389.7" stroke="#222" stroke-width="0.8"/>
<line x1="1185.5" y1="389.7" x2="1192.5" y2="389.7" stroke="#222" stroke-width="0.8"/>
<text x="1172.5" y="392" fill="#222" font-size="6" text-anchor="middle" letter-spacing="0.21">-7</text>
<line x1="1116.25" y1="403.2" x2="1123.25" y2="403.2" stroke="#222" stroke-width="0.8"/>
<line x1="1141.75" y1="403.2" x2="1148.75" y2="403.2" stroke="#222" stroke-width="0.8"/>
<text x="1132.5" y="405.5" fill="#222" font-size="6" text-anchor="middle" letter-spacing="0.21">-8</text>
<line x1="1153" y1="403.2" x2="1160" y2="403.2" stroke="#222" stroke-width="0.8"/>
<line x1="1185.5" y1="403.2" x2="1192.5" y2="403.2" stroke="#222" stroke-width="0.8"/>
<text x="1172.5" y="405.5" fill="#222" font-size="6" text-anchor="middle" letter-spacing="0.21">-8</text>
<line x1="1116.25" y1="417.2" x2="1123.25" y2="417.2" stroke="#222" stroke-width="0.8"/>
<line x1="1141.75" y1="417.2" x2="1148.75" y2="417.2" stroke="#222" stroke-width="0.8"/>
<text x="1132.5" y="419.5" fill="#222" font-size="6" text-anchor="middle" letter-spacing="0.21">-9</text>
<line x1="1153" y1="417.2" x2="1160" y2="417.2" stroke="#222" stroke-width="0.8"/>
<line x1="1185.5" y1="417.2" x2="1192.5" y2="417.2" stroke="#222" stroke-width="0.8"/>
<text x="1172.5" y="419.5" fill="#222" font-size="6" text-anchor="middle" letter-spacing="0.21">-9</text>
<line x1="1116.25" y1="430.2" x2="1123.25" y2="430.2" stroke="#222" stroke-width="0.8"/>
<line x1="1141.75" y1="430.2" x2="1148.75" y2="430.2" stroke="#222" stroke-width="0.8"/>
<text x="1132.5" y="432.5" fill="#222" font-size="6" text-anchor="middle" letter-spacing="0.21">-10</text>
<line x1="1153" y1="430.2" x2="1160" y2="430.2" stroke="#222" stroke-width="0.8"/>
<line x1="1185.5" y1="430.2" x2="1192.5" y2="430.2" stroke="#222" stroke-width="0.8"/>
<text x="1172.5" y="432.5" fill="#222" font-size="6" text-anchor="middle" letter-spacing="0.21">-10</text>
<line x1="1116.25" y1="457.7" x2="1123.25" y2="457.7" stroke="#222" stroke-width="0.8"/>
<line x1="1141.75" y1="457.7" x2="1148.75" y2="457.7" stroke="#222" stroke-width="0.8"/>
<text x="1132.5" y="460" fill="#222" font-size="6" text-anchor="middle" letter-spacing="0.21">-12</text>
<line x1="1153" y1="457.7" x2="1160" y2="457.7" stroke="#222" stroke-width="0.8"/>
<line x1="1185.5" y1="457.7" x2="1192.5" y2="457.7" stroke="#222" stroke-width="0.8"/>
<text x="1172.5" y="460" fill="#222" font-size="6" text-anchor="middle" letter-spacing="0.21">-12</text>
<line x1="1116.25" y1="484.7" x2="1123.25" y2="484.7" stroke="#222" stroke-width="0.8"/>
<line x1="1141.75" y1="484.7" x2="1148.75" y2="484.7" stroke="#222" stroke-width="0.8"/>
<text x="1132.5" y="487" fill="#222" font-size="6" text-anchor="middle" letter-spacing="0.21">-14</text>
<line x1="1153" y1="484.7" x2="1160" y2="484.7" stroke="#222" stroke-width="0.8"/>
<line x1="1185.5" y1="484.7" x2="1192.5" y2="484.7" stroke="#222" stroke-width="0.8"/>
<text x="1172.5" y="487" fill="#222" font-size="6" text-anchor="middle" letter-spacing="0.21">-14</text>
<line x1="1116.25" y1="512.2" x2="1123.25" y2="512.2" stroke="#222" stroke-width="0.8"/>
<line x1="1141.75" y1="512.2" x2="1148.75" y2="512.2" stroke="#222" stroke-width="0.8"/>
<text x="1132.5" y="514.5" fill="#222" font-size="6" text-anchor="middle" letter-spacing="0.21">-16</text>
<line x1="1153" y1="512.2" x2="1160" y2="512.2" stroke="#222" stroke-width="0.8"/>
<line x1="1185.5" y1="512.2" x2="1192.5" y2="512.2" stroke="#222" stroke-width="0.8"/>
<text x="1172.5" y="514.5" fill="#222" font-size="6" text-anchor="middle" letter-spacing="0.21">-16</text>
<line x1="1116.25" y1="539.7" x2="1123.25" y2="539.7" stroke="#222" stroke-width="0.8"/>
<line x1="1141.75" y1="539.7" x2="1148.75" y2="539.7" stroke="#222" stroke-width="0.8"/>
<text x="1132.5" y="542" fill="#222" font-size="6" text-anchor="middle" letter-spacing="0.21">-18</text>
<line x1="1153" y1="539.7" x2="1160" y2="539.7" stroke="#222" stroke-width="0.8"/>
<line x1="1185.5" y1="539.7" x2="1192.5" y2="539.7" stroke="#222" stroke-width="0.8"/>
<text x="1172.5" y="542" fill="#222" font-size="6" text-anchor="middle" letter-spacing="0.21">-18</text>
<line x1="1116.25" y1="566.95" x2="1123.25" y2="566.95" stroke="#222" stroke-width="0.8"/>
<line x1="1141.75" y1="566.95" x2="1148.75" y2="566.95" stroke="#222" stroke-width="0.8"/>
<text x="1132.5" y="569.25" fill="#222" font-size="6" text-anchor="middle" letter-spacing="0.21">-20</text>
<line x1="1153" y1="566.95" x2="1160" y2="566.95" stroke="#222" stroke-width="0.8"/>
<line x1="1185.5" y1="566.95" x2="1192.5" y2="566.95" stroke="#222" stroke-width="0.8"/>
<text x="1172.5" y="569.25" fill="#222" font-size="6" text-anchor="middle" letter-spacing="0.21">-20</text>
</g>
<g clip-path="url(#cI)">
<rect x="0" y="600" width="400" height="300" fill="#0c0c0c"/>
<rect x="0" y="601" width="400" height="37" fill="url(#strI)"/>
<rect x="0" y="606.7" width="1.7" height="28.299999999999955" fill="#c08a3a"/>
<rect x="0" y="636" width="400" height="7" fill="#141414"/>
<text x="321.25" y="635" fill="#c8803a" font-size="36" font-weight="bold" stroke="#0a0a0a" stroke-width="1.2" paint-order="stroke">Phre</text>
<rect x="0" y="643" width="400" height="224" fill="url(#bgI)"/>
<rect x="0" y="643" width="400" height="224" fill="url(#grdI)"/>
<text x="131.5" y="685.8" fill="#eeeeee" font-size="21" text-anchor="middle" letter-spacing="0.74">Saturation</text>
<path d="M108.24,775.65 A42.3,42.3 0 0 1 94.81,721.80" fill="none" stroke="url(#arcI1)" stroke-width="4.5" stroke-linecap="butt"/>
<circle cx="132.5" cy="743" r="36.8" fill="#000" opacity="0.5"/>
<circle cx="132.5" cy="741" r="35.8" fill="url(#kb)"/>
<circle cx="132.5" cy="741" r="35.0" fill="none" stroke="#d8d8d8" stroke-width="1.6"/>
<circle cx="132.5" cy="741" r="32.3" fill="none" stroke="#555" stroke-width="1.2"/>
<line x1="107.32" y1="731.83" x2="99.8" y2="729.1" stroke="#c86a10" stroke-width="5" stroke-linecap="round"/>
<text x="131.7" y="804.2" fill="#e0ecff" font-size="15" text-anchor="middle" letter-spacing="0.53">1.62 %</text>
<text x="345.5" y="685" fill="#eeeeee" font-size="21" text-anchor="middle" letter-spacing="0.74">Out Gain</text>
<path d="M321.23,777.29 A42.5,42.5 0 0 1 343.75,698.75" fill="none" stroke="url(#arcI1)" stroke-width="4.5" stroke-linecap="butt"/>
<circle cx="343.75" cy="743.25" r="37" fill="#000" opacity="0.5"/>
<circle cx="343.75" cy="741.25" r="36" fill="url(#kb)"/>
<circle cx="343.75" cy="741.25" r="35.2" fill="none" stroke="#d8d8d8" stroke-width="1.6"/>
<circle cx="343.75" cy="741.25" r="32.5" fill="none" stroke="#555" stroke-width="1.2"/>
<line x1="343.75" y1="714.25" x2="343.75" y2="706.25" stroke="#c86a10" stroke-width="5" stroke-linecap="round"/>
<text x="343.75" y="803.75" fill="#e0ecff" font-size="15" text-anchor="middle" letter-spacing="0.53">0.00 dB</text>
<text x="-1" y="842" fill="#e8e8e8" font-size="16" letter-spacing="0.56">pass</text>
<circle cx="55.8" cy="836.7" r="9" fill="#151515"/>
<circle cx="55.8" cy="836.7" r="7.8" fill="url(#ledd)" stroke="#444" stroke-width="0.8"/>
<text x="213.75" y="842.5" fill="#e0e0e0" font-size="16" letter-spacing="0.56">Type:</text>
<rect x="263.75" y="823.75" width="25.0" height="25.0" fill="url(#tyI)" stroke="#151525" stroke-width="1.5"/>
<text x="276.25" y="842" fill="#f8e0e0" font-size="15" text-anchor="middle" letter-spacing="0.53">A</text>
<rect x="0" y="867" width="400" height="3" fill="#111"/>
<rect x="0" y="870" width="400" height="30" fill="url(#strI)"/>
<rect x="338.75" y="873.75" width="20.0" height="20.0" fill="#3a3e60"/>
<text x="348.75" y="888" fill="#eef" font-size="11" text-anchor="middle" letter-spacing="0.39">&lt;&lt;</text>
<rect x="368.75" y="873.75" width="18.75" height="20.0" fill="#242428"/>
<text x="378.1" y="888" fill="#4a4a50" font-size="11" text-anchor="middle" letter-spacing="0.39">&gt;&gt;</text>
</g>
<g clip-path="url(#cJ)">
<rect x="400" y="600" width="400" height="300" fill="#0c0c0c"/>
<rect x="410" y="600" width="265" height="220" fill="url(#bgJ)"/>
<rect x="400" y="600" width="275" height="300" fill="url(#grdJ)"/>
<path d="M440.49,643.89 A28.4,28.4 0 0 1 436.00,592.60" fill="none" stroke="#e8b838" stroke-width="3.5" stroke-linecap="butt"/>
<circle cx="450.2" cy="618.7" r="24.9" fill="#000" opacity="0.5"/>
<circle cx="450.2" cy="617.2" r="23.9" fill="url(#kb)"/>
<circle cx="450.2" cy="617.2" r="23.2" fill="none" stroke="#d8d8d8" stroke-width="1.4"/>
<circle cx="450.2" cy="617.2" r="20.9" fill="none" stroke="#4a4a4a" stroke-width="1"/>
<line x1="450.2" y1="598.3" x2="450.2" y2="594.3" stroke="#c86a10" stroke-width="3" stroke-linecap="round"/>
<text x="449.7" y="659.2" fill="#dce6ff" font-size="12" text-anchor="middle" letter-spacing="0.42">6.81</text>
<circle cx="538.4" cy="618.7" r="25" fill="#000" opacity="0.5"/>
<circle cx="538.4" cy="617.2" r="24" fill="url(#kb)"/>
<circle cx="538.4" cy="617.2" r="23.3" fill="none" stroke="#d8d8d8" stroke-width="1.4"/>
<circle cx="538.4" cy="617.2" r="21" fill="none" stroke="#4a4a4a" stroke-width="1"/>
<line x1="538.4" y1="598.2" x2="538.4" y2="594.2" stroke="#c86a10" stroke-width="3" stroke-linecap="round"/>
<text x="506.9" y="645.2" fill="#5a5a5a" font-size="11" text-anchor="middle" letter-spacing="0.39">Soft</text>
<text x="570.3" y="645.2" fill="#5a5a5a" font-size="11" text-anchor="middle" letter-spacing="0.39">Hard</text>
<text x="538.4" y="659.2" fill="#dce6ff" font-size="12" text-anchor="middle" letter-spacing="0.42">50.0</text>
<circle cx="626.3" cy="618.7" r="25" fill="#000" opacity="0.5"/>
<circle cx="626.3" cy="617.2" r="24" fill="url(#kb)"/>
<circle cx="626.3" cy="617.2" r="23.3" fill="none" stroke="#d8d8d8" stroke-width="1.4"/>
<circle cx="626.3" cy="617.2" r="21" fill="none" stroke="#4a4a4a" stroke-width="1"/>
<line x1="626.3" y1="598.2" x2="626.3" y2="594.2" stroke="#c86a10" stroke-width="3" stroke-linecap="round"/>
<text x="625.9" y="659.2" fill="#dce6ff" font-size="12" text-anchor="middle" letter-spacing="0.42">0.00 dB</text>
<text x="433.4" y="690.7" fill="#e4e4e4" font-size="11" text-anchor="middle" letter-spacing="0.39">Trim</text>
<circle cx="461.1" cy="688.3" r="7.5" fill="#1a8a1a"/>
<circle cx="461.1" cy="688.3" r="5.8" fill="#70d040"/>
<circle cx="460" cy="687" r="2.5" fill="#b0f080" opacity="0.8"/>
<text x="461.8" y="707" fill="#e4e4e4" font-size="8" text-anchor="middle" letter-spacing="0.28">Learn</text>
<circle cx="461.1" cy="717.5" r="7.3" fill="#111"/>
<circle cx="461.1" cy="717.5" r="6.5" fill="url(#ledd)" stroke="#7a7a7a" stroke-width="0.78"/>
<circle cx="433.4" cy="710.02" r="14.56" fill="#000" opacity="0.6"/>
<circle cx="433.4" cy="708.9" r="14" fill="url(#kb)"/>
<circle cx="433.4" cy="708.9" r="13.44" fill="none" stroke="#555" stroke-width="1.12"/>
<circle cx="433.4" cy="708.9" r="11.76" fill="none" stroke="#5a5a5a" stroke-width="0.49000000000000005" opacity="0.8"/>
<line x1="424.02" y1="707.25" x2="419.89" y2="706.52" stroke="#d07818" stroke-width="3.08" stroke-linecap="round"/>
<text x="433.4" y="731.5" fill="#dce6ff" font-size="10" text-anchor="middle" letter-spacing="0.35">0.00 dB</text>
<text x="502.7" y="690.7" fill="#e4e4e4" font-size="11" text-anchor="middle" letter-spacing="0.39">Attack</text>
<circle cx="502" cy="710.02" r="14.56" fill="#000" opacity="0.6"/>
<circle cx="502" cy="708.9" r="14" fill="url(#kb)"/>
<circle cx="502" cy="708.9" r="13.44" fill="none" stroke="#555" stroke-width="1.12"/>
<circle cx="502" cy="708.9" r="11.76" fill="none" stroke="#5a5a5a" stroke-width="0.49000000000000005" opacity="0.8"/>
<line x1="493.76" y1="713.66" x2="490.12" y2="715.76" stroke="#d07818" stroke-width="3.08" stroke-linecap="round"/>
<text x="502" y="731.5" fill="#dce6ff" font-size="10" text-anchor="middle" letter-spacing="0.35">0.6 ms</text>
<text x="551.9000000000001" y="690.7" fill="#e4e4e4" font-size="11" text-anchor="middle" letter-spacing="0.39">Release</text>
<circle cx="551.2" cy="710.02" r="14.56" fill="#000" opacity="0.6"/>
<circle cx="551.2" cy="708.9" r="14" fill="url(#kb)"/>
<circle cx="551.2" cy="708.9" r="13.44" fill="none" stroke="#555" stroke-width="1.12"/>
<circle cx="551.2" cy="708.9" r="11.76" fill="none" stroke="#5a5a5a" stroke-width="0.49000000000000005" opacity="0.8"/>
<line x1="545.08" y1="701.61" x2="542.38" y2="698.39" stroke="#d07818" stroke-width="3.08" stroke-linecap="round"/>
<text x="551.2" y="731.5" fill="#dce6ff" font-size="10" text-anchor="middle" letter-spacing="0.35">213.0 ms</text>
<text x="598.6" y="690.7" fill="#e4e4e4" font-size="11" text-anchor="middle" letter-spacing="0.39">Link</text>
<circle cx="597.9" cy="710.02" r="14.56" fill="#000" opacity="0.6"/>
<circle cx="597.9" cy="708.9" r="14" fill="url(#kb)"/>
<circle cx="597.9" cy="708.9" r="13.44" fill="none" stroke="#555" stroke-width="1.12"/>
<circle cx="597.9" cy="708.9" r="11.76" fill="none" stroke="#5a5a5a" stroke-width="0.49000000000000005" opacity="0.8"/>
<line x1="588.52" y1="707.25" x2="584.39" y2="706.52" stroke="#d07818" stroke-width="3.08" stroke-linecap="round"/>
<text x="597.9" y="731.5" fill="#dce6ff" font-size="10" text-anchor="middle" letter-spacing="0.35">18.5 %</text>
<text x="640.3" y="690.7" fill="#e4e4e4" font-size="11" text-anchor="middle" letter-spacing="0.39">Out Clip</text>
<circle cx="639.2" cy="708.9" r="6.3" fill="#111"/>
<circle cx="639.2" cy="708.9" r="5.5" fill="#e08020"/>
<circle cx="637.825" cy="707.525" r="2.475" fill="#ffd080" opacity="0.6"/>
<rect x="413.5" y="747.5" width="84.0" height="65.29999999999995" fill="#1a1a1a" stroke="#2a2a2a" stroke-width="1"/>
<text x="433.1" y="761.5" fill="#e4e4e4" font-size="10" text-anchor="middle" letter-spacing="0.35">M/S</text>
<circle cx="432.2" cy="779.2" r="7.3" fill="#111"/>
<circle cx="432.2" cy="779.2" r="6.5" fill="url(#ledd)" stroke="#7a7a7a" stroke-width="0.78"/>
<text x="470.7" y="761.5" fill="#e4e4e4" font-size="10" text-anchor="middle" letter-spacing="0.35">Adjust</text>
<circle cx="470" cy="778.5" r="14" fill="#1e1e1e" stroke="#2a2a2a" stroke-width="1.5"/>
<line x1="470" y1="767" x2="470" y2="770" stroke="#7a4a10" stroke-width="2"/>
<text x="451.3" y="801.1" fill="#888" font-size="10" text-anchor="middle" letter-spacing="0.35">M</text>
<text x="488.7" y="801.1" fill="#888" font-size="10" text-anchor="middle" letter-spacing="0.35">S</text>
<text x="530" y="761.5" fill="#e4e4e4" font-size="10" text-anchor="middle" letter-spacing="0.35">Out Level</text>
<rect x="517.8" y="768" width="23.40000000000009" height="15.899999999999977" fill="#18243a"/>
<rect x="517.8" y="780" width="23.40000000000009" height="3.8999999999999773" fill="#2a60b0"/>
<text x="529.5" y="779" fill="#c0d0f0" font-size="9" text-anchor="middle" letter-spacing="0.32">0dB</text>
<text x="579.7" y="761.5" fill="#e4e4e4" font-size="10" text-anchor="middle" letter-spacing="0.35">Mix</text>
<circle cx="579.2" cy="780.32" r="14.56" fill="#000" opacity="0.6"/>
<circle cx="579.2" cy="779.2" r="14" fill="url(#kb)"/>
<circle cx="579.2" cy="779.2" r="13.44" fill="none" stroke="#555" stroke-width="1.12"/>
<circle cx="579.2" cy="779.2" r="11.76" fill="none" stroke="#5a5a5a" stroke-width="0.49000000000000005" opacity="0.8"/>
<line x1="585.93" y1="785.93" x2="588.9" y2="788.9" stroke="#d07818" stroke-width="3.08" stroke-linecap="round"/>
<text x="579.2" y="801.1" fill="#dce6ff" font-size="10" text-anchor="middle" letter-spacing="0.35">100.0 %</text>
<text x="642" y="761.5" fill="#e4e4e4" font-size="10" text-anchor="middle" letter-spacing="0.35">Scale</text>
<circle cx="641.5" cy="780.32" r="14.56" fill="#000" opacity="0.6"/>
<circle cx="641.5" cy="779.2" r="14" fill="url(#kb)"/>
<circle cx="641.5" cy="779.2" r="13.44" fill="none" stroke="#555" stroke-width="1.12"/>
<circle cx="641.5" cy="779.2" r="11.76" fill="none" stroke="#5a5a5a" stroke-width="0.49000000000000005" opacity="0.8"/>
<line x1="651.02" y1="779.2" x2="655.22" y2="779.2" stroke="#d07818" stroke-width="3.08" stroke-linecap="round"/>
<text x="642" y="801.1" fill="#dce6ff" font-size="10" text-anchor="middle" letter-spacing="0.35">-6 dB</text>
<rect x="409.3" y="819.3" width="265.7" height="80.70000000000005" fill="#131313"/>
<rect x="413.5" y="828.2" width="121.39999999999998" height="76.79999999999995" fill="#5e5e5e"/>
<rect x="424.5" y="839.9" width="97.29999999999995" height="65.10000000000002" fill="#3c3c3c"/>
<text x="471.9" y="836.8" fill="#1e1e1e" font-size="10" text-anchor="middle" letter-spacing="0.35">Smooth</text>
<text x="422.5" y="889" fill="#1e1e1e" font-size="10" text-anchor="middle" letter-spacing="0.35" transform="rotate(-90 422.5 889)">Clean</text>
<text x="533" y="883.5" fill="#1e1e1e" font-size="10" text-anchor="middle" letter-spacing="0.35" transform="rotate(-90 533 883.5)">Vintage</text>
<circle cx="507.8" cy="895.2" r="5" fill="#2a2a2a" stroke="#888" stroke-width="0.8"/>
<circle cx="507.8" cy="895.2" r="2.5" fill="#000"/>
<text x="558.2" y="849.2" fill="#e4e4e4" font-size="10.5" letter-spacing="0.37">Amp Model</text>
<rect x="558.2" y="853.6" width="97.29999999999995" height="15.199999999999932" fill="#1e2030"/>
<text x="606.5" y="866" fill="#e8e8f0" font-size="10.5" text-anchor="middle" letter-spacing="0.37">Limited-T</text>
<text x="558.2" y="899.1" fill="#e4e4e4" font-size="10.5" letter-spacing="0.37">Character</text>
<text x="621.2" y="899.1" fill="#e4e4e4" font-size="10.5" letter-spacing="0.37">Drive</text>
<rect x="674.6" y="599.6" width="118.60000000000002" height="216.39999999999998" fill="#1a1a1a"/>
<rect x="682.7" y="599.6" width="43.19999999999993" height="197.39999999999998" fill="#ffffff"/>
<rect x="682.7" y="599.6" width="21.299999999999955" height="3.8999999999999773" fill="#f02020"/>
<rect x="682.7" y="609.7" width="21.299999999999955" height="2.7999999999999545" fill="#f02020"/>
<rect x="704" y="610.5" width="21.899999999999977" height="3.5" fill="#f02020"/>
<rect x="735.5" y="599.6" width="50.89999999999998" height="197.39999999999998" fill="#d4b890"/>
<rect x="740" y="599.6" width="16" height="197.39999999999998" fill="#b8925a"/>
<rect x="766" y="599.6" width="16" height="197.39999999999998" fill="#b8925a"/>
<rect x="735.5" y="666" width="50.89999999999998" height="3" fill="#a07030"/>
<line x1="682.7" y1="611.5" x2="688.7" y2="611.5" stroke="#111" stroke-width="1"/>
<line x1="719.9" y1="611.5" x2="725.9" y2="611.5" stroke="#111" stroke-width="1"/>
<text x="704.3" y="614.0" fill="#111" font-size="7" text-anchor="middle" letter-spacing="0.25">-1</text>
<line x1="735.5" y1="611.5" x2="741.5" y2="611.5" stroke="#111" stroke-width="1"/>
<line x1="780.4" y1="611.5" x2="786.4" y2="611.5" stroke="#111" stroke-width="1"/>
<text x="761" y="614.0" fill="#111" font-size="7" text-anchor="middle" letter-spacing="0.25">-1</text>
<line x1="682.7" y1="628.8" x2="688.7" y2="628.8" stroke="#111" stroke-width="1"/>
<line x1="719.9" y1="628.8" x2="725.9" y2="628.8" stroke="#111" stroke-width="1"/>
<text x="704.3" y="631.3" fill="#111" font-size="7" text-anchor="middle" letter-spacing="0.25">-1.5</text>
<line x1="735.5" y1="628.8" x2="741.5" y2="628.8" stroke="#111" stroke-width="1"/>
<line x1="780.4" y1="628.8" x2="786.4" y2="628.8" stroke="#111" stroke-width="1"/>
<text x="761" y="631.3" fill="#111" font-size="7" text-anchor="middle" letter-spacing="0.25">-1.5</text>
<line x1="682.7" y1="646.6" x2="688.7" y2="646.6" stroke="#111" stroke-width="1"/>
<line x1="719.9" y1="646.6" x2="725.9" y2="646.6" stroke="#111" stroke-width="1"/>
<text x="704.3" y="649.1" fill="#111" font-size="7" text-anchor="middle" letter-spacing="0.25">-2</text>
<line x1="735.5" y1="646.6" x2="741.5" y2="646.6" stroke="#111" stroke-width="1"/>
<line x1="780.4" y1="646.6" x2="786.4" y2="646.6" stroke="#111" stroke-width="1"/>
<text x="761" y="649.1" fill="#111" font-size="7" text-anchor="middle" letter-spacing="0.25">-2</text>
<line x1="682.7" y1="663.6" x2="688.7" y2="663.6" stroke="#111" stroke-width="1"/>
<line x1="719.9" y1="663.6" x2="725.9" y2="663.6" stroke="#111" stroke-width="1"/>
<text x="704.3" y="666.1" fill="#111" font-size="7" text-anchor="middle" letter-spacing="0.25">-2.5</text>
<line x1="735.5" y1="663.6" x2="741.5" y2="663.6" stroke="#111" stroke-width="1"/>
<line x1="780.4" y1="663.6" x2="786.4" y2="663.6" stroke="#111" stroke-width="1"/>
<text x="761" y="666.1" fill="#111" font-size="7" text-anchor="middle" letter-spacing="0.25">-2.5</text>
<line x1="682.7" y1="681.4" x2="688.7" y2="681.4" stroke="#111" stroke-width="1"/>
<line x1="719.9" y1="681.4" x2="725.9" y2="681.4" stroke="#111" stroke-width="1"/>
<text x="704.3" y="683.9" fill="#111" font-size="7" text-anchor="middle" letter-spacing="0.25">-3</text>
<line x1="735.5" y1="681.4" x2="741.5" y2="681.4" stroke="#111" stroke-width="1"/>
<line x1="780.4" y1="681.4" x2="786.4" y2="681.4" stroke="#111" stroke-width="1"/>
<text x="761" y="683.9" fill="#111" font-size="7" text-anchor="middle" letter-spacing="0.25">-3</text>
<line x1="682.7" y1="698.7" x2="688.7" y2="698.7" stroke="#111" stroke-width="1"/>
<line x1="719.9" y1="698.7" x2="725.9" y2="698.7" stroke="#111" stroke-width="1"/>
<text x="704.3" y="701.2" fill="#111" font-size="7" text-anchor="middle" letter-spacing="0.25">-3.5</text>
<line x1="735.5" y1="698.7" x2="741.5" y2="698.7" stroke="#111" stroke-width="1"/>
<line x1="780.4" y1="698.7" x2="786.4" y2="698.7" stroke="#111" stroke-width="1"/>
<text x="761" y="701.2" fill="#111" font-size="7" text-anchor="middle" letter-spacing="0.25">-3.5</text>
<line x1="682.7" y1="716.4" x2="688.7" y2="716.4" stroke="#111" stroke-width="1"/>
<line x1="719.9" y1="716.4" x2="725.9" y2="716.4" stroke="#111" stroke-width="1"/>
<text x="704.3" y="718.9" fill="#111" font-size="7" text-anchor="middle" letter-spacing="0.25">-4</text>
<line x1="735.5" y1="716.4" x2="741.5" y2="716.4" stroke="#111" stroke-width="1"/>
<line x1="780.4" y1="716.4" x2="786.4" y2="716.4" stroke="#111" stroke-width="1"/>
<text x="761" y="718.9" fill="#111" font-size="7" text-anchor="middle" letter-spacing="0.25">-4</text>
<line x1="682.7" y1="752" x2="688.7" y2="752" stroke="#111" stroke-width="1"/>
<line x1="719.9" y1="752" x2="725.9" y2="752" stroke="#111" stroke-width="1"/>
<text x="704.3" y="754.5" fill="#111" font-size="7" text-anchor="middle" letter-spacing="0.25">-5</text>
<line x1="735.5" y1="752" x2="741.5" y2="752" stroke="#111" stroke-width="1"/>
<line x1="780.4" y1="752" x2="786.4" y2="752" stroke="#111" stroke-width="1"/>
<text x="761" y="754.5" fill="#111" font-size="7" text-anchor="middle" letter-spacing="0.25">-5</text>
<line x1="682.7" y1="786.8" x2="688.7" y2="786.8" stroke="#111" stroke-width="1"/>
<line x1="719.9" y1="786.8" x2="725.9" y2="786.8" stroke="#111" stroke-width="1"/>
<text x="704.3" y="789.3" fill="#111" font-size="7" text-anchor="middle" letter-spacing="0.25">-6</text>
<line x1="735.5" y1="786.8" x2="741.5" y2="786.8" stroke="#111" stroke-width="1"/>
<line x1="780.4" y1="786.8" x2="786.4" y2="786.8" stroke="#111" stroke-width="1"/>
<text x="761" y="789.3" fill="#111" font-size="7" text-anchor="middle" letter-spacing="0.25">-6</text>
<text x="694.1" y="812" fill="#e0e8ff" font-size="10" text-anchor="middle" letter-spacing="0.35">L</text>
<text x="715.7" y="812" fill="#e0e8ff" font-size="10" text-anchor="middle" letter-spacing="0.35">R</text>
<text x="748.3" y="812" fill="#bbb" font-size="10" text-anchor="middle" letter-spacing="0.35">L</text>
<text x="772.1" y="812" fill="#bbb" font-size="10" text-anchor="middle" letter-spacing="0.35">R</text>
<rect x="674.6" y="822.4" width="118.60000000000002" height="77.60000000000002" fill="#121212"/>
<text x="711.4" y="849" fill="#e4e4e4" font-size="10.5" text-anchor="middle" letter-spacing="0.37">DC Block</text>
<rect x="756.4" y="837.6" width="22.300000000000068" height="14.0" fill="url(#vb756837)" stroke="#2a2a3a" stroke-width="0.8"/>
<text x="767.55" y="847.84" fill="#2a1800" font-size="9" text-anchor="middle" font-weight="bold" letter-spacing="0.32">Low</text>
<text x="708.6" y="881.6" fill="#e4e4e4" font-size="10.5" text-anchor="middle" letter-spacing="0.37">Over</text>
<rect x="756.4" y="870.7" width="22.300000000000068" height="13.399999999999977" fill="url(#vb756870)" stroke="#2a2a3a" stroke-width="0.8"/>
<text x="767.55" y="880.6400000000001" fill="#2a1800" font-size="9" text-anchor="middle" font-weight="bold" letter-spacing="0.32">2x</text>
<rect x="793.2" y="600" width="6.7999999999999545" height="300" fill="#080808"/>
</g>
<g clip-path="url(#cK)">
<rect x="800" y="600" width="400" height="300" fill="#0e0e0e"/>
<rect x="800" y="600" width="400" height="1.7000000000000455" fill="#555"/>
<rect x="800" y="601.7" width="400" height="18.299999999999955" fill="#181818"/>
<rect x="798" y="603" width="45" height="12.799999999999955" fill="#a87838" rx="3"/>
<text x="801" y="613.8" fill="#d8d8d8" font-size="11" font-weight="bold" textLength="17" lengthAdjust="spacingAndGlyphs">LVC</text>
<text x="818.5" y="613.5" fill="#f4f0e8" font-size="9" font-weight="bold" textLength="22" lengthAdjust="spacingAndGlyphs">audio</text>
<text x="1113.4" y="615.4" fill="#c89040" font-size="14.5" textLength="94.3" lengthAdjust="spacingAndGlyphs">ClipShifter 2.0</text>
<rect x="800" y="620" width="400" height="162" fill="url(#frK)"/>
<rect x="815" y="629.2" width="7.5" height="7.099999999999909" fill="#3a3a50"/>
<text x="818.75" y="635" fill="#ccc" font-size="6" text-anchor="middle" letter-spacing="0.21">I</text>
<rect x="826.7" y="629.2" width="8.0" height="7.099999999999909" fill="#3a3a50"/>
<text x="830.7" y="635" fill="#eee" font-size="6" text-anchor="middle" font-weight="bold" letter-spacing="0.21">R</text>
<rect x="1112.5" y="629.4" width="7.0" height="6.5" fill="#3a3a50"/>
<text x="1116" y="635" fill="#eee" font-size="6" text-anchor="middle" font-weight="bold" letter-spacing="0.21">S</text>
<rect x="813" y="638.8" width="308.5999999999999" height="128.30000000000007" fill="#e6e6ee"/>
<polygon points="816.2,738.3 819.2,638.7 827.0,638.7 830.0,738.3" fill="#5a82d0"/>
<polygon points="856.7,743.3 859.7,638.7 875.3,638.7 878.3,743.3" fill="#5a82d0"/>
<polygon points="946.7,691.7 949.7,638.7 963.7,638.7 966.7,691.7" fill="#5a82d0"/>
<polygon points="817.3,742.0 818.0,683.3 820.0,656.7 821.3,638.7 822.7,663.3 826.0,683.3 830.0,710.0 830.7,742.0" fill="#5a82d0"/>
<polygon points="856.7,744.7 856.9,638.7 866.0,638.7 868.7,656.7 872.7,670.0 876.7,683.3 880.7,690.0 881.3,744.7" fill="#5a82d0"/>
<polygon points="878.7,723.3 880.7,638.7 882.7,638.7 886.7,670.0 890.0,690.0 892.7,723.3" fill="#5a82d0"/>
<polygon points="947.3,692.7 948.0,638.7 970.0,638.7 970.0,692.7" fill="#5a82d0"/>
<polygon points="1049.5,692.8 1050.4,638.9 1063.5,638.9 1068.8,670.0 1072.3,692.8" fill="#5a82d0"/>
<polygon points="1102.0,692.8 1103.8,638.9 1112.5,638.9 1116.0,661.3 1119.5,692.8" fill="#5a82d0"/>
<polygon points="813.0,767.1 812.9,677.4 813.3,667.4 813.7,666.7 814.1,672.3 814.5,677.9 814.9,683.5 815.3,689.1 815.7,694.7 816.1,700.3 816.5,705.6 816.9,695.6 817.3,685.6 817.7,675.6 818.1,665.6 818.5,655.6 818.9,645.6 819.3,640.4 819.7,646.0 820.1,651.6 820.5,657.2 820.9,662.8 821.3,668.4 821.7,674.0 822.1,679.6 822.5,685.2 822.9,690.8 823.3,696.4 823.7,702.0 824.1,707.6 824.5,713.2 824.9,718.8 825.3,724.4 825.7,730.0 826.1,735.6 826.5,736.9 826.9,726.9 827.3,716.9 827.7,706.9 828.1,696.9 828.5,686.9 828.9,676.9 829.3,666.9 829.7,656.9 830.1,646.9 830.5,640.7 830.9,646.3 831.3,651.9 831.7,657.5 832.1,663.1 832.5,668.7 832.9,674.3 833.3,679.9 833.7,685.5 834.1,691.1 834.5,696.7 834.9,702.3 835.3,707.9 835.7,713.5 836.1,719.1 836.5,724.7 836.9,730.3 837.3,733.7 837.7,733.6 838.1,733.4 838.5,726.5 838.9,716.5 839.3,706.5 839.7,696.5 840.1,686.5 840.5,676.5 840.9,666.5 841.3,656.5 841.7,646.5 842.1,639.9 842.5,645.5 842.9,651.1 843.3,656.7 843.7,662.3 844.1,667.9 844.5,661.6 844.9,651.6 845.3,641.6 845.7,643.6 846.1,649.2 846.5,654.8 846.9,660.4 847.3,666.0 847.7,671.6 848.1,677.2 848.5,682.8 848.9,688.4 849.3,694.0 849.7,699.6 850.1,705.2 850.5,707.2 850.9,697.2 851.3,687.2 851.7,677.2 852.1,667.2 852.5,657.2 852.9,647.2 853.3,646.7 853.7,652.3 854.1,657.9 854.5,663.5 854.9,669.1 855.3,674.7 855.7,680.3 856.1,685.9 856.5,691.5 856.9,697.1 857.3,702.7 857.7,708.3 858.1,713.9 858.5,719.5 858.9,725.1 859.3,730.7 859.7,736.3 860.1,737.6 860.5,733.1 860.9,723.1 861.3,713.1 861.7,703.1 862.1,693.1 862.5,683.4 862.9,689.0 863.3,694.6 863.7,700.2 864.1,705.8 864.5,711.4 864.9,717.0 865.3,722.6 865.7,728.2 866.1,732.4 866.5,732.0 866.9,731.7 867.3,731.3 867.7,731.8 868.1,732.2 868.5,732.7 868.9,723.0 869.3,713.0 869.7,703.0 870.1,693.0 870.5,683.0 870.9,673.0 871.3,663.0 871.7,653.0 872.1,643.5 872.5,649.1 872.9,654.7 873.3,660.3 873.7,665.9 874.1,671.5 874.5,677.1 874.9,682.7 875.3,688.3 875.7,693.9 876.1,699.5 876.5,705.1 876.9,710.7 877.3,716.3 877.7,711.3 878.1,701.3 878.5,691.3 878.9,681.3 879.3,671.3 879.7,661.3 880.1,651.3 880.5,644.5 880.9,650.1 881.3,655.7 881.7,661.3 882.1,666.9 882.5,672.5 882.9,678.1 883.3,683.7 883.7,689.3 884.1,694.9 884.5,695.9 884.9,685.9 885.3,675.9 885.7,672.3 886.1,662.7 886.5,652.7 886.9,642.7 887.3,643.1 887.7,648.7 888.1,654.3 888.5,659.9 888.9,665.5 889.3,671.1 889.7,676.7 890.1,682.3 890.5,687.9 890.9,693.5 891.3,699.1 891.7,704.7 892.1,706.7 892.5,696.7 892.9,686.7 893.3,676.7 893.7,671.8 894.1,677.4 894.5,683.0 894.9,688.6 895.3,694.2 895.7,699.8 896.1,705.4 896.5,711.0 896.9,716.6 897.3,719.6 897.7,719.0 898.1,718.3 898.5,717.7 898.9,707.8 899.3,697.8 899.7,695.1 900.1,685.1 900.5,675.1 900.9,665.1 901.3,667.9 901.7,673.5 902.1,679.1 902.5,684.7 902.9,690.3 903.3,695.9 903.7,701.5 904.1,707.1 904.5,712.7 904.9,713.1 905.3,703.1 905.7,693.1 906.1,683.1 906.5,673.1 906.9,673.8 907.3,679.4 907.7,685.0 908.1,690.6 908.5,696.2 908.9,701.8 909.3,707.4 909.7,713.0 910.1,714.7 910.5,704.7 910.9,694.7 911.3,684.7 911.7,674.7 912.1,664.7 912.5,654.7 912.9,644.7 913.3,640.9 913.7,646.5 914.1,652.1 914.5,657.7 914.9,663.3 915.3,668.9 915.7,674.5 916.1,680.1 916.5,685.7 916.9,691.3 917.3,696.9 917.7,702.5 918.1,708.1 918.5,709.9 918.9,710.5 919.3,711.0 919.7,711.5 920.1,712.1 920.5,712.6 920.9,710.0 921.3,700.0 921.7,690.0 922.1,685.2 922.5,690.8 922.9,696.4 923.3,702.0 923.7,707.6 924.1,713.2 924.5,718.1 924.9,718.7 925.3,719.2 925.7,719.8 926.1,720.4 926.5,720.9 926.9,721.5 927.3,722.0 927.7,715.6 928.1,705.6 928.5,695.6 928.9,685.6 929.3,685.6 929.7,675.6 930.1,665.6 930.5,655.6 930.9,645.6 931.3,647.7 931.7,653.3 932.1,658.9 932.5,664.5 932.9,670.1 933.3,675.7 933.7,681.3 934.1,686.9 934.5,692.5 934.9,698.1 935.3,700.2 935.7,700.3 936.1,705.9 936.5,706.8 936.9,701.5 937.3,699.6 937.7,705.2 938.1,708.3 938.5,708.7 938.9,709.0 939.3,709.4 939.7,709.8 940.1,710.6 940.5,712.4 940.9,714.1 941.3,715.9 941.7,717.7 942.1,719.5 942.5,711.6 942.9,701.6 943.3,699.5 943.7,705.1 944.1,710.7 944.5,716.3 944.9,721.9 945.3,727.5 945.7,733.1 946.0,692.2 947.0,687.3 948.0,680.3 949.0,673.3 950.0,666.3 951.0,659.3 952.0,656.6 953.0,660.6 954.0,664.6 955.0,668.0 956.0,666.3 957.0,659.3 958.0,652.3 959.0,645.3 960.0,641.0 961.0,645.0 962.0,649.0 963.0,650.4 964.0,643.4 965.0,642.1 966.0,646.1 967.0,650.1 968.0,654.1 969.0,657.2 970.0,650.2 971.0,643.2 972.0,640.3 973.0,644.3 974.0,648.3 975.0,652.3 976.0,656.3 977.0,660.3 978.0,664.3 979.0,668.3 980.0,672.3 981.0,676.3 982.0,680.3 983.0,678.1 984.0,671.1 985.0,665.5 986.0,669.5 987.0,673.5 988.0,677.5 989.0,676.1 990.0,669.1 991.0,666.6 992.0,670.6 993.0,674.6 994.0,676.7 995.0,673.9 996.0,666.9 997.0,659.9 998.0,652.9 999.0,645.9 1000.0,638.9 1001.0,642.7 1002.0,646.7 1003.0,650.7 1004.0,654.7 1005.0,658.7 1006.0,654.6 1007.0,647.6 1008.0,640.6 1009.0,643.7 1010.0,647.7 1011.0,651.7 1012.0,655.7 1013.0,659.7 1014.0,663.7 1015.0,667.7 1016.0,671.7 1017.0,675.7 1018.0,673.7 1019.0,666.7 1020.0,659.7 1021.0,652.7 1022.0,645.7 1023.0,640.8 1024.0,644.8 1025.0,648.8 1026.0,652.8 1027.0,656.8 1028.0,660.8 1029.0,664.0 1030.0,657.0 1031.0,650.0 1032.0,646.1 1033.0,650.1 1034.0,654.1 1035.0,658.1 1036.0,656.2 1037.0,649.2 1038.0,642.2 1039.0,640.8 1040.0,644.8 1041.0,648.8 1042.0,652.8 1043.0,655.9 1044.0,658.5 1045.0,662.5 1046.0,658.7 1047.0,651.7 1048.0,644.7 1049.0,641.3 1050.0,645.3 1051.0,649.3 1052.0,648.6 1053.0,646.9 1054.0,650.9 1055.0,654.9 1056.0,652.1 1057.0,645.1 1058.0,641.1 1059.0,645.1 1060.0,649.1 1061.0,653.1 1062.0,657.1 1063.0,661.1 1064.0,665.1 1065.0,669.1 1066.0,668.5 1067.0,667.0 1068.0,671.0 1069.0,675.0 1070.0,679.0 1071.0,676.4 1072.0,669.4 1073.0,662.4 1074.0,655.4 1075.0,648.4 1076.0,641.4 1077.0,641.3 1078.0,645.3 1079.0,649.3 1080.0,653.3 1081.0,657.3 1082.0,661.3 1083.0,665.3 1084.0,668.0 1085.0,667.3 1086.0,671.3 1087.0,669.0 1088.0,666.7 1089.0,670.7 1090.0,674.7 1091.0,676.9 1092.0,669.9 1093.0,666.2 1094.0,670.2 1095.0,674.2 1096.0,678.2 1097.0,682.2 1098.0,682.7 1099.0,675.7 1100.0,668.7 1101.0,666.9 1102.0,666.8 1103.0,659.8 1104.0,656.2 1105.0,660.2 1106.0,664.2 1107.0,668.2 1108.0,672.2 1109.0,673.6 1110.0,666.6 1111.0,668.1 1112.0,672.1 1113.0,676.1 1114.0,680.1 1115.0,684.1 1116.0,688.1 1117.0,692.1 1118.0,687.3 1119.0,685.2 1120.0,678.2 1121.0,671.2 1121.6,767.1" fill="#5444c8"/>
<polyline points="812.9,677.4 813.3,667.4 813.7,666.7 814.1,672.3 814.5,677.9 814.9,683.5 815.3,689.1 815.7,694.7 816.1,700.3 816.5,705.6 816.9,695.6 817.3,685.6 817.7,675.6 818.1,665.6 818.5,655.6 818.9,645.6 819.3,640.4 819.7,646.0 820.1,651.6 820.5,657.2 820.9,662.8 821.3,668.4 821.7,674.0 822.1,679.6 822.5,685.2 822.9,690.8 823.3,696.4 823.7,702.0 824.1,707.6 824.5,713.2 824.9,718.8 825.3,724.4 825.7,730.0 826.1,735.6 826.5,736.9 826.9,726.9 827.3,716.9 827.7,706.9 828.1,696.9 828.5,686.9 828.9,676.9 829.3,666.9 829.7,656.9 830.1,646.9 830.5,640.7 830.9,646.3 831.3,651.9 831.7,657.5 832.1,663.1 832.5,668.7 832.9,674.3 833.3,679.9 833.7,685.5 834.1,691.1 834.5,696.7 834.9,702.3 835.3,707.9 835.7,713.5 836.1,719.1 836.5,724.7 836.9,730.3 837.3,733.7 837.7,733.6 838.1,733.4 838.5,726.5 838.9,716.5 839.3,706.5 839.7,696.5 840.1,686.5 840.5,676.5 840.9,666.5 841.3,656.5 841.7,646.5 842.1,639.9 842.5,645.5 842.9,651.1 843.3,656.7 843.7,662.3 844.1,667.9 844.5,661.6 844.9,651.6 845.3,641.6 845.7,643.6 846.1,649.2 846.5,654.8 846.9,660.4 847.3,666.0 847.7,671.6 848.1,677.2 848.5,682.8 848.9,688.4 849.3,694.0 849.7,699.6 850.1,705.2 850.5,707.2 850.9,697.2 851.3,687.2 851.7,677.2 852.1,667.2 852.5,657.2 852.9,647.2 853.3,646.7 853.7,652.3 854.1,657.9 854.5,663.5 854.9,669.1 855.3,674.7 855.7,680.3 856.1,685.9 856.5,691.5 856.9,697.1 857.3,702.7 857.7,708.3 858.1,713.9 858.5,719.5 858.9,725.1 859.3,730.7 859.7,736.3 860.1,737.6 860.5,733.1 860.9,723.1 861.3,713.1 861.7,703.1 862.1,693.1 862.5,683.4 862.9,689.0 863.3,694.6 863.7,700.2 864.1,705.8 864.5,711.4 864.9,717.0 865.3,722.6 865.7,728.2 866.1,732.4 866.5,732.0 866.9,731.7 867.3,731.3 867.7,731.8 868.1,732.2 868.5,732.7 868.9,723.0 869.3,713.0 869.7,703.0 870.1,693.0 870.5,683.0 870.9,673.0 871.3,663.0 871.7,653.0 872.1,643.5 872.5,649.1 872.9,654.7 873.3,660.3 873.7,665.9 874.1,671.5 874.5,677.1 874.9,682.7 875.3,688.3 875.7,693.9 876.1,699.5 876.5,705.1 876.9,710.7 877.3,716.3 877.7,711.3 878.1,701.3 878.5,691.3 878.9,681.3 879.3,671.3 879.7,661.3 880.1,651.3 880.5,644.5 880.9,650.1 881.3,655.7 881.7,661.3 882.1,666.9 882.5,672.5 882.9,678.1 883.3,683.7 883.7,689.3 884.1,694.9 884.5,695.9 884.9,685.9 885.3,675.9 885.7,672.3 886.1,662.7 886.5,652.7 886.9,642.7 887.3,643.1 887.7,648.7 888.1,654.3 888.5,659.9 888.9,665.5 889.3,671.1 889.7,676.7 890.1,682.3 890.5,687.9 890.9,693.5 891.3,699.1 891.7,704.7 892.1,706.7 892.5,696.7 892.9,686.7 893.3,676.7 893.7,671.8 894.1,677.4 894.5,683.0 894.9,688.6 895.3,694.2 895.7,699.8 896.1,705.4 896.5,711.0 896.9,716.6 897.3,719.6 897.7,719.0 898.1,718.3 898.5,717.7 898.9,707.8 899.3,697.8 899.7,695.1 900.1,685.1 900.5,675.1 900.9,665.1 901.3,667.9 901.7,673.5 902.1,679.1 902.5,684.7 902.9,690.3 903.3,695.9 903.7,701.5 904.1,707.1 904.5,712.7 904.9,713.1 905.3,703.1 905.7,693.1 906.1,683.1 906.5,673.1 906.9,673.8 907.3,679.4 907.7,685.0 908.1,690.6 908.5,696.2 908.9,701.8 909.3,707.4 909.7,713.0 910.1,714.7 910.5,704.7 910.9,694.7 911.3,684.7 911.7,674.7 912.1,664.7 912.5,654.7 912.9,644.7 913.3,640.9 913.7,646.5 914.1,652.1 914.5,657.7 914.9,663.3 915.3,668.9 915.7,674.5 916.1,680.1 916.5,685.7 916.9,691.3 917.3,696.9 917.7,702.5 918.1,708.1 918.5,709.9 918.9,710.5 919.3,711.0 919.7,711.5 920.1,712.1 920.5,712.6 920.9,710.0 921.3,700.0 921.7,690.0 922.1,685.2 922.5,690.8 922.9,696.4 923.3,702.0 923.7,707.6 924.1,713.2 924.5,718.1 924.9,718.7 925.3,719.2 925.7,719.8 926.1,720.4 926.5,720.9 926.9,721.5 927.3,722.0 927.7,715.6 928.1,705.6 928.5,695.6 928.9,685.6 929.3,685.6 929.7,675.6 930.1,665.6 930.5,655.6 930.9,645.6 931.3,647.7 931.7,653.3 932.1,658.9 932.5,664.5 932.9,670.1 933.3,675.7 933.7,681.3 934.1,686.9 934.5,692.5 934.9,698.1 935.3,700.2 935.7,700.3 936.1,705.9 936.5,706.8 936.9,701.5 937.3,699.6 937.7,705.2 938.1,708.3 938.5,708.7 938.9,709.0 939.3,709.4 939.7,709.8 940.1,710.6 940.5,712.4 940.9,714.1 941.3,715.9 941.7,717.7 942.1,719.5 942.5,711.6 942.9,701.6 943.3,699.5 943.7,705.1 944.1,710.7 944.5,716.3 944.9,721.9 945.3,727.5 945.7,733.1 946.0,692.2 947.0,687.3 948.0,680.3 949.0,673.3 950.0,666.3 951.0,659.3 952.0,656.6 953.0,660.6 954.0,664.6 955.0,668.0 956.0,666.3 957.0,659.3 958.0,652.3 959.0,645.3 960.0,641.0 961.0,645.0 962.0,649.0 963.0,650.4 964.0,643.4 965.0,642.1 966.0,646.1 967.0,650.1 968.0,654.1 969.0,657.2 970.0,650.2 971.0,643.2 972.0,640.3 973.0,644.3 974.0,648.3 975.0,652.3 976.0,656.3 977.0,660.3 978.0,664.3 979.0,668.3 980.0,672.3 981.0,676.3 982.0,680.3 983.0,678.1 984.0,671.1 985.0,665.5 986.0,669.5 987.0,673.5 988.0,677.5 989.0,676.1 990.0,669.1 991.0,666.6 992.0,670.6 993.0,674.6 994.0,676.7 995.0,673.9 996.0,666.9 997.0,659.9 998.0,652.9 999.0,645.9 1000.0,638.9 1001.0,642.7 1002.0,646.7 1003.0,650.7 1004.0,654.7 1005.0,658.7 1006.0,654.6 1007.0,647.6 1008.0,640.6 1009.0,643.7 1010.0,647.7 1011.0,651.7 1012.0,655.7 1013.0,659.7 1014.0,663.7 1015.0,667.7 1016.0,671.7 1017.0,675.7 1018.0,673.7 1019.0,666.7 1020.0,659.7 1021.0,652.7 1022.0,645.7 1023.0,640.8 1024.0,644.8 1025.0,648.8 1026.0,652.8 1027.0,656.8 1028.0,660.8 1029.0,664.0 1030.0,657.0 1031.0,650.0 1032.0,646.1 1033.0,650.1 1034.0,654.1 1035.0,658.1 1036.0,656.2 1037.0,649.2 1038.0,642.2 1039.0,640.8 1040.0,644.8 1041.0,648.8 1042.0,652.8 1043.0,655.9 1044.0,658.5 1045.0,662.5 1046.0,658.7 1047.0,651.7 1048.0,644.7 1049.0,641.3 1050.0,645.3 1051.0,649.3 1052.0,648.6 1053.0,646.9 1054.0,650.9 1055.0,654.9 1056.0,652.1 1057.0,645.1 1058.0,641.1 1059.0,645.1 1060.0,649.1 1061.0,653.1 1062.0,657.1 1063.0,661.1 1064.0,665.1 1065.0,669.1 1066.0,668.5 1067.0,667.0 1068.0,671.0 1069.0,675.0 1070.0,679.0 1071.0,676.4 1072.0,669.4 1073.0,662.4 1074.0,655.4 1075.0,648.4 1076.0,641.4 1077.0,641.3 1078.0,645.3 1079.0,649.3 1080.0,653.3 1081.0,657.3 1082.0,661.3 1083.0,665.3 1084.0,668.0 1085.0,667.3 1086.0,671.3 1087.0,669.0 1088.0,666.7 1089.0,670.7 1090.0,674.7 1091.0,676.9 1092.0,669.9 1093.0,666.2 1094.0,670.2 1095.0,674.2 1096.0,678.2 1097.0,682.2 1098.0,682.7 1099.0,675.7 1100.0,668.7 1101.0,666.9 1102.0,666.8 1103.0,659.8 1104.0,656.2 1105.0,660.2 1106.0,664.2 1107.0,668.2 1108.0,672.2 1109.0,673.6 1110.0,666.6 1111.0,668.1 1112.0,672.1 1113.0,676.1 1114.0,680.1 1115.0,684.1 1116.0,688.1 1117.0,692.1 1118.0,687.3 1119.0,685.2 1120.0,678.2 1121.0,671.2" fill="none" stroke="#4a38c8" stroke-width="0.5" stroke-linejoin="round" opacity="0.8"/>
<polyline points="812.9,706.0 813.8,704.1 815.1,700.9 816.6,697.4 818.2,694.5 819.6,693.1 820.7,694.0 821.4,698.3 821.9,705.3 822.3,713.8 822.6,722.5 822.9,730.1 823.3,735.3 823.7,738.2 824.1,739.9 824.5,740.4 824.9,740.0 825.4,738.7 826.0,736.7 826.7,733.4 827.3,728.6 828.1,723.0 829.0,717.2 830.0,711.7 831.3,707.3 833.0,703.9 835.0,700.9 837.2,698.2 839.5,696.0 841.6,694.2 843.3,692.7 844.8,691.6 846.0,691.0 847.0,690.8 848.0,690.8 849.0,691.0 850.0,691.3 851.1,691.6 852.3,691.8 853.5,692.2 854.6,693.1 855.7,694.5 856.7,696.7 857.3,700.0 857.8,704.4 858.1,709.3 858.5,714.4 859.3,719.3 860.7,723.3 862.8,727.0 865.5,730.6 868.6,734.0 871.7,736.8 874.5,738.6 876.7,739.3 878.2,738.7 879.2,737.0 880.0,734.4 880.6,731.1 881.2,727.4 882.0,723.3 882.9,718.6 883.8,712.9 884.7,706.7 885.6,700.5 886.4,694.8 887.3,690.0 888.2,686.3 888.9,683.3 889.7,680.8 890.5,678.5 891.5,676.3 892.7,674.0 894.1,671.6 895.7,669.2 897.5,667.0 899.4,664.8 901.3,662.7 903.3,660.7 905.5,658.5 908.0,656.1 910.5,653.8 913.0,651.9 915.1,650.8 916.7,650.7 917.6,652.2 918.1,655.3 918.2,659.0 918.2,662.8 918.3,665.8 918.7,667.3 919.3,667.1 920.0,665.6 920.7,663.4 921.5,660.9 922.4,658.5 923.3,656.7 924.3,655.4 925.2,654.2 926.1,653.1 927.2,652.2 928.5,651.4 930.0,650.7 932.0,650.1 934.4,649.6 937.1,649.3 939.6,649.0 941.8,648.8 943.3,648.7" fill="none" stroke="#1a1a50" stroke-width="0.7" stroke-linejoin="round" opacity="0.8"/>
<polyline points="812.9,706.0 813.8,704.2 815.1,701.3 816.6,698.1 818.2,695.4 819.6,694.2 820.7,695.3 821.4,699.7 821.9,706.7 822.3,715.2 822.6,723.9 822.9,731.5 823.3,736.7 823.7,739.5 824.1,741.2 824.5,741.7 824.9,741.2 825.4,739.9 826.0,738.0 826.7,734.4 827.6,729.0 828.5,722.7 829.5,716.7 830.5,712.1 831.3,710.0 832.1,711.3 832.9,715.2 833.7,720.6 834.5,726.1 835.2,730.5 836.0,732.7 836.7,732.3 837.4,730.2 838.0,727.2 838.8,723.5 839.6,719.9 840.7,716.7 842.0,713.7 843.5,710.4 845.2,707.1 846.9,704.0 848.5,701.3 850.0,699.3 851.3,697.6 852.6,695.9 853.7,694.7 854.8,694.3 855.8,695.3 856.7,698.0 857.3,703.5 857.8,711.6 858.2,721.1 858.5,730.6 858.9,738.9 859.3,744.7 859.8,747.7 860.3,749.0 860.8,749.1 861.5,748.5 862.3,747.7 863.3,747.3 864.8,747.2 866.5,746.9 868.4,746.5 870.4,746.0 872.3,745.3 874.0,744.7 875.5,744.2 877.0,744.0 878.3,743.7 879.6,743.0 880.9,741.6 882.0,739.3 883.1,735.8 884.0,731.4 884.9,726.2 885.8,720.8 886.6,715.2 887.3,710.0 888.1,704.7 888.8,699.1 889.4,693.4 890.0,688.0 890.7,683.2 891.3,679.3 892.0,675.8 892.8,672.4 893.5,669.6 894.2,667.9 894.8,667.8 895.3,670.0 895.7,675.7 895.8,684.7 895.9,695.4 896.0,706.1 896.2,715.1 896.7,720.7 897.3,722.7 898.2,722.5 899.2,720.6 900.2,717.5 901.1,713.8 902.0,710.0 902.7,705.5 903.4,699.8 904.0,693.5 904.6,687.1 905.3,681.3 906.0,676.7 906.8,673.3 907.7,670.7 908.6,668.7 909.5,666.9 910.4,665.2 911.3,663.3 912.3,660.9 913.2,658.1 914.2,655.3 915.1,653.0 916.0,651.5 916.7,651.3 917.2,653.0 917.5,656.4 917.7,660.6 917.9,664.8 918.2,668.2 918.7,670.0 919.3,669.9 920.0,668.5 920.7,666.3 921.5,663.7 922.4,661.2 923.3,659.3 924.3,657.9 925.5,656.6 926.6,655.4 927.8,654.3 928.9,653.4 930.0,652.7 930.9,652.2 931.8,651.9 932.6,651.8 933.4,651.7 934.3,651.6 935.3,651.3 936.6,650.9 937.9,650.4 939.4,649.9 940.8,649.4 942.2,649.0 943.3,648.7 944.3,648.0 945.2,646.9 946.0,645.8 946.8,645.4 947.4,646.2 948.0,648.7 948.5,654.0 948.8,662.0 949.1,671.1 949.3,680.0 949.6,687.2 950.0,691.3 950.5,691.5 951.0,688.8 951.6,684.3 952.2,679.5 952.8,675.7 953.3,674.0 953.9,675.0 954.3,677.7 954.8,681.3 955.3,685.1 955.9,688.3 956.7,690.0 957.6,690.3 958.6,689.7 959.8,688.5 961.0,686.9 962.2,685.1 963.3,683.3 964.5,681.3 965.8,678.9 967.1,676.2 968.3,673.7 969.3,671.5 970.0,670.0" fill="none" stroke="#b02020" stroke-width="0.9" stroke-linejoin="round"/>
<polyline points="990.0,659.5 990.5,659.8 991.2,660.3 992.1,660.9 993.0,661.4 994.1,661.5 995.3,661.3 996.5,660.3 997.8,658.9 999.3,657.2 1000.8,655.4 1002.4,653.7 1004.0,652.5 1005.8,651.6 1007.7,650.8 1009.7,650.3 1011.6,649.9 1013.2,649.7 1014.5,649.9 1015.2,650.5 1015.5,651.7 1015.5,653.2 1015.5,654.5 1015.7,655.6 1016.3,656.0 1017.3,655.6 1018.8,654.7 1020.4,653.4 1022.1,652.0 1023.7,650.7 1025.0,649.9 1025.9,649.4 1026.4,649.1 1026.9,648.9 1027.5,648.9 1028.5,648.9 1030.3,649.0 1033.0,648.7 1036.7,648.1 1040.8,647.5 1044.8,647.5 1048.5,648.4 1051.3,650.8 1053.1,655.3 1054.2,661.8 1055.0,669.2 1055.5,676.7 1055.9,683.1 1056.5,687.5 1057.1,689.8 1057.7,690.9 1058.1,690.9 1058.6,690.2 1059.2,688.9 1060.0,687.5 1061.0,685.5 1062.1,682.8 1063.3,679.5 1064.5,676.1 1065.8,672.8 1067.0,670.0 1068.1,667.6 1069.2,665.4 1070.3,663.3 1071.4,661.4 1072.6,659.5 1074.0,657.8 1075.6,656.0 1077.5,654.1 1079.5,652.4 1081.4,650.9 1083.1,649.7 1084.5,649.0 1085.5,649.0 1086.1,649.5 1086.5,650.4 1086.8,651.4 1087.3,652.2 1088.0,652.5 1088.9,652.3 1090.0,651.7 1091.2,651.0 1092.4,650.2 1093.7,649.5 1095.0,649.0 1096.4,648.6 1097.8,648.2 1099.3,647.8 1100.8,647.7 1102.3,648.1 1103.8,649.0 1105.2,651.0 1106.7,654.1 1108.1,657.5 1109.6,660.9 1111.0,663.5 1112.5,664.8 1114.1,664.4 1115.9,662.8 1117.6,660.5 1119.2,657.9 1120.6,655.7 1121.6,654.3" fill="none" stroke="#b02020" stroke-width="0.9" stroke-linejoin="round"/>
<polyline points="990.0,657.8 991.6,656.9 993.8,655.7 996.3,654.4 999.1,653.0 1001.7,651.7 1004.0,650.8 1006.0,650.1 1007.8,649.7 1009.5,649.4 1011.1,649.3 1012.8,649.1 1014.5,649.0 1016.1,648.9 1017.4,648.8 1018.8,648.8 1020.3,648.9 1022.3,648.9 1025.0,649.0 1028.5,649.1 1032.7,649.2 1037.4,649.4 1042.2,649.6 1046.9,649.7 1051.3,649.9 1055.3,650.0 1059.4,650.1 1063.4,650.3 1067.2,650.4 1070.8,650.6 1074.0,650.8 1076.8,651.0 1079.3,651.4 1081.6,651.8 1083.7,652.1 1085.8,652.4 1088.0,652.5 1090.4,652.1 1092.8,651.1 1095.2,650.0 1097.6,649.3 1099.9,649.4 1102.0,650.8 1104.0,654.3 1105.8,659.8 1107.6,666.1 1109.2,672.1 1110.9,676.7 1112.5,678.8 1114.2,677.6 1116.0,674.1 1117.7,669.1 1119.3,663.8 1120.6,659.1 1121.6,656.0" fill="none" stroke="#1a1a50" stroke-width="0.7" stroke-linejoin="round" opacity="0.8"/>
<line x1="813" y1="656.3" x2="944.2" y2="656.3" stroke="#333" stroke-width="0.9" opacity="0.85"/>
<line x1="990.8" y1="656.3" x2="1121.6" y2="656.3" stroke="#333" stroke-width="0.9" opacity="0.85"/>
<line x1="813" y1="667.5" x2="944.2" y2="667.5" stroke="#333" stroke-width="0.9" opacity="0.85"/>
<line x1="990.8" y1="667.5" x2="1121.6" y2="667.5" stroke="#333" stroke-width="0.9" opacity="0.85"/>
<line x1="813" y1="678.3" x2="944.2" y2="678.3" stroke="#333" stroke-width="0.9" opacity="0.85"/>
<line x1="990.8" y1="678.3" x2="1121.6" y2="678.3" stroke="#333" stroke-width="0.9" opacity="0.85"/>
<line x1="813" y1="689.5" x2="944.2" y2="689.5" stroke="#222" stroke-width="0.9" opacity="0.85"/>
<line x1="990.8" y1="689.5" x2="1121.6" y2="689.5" stroke="#222" stroke-width="0.9" opacity="0.85"/>
<line x1="813" y1="706.2" x2="944.2" y2="706.2" stroke="#333" stroke-width="0.9" opacity="0.85"/>
<line x1="990.8" y1="706.2" x2="1121.6" y2="706.2" stroke="#333" stroke-width="0.9" opacity="0.85"/>
<line x1="813" y1="717.5" x2="944.2" y2="717.5" stroke="#111" stroke-width="0.9" opacity="0.85"/>
<line x1="990.8" y1="717.5" x2="1121.6" y2="717.5" stroke="#111" stroke-width="0.9" opacity="0.85"/>
<line x1="813" y1="728.7" x2="944.2" y2="728.7" stroke="#333" stroke-width="0.9" opacity="0.85"/>
<line x1="990.8" y1="728.7" x2="1121.6" y2="728.7" stroke="#333" stroke-width="0.9" opacity="0.85"/>
<line x1="813" y1="740" x2="944.2" y2="740" stroke="#333" stroke-width="0.9" opacity="0.85"/>
<line x1="990.8" y1="740" x2="1121.6" y2="740" stroke="#333" stroke-width="0.9" opacity="0.85"/>
<line x1="813" y1="751.2" x2="944.2" y2="751.2" stroke="#333" stroke-width="0.9" opacity="0.85"/>
<line x1="990.8" y1="751.2" x2="1121.6" y2="751.2" stroke="#333" stroke-width="0.9" opacity="0.85"/>
<line x1="813" y1="648.3" x2="1121.6" y2="648.3" stroke="#2a2a2a" stroke-width="1.5"/>
<line x1="813" y1="692.2" x2="1121.6" y2="692.2" stroke="#3a3a3a" stroke-width="2"/>
<text x="967.2" y="658.3" fill="#2a2a2a" font-size="5.5" text-anchor="middle" letter-spacing="0.19">-3</text>
<text x="967.2" y="669.5" fill="#2a2a2a" font-size="5.5" text-anchor="middle" letter-spacing="0.19">-5</text>
<text x="967.2" y="680.3" fill="#2a2a2a" font-size="5.5" text-anchor="middle" letter-spacing="0.19">-7</text>
<text x="967.2" y="691.5" fill="#2a2a2a" font-size="5.5" text-anchor="middle" letter-spacing="0.19">-9</text>
<text x="967.2" y="708.2" fill="#2a2a2a" font-size="5.5" text-anchor="middle" letter-spacing="0.19">-12</text>
<text x="967.2" y="719.5" fill="#2a2a2a" font-size="5.5" text-anchor="middle" letter-spacing="0.19">-14</text>
<text x="967.2" y="730.7" fill="#2a2a2a" font-size="5.5" text-anchor="middle" letter-spacing="0.19">-16</text>
<text x="967.2" y="742" fill="#2a2a2a" font-size="5.5" text-anchor="middle" letter-spacing="0.19">-18</text>
<text x="967.2" y="753.2" fill="#2a2a2a" font-size="5.5" text-anchor="middle" letter-spacing="0.19">-20</text>
<text x="800" y="740.8" fill="#ddd" font-size="7" letter-spacing="0.25">ale</text>
<circle cx="801.7" cy="753.1" r="7.800000000000001" fill="#000" opacity="0.6"/>
<circle cx="801.7" cy="752.5" r="7.5" fill="url(#kb)"/>
<circle cx="801.7" cy="752.5" r="7.2" fill="none" stroke="#555" stroke-width="0.6"/>
<circle cx="801.7" cy="752.5" r="6.3" fill="none" stroke="#5a5a5a" stroke-width="0.4" opacity="0.8"/>
<line x1="805.31" y1="748.89" x2="806.9" y2="747.3" stroke="#d07818" stroke-width="1.65" stroke-linecap="round"/>
<text x="800" y="765.8" fill="#ccc" font-size="5" letter-spacing="0.18">dB</text>
<rect x="813" y="770.6" width="308.5999999999999" height="6.149999999999977" fill="url(#slK)" rx="3"/>
<rect x="1016.25" y="770" width="5.25" height="10" fill="#2a3050" stroke="#aaa" stroke-width="0.5"/>
<rect x="1127.4" y="638.9" width="23.59999999999991" height="128.20000000000005" fill="#5a8ad0"/>
<rect x="1127.4" y="638.9" width="11.599999999999909" height="1.3000000000000682" fill="#1a2ab0"/>
<rect x="1139" y="638.9" width="12" height="0.7000000000000455" fill="#1a2ab0"/>
<text x="1139.3" y="628" fill="#e8e8e8" font-size="8.5" text-anchor="middle" letter-spacing="0.3">Input</text>
<rect x="1154" y="638.9" width="18.90000000000009" height="128.20000000000005" fill="#a08878"/>
<rect x="1154" y="638.9" width="18.90000000000009" height="18.0" fill="#e87830"/>
<rect x="1154" y="656.9" width="9.5" height="9.300000000000068" fill="#e87830"/>
<rect x="1163.5" y="660.6" width="9.400000000000091" height="1.3999999999999773" fill="#ff4010"/>
<text x="1158.4" y="635.9" fill="#ccc" font-size="5.5" text-anchor="middle" letter-spacing="0.19">11</text>
<text x="1168.9" y="635.9" fill="#ccc" font-size="5.5" text-anchor="middle" letter-spacing="0.19">12</text>
<rect x="1175.9" y="638.9" width="24.09999999999991" height="128.20000000000005" fill="#e8e8f0"/>
<rect x="1175.9" y="678.75" width="24.09999999999991" height="88.35000000000002" fill="#9a78d8"/>
<rect x="1179.9" y="652.5" width="7.0" height="56.89999999999998" fill="#5a80d0"/>
<rect x="1193.9" y="650.75" width="6.099999999999909" height="56.85000000000002" fill="#5a80d0"/>
<rect x="1175.9" y="655" width="24.09999999999991" height="1.2999999999999545" fill="#1a2ab0"/>
<text x="1175.9" y="628" fill="#e8e8e8" font-size="8.5" letter-spacing="0.3">Output</text>
<text x="1183" y="635.9" fill="#ccc" font-size="5.5" text-anchor="middle" letter-spacing="0.19">-2.0</text>
<text x="1198" y="635.9" fill="#ccc" font-size="5.5" text-anchor="middle" letter-spacing="0.19">-1.0</text>
<line x1="1125.9" y1="647.6" x2="1129.9" y2="647.6" stroke="#111" stroke-width="0.8"/>
<line x1="1148.5" y1="647.6" x2="1152.5" y2="647.6" stroke="#111" stroke-width="0.8"/>
<text x="1139.3" y="649.6" fill="#222" font-size="5" text-anchor="middle" letter-spacing="0.18">-1.5</text>
<line x1="1152.5" y1="647.6" x2="1156.5" y2="647.6" stroke="#111" stroke-width="0.8"/>
<line x1="1170.4" y1="647.6" x2="1174.4" y2="647.6" stroke="#111" stroke-width="0.8"/>
<text x="1163.25" y="649.6" fill="#222" font-size="5" text-anchor="middle" letter-spacing="0.18">-1.5</text>
<line x1="1174.4" y1="647.6" x2="1178.4" y2="647.6" stroke="#111" stroke-width="0.8"/>
<line x1="1197.5" y1="647.6" x2="1201.5" y2="647.6" stroke="#111" stroke-width="0.8"/>
<text x="1189.5" y="649.6" fill="#222" font-size="5" text-anchor="middle" letter-spacing="0.18">-1.5</text>
<line x1="1125.9" y1="656.35" x2="1129.9" y2="656.35" stroke="#111" stroke-width="0.8"/>
<line x1="1148.5" y1="656.35" x2="1152.5" y2="656.35" stroke="#111" stroke-width="0.8"/>
<text x="1139.3" y="658.35" fill="#222" font-size="5" text-anchor="middle" letter-spacing="0.18">-3</text>
<line x1="1152.5" y1="656.35" x2="1156.5" y2="656.35" stroke="#111" stroke-width="0.8"/>
<line x1="1170.4" y1="656.35" x2="1174.4" y2="656.35" stroke="#111" stroke-width="0.8"/>
<text x="1163.25" y="658.35" fill="#222" font-size="5" text-anchor="middle" letter-spacing="0.18">-3</text>
<line x1="1174.4" y1="656.35" x2="1178.4" y2="656.35" stroke="#111" stroke-width="0.8"/>
<line x1="1197.5" y1="656.35" x2="1201.5" y2="656.35" stroke="#111" stroke-width="0.8"/>
<text x="1189.5" y="658.35" fill="#222" font-size="5" text-anchor="middle" letter-spacing="0.18">-3</text>
<line x1="1125.9" y1="667.4" x2="1129.9" y2="667.4" stroke="#111" stroke-width="0.8"/>
<line x1="1148.5" y1="667.4" x2="1152.5" y2="667.4" stroke="#111" stroke-width="0.8"/>
<text x="1139.3" y="669.4" fill="#222" font-size="5" text-anchor="middle" letter-spacing="0.18">-5</text>
<line x1="1152.5" y1="667.4" x2="1156.5" y2="667.4" stroke="#111" stroke-width="0.8"/>
<line x1="1170.4" y1="667.4" x2="1174.4" y2="667.4" stroke="#111" stroke-width="0.8"/>
<text x="1163.25" y="669.4" fill="#222" font-size="5" text-anchor="middle" letter-spacing="0.18">-5</text>
<line x1="1174.4" y1="667.4" x2="1178.4" y2="667.4" stroke="#111" stroke-width="0.8"/>
<line x1="1197.5" y1="667.4" x2="1201.5" y2="667.4" stroke="#111" stroke-width="0.8"/>
<text x="1189.5" y="669.4" fill="#222" font-size="5" text-anchor="middle" letter-spacing="0.18">-5</text>
<line x1="1125.9" y1="678.75" x2="1129.9" y2="678.75" stroke="#111" stroke-width="0.8"/>
<line x1="1148.5" y1="678.75" x2="1152.5" y2="678.75" stroke="#111" stroke-width="0.8"/>
<text x="1139.3" y="680.75" fill="#222" font-size="5" text-anchor="middle" letter-spacing="0.18">-7</text>
<line x1="1152.5" y1="678.75" x2="1156.5" y2="678.75" stroke="#111" stroke-width="0.8"/>
<line x1="1170.4" y1="678.75" x2="1174.4" y2="678.75" stroke="#111" stroke-width="0.8"/>
<text x="1163.25" y="680.75" fill="#222" font-size="5" text-anchor="middle" letter-spacing="0.18">-7</text>
<line x1="1174.4" y1="678.75" x2="1178.4" y2="678.75" stroke="#111" stroke-width="0.8"/>
<line x1="1197.5" y1="678.75" x2="1201.5" y2="678.75" stroke="#111" stroke-width="0.8"/>
<text x="1189.5" y="680.75" fill="#222" font-size="5" text-anchor="middle" letter-spacing="0.18">-7</text>
<line x1="1125.9" y1="690.1" x2="1129.9" y2="690.1" stroke="#111" stroke-width="0.8"/>
<line x1="1148.5" y1="690.1" x2="1152.5" y2="690.1" stroke="#111" stroke-width="0.8"/>
<text x="1139.3" y="692.1" fill="#222" font-size="5" text-anchor="middle" letter-spacing="0.18">-9</text>
<line x1="1152.5" y1="690.1" x2="1156.5" y2="690.1" stroke="#111" stroke-width="0.8"/>
<line x1="1170.4" y1="690.1" x2="1174.4" y2="690.1" stroke="#111" stroke-width="0.8"/>
<text x="1163.25" y="692.1" fill="#222" font-size="5" text-anchor="middle" letter-spacing="0.18">-9</text>
<line x1="1174.4" y1="690.1" x2="1178.4" y2="690.1" stroke="#111" stroke-width="0.8"/>
<line x1="1197.5" y1="690.1" x2="1201.5" y2="690.1" stroke="#111" stroke-width="0.8"/>
<text x="1189.5" y="692.1" fill="#222" font-size="5" text-anchor="middle" letter-spacing="0.18">-9</text>
<line x1="1125.9" y1="706.4" x2="1129.9" y2="706.4" stroke="#111" stroke-width="0.8"/>
<line x1="1148.5" y1="706.4" x2="1152.5" y2="706.4" stroke="#111" stroke-width="0.8"/>
<text x="1139.3" y="708.4" fill="#222" font-size="5" text-anchor="middle" letter-spacing="0.18">-12</text>
<line x1="1152.5" y1="706.4" x2="1156.5" y2="706.4" stroke="#111" stroke-width="0.8"/>
<line x1="1170.4" y1="706.4" x2="1174.4" y2="706.4" stroke="#111" stroke-width="0.8"/>
<text x="1163.25" y="708.4" fill="#222" font-size="5" text-anchor="middle" letter-spacing="0.18">-12</text>
<line x1="1174.4" y1="706.4" x2="1178.4" y2="706.4" stroke="#111" stroke-width="0.8"/>
<line x1="1197.5" y1="706.4" x2="1201.5" y2="706.4" stroke="#111" stroke-width="0.8"/>
<text x="1189.5" y="708.4" fill="#222" font-size="5" text-anchor="middle" letter-spacing="0.18">-12</text>
<line x1="1125.9" y1="717.6" x2="1129.9" y2="717.6" stroke="#111" stroke-width="0.8"/>
<line x1="1148.5" y1="717.6" x2="1152.5" y2="717.6" stroke="#111" stroke-width="0.8"/>
<text x="1139.3" y="719.6" fill="#222" font-size="5" text-anchor="middle" letter-spacing="0.18">-14</text>
<line x1="1152.5" y1="717.6" x2="1156.5" y2="717.6" stroke="#111" stroke-width="0.8"/>
<line x1="1170.4" y1="717.6" x2="1174.4" y2="717.6" stroke="#111" stroke-width="0.8"/>
<text x="1163.25" y="719.6" fill="#222" font-size="5" text-anchor="middle" letter-spacing="0.18">-14</text>
<line x1="1174.4" y1="717.6" x2="1178.4" y2="717.6" stroke="#111" stroke-width="0.8"/>
<line x1="1197.5" y1="717.6" x2="1201.5" y2="717.6" stroke="#111" stroke-width="0.8"/>
<text x="1189.5" y="719.6" fill="#222" font-size="5" text-anchor="middle" letter-spacing="0.18">-14</text>
<line x1="1125.9" y1="729.2" x2="1129.9" y2="729.2" stroke="#111" stroke-width="0.8"/>
<line x1="1148.5" y1="729.2" x2="1152.5" y2="729.2" stroke="#111" stroke-width="0.8"/>
<text x="1139.3" y="731.2" fill="#222" font-size="5" text-anchor="middle" letter-spacing="0.18">-16</text>
<line x1="1152.5" y1="729.2" x2="1156.5" y2="729.2" stroke="#111" stroke-width="0.8"/>
<line x1="1170.4" y1="729.2" x2="1174.4" y2="729.2" stroke="#111" stroke-width="0.8"/>
<text x="1163.25" y="731.2" fill="#222" font-size="5" text-anchor="middle" letter-spacing="0.18">-16</text>
<line x1="1174.4" y1="729.2" x2="1178.4" y2="729.2" stroke="#111" stroke-width="0.8"/>
<line x1="1197.5" y1="729.2" x2="1201.5" y2="729.2" stroke="#111" stroke-width="0.8"/>
<text x="1189.5" y="731.2" fill="#222" font-size="5" text-anchor="middle" letter-spacing="0.18">-16</text>
<line x1="1125.9" y1="740" x2="1129.9" y2="740" stroke="#111" stroke-width="0.8"/>
<line x1="1148.5" y1="740" x2="1152.5" y2="740" stroke="#111" stroke-width="0.8"/>
<text x="1139.3" y="742" fill="#222" font-size="5" text-anchor="middle" letter-spacing="0.18">-18</text>
<line x1="1152.5" y1="740" x2="1156.5" y2="740" stroke="#111" stroke-width="0.8"/>
<line x1="1170.4" y1="740" x2="1174.4" y2="740" stroke="#111" stroke-width="0.8"/>
<text x="1163.25" y="742" fill="#222" font-size="5" text-anchor="middle" letter-spacing="0.18">-18</text>
<line x1="1174.4" y1="740" x2="1178.4" y2="740" stroke="#111" stroke-width="0.8"/>
<line x1="1197.5" y1="740" x2="1201.5" y2="740" stroke="#111" stroke-width="0.8"/>
<text x="1189.5" y="742" fill="#222" font-size="5" text-anchor="middle" letter-spacing="0.18">-18</text>
<line x1="1125.9" y1="751.4" x2="1129.9" y2="751.4" stroke="#111" stroke-width="0.8"/>
<line x1="1148.5" y1="751.4" x2="1152.5" y2="751.4" stroke="#111" stroke-width="0.8"/>
<text x="1139.3" y="753.4" fill="#222" font-size="5" text-anchor="middle" letter-spacing="0.18">-20</text>
<line x1="1152.5" y1="751.4" x2="1156.5" y2="751.4" stroke="#111" stroke-width="0.8"/>
<line x1="1170.4" y1="751.4" x2="1174.4" y2="751.4" stroke="#111" stroke-width="0.8"/>
<text x="1163.25" y="753.4" fill="#222" font-size="5" text-anchor="middle" letter-spacing="0.18">-20</text>
<line x1="1174.4" y1="751.4" x2="1178.4" y2="751.4" stroke="#111" stroke-width="0.8"/>
<line x1="1197.5" y1="751.4" x2="1201.5" y2="751.4" stroke="#111" stroke-width="0.8"/>
<text x="1189.5" y="753.4" fill="#222" font-size="5" text-anchor="middle" letter-spacing="0.18">-20</text>
<text x="1133.5" y="778.5" fill="#ddd" font-size="9" text-anchor="middle" letter-spacing="0.32">L</text>
<text x="1145.4" y="778.5" fill="#ddd" font-size="9" text-anchor="middle" letter-spacing="0.32">R</text>
<text x="1163.25" y="778.5" fill="#ddd" font-size="6" text-anchor="middle" letter-spacing="0.21">Clip</text>
<text x="1182.5" y="778.5" fill="#ddd" font-size="9" text-anchor="middle" letter-spacing="0.32">L</text>
<text x="1198.25" y="778.5" fill="#ddd" font-size="9" text-anchor="middle" letter-spacing="0.32">R</text>
<rect x="800" y="782" width="400" height="106.29999999999995" fill="#0e0e0e"/>
<text x="815" y="796" fill="#e0e0e0" font-size="8" text-anchor="middle" letter-spacing="0.28">In Gain</text>
<path d="M814.24,801.59 A16.77857142857143,16.77857142857143 0 0 1 824.09,803.77" fill="none" stroke="#e8c030" stroke-width="2.61" stroke-linecap="butt"/>
<circle cx="815.7" cy="819.4599999999999" r="15.08" fill="#000" opacity="0.6"/>
<circle cx="815.7" cy="818.3" r="14.5" fill="url(#kb)"/>
<circle cx="815.7" cy="818.3" r="13.92" fill="none" stroke="#ccc" stroke-width="1.16"/>
<circle cx="815.7" cy="818.3" r="12.18" fill="none" stroke="#5a5a5a" stroke-width="0.5075000000000001" opacity="0.8"/>
<line x1="818.25" y1="808.78" x2="819.38" y2="804.57" stroke="#d07818" stroke-width="3.19" stroke-linecap="round"/>
<text x="815" y="844" fill="#dce6ff" font-size="6.5" text-anchor="middle" letter-spacing="0.23">4.51 dB</text>
<text x="816" y="860" fill="#e0e0e0" font-size="6.5" text-anchor="middle" letter-spacing="0.23">Bypass</text>
<rect x="811.7" y="865" width="7.599999999999909" height="7.7000000000000455" fill="#3a3a58"/>
<text x="881" y="800" fill="#e0e0e0" font-size="9" text-anchor="middle" letter-spacing="0.32">Initial</text>
<path d="M895.53,832.69 A16.77857142857143,16.77857142857143 0 0 1 889.39,838.83" fill="none" stroke="#e8c030" stroke-width="2.61" stroke-linecap="butt"/>
<circle cx="881" cy="825.4599999999999" r="15.08" fill="#000" opacity="0.6"/>
<circle cx="881" cy="824.3" r="14.5" fill="url(#kb)"/>
<circle cx="881" cy="824.3" r="13.92" fill="none" stroke="#ccc" stroke-width="1.16"/>
<circle cx="881" cy="824.3" r="12.18" fill="none" stroke="#5a5a5a" stroke-width="0.5075000000000001" opacity="0.8"/>
<line x1="887.97" y1="831.27" x2="891.05" y2="834.35" stroke="#d07818" stroke-width="3.19" stroke-linecap="round"/>
<text x="881" y="849.3" fill="#dce6ff" font-size="6.5" text-anchor="middle" letter-spacing="0.23">-1.68 dB</text>
<text x="933.3" y="795" fill="#eee" font-size="12" text-anchor="middle" letter-spacing="0.42">Threshold</text>
<text x="931.7" y="821.7" fill="#e0e0e0" font-size="7" text-anchor="middle" letter-spacing="0.25">Link</text>
<line x1="913" y1="830.7" x2="948" y2="830.7" stroke="#2a2a2a" stroke-width="1"/>
<rect x="926.7" y="826.7" width="8.299999999999955" height="8.299999999999955" fill="#3a3a58"/>
<text x="986.7" y="800" fill="#e0e0e0" font-size="9" text-anchor="middle" letter-spacing="0.32">End</text>
<path d="M986.70,807.52 A16.77857142857143,16.77857142857143 0 0 1 999.55,835.09" fill="none" stroke="#e8c030" stroke-width="2.61" stroke-linecap="butt"/>
<circle cx="986.7" cy="825.4599999999999" r="15.08" fill="#000" opacity="0.6"/>
<circle cx="986.7" cy="824.3" r="14.5" fill="url(#kb)"/>
<circle cx="986.7" cy="824.3" r="13.92" fill="none" stroke="#ccc" stroke-width="1.16"/>
<circle cx="986.7" cy="824.3" r="12.18" fill="none" stroke="#5a5a5a" stroke-width="0.5075000000000001" opacity="0.8"/>
<line x1="991.63" y1="815.76" x2="993.81" y2="811.99" stroke="#d07818" stroke-width="3.19" stroke-linecap="round"/>
<text x="986.7" y="849.3" fill="#dce6ff" font-size="6.5" text-anchor="middle" letter-spacing="0.23">-9.68 dB</text>
<rect x="865" y="864" width="135" height="15.299999999999955" fill="#1c1c1c" stroke="#333" stroke-width="0.8"/>
<circle cx="880" cy="872.3" r="4" fill="url(#glP)"/>
<line x1="897.3" y1="865" x2="897.3" y2="878" stroke="#000" stroke-width="1.2"/>
<circle cx="903" cy="872" r="5" fill="url(#glK)" opacity="1"/>
<circle cx="908" cy="872" r="5" fill="url(#glK)" opacity="1"/>
<circle cx="913" cy="872" r="5" fill="url(#glK)" opacity="1"/>
<circle cx="918" cy="872" r="5" fill="url(#glK)" opacity="0.9"/>
<circle cx="923" cy="872" r="5" fill="url(#glK)" opacity="0.8"/>
<circle cx="935" cy="872" r="5" fill="url(#glK)" opacity="0.5"/>
<circle cx="945" cy="872" r="5" fill="url(#glK)" opacity="0.5"/>
<circle cx="955" cy="872" r="5" fill="url(#glK)" opacity="0.45"/>
<rect x="1018.3" y="792.7" width="141.0" height="93.29999999999995" fill="url(#advK)" stroke="#222" stroke-width="1"/>
<rect x="1018.3" y="784" width="12.400000000000091" height="6.7000000000000455" fill="#3050c0"/>
<text x="1024.5" y="789.5" fill="#c8d0ff" font-size="5" text-anchor="middle" font-weight="bold" letter-spacing="0.18">ADV</text>
<rect x="1038.3" y="784" width="12.400000000000091" height="6.7000000000000455" fill="#2a2e48"/>
<text x="1044.5" y="789.5" fill="#eee" font-size="5" text-anchor="middle" font-weight="bold" letter-spacing="0.18">EQ</text>
<rect x="1057.7" y="784" width="12.299999999999955" height="6.7000000000000455" fill="#2a2e48"/>
<text x="1063.85" y="789.5" fill="#eee" font-size="5" text-anchor="middle" font-weight="bold" letter-spacing="0.18">M/S</text>
<text x="1039.3" y="806.7" fill="#e0e0e0" font-size="6" text-anchor="middle" letter-spacing="0.21">Clip Shape</text>
<circle cx="1039.3" cy="821.34" r="8.32" fill="#000" opacity="0.6"/>
<circle cx="1039.3" cy="820.7" r="8" fill="url(#kb)"/>
<circle cx="1039.3" cy="820.7" r="7.68" fill="none" stroke="#555" stroke-width="0.64"/>
<circle cx="1039.3" cy="820.7" r="6.72" fill="none" stroke="#5a5a5a" stroke-width="0.4" opacity="0.8"/>
<line x1="1043.15" y1="824.55" x2="1044.84" y2="826.24" stroke="#d07818" stroke-width="1.76" stroke-linecap="round"/>
<text x="1039.3" y="833.3000000000001" fill="#ddd" font-size="5" text-anchor="middle" letter-spacing="0.18">1.00</text>
<text x="1079.3" y="806.7" fill="#e0e0e0" font-size="6" text-anchor="middle" letter-spacing="0.21">Attack</text>
<circle cx="1079.3" cy="821.34" r="8.32" fill="#000" opacity="0.6"/>
<circle cx="1079.3" cy="820.7" r="8" fill="url(#kb)"/>
<circle cx="1079.3" cy="820.7" r="7.68" fill="none" stroke="#555" stroke-width="0.64"/>
<circle cx="1079.3" cy="820.7" r="6.72" fill="none" stroke="#5a5a5a" stroke-width="0.4" opacity="0.8"/>
<line x1="1074.59" y1="817.98" x2="1072.51" y2="816.78" stroke="#d07818" stroke-width="1.76" stroke-linecap="round"/>
<text x="1079.3" y="833.3000000000001" fill="#ddd" font-size="5" text-anchor="middle" letter-spacing="0.18">99 ms</text>
<text x="1039.3" y="848.7" fill="#e0e0e0" font-size="6" text-anchor="middle" letter-spacing="0.21">Harmonics</text>
<circle cx="1039.3" cy="863.34" r="8.32" fill="#000" opacity="0.6"/>
<circle cx="1039.3" cy="862.7" r="8" fill="url(#kb)"/>
<circle cx="1039.3" cy="862.7" r="7.68" fill="none" stroke="#555" stroke-width="0.64"/>
<circle cx="1039.3" cy="862.7" r="6.72" fill="none" stroke="#5a5a5a" stroke-width="0.4" opacity="0.8"/>
<line x1="1043.15" y1="866.55" x2="1044.84" y2="868.24" stroke="#d07818" stroke-width="1.76" stroke-linecap="round"/>
<text x="1039.3" y="875.3000000000001" fill="#ddd" font-size="5" text-anchor="middle" letter-spacing="0.18">1.000</text>
<text x="1079.3" y="848.7" fill="#e0e0e0" font-size="6" text-anchor="middle" letter-spacing="0.21">Release</text>
<circle cx="1079.3" cy="863.34" r="8.32" fill="#000" opacity="0.6"/>
<circle cx="1079.3" cy="862.7" r="8" fill="url(#kb)"/>
<circle cx="1079.3" cy="862.7" r="7.68" fill="none" stroke="#555" stroke-width="0.64"/>
<circle cx="1079.3" cy="862.7" r="6.72" fill="none" stroke="#5a5a5a" stroke-width="0.4" opacity="0.8"/>
<line x1="1079.3" y1="857.26" x2="1079.3" y2="854.86" stroke="#d07818" stroke-width="1.76" stroke-linecap="round"/>
<text x="1079.3" y="875.3000000000001" fill="#ddd" font-size="5" text-anchor="middle" letter-spacing="0.18">1000 ms</text>
<text x="1140" y="807.3" fill="#e0e0e0" font-size="6" text-anchor="middle" letter-spacing="0.21">Oversample</text>
<rect x="1136" y="815" width="10.700000000000045" height="10" fill="#2a2a48"/>
<text x="1141.35" y="822" fill="#8888c0" font-size="5" text-anchor="middle" letter-spacing="0.18">OFF</text>
<text x="1112.7" y="826.7" fill="#e0e0e0" font-size="6" text-anchor="middle" letter-spacing="0.21">Threshold</text>
<rect x="1105" y="830.7" width="15" height="12.0" fill="#d04050" stroke="#802030" stroke-width="0.6"/>
<text x="1112.5" y="839" fill="#3a0010" font-size="6" text-anchor="middle" letter-spacing="0.21">IND</text>
<text x="1142.3" y="850.7" fill="#e0e0e0" font-size="6" text-anchor="middle" letter-spacing="0.21">Double</text>
<text x="1166.7" y="796" fill="#e0e0e0" font-size="8" letter-spacing="0.28">Out Gain</text>
<circle cx="1185" cy="820.4599999999999" r="15.08" fill="#000" opacity="0.6"/>
<circle cx="1185" cy="819.3" r="14.5" fill="url(#kb)"/>
<circle cx="1185" cy="819.3" r="13.92" fill="none" stroke="#ccc" stroke-width="1.16"/>
<circle cx="1185" cy="819.3" r="12.18" fill="none" stroke="#5a5a5a" stroke-width="0.5075000000000001" opacity="0.8"/>
<line x1="1185" y1="809.44" x2="1185" y2="805.09" stroke="#d07818" stroke-width="3.19" stroke-linecap="round"/>
<text x="1184.3" y="844" fill="#dce6ff" font-size="6.5" text-anchor="middle" letter-spacing="0.23">0.00 dB</text>
<text x="1183.3" y="857.3" fill="#e0e0e0" font-size="7" text-anchor="middle" letter-spacing="0.25">Mix</text>
<circle cx="1184" cy="869.9399999999999" r="8.32" fill="#000" opacity="0.6"/>
<circle cx="1184" cy="869.3" r="8" fill="url(#kb)"/>
<circle cx="1184" cy="869.3" r="7.68" fill="none" stroke="#555" stroke-width="0.64"/>
<circle cx="1184" cy="869.3" r="6.72" fill="none" stroke="#5a5a5a" stroke-width="0.4" opacity="0.8"/>
<line x1="1187.85" y1="873.15" x2="1189.54" y2="874.84" stroke="#d07818" stroke-width="1.76" stroke-linecap="round"/>
<text x="1183.3" y="883.3" fill="#ddd" font-size="5" text-anchor="middle" letter-spacing="0.18">100 %</text>
<rect x="800" y="888.3" width="400" height="11.700000000000045" fill="#141414"/>
<text x="801.7" y="896.7" fill="#ddd" font-size="6.5" letter-spacing="0.23">Registered to: LVC-Audio</text>
<rect x="1033.3" y="891" width="7.400000000000091" height="7.2999999999999545" fill="#2a2e48" rx="1"/>
<text x="1037.0" y="896.4499999999999" fill="#99a" font-size="5" text-anchor="middle" letter-spacing="0.18">&lt;&lt;</text>
<rect x="1045.7" y="891" width="7.599999999999909" height="7.2999999999999545" fill="#1a1a28" rx="1"/>
<text x="1049.5" y="896.4499999999999" fill="#445" font-size="5" text-anchor="middle" letter-spacing="0.18">&gt;&gt;</text>
<rect x="1115" y="891" width="15.700000000000045" height="7.2999999999999545" fill="#2a2e48" rx="1"/>
<text x="1122.85" y="896.99" fill="#dde" font-size="6.5" text-anchor="middle" letter-spacing="0.23">A</text>
<rect x="1135" y="891" width="16.700000000000045" height="7.2999999999999545" fill="#2a2e48" rx="1"/>
<text x="1143.35" y="896.81" fill="#dde" font-size="6" text-anchor="middle" letter-spacing="0.21">A-&gt;B</text>
</g>
<g clip-path="url(#cL)"><g filter="url(#blL)">
<rect x="0" y="900" width="600" height="300" fill="#141414"/>
<rect x="0" y="900" width="11" height="300" fill="#0e0e0e"/>
<rect x="3" y="900" width="5" height="300" fill="#1e1e1e"/>
<rect x="11" y="900" width="127" height="300" fill="#1a1a1a"/>
<rect x="138.75" y="900" width="7.5" height="300" fill="#3a1a08"/>
<rect x="138.75" y="900" width="7.5" height="30" fill="#6a3010"/>
<rect x="138.75" y="930" width="7.5" height="187.5" fill="#d06a18"/>
<rect x="146.25" y="900" width="3.75" height="300" fill="#0a0a0a"/>
<rect x="12.5" y="900" width="125.0" height="53.75" fill="#2e2e2e"/>
<rect x="12.5" y="900" width="35.5" height="53.75" fill="#3a3a3a"/>
<text x="30" y="918" fill="#aaa" font-size="5" text-anchor="middle" letter-spacing="0.18">LVC audio</text>
<text x="30" y="932" fill="#e8e8e8" font-size="12" text-anchor="middle" font-weight="bold" letter-spacing="0.42">DDC</text>
<rect x="48" y="900" width="89.5" height="53.75" fill="#5a5a54"/>
<circle cx="66" cy="911" r="11" fill="#c8c8b0"/>
<circle cx="68" cy="911" r="4.4" fill="#222"/>
<circle cx="85" cy="937" r="10" fill="#c8c8b0"/>
<circle cx="87" cy="937" r="4.0" fill="#222"/>
<circle cx="105" cy="938" r="8" fill="#c8c8b0"/>
<circle cx="107" cy="938" r="3.2" fill="#222"/>
<circle cx="125" cy="937" r="8" fill="#c8c8b0"/>
<circle cx="127" cy="937" r="3.2" fill="#222"/>
<circle cx="130" cy="910" r="9" fill="#c8c8b0"/>
<circle cx="132" cy="910" r="3.6" fill="#222"/>
<rect x="100" y="903" width="25" height="2" fill="#40d040"/>
<rect x="102" y="909" width="18" height="2" fill="#40d040"/>
<rect x="12.5" y="953.75" width="125.0" height="13.75" fill="#1a0505"/>
<text x="15" y="962" fill="#d06a18" font-size="6.5" style='font-family:"Liberation Mono", monospace' letter-spacing="0.23">DDC: Compressor</text>
<rect x="12.5" y="969.5" width="125.0" height="55.5" fill="#8a8a82"/>
<rect x="12.5" y="969.5" width="47.5" height="55.5" fill="#7a7a72"/>
<text x="30" y="988" fill="#444" font-size="5" text-anchor="middle" letter-spacing="0.18">LVC audio</text>
<text x="30" y="1004" fill="#f0f0f0" font-size="12" text-anchor="middle" font-weight="bold" letter-spacing="0.42">DDC</text>
<rect x="60" y="972" width="77.5" height="28" fill="#a8a8a0"/>
<rect x="98" y="971" width="32" height="2" fill="#40d040"/>
<rect x="100" y="980" width="30" height="2" fill="#40d040"/>
<circle cx="84" cy="1010" r="12" fill="#c8c8b0"/>
<circle cx="84" cy="1010" r="5.4" fill="#111"/>
<circle cx="109" cy="1008" r="9" fill="#c8c8b0"/>
<circle cx="109" cy="1008" r="4.05" fill="#111"/>
<circle cx="128" cy="1007" r="8" fill="#c8c8b0"/>
<circle cx="128" cy="1007" r="3.6" fill="#111"/>
<rect x="12.5" y="1025" width="125.0" height="13.75" fill="#1a0505"/>
<text x="15" y="1033" fill="#d06a18" font-size="6.5" style='font-family:"Liberation Mono", monospace' letter-spacing="0.23">DDC: Gate</text>
<rect x="12.5" y="1040" width="125.0" height="57.5" fill="#2e2e2e"/>
<rect x="19" y="1056" width="35" height="12" fill="#4a2a22" stroke="#7a3a2a" stroke-width="0.6"/>
<text x="36.5" y="1065" fill="#c06040" font-size="5.5" text-anchor="middle" letter-spacing="0.19">LVC audio</text>
<rect x="19" y="1071" width="35" height="4" fill="#6a6a6a"/>
<circle cx="89" cy="1060" r="15.5" fill="none" stroke="#d06a18" stroke-width="1.2"/>
<circle cx="89" cy="1060" r="14" fill="#c8c8c8"/>
<circle cx="92" cy="1060" r="5.6000000000000005" fill="#f0f0f0"/>
<circle cx="114" cy="1085" r="10.5" fill="none" stroke="#d06a18" stroke-width="1.2"/>
<circle cx="114" cy="1085" r="9" fill="#c8c8c8"/>
<circle cx="117" cy="1085" r="3.6" fill="#f0f0f0"/>
<circle cx="130" cy="1084" r="10.5" fill="none" stroke="#d06a18" stroke-width="1.2"/>
<circle cx="130" cy="1084" r="9" fill="#c8c8c8"/>
<circle cx="133" cy="1084" r="3.6" fill="#f0f0f0"/>
<circle cx="137" cy="1060" r="10.5" fill="none" stroke="#d06a18" stroke-width="1.2"/>
<circle cx="137" cy="1060" r="9" fill="#c8c8c8"/>
<circle cx="140" cy="1060" r="3.6" fill="#f0f0f0"/>
<rect x="12.5" y="1097.5" width="125.0" height="12.5" fill="#1a0505"/>
<text x="15" y="1105.5" fill="#d06a18" font-size="6.5" style='font-family:"Liberation Mono", monospace' letter-spacing="0.23">Digital Comp: Compressor</text>
<rect x="13.5" y="1112" width="124.25" height="72" fill="#2e2e2e" stroke="#e07a18" stroke-width="2"/>
<rect x="19" y="1127" width="35" height="12" fill="#4a2a22" stroke="#7a3a2a" stroke-width="0.6"/>
<text x="36.5" y="1136" fill="#c06040" font-size="5.5" text-anchor="middle" letter-spacing="0.19">LVC audio</text>
<rect x="19" y="1142" width="35" height="4" fill="#6a6a6a"/>
<circle cx="82" cy="1141" r="10.5" fill="none" stroke="#d06a18" stroke-width="1.2"/>
<circle cx="82" cy="1141" r="9" fill="#c8c8c8"/>
<circle cx="84.5" cy="1141" r="3.6" fill="#f0f0f0"/>
<circle cx="108" cy="1141" r="9.5" fill="none" stroke="#d06a18" stroke-width="1.2"/>
<circle cx="108" cy="1141" r="8" fill="#c8c8c8"/>
<circle cx="110.5" cy="1141" r="3.2" fill="#f0f0f0"/>
<circle cx="128" cy="1141" r="9.5" fill="none" stroke="#d06a18" stroke-width="1.2"/>
<circle cx="128" cy="1141" r="8" fill="#c8c8c8"/>
<circle cx="130.5" cy="1141" r="3.2" fill="#f0f0f0"/>
<circle cx="82" cy="1115" r="7.5" fill="none" stroke="#d06a18" stroke-width="1.2"/>
<circle cx="82" cy="1115" r="6" fill="#c8c8c8"/>
<circle cx="84.5" cy="1115" r="2.4000000000000004" fill="#f0f0f0"/>
<circle cx="106" cy="1115" r="7.5" fill="none" stroke="#d06a18" stroke-width="1.2"/>
<circle cx="106" cy="1115" r="6" fill="#c8c8c8"/>
<circle cx="108.5" cy="1115" r="2.4000000000000004" fill="#f0f0f0"/>
<circle cx="128" cy="1115" r="7.5" fill="none" stroke="#d06a18" stroke-width="1.2"/>
<circle cx="128" cy="1115" r="6" fill="#c8c8c8"/>
<circle cx="130.5" cy="1115" r="2.4000000000000004" fill="#f0f0f0"/>
<circle cx="108" cy="1163" r="7.5" fill="none" stroke="#d06a18" stroke-width="1.2"/>
<circle cx="108" cy="1163" r="6" fill="#c8c8c8"/>
<circle cx="110.5" cy="1163" r="2.4000000000000004" fill="#f0f0f0"/>
<circle cx="128" cy="1163" r="7.5" fill="none" stroke="#d06a18" stroke-width="1.2"/>
<circle cx="128" cy="1163" r="6" fill="#c8c8c8"/>
<circle cx="130.5" cy="1163" r="2.4000000000000004" fill="#f0f0f0"/>
<rect x="14.5" y="1167.5" width="122.25" height="13.75" fill="#1a0505"/>
<text x="16" y="1176" fill="#d06a18" font-size="6.5" style='font-family:"Liberation Mono", monospace' letter-spacing="0.23">Digital EQ: EQ</text>
<rect x="12.5" y="1187" width="125.0" height="13" fill="#2e2e2e"/>
<circle cx="95" cy="1195" r="9" fill="#c8c8c8" stroke="#d06a18" stroke-width="1.2"/>
<rect x="150" y="900" width="450" height="145" fill="url(#bzL)"/>
<rect x="156" y="900" width="35" height="140" fill="#262626"/>
<rect x="575.6" y="900" width="20.399999999999977" height="140" fill="#262626"/>
<rect x="191.25" y="900" width="384.35" height="110.60000000000002" fill="#120400"/>
<line x1="191.25" y1="900" x2="191.25" y2="1010.6" stroke="#3a1606" stroke-width="0.8"/>
<line x1="207.95" y1="900" x2="207.95" y2="1010.6" stroke="#3a1606" stroke-width="0.8"/>
<line x1="224.65" y1="900" x2="224.65" y2="1010.6" stroke="#3a1606" stroke-width="0.8"/>
<line x1="241.35" y1="900" x2="241.35" y2="1010.6" stroke="#3a1606" stroke-width="0.8"/>
<line x1="258.05" y1="900" x2="258.05" y2="1010.6" stroke="#3a1606" stroke-width="0.8"/>
<line x1="274.75" y1="900" x2="274.75" y2="1010.6" stroke="#3a1606" stroke-width="0.8"/>
<line x1="291.45" y1="900" x2="291.45" y2="1010.6" stroke="#3a1606" stroke-width="0.8"/>
<line x1="308.15" y1="900" x2="308.15" y2="1010.6" stroke="#3a1606" stroke-width="0.8"/>
<line x1="324.85" y1="900" x2="324.85" y2="1010.6" stroke="#3a1606" stroke-width="0.8"/>
<line x1="341.55" y1="900" x2="341.55" y2="1010.6" stroke="#3a1606" stroke-width="0.8"/>
<line x1="358.25" y1="900" x2="358.25" y2="1010.6" stroke="#3a1606" stroke-width="0.8"/>
<line x1="374.95" y1="900" x2="374.95" y2="1010.6" stroke="#3a1606" stroke-width="0.8"/>
<line x1="391.65" y1="900" x2="391.65" y2="1010.6" stroke="#3a1606" stroke-width="0.8"/>
<line x1="408.35" y1="900" x2="408.35" y2="1010.6" stroke="#3a1606" stroke-width="0.8"/>
<line x1="425.05" y1="900" x2="425.05" y2="1010.6" stroke="#3a1606" stroke-width="0.8"/>
<line x1="441.75" y1="900" x2="441.75" y2="1010.6" stroke="#3a1606" stroke-width="0.8"/>
<line x1="458.45" y1="900" x2="458.45" y2="1010.6" stroke="#3a1606" stroke-width="0.8"/>
<line x1="475.15" y1="900" x2="475.15" y2="1010.6" stroke="#3a1606" stroke-width="0.8"/>
<line x1="491.85" y1="900" x2="491.85" y2="1010.6" stroke="#3a1606" stroke-width="0.8"/>
<line x1="508.55" y1="900" x2="508.55" y2="1010.6" stroke="#3a1606" stroke-width="0.8"/>
<line x1="525.25" y1="900" x2="525.25" y2="1010.6" stroke="#3a1606" stroke-width="0.8"/>
<line x1="541.95" y1="900" x2="541.95" y2="1010.6" stroke="#3a1606" stroke-width="0.8"/>
<line x1="558.65" y1="900" x2="558.65" y2="1010.6" stroke="#3a1606" stroke-width="0.8"/>
<line x1="575.35" y1="900" x2="575.35" y2="1010.6" stroke="#3a1606" stroke-width="0.8"/>
<polygon points="191.2,1010.6 191.2,969.4 201.6,969.4 211.9,969.4 222.2,969.4 232.5,969.4 236.2,966.1 240.0,962.8 243.7,959.5 247.5,956.2 250.3,947.8 253.1,939.4 255.9,930.9 258.7,922.5 262.5,916.9 266.2,911.2 270.0,905.6 273.7,900.0 277.5,900.0 281.2,900.0 285.0,900.0 288.7,900.0 291.5,905.6 294.4,911.2 297.2,916.9 300.0,922.5 301.9,920.6 303.7,918.7 305.6,916.9 307.5,915.0 309.4,917.8 311.2,920.6 313.1,923.4 315.0,926.2 316.9,923.4 318.7,920.6 320.6,917.8 322.5,915.0 324.4,918.7 326.2,922.5 328.1,926.2 330.0,930.0 331.9,928.1 333.7,926.2 335.6,924.4 337.5,922.5 339.4,927.2 341.2,931.9 343.1,936.6 345.0,939.4 346.9,935.7 348.7,939.1 350.6,931.1 352.5,934.1 354.3,931.4 356.2,927.2 358.1,931.0 360.0,925.1 361.8,927.4 363.7,921.7 365.6,920.1 367.5,921.7 369.3,930.6 371.2,927.9 373.1,933.7 375.0,942.6 376.8,945.0 378.7,940.2 380.6,937.3 382.5,942.5 384.3,930.9 386.2,937.5 388.1,929.7 390.0,926.3 391.8,927.9 393.7,931.7 395.6,938.9 397.5,934.1 399.3,941.2 401.2,944.6 403.1,944.6 405.0,949.2 406.8,941.3 408.7,938.5 410.6,937.2 412.5,939.4 414.3,934.9 416.2,931.8 418.1,932.8 420.0,929.5 421.8,924.1 423.7,925.6 425.6,920.8 427.5,912.3 429.3,913.0 431.2,909.6 433.1,910.5 435.0,906.2 436.8,903.4 438.7,912.5 440.6,905.4 442.5,910.4 444.3,911.1 446.2,902.0 448.1,902.7 450.0,900.0 451.8,905.5 453.7,910.3 455.6,912.0 457.5,918.9 459.3,909.3 461.2,909.5 463.1,904.7 465.0,900.8 466.8,905.2 468.7,914.8 470.6,921.5 472.5,922.2 474.3,920.5 476.2,910.4 478.1,913.4 480.0,909.0 481.8,913.6 483.7,912.8 485.6,908.0 487.5,910.0 489.3,914.0 491.2,908.1 493.1,913.7 495.0,911.5 496.8,907.2 498.7,902.9 500.6,906.6 502.5,900.0 504.3,903.9 506.2,912.0 508.1,923.6 510.0,921.8 511.8,924.8 513.7,924.9 515.6,927.5 517.5,925.8 519.3,927.3 521.2,922.0 523.1,924.4 525.0,924.8 526.8,932.2 528.7,934.8 530.6,928.2 532.5,930.3 534.3,929.1 536.2,927.2 538.1,928.0 540.0,927.2 541.8,924.7 543.7,922.9 545.6,928.2 547.5,928.6 549.3,933.5 551.2,940.4 553.1,940.4 554.9,941.4 556.8,947.2 558.7,952.5 560.6,950.6 562.4,964.2 565.7,966.7 569.0,971.4 572.3,974.4 575.6,975.0 575.6,1010.6" fill="#961414"/>
<polyline points="191.2,963.7 273.7,900.0 324.4,915.2 326.2,918.9 328.1,923.8 330.0,925.5 331.9,925.9 333.7,924.0 335.6,921.5 337.5,919.8 339.4,923.8 341.2,929.7 343.1,934.6 345.0,936.8 346.9,933.3 348.7,935.6 350.6,929.0 352.5,928.6 354.3,926.9 356.2,924.6 358.1,928.0 360.0,921.8 361.8,924.0 363.7,919.2 365.6,914.7 367.5,915.7 369.3,926.8 371.2,924.0 373.1,931.3 375.0,940.2 376.8,941.6 378.7,937.1 380.6,932.0 382.5,939.8 384.3,928.8 386.2,931.7 388.1,925.5 390.0,923.7 391.8,923.7 393.7,929.6 395.6,934.8 397.5,928.2 399.3,935.7 401.2,939.8 403.1,941.5 405.0,945.8 406.8,938.7 408.7,933.4 410.6,933.1 412.5,934.3 414.3,931.5 416.2,928.9 418.1,927.5 420.0,923.6 421.8,918.7 423.7,920.4 425.6,915.6 427.5,907.4 429.3,910.1 431.2,905.6 433.1,907.1 435.0,904.0 436.8,901.3 438.7,909.4 440.6,902.3 442.5,905.6 444.3,905.3 446.2,898.2 448.1,896.9 450.0,894.0 451.8,899.7 453.7,906.8 455.6,909.1 457.5,916.0 459.3,906.5 461.2,906.7 463.1,900.2 465.0,895.2 466.8,899.8 468.7,910.9 470.6,916.9 472.5,917.0 474.3,918.1 476.2,905.7 478.1,907.7 480.0,903.9 481.8,908.6 483.7,908.8 485.6,905.3 487.5,904.9 489.3,910.6 491.2,902.9 493.1,907.8 495.0,907.9 496.8,903.6 498.7,897.1 500.6,901.7 502.5,897.3 504.3,901.4 506.2,909.4 508.1,918.0 510.0,916.6 511.8,922.2 513.7,919.6 515.6,921.5 517.5,921.2 519.3,923.9 521.2,917.9 523.1,921.9 525.0,922.7 526.8,926.3 528.7,930.2 530.6,924.1 532.5,924.6 534.3,925.3 536.2,921.7 538.1,922.7 540.0,924.3 541.8,921.7 543.7,919.7 545.6,925.2 547.5,924.3 549.3,930.5 551.2,936.7 553.1,937.9 554.9,935.8 556.8,943.8 558.7,948.6 560.6,946.3 562.4,958.6 565.7,963.0 569.0,965.8 572.3,970.4 575.6,970.9" fill="none" stroke="#e82020" stroke-width="1.3" stroke-linejoin="round"/>
<rect x="191.25" y="1010.6" width="384.35" height="24.399999999999977" fill="#2a2a2a"/>
<rect x="200" y="1012" width="365" height="23" fill="url(#hlL)"/>
<rect x="191.25" y="1033" width="384.35" height="3" fill="#111"/>
<rect x="150" y="1036" width="450" height="10" fill="#1a1a1a"/>
<rect x="150" y="1045" width="450" height="155" fill="#222"/>
<rect x="150" y="1045" width="35" height="155" fill="#1e1e1e"/>
<rect x="153" y="1048" width="29" height="152" fill="#2a2a2a"/>
<text x="167" y="1052" fill="#d07818" font-size="3.5" text-anchor="middle" letter-spacing="0.12">INPUT</text>
<rect x="161.25" y="1068" width="5.599999999999994" height="113" fill="#3a2010"/>
<rect x="161.25" y="1090" width="5.599999999999994" height="91" fill="#d07818"/>
<rect x="161.25" y="1068" width="5.599999999999994" height="22" fill="#c8c020"/>
<rect x="174.4" y="1068" width="5.599999999999994" height="113" fill="#3a2010"/>
<rect x="174.4" y="1090" width="5.599999999999994" height="91" fill="#d07818"/>
<rect x="174.4" y="1068" width="5.599999999999994" height="22" fill="#c8c020"/>
<circle cx="167.6" cy="1188" r="12" fill="#3a3a3a" stroke="#555" stroke-width="1"/>
<polygon points="167.6,1181.0 164.0,1186.0 171.2,1186.0" fill="#e08020"/>
<rect x="570" y="1045" width="35" height="155" fill="#1e1e1e"/>
<rect x="573" y="1048" width="29" height="152" fill="#2a2a2a"/>
<text x="587" y="1052" fill="#d07818" font-size="3.5" text-anchor="middle" letter-spacing="0.12">OUTPUT</text>
<rect x="581.25" y="1068" width="5.600000000000023" height="113" fill="#3a2010"/>
<rect x="581.25" y="1095" width="5.600000000000023" height="86" fill="#d07818"/>
<rect x="581.25" y="1068" width="5.600000000000023" height="27" fill="#d0a020"/>
<rect x="594.4" y="1068" width="5.600000000000023" height="113" fill="#3a2010"/>
<rect x="594.4" y="1095" width="5.600000000000023" height="86" fill="#d07818"/>
<rect x="594.4" y="1068" width="5.600000000000023" height="27" fill="#d0a020"/>
<rect x="581.25" y="1085" width="5.600000000000023" height="5" fill="#e02020"/>
<rect x="594.4" y="1085" width="5.600000000000023" height="5" fill="#e02020"/>
<circle cx="587.6" cy="1188" r="12" fill="#3a3a3a" stroke="#555" stroke-width="1"/>
<polygon points="587.6,1181.0 584.0,1186.0 591.2,1186.0" fill="#e08020"/>
<rect x="185.6" y="1045.6" width="380.6" height="15.0" fill="#1a0a04"/>
<text x="189.4" y="1054.25" fill="#c06a18" font-size="4.5" font-weight="bold" letter-spacing="0.16">Hallhas Kilzar</text>
<rect x="277.5" y="1048" width="71.25" height="10" fill="none" stroke="#5a3010" stroke-width="0.8"/>
<text x="313" y="1055" fill="#5a3010" font-size="4.5" text-anchor="middle" letter-spacing="0.16">MODULE SETTINGS</text>
<rect x="352.5" y="1048" width="27.0" height="10" fill="#1a0a04" stroke="#c07018" stroke-width="0.8"/>
<text x="366.0" y="1055" fill="#e08a20" font-size="4.5" text-anchor="middle" font-weight="bold" letter-spacing="0.16">COPY</text>
<rect x="382.5" y="1048" width="30.0" height="10" fill="#1a0a04" stroke="#c07018" stroke-width="0.8"/>
<text x="397.5" y="1055" fill="#e08a20" font-size="4.5" text-anchor="middle" font-weight="bold" letter-spacing="0.16">PASTE</text>
<rect x="414.4" y="1048" width="27.30000000000001" height="10" fill="#1a0a04" stroke="#c07018" stroke-width="0.8"/>
<text x="428.04999999999995" y="1055" fill="#e08a20" font-size="4.5" text-anchor="middle" font-weight="bold" letter-spacing="0.16">◂ ▸ ▸</text>
<rect x="444.3" y="1048" width="28.19999999999999" height="10" fill="#1a0a04" stroke="#c07018" stroke-width="0.8"/>
<rect x="446" y="1049" width="7.75" height="8" fill="#e08a20"/>
<rect x="185.6" y="1062.5" width="380.6" height="137.5" fill="#3a3a38"/>
<rect x="195" y="1073" width="300" height="132" fill="url(#fpL)" rx="6" stroke="#8a8a88" stroke-width="0.8"/>
<rect x="495" y="1073" width="63.700000000000045" height="124.5" fill="#6e6e6a" rx="5"/>
<rect x="307.5" y="1079.4" width="135.0" height="39.34999999999991" fill="#202020" rx="2" stroke="#c8c8c8" stroke-width="0.8"/>
<rect x="309" y="1085" width="132" height="28" fill="#2a2a2a"/>
<text x="375" y="1083" fill="#ddd" font-size="4" text-anchor="middle" letter-spacing="0.14">INPUT</text>
<text x="375" y="1120.5" fill="#ddd" font-size="4" text-anchor="middle" letter-spacing="0.14">REDUCTION</text>
<circle cx="311.0" cy="1090.6" r="2.4" fill="#40e040"/>
<circle cx="311.0" cy="1107.5" r="2.4" fill="#2a5a2a"/>
<circle cx="318.2" cy="1090.6" r="2.4" fill="#40e040"/>
<circle cx="318.2" cy="1107.5" r="2.4" fill="#2a5a2a"/>
<circle cx="325.4" cy="1090.6" r="2.4" fill="#40e040"/>
<circle cx="325.4" cy="1107.5" r="2.4" fill="#2a5a2a"/>
<circle cx="332.6" cy="1090.6" r="2.4" fill="#40e040"/>
<circle cx="332.6" cy="1107.5" r="2.4" fill="#2a5a2a"/>
<circle cx="339.8" cy="1090.6" r="2.4" fill="#40e040"/>
<circle cx="339.8" cy="1107.5" r="2.4" fill="#2a5a2a"/>
<circle cx="347.0" cy="1090.6" r="2.4" fill="#40e040"/>
<circle cx="347.0" cy="1107.5" r="2.4" fill="#2a5a2a"/>
<circle cx="354.2" cy="1090.6" r="2.4" fill="#40e040"/>
<circle cx="354.2" cy="1107.5" r="2.4" fill="#2a5a2a"/>
<circle cx="361.4" cy="1090.6" r="2.4" fill="#40e040"/>
<circle cx="361.4" cy="1107.5" r="2.4" fill="#2a5a2a"/>
<circle cx="368.6" cy="1090.6" r="2.4" fill="#40e040"/>
<circle cx="368.6" cy="1107.5" r="2.4" fill="#2a5a2a"/>
<circle cx="375.8" cy="1090.6" r="2.4" fill="#40e040"/>
<circle cx="375.8" cy="1107.5" r="2.4" fill="#2a5a2a"/>
<circle cx="383.0" cy="1090.6" r="2.4" fill="#40e040"/>
<circle cx="383.0" cy="1107.5" r="2.4" fill="#2a5a2a"/>
<circle cx="390.2" cy="1090.6" r="2.4" fill="#40e040"/>
<circle cx="390.2" cy="1107.5" r="2.4" fill="#2a5a2a"/>
<circle cx="397.4" cy="1090.6" r="2.4" fill="#40e040"/>
<circle cx="397.4" cy="1107.5" r="2.4" fill="#2a5a2a"/>
<circle cx="404.6" cy="1090.6" r="2.4" fill="#40e040"/>
<circle cx="404.6" cy="1107.5" r="2.4" fill="#2a5a2a"/>
<circle cx="411.8" cy="1090.6" r="2.4" fill="#40e040"/>
<circle cx="411.8" cy="1107.5" r="2.4" fill="#2a5a2a"/>
<circle cx="419.0" cy="1090.6" r="2.4" fill="#40e040"/>
<circle cx="419.0" cy="1107.5" r="2.4" fill="#40e040"/>
<circle cx="426.2" cy="1090.6" r="2.4" fill="#1a3a1a"/>
<circle cx="426.2" cy="1107.5" r="2.4" fill="#40e040"/>
<circle cx="433.4" cy="1090.6" r="2.4" fill="#1a3a1a"/>
<circle cx="433.4" cy="1107.5" r="2.4" fill="#e8e020"/>
<text x="375" y="1100" fill="#ddd" font-size="3.5" text-anchor="middle" letter-spacing="0.12">-20  -18  -15  -12   -9   -6   -3   -1   0</text>
<rect x="204.4" y="1117" width="46.849999999999994" height="11" fill="none" stroke="#ddd" stroke-width="0.7"/>
<text x="227.8" y="1125.5" fill="#ddd" font-size="7" text-anchor="middle" letter-spacing="0.25">LVC audio</text>
<text x="227.8" y="1147" fill="#eeeeee" font-size="19" text-anchor="middle" font-weight="bold" letter-spacing="0.67">DDC</text>
<text x="227.8" y="1153" fill="#aaa" font-size="4.5" text-anchor="middle" letter-spacing="0.16">COMPRESSOR</text>
<circle cx="277.5" cy="1124.0" r="18" fill="#000" opacity="0.5"/>
<line x1="264.8" y1="1135.2" x2="263.4" y2="1136.6" stroke="#d8d8d0" stroke-width="0.7" opacity="0.8"/>
<line x1="262.4" y1="1132.4" x2="260.8" y2="1133.5" stroke="#d8d8d0" stroke-width="0.7" opacity="0.8"/>
<line x1="260.8" y1="1129.1" x2="258.9" y2="1129.8" stroke="#d8d8d0" stroke-width="0.7" opacity="0.8"/>
<line x1="259.8" y1="1125.6" x2="257.8" y2="1125.9" stroke="#d8d8d0" stroke-width="0.7" opacity="0.8"/>
<line x1="259.5" y1="1121.9" x2="257.5" y2="1121.8" stroke="#d8d8d0" stroke-width="0.7" opacity="0.8"/>
<line x1="260" y1="1118.2" x2="258.1" y2="1117.8" stroke="#d8d8d0" stroke-width="0.7" opacity="0.8"/>
<line x1="261.2" y1="1114.8" x2="259.4" y2="1113.9" stroke="#d8d8d0" stroke-width="0.7" opacity="0.8"/>
<line x1="263.2" y1="1111.6" x2="261.6" y2="1110.4" stroke="#d8d8d0" stroke-width="0.7" opacity="0.8"/>
<line x1="265.7" y1="1108.9" x2="264.4" y2="1107.4" stroke="#d8d8d0" stroke-width="0.7" opacity="0.8"/>
<line x1="268.7" y1="1106.8" x2="267.7" y2="1105.1" stroke="#d8d8d0" stroke-width="0.7" opacity="0.8"/>
<line x1="272.1" y1="1105.3" x2="271.4" y2="1103.4" stroke="#d8d8d0" stroke-width="0.7" opacity="0.8"/>
<line x1="275.7" y1="1104.6" x2="275.5" y2="1102.6" stroke="#d8d8d0" stroke-width="0.7" opacity="0.8"/>
<line x1="279.3" y1="1104.6" x2="279.5" y2="1102.6" stroke="#d8d8d0" stroke-width="0.7" opacity="0.8"/>
<line x1="282.9" y1="1105.3" x2="283.6" y2="1103.4" stroke="#d8d8d0" stroke-width="0.7" opacity="0.8"/>
<line x1="286.3" y1="1106.8" x2="287.3" y2="1105.1" stroke="#d8d8d0" stroke-width="0.7" opacity="0.8"/>
<line x1="289.3" y1="1108.9" x2="290.6" y2="1107.4" stroke="#d8d8d0" stroke-width="0.7" opacity="0.8"/>
<line x1="291.8" y1="1111.6" x2="293.4" y2="1110.4" stroke="#d8d8d0" stroke-width="0.7" opacity="0.8"/>
<line x1="293.8" y1="1114.8" x2="295.6" y2="1113.9" stroke="#d8d8d0" stroke-width="0.7" opacity="0.8"/>
<line x1="295" y1="1118.2" x2="296.9" y2="1117.8" stroke="#d8d8d0" stroke-width="0.7" opacity="0.8"/>
<line x1="295.5" y1="1121.9" x2="297.5" y2="1121.8" stroke="#d8d8d0" stroke-width="0.7" opacity="0.8"/>
<line x1="295.2" y1="1125.6" x2="297.2" y2="1125.9" stroke="#d8d8d0" stroke-width="0.7" opacity="0.8"/>
<line x1="294.2" y1="1129.1" x2="296.1" y2="1129.8" stroke="#d8d8d0" stroke-width="0.7" opacity="0.8"/>
<line x1="292.6" y1="1132.4" x2="294.2" y2="1133.5" stroke="#d8d8d0" stroke-width="0.7" opacity="0.8"/>
<line x1="290.2" y1="1135.2" x2="291.6" y2="1136.6" stroke="#d8d8d0" stroke-width="0.7" opacity="0.8"/>
<circle cx="277.5" cy="1122.5" r="17" fill="url(#kbw)"/>
<circle cx="277.5" cy="1122.5" r="10.54" fill="url(#kb)"/>
<line x1="277.5" y1="1122.5" x2="284.6" y2="1115.4" stroke="#eee" stroke-width="2"/>
<text x="277.5" y="1154.5" fill="#ddd" font-size="5" text-anchor="middle" font-weight="bold" letter-spacing="0.18">THRESHOLD</text>
<circle cx="322.5" cy="1152.1" r="18" fill="#000" opacity="0.5"/>
<line x1="309.8" y1="1163.3" x2="308.4" y2="1164.7" stroke="#d8d8d0" stroke-width="0.7" opacity="0.8"/>
<line x1="307.4" y1="1160.5" x2="305.8" y2="1161.6" stroke="#d8d8d0" stroke-width="0.7" opacity="0.8"/>
<line x1="305.8" y1="1157.2" x2="303.9" y2="1157.9" stroke="#d8d8d0" stroke-width="0.7" opacity="0.8"/>
<line x1="304.8" y1="1153.7" x2="302.8" y2="1154" stroke="#d8d8d0" stroke-width="0.7" opacity="0.8"/>
<line x1="304.5" y1="1150" x2="302.5" y2="1149.9" stroke="#d8d8d0" stroke-width="0.7" opacity="0.8"/>
<line x1="305" y1="1146.3" x2="303.1" y2="1145.9" stroke="#d8d8d0" stroke-width="0.7" opacity="0.8"/>
<line x1="306.2" y1="1142.9" x2="304.4" y2="1142" stroke="#d8d8d0" stroke-width="0.7" opacity="0.8"/>
<line x1="308.2" y1="1139.7" x2="306.6" y2="1138.5" stroke="#d8d8d0" stroke-width="0.7" opacity="0.8"/>
<line x1="310.7" y1="1137" x2="309.4" y2="1135.5" stroke="#d8d8d0" stroke-width="0.7" opacity="0.8"/>
<line x1="313.7" y1="1134.9" x2="312.7" y2="1133.2" stroke="#d8d8d0" stroke-width="0.7" opacity="0.8"/>
<line x1="317.1" y1="1133.4" x2="316.4" y2="1131.5" stroke="#d8d8d0" stroke-width="0.7" opacity="0.8"/>
<line x1="320.7" y1="1132.7" x2="320.5" y2="1130.7" stroke="#d8d8d0" stroke-width="0.7" opacity="0.8"/>
<line x1="324.3" y1="1132.7" x2="324.5" y2="1130.7" stroke="#d8d8d0" stroke-width="0.7" opacity="0.8"/>
<line x1="327.9" y1="1133.4" x2="328.6" y2="1131.5" stroke="#d8d8d0" stroke-width="0.7" opacity="0.8"/>
<line x1="331.3" y1="1134.9" x2="332.3" y2="1133.2" stroke="#d8d8d0" stroke-width="0.7" opacity="0.8"/>
<line x1="334.3" y1="1137" x2="335.6" y2="1135.5" stroke="#d8d8d0" stroke-width="0.7" opacity="0.8"/>
<line x1="336.8" y1="1139.7" x2="338.4" y2="1138.5" stroke="#d8d8d0" stroke-width="0.7" opacity="0.8"/>
<line x1="338.8" y1="1142.9" x2="340.6" y2="1142" stroke="#d8d8d0" stroke-width="0.7" opacity="0.8"/>
<line x1="340" y1="1146.3" x2="341.9" y2="1145.9" stroke="#d8d8d0" stroke-width="0.7" opacity="0.8"/>
<line x1="340.5" y1="1150" x2="342.5" y2="1149.9" stroke="#d8d8d0" stroke-width="0.7" opacity="0.8"/>
<line x1="340.2" y1="1153.7" x2="342.2" y2="1154" stroke="#d8d8d0" stroke-width="0.7" opacity="0.8"/>
<line x1="339.2" y1="1157.2" x2="341.1" y2="1157.9" stroke="#d8d8d0" stroke-width="0.7" opacity="0.8"/>
<line x1="337.6" y1="1160.5" x2="339.2" y2="1161.6" stroke="#d8d8d0" stroke-width="0.7" opacity="0.8"/>
<line x1="335.2" y1="1163.3" x2="336.6" y2="1164.7" stroke="#d8d8d0" stroke-width="0.7" opacity="0.8"/>
<circle cx="322.5" cy="1150.6" r="17" fill="url(#kbw)"/>
<circle cx="322.5" cy="1150.6" r="10.54" fill="url(#kb)"/>
<line x1="322.5" y1="1150.6" x2="322.5" y2="1140.6" stroke="#eee" stroke-width="2"/>
<text x="322.5" y="1182.6" fill="#ddd" font-size="5" text-anchor="middle" font-weight="bold" letter-spacing="0.18">RATIO</text>
<circle cx="371.25" cy="1165.25" r="18" fill="#000" opacity="0.5"/>
<line x1="358.5" y1="1176.5" x2="357.1" y2="1177.9" stroke="#d8d8d0" stroke-width="0.7" opacity="0.8"/>
<line x1="356.2" y1="1173.6" x2="354.5" y2="1174.7" stroke="#d8d8d0" stroke-width="0.7" opacity="0.8"/>
<line x1="354.5" y1="1170.4" x2="352.6" y2="1171.1" stroke="#d8d8d0" stroke-width="0.7" opacity="0.8"/>
<line x1="353.5" y1="1166.8" x2="351.5" y2="1167.1" stroke="#d8d8d0" stroke-width="0.7" opacity="0.8"/>
<line x1="353.3" y1="1163.1" x2="351.3" y2="1163.1" stroke="#d8d8d0" stroke-width="0.7" opacity="0.8"/>
<line x1="353.8" y1="1159.5" x2="351.8" y2="1159" stroke="#d8d8d0" stroke-width="0.7" opacity="0.8"/>
<line x1="355" y1="1156" x2="353.2" y2="1155.2" stroke="#d8d8d0" stroke-width="0.7" opacity="0.8"/>
<line x1="356.9" y1="1152.9" x2="355.3" y2="1151.7" stroke="#d8d8d0" stroke-width="0.7" opacity="0.8"/>
<line x1="359.4" y1="1150.2" x2="358.1" y2="1148.7" stroke="#d8d8d0" stroke-width="0.7" opacity="0.8"/>
<line x1="362.4" y1="1148.1" x2="361.4" y2="1146.3" stroke="#d8d8d0" stroke-width="0.7" opacity="0.8"/>
<line x1="365.8" y1="1146.6" x2="365.2" y2="1144.7" stroke="#d8d8d0" stroke-width="0.7" opacity="0.8"/>
<line x1="369.4" y1="1145.8" x2="369.2" y2="1143.9" stroke="#d8d8d0" stroke-width="0.7" opacity="0.8"/>
<line x1="373.1" y1="1145.8" x2="373.3" y2="1143.9" stroke="#d8d8d0" stroke-width="0.7" opacity="0.8"/>
<line x1="376.7" y1="1146.6" x2="377.3" y2="1144.7" stroke="#d8d8d0" stroke-width="0.7" opacity="0.8"/>
<line x1="380.1" y1="1148.1" x2="381.1" y2="1146.3" stroke="#d8d8d0" stroke-width="0.7" opacity="0.8"/>
<line x1="383.1" y1="1150.2" x2="384.4" y2="1148.7" stroke="#d8d8d0" stroke-width="0.7" opacity="0.8"/>
<line x1="385.6" y1="1152.9" x2="387.2" y2="1151.7" stroke="#d8d8d0" stroke-width="0.7" opacity="0.8"/>
<line x1="387.5" y1="1156" x2="389.3" y2="1155.2" stroke="#d8d8d0" stroke-width="0.7" opacity="0.8"/>
<line x1="388.7" y1="1159.5" x2="390.7" y2="1159" stroke="#d8d8d0" stroke-width="0.7" opacity="0.8"/>
<line x1="389.2" y1="1163.1" x2="391.2" y2="1163.1" stroke="#d8d8d0" stroke-width="0.7" opacity="0.8"/>
<line x1="389" y1="1166.8" x2="391" y2="1167.1" stroke="#d8d8d0" stroke-width="0.7" opacity="0.8"/>
<line x1="388" y1="1170.4" x2="389.9" y2="1171.1" stroke="#d8d8d0" stroke-width="0.7" opacity="0.8"/>
<line x1="386.3" y1="1173.6" x2="388" y2="1174.7" stroke="#d8d8d0" stroke-width="0.7" opacity="0.8"/>
<line x1="384" y1="1176.5" x2="385.4" y2="1177.9" stroke="#d8d8d0" stroke-width="0.7" opacity="0.8"/>
<circle cx="371.25" cy="1163.75" r="17" fill="url(#kbw)"/>
<circle cx="371.25" cy="1163.75" r="10.54" fill="url(#kb)"/>
<line x1="371.25" y1="1163.75" x2="381.1" y2="1165.5" stroke="#eee" stroke-width="2"/>
<text x="371.25" y="1191.75" fill="#ddd" font-size="5" text-anchor="middle" font-weight="bold" letter-spacing="0.18">ATTACK</text>
<circle cx="423.75" cy="1152.1" r="18" fill="#000" opacity="0.5"/>
<line x1="411" y1="1163.3" x2="409.6" y2="1164.7" stroke="#d8d8d0" stroke-width="0.7" opacity="0.8"/>
<line x1="408.7" y1="1160.5" x2="407" y2="1161.6" stroke="#d8d8d0" stroke-width="0.7" opacity="0.8"/>
<line x1="407" y1="1157.2" x2="405.1" y2="1157.9" stroke="#d8d8d0" stroke-width="0.7" opacity="0.8"/>
<line x1="406" y1="1153.7" x2="404" y2="1154" stroke="#d8d8d0" stroke-width="0.7" opacity="0.8"/>
<line x1="405.8" y1="1150" x2="403.8" y2="1149.9" stroke="#d8d8d0" stroke-width="0.7" opacity="0.8"/>
<line x1="406.3" y1="1146.3" x2="404.3" y2="1145.9" stroke="#d8d8d0" stroke-width="0.7" opacity="0.8"/>
<line x1="407.5" y1="1142.9" x2="405.7" y2="1142" stroke="#d8d8d0" stroke-width="0.7" opacity="0.8"/>
<line x1="409.4" y1="1139.7" x2="407.8" y2="1138.5" stroke="#d8d8d0" stroke-width="0.7" opacity="0.8"/>
<line x1="411.9" y1="1137" x2="410.6" y2="1135.5" stroke="#d8d8d0" stroke-width="0.7" opacity="0.8"/>
<line x1="414.9" y1="1134.9" x2="413.9" y2="1133.2" stroke="#d8d8d0" stroke-width="0.7" opacity="0.8"/>
<line x1="418.3" y1="1133.4" x2="417.7" y2="1131.5" stroke="#d8d8d0" stroke-width="0.7" opacity="0.8"/>
<line x1="421.9" y1="1132.7" x2="421.7" y2="1130.7" stroke="#d8d8d0" stroke-width="0.7" opacity="0.8"/>
<line x1="425.6" y1="1132.7" x2="425.8" y2="1130.7" stroke="#d8d8d0" stroke-width="0.7" opacity="0.8"/>
<line x1="429.2" y1="1133.4" x2="429.8" y2="1131.5" stroke="#d8d8d0" stroke-width="0.7" opacity="0.8"/>
<line x1="432.6" y1="1134.9" x2="433.6" y2="1133.2" stroke="#d8d8d0" stroke-width="0.7" opacity="0.8"/>
<line x1="435.6" y1="1137" x2="436.9" y2="1135.5" stroke="#d8d8d0" stroke-width="0.7" opacity="0.8"/>
<line x1="438.1" y1="1139.7" x2="439.7" y2="1138.5" stroke="#d8d8d0" stroke-width="0.7" opacity="0.8"/>
<line x1="440" y1="1142.9" x2="441.8" y2="1142" stroke="#d8d8d0" stroke-width="0.7" opacity="0.8"/>
<line x1="441.2" y1="1146.3" x2="443.2" y2="1145.9" stroke="#d8d8d0" stroke-width="0.7" opacity="0.8"/>
<line x1="441.7" y1="1150" x2="443.7" y2="1149.9" stroke="#d8d8d0" stroke-width="0.7" opacity="0.8"/>
<line x1="441.5" y1="1153.7" x2="443.5" y2="1154" stroke="#d8d8d0" stroke-width="0.7" opacity="0.8"/>
<line x1="440.5" y1="1157.2" x2="442.4" y2="1157.9" stroke="#d8d8d0" stroke-width="0.7" opacity="0.8"/>
<line x1="438.8" y1="1160.5" x2="440.5" y2="1161.6" stroke="#d8d8d0" stroke-width="0.7" opacity="0.8"/>
<line x1="436.5" y1="1163.3" x2="437.9" y2="1164.7" stroke="#d8d8d0" stroke-width="0.7" opacity="0.8"/>
<circle cx="423.75" cy="1150.6" r="17" fill="url(#kbw)"/>
<circle cx="423.75" cy="1150.6" r="10.54" fill="url(#kb)"/>
<line x1="423.75" y1="1150.6" x2="433.8" y2="1150.6" stroke="#eee" stroke-width="2"/>
<text x="423.75" y="1182.6" fill="#ddd" font-size="5" text-anchor="middle" font-weight="bold" letter-spacing="0.18">RELEASE</text>
<circle cx="466.8" cy="1124.0" r="18" fill="#000" opacity="0.5"/>
<line x1="454.1" y1="1135.2" x2="452.7" y2="1136.6" stroke="#d8d8d0" stroke-width="0.7" opacity="0.8"/>
<line x1="451.7" y1="1132.4" x2="450.1" y2="1133.5" stroke="#d8d8d0" stroke-width="0.7" opacity="0.8"/>
<line x1="450.1" y1="1129.1" x2="448.2" y2="1129.8" stroke="#d8d8d0" stroke-width="0.7" opacity="0.8"/>
<line x1="449.1" y1="1125.6" x2="447.1" y2="1125.9" stroke="#d8d8d0" stroke-width="0.7" opacity="0.8"/>
<line x1="448.8" y1="1121.9" x2="446.8" y2="1121.8" stroke="#d8d8d0" stroke-width="0.7" opacity="0.8"/>
<line x1="449.3" y1="1118.2" x2="447.4" y2="1117.8" stroke="#d8d8d0" stroke-width="0.7" opacity="0.8"/>
<line x1="450.5" y1="1114.8" x2="448.7" y2="1113.9" stroke="#d8d8d0" stroke-width="0.7" opacity="0.8"/>
<line x1="452.5" y1="1111.6" x2="450.9" y2="1110.4" stroke="#d8d8d0" stroke-width="0.7" opacity="0.8"/>
<line x1="455" y1="1108.9" x2="453.7" y2="1107.4" stroke="#d8d8d0" stroke-width="0.7" opacity="0.8"/>
<line x1="458" y1="1106.8" x2="457" y2="1105.1" stroke="#d8d8d0" stroke-width="0.7" opacity="0.8"/>
<line x1="461.4" y1="1105.3" x2="460.7" y2="1103.4" stroke="#d8d8d0" stroke-width="0.7" opacity="0.8"/>
<line x1="465" y1="1104.6" x2="464.8" y2="1102.6" stroke="#d8d8d0" stroke-width="0.7" opacity="0.8"/>
<line x1="468.6" y1="1104.6" x2="468.8" y2="1102.6" stroke="#d8d8d0" stroke-width="0.7" opacity="0.8"/>
<line x1="472.2" y1="1105.3" x2="472.9" y2="1103.4" stroke="#d8d8d0" stroke-width="0.7" opacity="0.8"/>
<line x1="475.6" y1="1106.8" x2="476.6" y2="1105.1" stroke="#d8d8d0" stroke-width="0.7" opacity="0.8"/>
<line x1="478.6" y1="1108.9" x2="479.9" y2="1107.4" stroke="#d8d8d0" stroke-width="0.7" opacity="0.8"/>
<line x1="481.1" y1="1111.6" x2="482.7" y2="1110.4" stroke="#d8d8d0" stroke-width="0.7" opacity="0.8"/>
<line x1="483.1" y1="1114.8" x2="484.9" y2="1113.9" stroke="#d8d8d0" stroke-width="0.7" opacity="0.8"/>
<line x1="484.3" y1="1118.2" x2="486.2" y2="1117.8" stroke="#d8d8d0" stroke-width="0.7" opacity="0.8"/>
<line x1="484.8" y1="1121.9" x2="486.8" y2="1121.8" stroke="#d8d8d0" stroke-width="0.7" opacity="0.8"/>
<line x1="484.5" y1="1125.6" x2="486.5" y2="1125.9" stroke="#d8d8d0" stroke-width="0.7" opacity="0.8"/>
<line x1="483.5" y1="1129.1" x2="485.4" y2="1129.8" stroke="#d8d8d0" stroke-width="0.7" opacity="0.8"/>
<line x1="481.9" y1="1132.4" x2="483.5" y2="1133.5" stroke="#d8d8d0" stroke-width="0.7" opacity="0.8"/>
<line x1="479.5" y1="1135.2" x2="480.9" y2="1136.6" stroke="#d8d8d0" stroke-width="0.7" opacity="0.8"/>
<circle cx="466.8" cy="1122.5" r="17" fill="url(#kbw)"/>
<circle cx="466.8" cy="1122.5" r="10.54" fill="url(#kb)"/>
<line x1="466.8" y1="1122.5" x2="466.8" y2="1112.5" stroke="#eee" stroke-width="2"/>
<text x="466.8" y="1154.5" fill="#ddd" font-size="5" text-anchor="middle" font-weight="bold" letter-spacing="0.18">OUTPUT</text>
<circle cx="468.7" cy="1171.25" r="5" fill="#888" stroke="#555" stroke-width="0.8"/>
<text x="468.7" y="1184.5" fill="#ddd" font-size="5" text-anchor="middle" font-weight="bold" letter-spacing="0.18">AUTO</text>
<circle cx="521.2" cy="1097.75" r="14" fill="#000" opacity="0.5"/>
<line x1="511.3" y1="1106.1" x2="509.9" y2="1107.6" stroke="#d8d8d0" stroke-width="0.7" opacity="0.8"/>
<line x1="509.5" y1="1103.9" x2="507.8" y2="1105" stroke="#d8d8d0" stroke-width="0.7" opacity="0.8"/>
<line x1="508.2" y1="1101.4" x2="506.3" y2="1102.1" stroke="#d8d8d0" stroke-width="0.7" opacity="0.8"/>
<line x1="507.4" y1="1098.6" x2="505.4" y2="1099" stroke="#d8d8d0" stroke-width="0.7" opacity="0.8"/>
<line x1="507.2" y1="1095.8" x2="505.2" y2="1095.7" stroke="#d8d8d0" stroke-width="0.7" opacity="0.8"/>
<line x1="507.6" y1="1092.9" x2="505.7" y2="1092.5" stroke="#d8d8d0" stroke-width="0.7" opacity="0.8"/>
<line x1="508.6" y1="1090.2" x2="506.8" y2="1089.4" stroke="#d8d8d0" stroke-width="0.7" opacity="0.8"/>
<line x1="510" y1="1087.8" x2="508.5" y2="1086.6" stroke="#d8d8d0" stroke-width="0.7" opacity="0.8"/>
<line x1="512" y1="1085.7" x2="510.7" y2="1084.2" stroke="#d8d8d0" stroke-width="0.7" opacity="0.8"/>
<line x1="514.3" y1="1084" x2="513.4" y2="1082.3" stroke="#d8d8d0" stroke-width="0.7" opacity="0.8"/>
<line x1="517" y1="1082.9" x2="516.4" y2="1081" stroke="#d8d8d0" stroke-width="0.7" opacity="0.8"/>
<line x1="519.8" y1="1082.3" x2="519.6" y2="1080.3" stroke="#d8d8d0" stroke-width="0.7" opacity="0.8"/>
<line x1="522.6" y1="1082.3" x2="522.8" y2="1080.3" stroke="#d8d8d0" stroke-width="0.7" opacity="0.8"/>
<line x1="525.4" y1="1082.9" x2="526" y2="1081" stroke="#d8d8d0" stroke-width="0.7" opacity="0.8"/>
<line x1="528.1" y1="1084" x2="529" y2="1082.3" stroke="#d8d8d0" stroke-width="0.7" opacity="0.8"/>
<line x1="530.4" y1="1085.7" x2="531.7" y2="1084.2" stroke="#d8d8d0" stroke-width="0.7" opacity="0.8"/>
<line x1="532.4" y1="1087.8" x2="533.9" y2="1086.6" stroke="#d8d8d0" stroke-width="0.7" opacity="0.8"/>
<line x1="533.8" y1="1090.2" x2="535.6" y2="1089.4" stroke="#d8d8d0" stroke-width="0.7" opacity="0.8"/>
<line x1="534.8" y1="1092.9" x2="536.7" y2="1092.5" stroke="#d8d8d0" stroke-width="0.7" opacity="0.8"/>
<line x1="535.2" y1="1095.8" x2="537.2" y2="1095.7" stroke="#d8d8d0" stroke-width="0.7" opacity="0.8"/>
<line x1="535" y1="1098.6" x2="537" y2="1099" stroke="#d8d8d0" stroke-width="0.7" opacity="0.8"/>
<line x1="534.2" y1="1101.4" x2="536.1" y2="1102.1" stroke="#d8d8d0" stroke-width="0.7" opacity="0.8"/>
<line x1="532.9" y1="1103.9" x2="534.6" y2="1105" stroke="#d8d8d0" stroke-width="0.7" opacity="0.8"/>
<line x1="531.1" y1="1106.1" x2="532.5" y2="1107.6" stroke="#d8d8d0" stroke-width="0.7" opacity="0.8"/>
<circle cx="521.2" cy="1096.25" r="13" fill="url(#kbw)"/>
<circle cx="521.2" cy="1096.25" r="8.06" fill="url(#kb)"/>
<line x1="521.2" y1="1096.25" x2="526.7" y2="1101.8" stroke="#eee" stroke-width="1.8"/>
<circle cx="541.9" cy="1139.0" r="12" fill="#000" opacity="0.5"/>
<line x1="533.4" y1="1146" x2="532" y2="1147.4" stroke="#d8d8d0" stroke-width="0.7" opacity="0.8"/>
<line x1="531.9" y1="1144.1" x2="530.2" y2="1145.2" stroke="#d8d8d0" stroke-width="0.7" opacity="0.8"/>
<line x1="530.7" y1="1141.9" x2="528.9" y2="1142.6" stroke="#d8d8d0" stroke-width="0.7" opacity="0.8"/>
<line x1="530.1" y1="1139.5" x2="528.1" y2="1139.9" stroke="#d8d8d0" stroke-width="0.7" opacity="0.8"/>
<line x1="529.9" y1="1137.1" x2="527.9" y2="1137" stroke="#d8d8d0" stroke-width="0.7" opacity="0.8"/>
<line x1="530.2" y1="1134.7" x2="528.3" y2="1134.2" stroke="#d8d8d0" stroke-width="0.7" opacity="0.8"/>
<line x1="531.1" y1="1132.3" x2="529.3" y2="1131.5" stroke="#d8d8d0" stroke-width="0.7" opacity="0.8"/>
<line x1="532.3" y1="1130.2" x2="530.7" y2="1129" stroke="#d8d8d0" stroke-width="0.7" opacity="0.8"/>
<line x1="534" y1="1128.5" x2="532.7" y2="1126.9" stroke="#d8d8d0" stroke-width="0.7" opacity="0.8"/>
<line x1="536" y1="1127" x2="535" y2="1125.3" stroke="#d8d8d0" stroke-width="0.7" opacity="0.8"/>
<line x1="538.3" y1="1126.1" x2="537.7" y2="1124.2" stroke="#d8d8d0" stroke-width="0.7" opacity="0.8"/>
<line x1="540.7" y1="1125.6" x2="540.5" y2="1123.6" stroke="#d8d8d0" stroke-width="0.7" opacity="0.8"/>
<line x1="543.1" y1="1125.6" x2="543.3" y2="1123.6" stroke="#d8d8d0" stroke-width="0.7" opacity="0.8"/>
<line x1="545.5" y1="1126.1" x2="546.1" y2="1124.2" stroke="#d8d8d0" stroke-width="0.7" opacity="0.8"/>
<line x1="547.8" y1="1127" x2="548.8" y2="1125.3" stroke="#d8d8d0" stroke-width="0.7" opacity="0.8"/>
<line x1="549.8" y1="1128.5" x2="551.1" y2="1126.9" stroke="#d8d8d0" stroke-width="0.7" opacity="0.8"/>
<line x1="551.5" y1="1130.2" x2="553.1" y2="1129" stroke="#d8d8d0" stroke-width="0.7" opacity="0.8"/>
<line x1="552.7" y1="1132.3" x2="554.5" y2="1131.5" stroke="#d8d8d0" stroke-width="0.7" opacity="0.8"/>
<line x1="553.6" y1="1134.7" x2="555.5" y2="1134.2" stroke="#d8d8d0" stroke-width="0.7" opacity="0.8"/>
<line x1="553.9" y1="1137.1" x2="555.9" y2="1137" stroke="#d8d8d0" stroke-width="0.7" opacity="0.8"/>
<line x1="553.7" y1="1139.5" x2="555.7" y2="1139.9" stroke="#d8d8d0" stroke-width="0.7" opacity="0.8"/>
<line x1="553.1" y1="1141.9" x2="554.9" y2="1142.6" stroke="#d8d8d0" stroke-width="0.7" opacity="0.8"/>
<line x1="551.9" y1="1144.1" x2="553.6" y2="1145.2" stroke="#d8d8d0" stroke-width="0.7" opacity="0.8"/>
<line x1="550.4" y1="1146" x2="551.8" y2="1147.4" stroke="#d8d8d0" stroke-width="0.7" opacity="0.8"/>
<circle cx="541.9" cy="1137.5" r="11" fill="url(#kbw)"/>
<circle cx="541.9" cy="1137.5" r="6.82" fill="url(#kb)"/>
<line x1="541.9" y1="1137.5" x2="546.6" y2="1142.2" stroke="#eee" stroke-width="1.8"/>
<circle cx="513.7" cy="1165.25" r="14" fill="#000" opacity="0.5"/>
<line x1="503.8" y1="1173.6" x2="502.4" y2="1175.1" stroke="#d8d8d0" stroke-width="0.7" opacity="0.8"/>
<line x1="502" y1="1171.4" x2="500.3" y2="1172.5" stroke="#d8d8d0" stroke-width="0.7" opacity="0.8"/>
<line x1="500.7" y1="1168.9" x2="498.8" y2="1169.6" stroke="#d8d8d0" stroke-width="0.7" opacity="0.8"/>
<line x1="499.9" y1="1166.1" x2="497.9" y2="1166.5" stroke="#d8d8d0" stroke-width="0.7" opacity="0.8"/>
<line x1="499.7" y1="1163.3" x2="497.7" y2="1163.2" stroke="#d8d8d0" stroke-width="0.7" opacity="0.8"/>
<line x1="500.1" y1="1160.4" x2="498.2" y2="1160" stroke="#d8d8d0" stroke-width="0.7" opacity="0.8"/>
<line x1="501.1" y1="1157.7" x2="499.3" y2="1156.9" stroke="#d8d8d0" stroke-width="0.7" opacity="0.8"/>
<line x1="502.5" y1="1155.3" x2="501" y2="1154.1" stroke="#d8d8d0" stroke-width="0.7" opacity="0.8"/>
<line x1="504.5" y1="1153.2" x2="503.2" y2="1151.7" stroke="#d8d8d0" stroke-width="0.7" opacity="0.8"/>
<line x1="506.8" y1="1151.5" x2="505.9" y2="1149.8" stroke="#d8d8d0" stroke-width="0.7" opacity="0.8"/>
<line x1="509.5" y1="1150.4" x2="508.9" y2="1148.5" stroke="#d8d8d0" stroke-width="0.7" opacity="0.8"/>
<line x1="512.3" y1="1149.8" x2="512.1" y2="1147.8" stroke="#d8d8d0" stroke-width="0.7" opacity="0.8"/>
<line x1="515.1" y1="1149.8" x2="515.3" y2="1147.8" stroke="#d8d8d0" stroke-width="0.7" opacity="0.8"/>
<line x1="517.9" y1="1150.4" x2="518.5" y2="1148.5" stroke="#d8d8d0" stroke-width="0.7" opacity="0.8"/>
<line x1="520.6" y1="1151.5" x2="521.5" y2="1149.8" stroke="#d8d8d0" stroke-width="0.7" opacity="0.8"/>
<line x1="522.9" y1="1153.2" x2="524.2" y2="1151.7" stroke="#d8d8d0" stroke-width="0.7" opacity="0.8"/>
<line x1="524.9" y1="1155.3" x2="526.4" y2="1154.1" stroke="#d8d8d0" stroke-width="0.7" opacity="0.8"/>
<line x1="526.3" y1="1157.7" x2="528.1" y2="1156.9" stroke="#d8d8d0" stroke-width="0.7" opacity="0.8"/>
<line x1="527.3" y1="1160.4" x2="529.2" y2="1160" stroke="#d8d8d0" stroke-width="0.7" opacity="0.8"/>
<line x1="527.7" y1="1163.3" x2="529.7" y2="1163.2" stroke="#d8d8d0" stroke-width="0.7" opacity="0.8"/>
<line x1="527.5" y1="1166.1" x2="529.5" y2="1166.5" stroke="#d8d8d0" stroke-width="0.7" opacity="0.8"/>
<line x1="526.7" y1="1168.9" x2="528.6" y2="1169.6" stroke="#d8d8d0" stroke-width="0.7" opacity="0.8"/>
<line x1="525.4" y1="1171.4" x2="527.1" y2="1172.5" stroke="#d8d8d0" stroke-width="0.7" opacity="0.8"/>
<line x1="523.6" y1="1173.6" x2="525" y2="1175.1" stroke="#d8d8d0" stroke-width="0.7" opacity="0.8"/>
<circle cx="513.7" cy="1163.75" r="13" fill="url(#kbw)"/>
<circle cx="513.7" cy="1163.75" r="8.06" fill="url(#kb)"/>
<line x1="513.7" y1="1163.75" x2="519.2" y2="1169.3" stroke="#eee" stroke-width="1.8"/>
</g></g>
<g clip-path="url(#cM)">
<rect x="600" y="900" width="465.29999999999995" height="300" fill="url(#bgM)"/>
<line x1="600" y1="911" x2="810" y2="911" stroke="#3a7ab0" stroke-width="0.5" opacity="0.35"/>
<line x1="857" y1="911" x2="1065" y2="911" stroke="#3a7ab0" stroke-width="0.5" opacity="0.35"/>
<line x1="600" y1="921" x2="810" y2="921" stroke="#3a7ab0" stroke-width="0.5" opacity="0.35"/>
<line x1="857" y1="921" x2="1065" y2="921" stroke="#3a7ab0" stroke-width="0.5" opacity="0.35"/>
<line x1="600" y1="932.5" x2="810" y2="932.5" stroke="#3a7ab0" stroke-width="0.5" opacity="0.35"/>
<line x1="857" y1="932.5" x2="1065" y2="932.5" stroke="#3a7ab0" stroke-width="0.5" opacity="0.35"/>
<line x1="600" y1="946" x2="810" y2="946" stroke="#3a7ab0" stroke-width="0.5" opacity="0.35"/>
<line x1="857" y1="946" x2="1065" y2="946" stroke="#3a7ab0" stroke-width="0.5" opacity="0.35"/>
<line x1="600" y1="965" x2="810" y2="965" stroke="#3a7ab0" stroke-width="0.5" opacity="0.35"/>
<line x1="857" y1="965" x2="1065" y2="965" stroke="#3a7ab0" stroke-width="0.5" opacity="0.35"/>
<line x1="600" y1="977.5" x2="810" y2="977.5" stroke="#3a7ab0" stroke-width="0.5" opacity="0.35"/>
<line x1="857" y1="977.5" x2="1065" y2="977.5" stroke="#3a7ab0" stroke-width="0.5" opacity="0.35"/>
<line x1="600" y1="988.75" x2="810" y2="988.75" stroke="#3a7ab0" stroke-width="0.5" opacity="0.35"/>
<line x1="857" y1="988.75" x2="1065" y2="988.75" stroke="#3a7ab0" stroke-width="0.5" opacity="0.35"/>
<line x1="600" y1="1002.5" x2="810" y2="1002.5" stroke="#3a7ab0" stroke-width="0.5" opacity="0.35"/>
<line x1="857" y1="1002.5" x2="1065" y2="1002.5" stroke="#3a7ab0" stroke-width="0.5" opacity="0.35"/>
<line x1="600" y1="1015" x2="810" y2="1015" stroke="#3a7ab0" stroke-width="0.5" opacity="0.35"/>
<line x1="857" y1="1015" x2="1065" y2="1015" stroke="#3a7ab0" stroke-width="0.5" opacity="0.35"/>
<line x1="600" y1="1028" x2="810" y2="1028" stroke="#3a7ab0" stroke-width="0.5" opacity="0.35"/>
<line x1="857" y1="1028" x2="1065" y2="1028" stroke="#3a7ab0" stroke-width="0.5" opacity="0.35"/>
<line x1="600" y1="1055.7" x2="810" y2="1055.7" stroke="#3a7ab0" stroke-width="0.5" opacity="0.35"/>
<line x1="857" y1="1055.7" x2="1065" y2="1055.7" stroke="#3a7ab0" stroke-width="0.5" opacity="0.35"/>
<line x1="600" y1="1081" x2="810" y2="1081" stroke="#3a7ab0" stroke-width="0.5" opacity="0.35"/>
<line x1="857" y1="1081" x2="1065" y2="1081" stroke="#3a7ab0" stroke-width="0.5" opacity="0.35"/>
<line x1="600" y1="1105.8" x2="810" y2="1105.8" stroke="#3a7ab0" stroke-width="0.5" opacity="0.35"/>
<line x1="857" y1="1105.8" x2="1065" y2="1105.8" stroke="#3a7ab0" stroke-width="0.5" opacity="0.35"/>
<line x1="600" y1="1130.9" x2="810" y2="1130.9" stroke="#3a7ab0" stroke-width="0.5" opacity="0.35"/>
<line x1="857" y1="1130.9" x2="1065" y2="1130.9" stroke="#3a7ab0" stroke-width="0.5" opacity="0.35"/>
<line x1="600" y1="1156.3" x2="810" y2="1156.3" stroke="#3a7ab0" stroke-width="0.5" opacity="0.35"/>
<line x1="857" y1="1156.3" x2="1065" y2="1156.3" stroke="#3a7ab0" stroke-width="0.5" opacity="0.35"/>
<polygon points="612.5,900.0 612.5,950.0 613.4,957.7 614.4,964.7 615.3,969.9 616.2,982.5 616.9,982.7 617.5,967.6 618.1,969.4 618.8,965.0 619.4,981.9 620.0,983.5 620.6,1001.3 621.2,1012.5 621.9,1004.6 622.5,988.0 623.1,982.9 623.8,975.0 624.7,982.5 625.6,984.4 626.6,992.8 627.5,995.0 627.5,900.0" fill="#3eb0e6"/>
<polyline points="612.5,950.0 613.4,953.8 614.4,963.0 615.3,969.5 616.2,982.5 616.9,978.2 617.5,979.0 618.1,970.5 618.8,965.0 619.4,980.3 620.0,987.3 620.6,1003.7 621.2,1012.5 621.9,998.1 622.5,991.1 623.1,986.6 623.8,975.0 624.7,982.8 625.6,984.0 626.6,984.8 627.5,995.0" fill="none" stroke="#1a5a80" stroke-width="0.6" stroke-linejoin="round" opacity="0.7"/>
<polygon points="632.5,900.0 633.8,975.0 634.4,969.0 635.0,965.1 635.6,962.9 636.2,962.5 637.2,975.7 638.1,977.5 639.1,995.5 640.0,1000.0 641.2,1009.7 642.5,1004.4 643.8,1013.5 645.0,1020.0 646.2,1022.4 647.5,1019.0 648.8,1026.6 650.0,1030.0 650.9,1040.1 651.9,1035.2 652.8,1046.2 653.8,1050.0 653.8,900.0" fill="#3eb0e6"/>
<polyline points="633.8,975.0 634.4,967.1 635.0,969.7 635.6,970.6 636.2,962.5 637.2,968.2 638.1,975.1 639.1,985.4 640.0,1000.0 641.2,1005.5 642.5,1004.0 643.8,1009.8 645.0,1020.0 646.2,1022.5 647.5,1030.3 648.8,1026.5 650.0,1030.0 650.9,1033.7 651.9,1041.7 652.8,1039.9 653.8,1050.0" fill="none" stroke="#1a5a80" stroke-width="0.6" stroke-linejoin="round" opacity="0.7"/>
<polygon points="663.8,900.0 663.8,930.0 664.7,936.0 665.6,935.9 666.6,946.4 667.5,950.0 668.8,963.2 670.0,959.4 671.2,973.2 672.5,980.0 673.8,986.3 675.0,985.6 676.2,992.1 677.5,1000.0 678.8,1010.6 680.0,1015.0 681.2,1008.4 682.5,1017.5 683.4,1011.9 684.4,1006.9 685.3,989.8 686.2,985.0 687.5,900.0" fill="#3eb0e6"/>
<polyline points="663.8,930.0 664.7,936.4 665.6,934.3 666.6,943.3 667.5,950.0 668.8,959.7 670.0,966.1 671.2,975.9 672.5,980.0 673.8,979.8 675.0,988.1 676.2,999.6 677.5,1000.0 678.8,1005.4 680.0,1008.1 681.2,1011.9 682.5,1017.5 683.4,1015.5 684.4,1002.2 685.3,987.1 686.2,985.0" fill="none" stroke="#1a5a80" stroke-width="0.6" stroke-linejoin="round" opacity="0.7"/>
<polygon points="690.0,900.0 703.8,925.0 705.3,935.0 706.9,935.4 708.4,942.9 710.0,950.0 711.2,945.2 712.5,946.8 713.8,944.1 715.0,945.0 716.2,944.2 717.5,955.4 718.8,953.2 720.0,962.5 721.2,957.9 722.5,940.3 723.8,941.6 725.0,930.0 730.0,900.0" fill="#3eb0e6"/>
<polyline points="703.8,925.0 705.3,935.1 706.9,937.5 708.4,946.4 710.0,950.0 711.2,945.6 712.5,950.5 713.8,945.3 715.0,945.0 716.2,946.0 717.5,959.6 718.8,956.9 720.0,962.5 721.2,952.8 722.5,950.7 723.8,936.5 725.0,930.0" fill="none" stroke="#1a5a80" stroke-width="0.6" stroke-linejoin="round" opacity="0.7"/>
<polygon points="740.0,900.0 742.5,942.5 743.8,950.2 745.0,949.6 746.2,963.7 747.5,965.0 748.1,967.6 748.8,970.6 749.4,987.8 750.0,987.5 752.5,900.0" fill="#3eb0e6"/>
<polyline points="742.5,942.5 743.8,944.0 745.0,959.3 746.2,965.5 747.5,965.0 748.1,972.0 748.8,970.1 749.4,976.4 750.0,987.5" fill="none" stroke="#1a5a80" stroke-width="0.6" stroke-linejoin="round" opacity="0.7"/>
<polygon points="750.0,900.0 750.0,937.5 751.9,938.2 753.8,944.9 755.6,952.0 757.5,955.0 758.8,965.8 760.0,963.2 761.2,965.5 762.5,975.0 763.4,977.6 764.4,974.2 765.3,975.5 766.2,982.5 768.8,900.0" fill="#3eb0e6"/>
<polyline points="750.0,937.5 751.9,942.6 753.8,948.7 755.6,945.2 757.5,955.0 758.8,959.4 760.0,967.5 761.2,973.3 762.5,975.0 763.4,975.4 764.4,983.6 765.3,976.5 766.2,982.5" fill="none" stroke="#1a5a80" stroke-width="0.6" stroke-linejoin="round" opacity="0.7"/>
<polygon points="772.5,900.0 780.0,935.0 781.2,942.7 782.5,948.4 783.8,954.8 785.0,955.0 786.2,956.8 787.5,953.7 788.8,955.0 790.0,962.5 791.9,963.5 793.8,959.7 795.6,966.0 797.5,965.0 798.8,961.1 800.0,971.0 801.2,965.3 802.5,970.0 803.8,965.2 805.0,968.4 806.2,973.2 807.5,975.0 810.0,900.0" fill="#3eb0e6"/>
<polyline points="780.0,935.0 781.2,940.7 782.5,943.6 783.8,945.9 785.0,955.0 786.2,956.7 787.5,964.3 788.8,961.1 790.0,962.5 791.9,968.6 793.8,957.9 795.6,970.5 797.5,965.0 798.8,971.1 800.0,968.1 801.2,969.0 802.5,970.0 803.8,971.7 805.0,977.6 806.2,968.3 807.5,975.0" fill="none" stroke="#1a5a80" stroke-width="0.6" stroke-linejoin="round" opacity="0.7"/>
<polygon points="815.0,900.0 820.0,955.0 821.2,964.9 822.5,971.8 823.8,976.9 825.0,987.5 826.2,993.4 827.5,996.5 828.8,991.9 830.0,1000.0 831.2,1013.7 832.5,1021.9 833.8,1033.6 835.0,1045.0 837.5,900.0" fill="#3eb0e6"/>
<polyline points="820.0,955.0 821.2,964.8 822.5,965.7 823.8,980.7 825.0,987.5 826.2,989.0 827.5,998.5 828.8,993.5 830.0,1000.0 831.2,1015.3 832.5,1025.4 833.8,1035.3 835.0,1045.0" fill="none" stroke="#1a5a80" stroke-width="0.6" stroke-linejoin="round" opacity="0.7"/>
<polygon points="841.2,900.0 841.2,957.5 842.8,963.4 844.4,954.2 845.9,962.5 847.5,962.5 849.4,960.8 851.2,958.5 853.1,952.0 855.0,950.0 856.9,947.7 858.8,952.4 860.6,960.7 862.5,962.5 864.4,960.4 866.2,960.8 868.1,966.3 870.0,970.0 871.2,972.1 872.5,975.4 873.8,971.6 875.0,980.0 878.8,900.0" fill="#3eb0e6"/>
<polyline points="841.2,957.5 842.8,962.2 844.4,957.9 845.9,964.8 847.5,962.5 849.4,953.2 851.2,961.9 853.1,954.3 855.0,950.0 856.9,959.1 858.8,962.3 860.6,963.5 862.5,962.5 864.4,959.5 866.2,964.4 868.1,964.8 870.0,970.0 871.2,976.0 872.5,971.2 873.8,974.0 875.0,980.0" fill="none" stroke="#1a5a80" stroke-width="0.6" stroke-linejoin="round" opacity="0.7"/>
<polygon points="877.5,900.0 880.0,937.5 881.2,938.9 882.5,945.3 883.8,961.7 885.0,962.5 886.2,965.3 887.5,954.7 888.8,956.1 890.0,950.0 892.5,951.5 895.0,954.0 897.5,954.0 900.0,957.5 900.0,900.0" fill="#3eb0e6"/>
<polyline points="880.0,937.5 881.2,945.4 882.5,946.7 883.8,953.2 885.0,962.5 886.2,959.6 887.5,952.5 888.8,952.4 890.0,950.0 892.5,957.4 895.0,947.8 897.5,950.7 900.0,957.5" fill="none" stroke="#1a5a80" stroke-width="0.6" stroke-linejoin="round" opacity="0.7"/>
<polygon points="600.0,900.0 600.0,962.5 601.2,969.4 602.5,963.2 603.8,968.8 605.0,975.0 606.2,976.3 607.5,970.1 608.8,962.1 610.0,962.5 612.5,900.0" fill="#3eb0e6"/>
<polyline points="600.0,962.5 601.2,960.1 602.5,965.9 603.8,969.4 605.0,975.0 606.2,975.6 607.5,974.7 608.8,969.2 610.0,962.5" fill="none" stroke="#1a5a80" stroke-width="0.6" stroke-linejoin="round" opacity="0.7"/>
<polygon points="900.0,910.0 900.0,925.0 900.0,935.4 900.0,944.7 900.0,950.0 902.5,957.7 905.0,960.8 907.5,952.4 910.0,960.0 911.9,963.3 913.8,968.1 915.6,978.2 917.5,982.5 918.8,975.5 920.0,966.8 921.2,966.1 922.5,955.0 923.1,942.5 923.8,928.9 924.4,918.5 925.0,910.0" fill="#3eb0e6"/>
<polygon points="925.0,915.0 927.5,921.4 930.0,930.1 932.5,936.5 935.0,942.5 937.5,949.9 940.0,954.8 942.5,965.7 945.0,975.0 946.2,966.6 947.5,958.4 948.8,956.8 950.0,950.0 951.9,951.1 953.8,962.6 955.6,967.0 957.5,970.0 958.8,966.7 960.0,974.1 961.2,971.7 962.5,975.0 962.5,958.1 962.5,943.8 962.5,929.5 962.5,910.0" fill="#3eb0e6"/>
<polygon points="972.5,935.0 975.0,951.7 977.5,961.7 980.0,967.0 982.5,982.5 985.0,989.3 987.5,992.9 990.0,995.2 992.5,1007.5 993.4,1002.5 994.4,995.9 995.3,995.2 996.2,985.0 997.2,970.3 998.1,964.2 999.1,947.7 1000.0,935.0" fill="#3eb0e6"/>
<polygon points="1007.5,920.0 1008.8,918.7 1010.0,930.2 1011.2,928.6 1012.5,935.0 1015.0,941.0 1017.5,940.9 1020.0,945.8 1022.5,957.5 1024.4,967.1 1026.2,960.5 1028.1,966.2 1030.0,975.0 1031.2,955.8 1032.5,940.0 1033.8,934.1 1035.0,915.0" fill="#3eb0e6"/>
<polygon points="1040.0,910.0 1041.9,927.4 1043.8,934.4 1045.6,942.4 1047.5,955.0 1050.0,966.7 1052.5,968.8 1055.0,971.1 1057.5,982.5 1058.8,969.3 1060.0,949.5 1061.2,932.7 1062.5,920.0" fill="#3eb0e6"/>
<polygon points="1060.0,915.0 1061.2,912.8 1062.5,913.6 1063.8,911.0 1065.0,915.0 1065.0,925.2 1065.0,937.1 1065.0,942.1 1065.0,950.0" fill="#3eb0e6"/>
<polygon points="642.5,900.0 656.2,995.0 656.2,900.0" fill="#020202"/>
<polygon points="671.2,900.0 682.5,970.0 687.5,900.0" fill="#020202"/>
<polygon points="742.5,900.0 750.0,985.0 752.5,900.0" fill="#020202"/>
<polygon points="817.5,900.0 837.5,1050.0 840.0,900.0" fill="#020202"/>
<polygon points="872.5,900.0 875.0,930.0 876.2,900.0" fill="#020202"/>
<polygon points="610.0,900.0 613.8,950.0 615.0,900.0" fill="#020202"/>
<polygon points="972.5,907.5 990.0,960.0 998.8,907.5" fill="#020202"/>
<polygon points="912.5,910.0 917.5,925.0 920.0,910.0" fill="#020202"/>
<polygon points="1050.0,910.0 1055.0,930.0 1060.0,910.0" fill="#020202"/>
<polygon points="600.0,900.0 600.0,907.5 602.5,905.0 604.0,905.4 605.4,905.8 606.9,906.2 608.3,906.5 609.8,906.7 611.2,907.0 612.7,907.1 614.2,907.3 615.6,907.4 617.1,907.5 618.5,907.5 620.0,907.5 620.0,900.0" fill="url(#rdM)" opacity="0.92"/>
<polyline points="600.0,907.5 602.5,905.0 604.0,905.4 605.4,905.8 606.9,906.2 608.3,906.5 609.8,906.7 611.2,907.0 612.7,907.1 614.2,907.3 615.6,907.4 617.1,907.5 618.5,907.5 620.0,907.5" fill="none" stroke="#c82a2a" stroke-width="1.0" stroke-linejoin="round"/>
<polygon points="616.2,900.0 616.2,910.0 620.0,962.5 620.4,953.4 620.8,945.2 621.2,937.9 621.7,931.5 622.1,926.0 622.5,921.4 622.9,917.7 623.3,914.7 623.8,912.5 624.2,911.0 624.6,910.2 625.0,910.0 625.0,900.0" fill="url(#rdM)" opacity="0.92"/>
<polyline points="616.2,910.0 620.0,962.5 620.4,953.4 620.8,945.2 621.2,937.9 621.7,931.5 622.1,926.0 622.5,921.4 622.9,917.7 623.3,914.7 623.8,912.5 624.2,911.0 624.6,910.2 625.0,910.0" fill="none" stroke="#c82a2a" stroke-width="1.0" stroke-linejoin="round"/>
<polygon points="625.0,900.0 625.0,910.0 627.5,950.0 628.1,943.0 628.8,936.8 629.4,931.2 630.0,926.4 630.6,922.2 631.2,918.7 631.9,915.8 632.5,913.6 633.1,911.9 633.8,910.8 634.4,910.2 635.0,910.0 635.0,900.0" fill="url(#rdM)" opacity="0.92"/>
<polyline points="625.0,910.0 627.5,950.0 628.1,943.0 628.8,936.8 629.4,931.2 630.0,926.4 630.6,922.2 631.2,918.7 631.9,915.8 632.5,913.6 633.1,911.9 633.8,910.8 634.4,910.2 635.0,910.0" fill="none" stroke="#c82a2a" stroke-width="1.0" stroke-linejoin="round"/>
<polygon points="635.0,900.0 635.0,907.5 636.2,950.0 637.7,942.6 639.2,936.0 640.6,930.1 642.1,924.9 643.5,920.5 645.0,916.7 646.5,913.7 647.9,911.3 649.4,909.5 650.8,908.3 652.3,907.7 653.8,907.5 653.8,900.0" fill="url(#rdM)" opacity="0.92"/>
<polyline points="635.0,907.5 636.2,950.0 637.7,942.6 639.2,936.0 640.6,930.1 642.1,924.9 643.5,920.5 645.0,916.7 646.5,913.7 647.9,911.3 649.4,909.5 650.8,908.3 652.3,907.7 653.8,907.5" fill="none" stroke="#c82a2a" stroke-width="1.0" stroke-linejoin="round"/>
<polygon points="653.8,900.0 653.8,905.0 655.0,962.5 657.7,952.5 660.4,943.5 663.1,935.5 665.8,928.6 668.5,922.6 671.2,917.5 674.0,913.4 676.7,910.1 679.4,907.7 682.1,906.1 684.8,905.2 687.5,905.0 687.5,900.0" fill="url(#rdM)" opacity="0.92"/>
<polyline points="653.8,905.0 655.0,962.5 657.7,952.5 660.4,943.5 663.1,935.5 665.8,928.6 668.5,922.6 671.2,917.5 674.0,913.4 676.7,910.1 679.4,907.7 682.1,906.1 684.8,905.2 687.5,905.0" fill="none" stroke="#c82a2a" stroke-width="1.0" stroke-linejoin="round"/>
<polygon points="690.0,900.0 690.0,915.0 691.2,951.2 694.5,944.9 697.7,939.3 700.9,934.3 704.2,929.9 707.4,926.1 710.6,922.9 713.9,920.3 717.1,918.2 720.3,916.7 723.5,915.7 726.8,915.2 730.0,915.0 730.0,900.0" fill="url(#rdM)" opacity="0.92"/>
<polyline points="690.0,915.0 691.2,951.2 694.5,944.9 697.7,939.3 700.9,934.3 704.2,929.9 707.4,926.1 710.6,922.9 713.9,920.3 717.1,918.2 720.3,916.7 723.5,915.7 726.8,915.2 730.0,915.0" fill="none" stroke="#c82a2a" stroke-width="1.0" stroke-linejoin="round"/>
<polygon points="730.0,900.0 730.0,910.0 731.2,958.8 734.2,950.3 737.1,942.6 740.0,935.9 742.9,930.0 745.8,924.9 748.8,920.6 751.7,917.1 754.6,914.3 757.5,912.3 760.4,910.9 763.3,910.2 766.2,910.0 766.2,900.0" fill="url(#rdM)" opacity="0.92"/>
<polyline points="730.0,910.0 731.2,958.8 734.2,950.3 737.1,942.6 740.0,935.9 742.9,930.0 745.8,924.9 748.8,920.6 751.7,917.1 754.6,914.3 757.5,912.3 760.4,910.9 763.3,910.2 766.2,910.0" fill="none" stroke="#c82a2a" stroke-width="1.0" stroke-linejoin="round"/>
<polygon points="767.5,900.0 767.5,910.0 768.8,960.0 771.9,951.3 775.0,943.5 778.1,936.6 781.2,930.5 784.4,925.3 787.5,920.9 790.6,917.3 793.8,914.5 796.9,912.4 800.0,911.0 803.1,910.2 806.2,910.0 806.2,900.0" fill="url(#rdM)" opacity="0.92"/>
<polyline points="767.5,910.0 768.8,960.0 771.9,951.3 775.0,943.5 778.1,936.6 781.2,930.5 784.4,925.3 787.5,920.9 790.6,917.3 793.8,914.5 796.9,912.4 800.0,911.0 803.1,910.2 806.2,910.0" fill="none" stroke="#c82a2a" stroke-width="1.0" stroke-linejoin="round"/>
<polygon points="807.5,900.0 807.5,907.5 808.8,957.5 811.4,948.8 814.0,941.0 816.6,934.1 819.2,928.0 821.8,922.8 824.4,918.4 827.0,914.8 829.6,912.0 832.2,909.9 834.8,908.5 837.4,907.7 840.0,907.5 840.0,900.0" fill="url(#rdM)" opacity="0.92"/>
<polyline points="807.5,907.5 808.8,957.5 811.4,948.8 814.0,941.0 816.6,934.1 819.2,928.0 821.8,922.8 824.4,918.4 827.0,914.8 829.6,912.0 832.2,909.9 834.8,908.5 837.4,907.7 840.0,907.5" fill="none" stroke="#c82a2a" stroke-width="1.0" stroke-linejoin="round"/>
<polygon points="843.8,900.0 843.8,911.2 845.0,955.0 847.9,947.4 850.8,940.5 853.8,934.5 856.7,929.2 859.6,924.6 862.5,920.8 865.4,917.6 868.3,915.2 871.2,913.3 874.2,912.1 877.1,911.4 880.0,911.2 880.0,900.0" fill="url(#rdM)" opacity="0.92"/>
<polyline points="843.8,911.2 845.0,955.0 847.9,947.4 850.8,940.5 853.8,934.5 856.7,929.2 859.6,924.6 862.5,920.8 865.4,917.6 868.3,915.2 871.2,913.3 874.2,912.1 877.1,911.4 880.0,911.2" fill="none" stroke="#c82a2a" stroke-width="1.0" stroke-linejoin="round"/>
<polygon points="885.0,900.0 885.0,915.0 886.2,958.8 887.4,951.1 888.5,944.3 889.7,938.2 890.8,932.9 892.0,928.4 893.1,924.5 894.3,921.4 895.4,918.9 896.6,917.1 897.7,915.8 898.9,915.2 900.0,915.0 900.0,900.0" fill="url(#rdM)" opacity="0.92"/>
<polyline points="885.0,915.0 886.2,958.8 887.4,951.1 888.5,944.3 889.7,938.2 890.8,932.9 892.0,928.4 893.1,924.5 894.3,921.4 895.4,918.9 896.6,917.1 897.7,915.8 898.9,915.2 900.0,915.0" fill="none" stroke="#c82a2a" stroke-width="1.0" stroke-linejoin="round"/>
<polygon points="900.0,900.0 900.0,907.5 900.0,955.0 901.9,946.7 903.8,939.3 905.6,932.7 907.5,927.0 909.4,922.0 911.2,917.8 913.1,914.4 915.0,911.7 916.9,909.7 918.8,908.4 920.6,907.7 922.5,907.5 922.5,900.0" fill="url(#rdM)" opacity="0.92"/>
<polyline points="900.0,907.5 900.0,955.0 901.9,946.7 903.8,939.3 905.6,932.7 907.5,927.0 909.4,922.0 911.2,917.8 913.1,914.4 915.0,911.7 916.9,909.7 918.8,908.4 920.6,907.7 922.5,907.5" fill="none" stroke="#c82a2a" stroke-width="1.0" stroke-linejoin="round"/>
<polygon points="922.5,900.0 922.5,910.0 923.8,952.5 927.0,945.1 930.2,938.5 933.4,932.6 936.7,927.4 939.9,923.0 943.1,919.2 946.4,916.2 949.6,913.8 952.8,912.0 956.0,910.8 959.3,910.2 962.5,910.0 962.5,900.0" fill="url(#rdM)" opacity="0.92"/>
<polyline points="922.5,910.0 923.8,952.5 927.0,945.1 930.2,938.5 933.4,932.6 936.7,927.4 939.9,923.0 943.1,919.2 946.4,916.2 949.6,913.8 952.8,912.0 956.0,910.8 959.3,910.2 962.5,910.0" fill="none" stroke="#c82a2a" stroke-width="1.0" stroke-linejoin="round"/>
<polygon points="962.5,900.0 962.5,907.5 963.8,952.5 966.7,944.7 969.6,937.6 972.5,931.4 975.4,925.9 978.3,921.2 981.2,917.3 984.2,914.1 987.1,911.5 990.0,909.6 992.9,908.4 995.8,907.7 998.8,907.5 998.8,900.0" fill="url(#rdM)" opacity="0.92"/>
<polyline points="962.5,907.5 963.8,952.5 966.7,944.7 969.6,937.6 972.5,931.4 975.4,925.9 978.3,921.2 981.2,917.3 984.2,914.1 987.1,911.5 990.0,909.6 992.9,908.4 995.8,907.7 998.8,907.5" fill="none" stroke="#c82a2a" stroke-width="1.0" stroke-linejoin="round"/>
<polygon points="998.8,900.0 998.8,910.0 1000.0,952.5 1002.9,945.1 1005.8,938.5 1008.8,932.6 1011.7,927.4 1014.6,923.0 1017.5,919.2 1020.4,916.2 1023.3,913.8 1026.2,912.0 1029.2,910.8 1032.1,910.2 1035.0,910.0 1035.0,900.0" fill="url(#rdM)" opacity="0.92"/>
<polyline points="998.8,910.0 1000.0,952.5 1002.9,945.1 1005.8,938.5 1008.8,932.6 1011.7,927.4 1014.6,923.0 1017.5,919.2 1020.4,916.2 1023.3,913.8 1026.2,912.0 1029.2,910.8 1032.1,910.2 1035.0,910.0" fill="none" stroke="#c82a2a" stroke-width="1.0" stroke-linejoin="round"/>
<polygon points="1035.0,900.0 1035.0,915.0 1036.2,960.0 1038.6,952.2 1041.0,945.1 1043.4,938.9 1045.8,933.4 1048.2,928.7 1050.6,924.8 1053.0,921.6 1055.4,919.0 1057.8,917.1 1060.2,915.9 1062.6,915.2 1065.0,915.0 1065.0,900.0" fill="url(#rdM)" opacity="0.92"/>
<polyline points="1035.0,915.0 1036.2,960.0 1038.6,952.2 1041.0,945.1 1043.4,938.9 1045.8,933.4 1048.2,928.7 1050.6,924.8 1053.0,921.6 1055.4,919.0 1057.8,917.1 1060.2,915.9 1062.6,915.2 1065.0,915.0" fill="none" stroke="#c82a2a" stroke-width="1.0" stroke-linejoin="round"/>
<rect x="600" y="900" width="465.29999999999995" height="2" fill="#3a1a10"/>
<polyline points="600.0,901.5 602.0,903.6 604.0,901.6 606.0,902.9 608.0,904.1 610.0,903.5 612.0,904.2 614.0,903.8 616.0,902.3 618.0,901.9 620.0,902.9 622.0,903.5 624.0,902.2 626.0,902.5 628.0,903.7 630.0,902.5 632.0,903.3 634.0,903.1 636.0,904.3 638.0,901.6 640.0,902.1 642.0,903.8 644.0,903.5 646.0,901.8 648.0,901.9 650.0,902.1 652.0,903.1 654.0,904.2 656.0,902.1 658.0,902.1 660.0,903.6 662.0,902.8 664.0,904.0 666.0,904.5 668.0,904.3 670.0,903.6 672.0,903.0 674.0,901.7 676.0,903.9 678.0,902.7 680.0,902.9 682.0,903.4 684.0,904.4 686.0,903.2 688.0,904.3 690.0,904.4 692.0,901.8 694.0,902.6 696.0,904.2 698.0,903.8 700.0,904.4 702.0,902.1 704.0,903.1 706.0,904.3 708.0,903.1 710.0,903.5 712.0,904.4 714.0,902.0 716.0,901.7 718.0,904.1 720.0,903.2 722.0,902.1 724.0,904.0 726.0,902.4 728.0,901.9 730.0,902.4 732.0,901.6 734.0,902.7 736.0,903.8 738.0,902.9 740.0,904.4 742.0,901.6 744.0,902.0 746.0,901.9 748.0,903.2 750.0,902.1 752.0,903.5 754.0,903.1 756.0,903.2 758.0,904.0 760.0,903.9 762.0,904.3 764.0,902.0 766.0,902.6 768.0,904.4 770.0,902.7 772.0,902.4 774.0,902.9 776.0,902.0 778.0,904.0 780.0,903.4 782.0,901.8 784.0,904.4 786.0,903.1 788.0,902.3 790.0,903.3 792.0,904.3 794.0,902.5 796.0,901.5 798.0,902.1 800.0,901.7 802.0,903.1 804.0,902.4 806.0,904.1 808.0,902.1 810.0,901.5 812.0,902.9 814.0,901.9 816.0,902.4 818.0,902.2 820.0,902.0 822.0,903.4 824.0,904.3 826.0,902.6 828.0,903.4 830.0,902.5 832.0,904.2 834.0,903.2 836.0,901.6 838.0,903.7 840.0,902.1 842.0,901.6 844.0,901.6 846.0,904.0 848.0,903.6 850.0,902.6 852.0,903.2 854.0,903.6 856.0,901.7 858.0,903.6 860.0,903.6 862.0,904.3 864.0,901.7 866.0,903.2 868.0,903.0 870.0,904.0 872.0,902.6 874.0,903.5 876.0,904.2 878.0,902.5 880.0,903.0 882.0,904.2 884.0,901.6 886.0,904.4 888.0,902.4 890.0,902.9 892.0,902.4 894.0,903.9 896.0,903.1 898.0,903.7 900.0,901.8 902.0,904.1 904.0,904.0 906.0,903.5 908.0,902.2 910.0,902.3 912.0,902.9 914.0,901.7 916.0,904.4 918.0,902.7 920.0,904.4 922.0,902.0 924.0,903.4 926.0,903.9 928.0,903.4 930.0,902.8 932.0,901.6 934.0,902.8 936.0,902.7 938.0,904.3 940.0,904.4 942.0,904.4 944.0,904.4 946.0,902.0 948.0,901.6 950.0,902.4 952.0,901.5 954.0,901.9 956.0,903.2 958.0,902.1 960.0,903.3 962.0,902.6 964.0,902.3 966.0,904.4 968.0,902.1 970.0,904.1 972.0,903.1 974.0,903.5 976.0,901.9 978.0,903.7 980.0,904.2 982.0,902.1 984.0,902.9 986.0,903.5 988.0,902.9 990.0,903.8 992.0,903.4 994.0,902.4 996.0,903.5 998.0,903.8 1000.0,902.9 1002.0,903.3 1004.0,903.4 1006.0,902.9 1008.0,901.8 1010.0,902.7 1012.0,903.8 1014.0,903.7 1016.0,901.7 1018.0,902.9 1020.0,903.3 1022.0,903.1 1024.0,901.9 1026.0,903.4 1028.0,903.6 1030.0,903.1 1032.0,904.3 1034.0,903.2 1036.0,901.5 1038.0,902.4 1040.0,903.6 1042.0,901.7 1044.0,904.4 1046.0,903.6 1048.0,903.8 1050.0,902.0 1052.0,901.5 1054.0,904.1 1056.0,903.0 1058.0,902.8 1060.0,903.1 1062.0,903.8 1064.0,902.6" fill="none" stroke="#c09030" stroke-width="0.7" stroke-linejoin="round" opacity="0.8"/>
<polyline points="612.5,1010.0 625.0,1018.8 630.0,1013.8 637.5,1016.2 650.0,1013.8 692.5,1022.5 732.5,1007.5 770.0,1011.2 807.5,1006.2 837.5,1015.0 850.0,1017.5 887.5,1008.8 900.0,1010.0 925.0,1013.8 950.0,1008.8 1000.0,1010.0 1040.0,1002.5 1065.0,1006.2" fill="none" stroke="#1a2a30" stroke-width="2.6" stroke-linejoin="round" opacity="0.6"/>
<polyline points="612.5,1010.0 625.0,1018.8 630.0,1013.8 637.5,1016.2 650.0,1013.8 692.5,1022.5 732.5,1007.5 770.0,1011.2 807.5,1006.2 837.5,1015.0 850.0,1017.5 887.5,1008.8 900.0,1010.0 925.0,1013.8 950.0,1008.8 1000.0,1010.0 1040.0,1002.5 1065.0,1006.2" fill="none" stroke="#d8a030" stroke-width="1.3" stroke-linejoin="round"/>
<text x="834" y="914.25" fill="#e8f0f8" font-size="7" text-anchor="middle" letter-spacing="0.25">-0.7</text>
<text x="834" y="924" fill="#e8f0f8" font-size="7" text-anchor="middle" letter-spacing="0.25">-1.5</text>
<text x="834" y="935.5" fill="#e8f0f8" font-size="7" text-anchor="middle" letter-spacing="0.25">-2.5</text>
<text x="834" y="949" fill="#e8f0f8" font-size="7" text-anchor="middle" letter-spacing="0.25">-3.5</text>
<text x="834" y="968" fill="#e8f0f8" font-size="7" text-anchor="middle" letter-spacing="0.25">-5</text>
<text x="834" y="980.5" fill="#e8f0f8" font-size="7" text-anchor="middle" letter-spacing="0.25">-6</text>
<text x="834" y="991.75" fill="#e8f0f8" font-size="7" text-anchor="middle" letter-spacing="0.25">-7</text>
<text x="834" y="1005.5" fill="#e8f0f8" font-size="7" text-anchor="middle" letter-spacing="0.25">-8</text>
<text x="834" y="1018" fill="#e8f0f8" font-size="7" text-anchor="middle" letter-spacing="0.25">-9</text>
<text x="834" y="1031" fill="#e8f0f8" font-size="7" text-anchor="middle" letter-spacing="0.25">-10</text>
<text x="834" y="1058.7" fill="#e8f0f8" font-size="7" text-anchor="middle" letter-spacing="0.25">-12</text>
<text x="834" y="1084" fill="#e8f0f8" font-size="7" text-anchor="middle" letter-spacing="0.25">-14</text>
<text x="834" y="1108.8" fill="#e8f0f8" font-size="7" text-anchor="middle" letter-spacing="0.25">-16</text>
<text x="834" y="1133.9" fill="#e8f0f8" font-size="7" text-anchor="middle" letter-spacing="0.25">-18</text>
<text x="834" y="1159.3" fill="#e8f0f8" font-size="7" text-anchor="middle" letter-spacing="0.25">-20</text>
<rect x="602.5" y="923.75" width="10.0" height="232.95000000000005" fill="#0a1a28" rx="1" stroke="#c07a18" stroke-width="0.9"/>
<rect x="603" y="1018.75" width="9.5" height="5.0" fill="#e08a18"/>
<rect x="627.4" y="1179.8" width="416.4" height="11.0" fill="#0e1820" rx="1" stroke="#c07a18" stroke-width="0.9"/>
<rect x="713.6" y="1180.3" width="6.699999999999932" height="10.0" fill="#e08a18"/>
<text x="603" y="1199.5" fill="#5a7088" font-size="6.5" letter-spacing="0.23">Registered to: LVC-Audio</text>
<rect x="1065.3" y="900" width="73.40000000000009" height="300" fill="#2a2a2a"/>
<rect x="1065.3" y="900" width="2.2000000000000455" height="300" fill="#1a1a1a"/>
<text x="1096.25" y="911.25" fill="#e0e0e0" font-size="10.5" text-anchor="middle" letter-spacing="0.37">LIMIT</text>
<circle cx="1123.25" cy="907.5" r="5" fill="#151515" stroke="#8a8a8a" stroke-width="0.8"/>
<text x="1123.25" y="920" fill="#ccc" font-size="5" text-anchor="middle" font-weight="bold" letter-spacing="0.18">ISP</text>
<path d="M1092.80,954.38 A20,20 0 0 1 1087.87,921.39" fill="none" stroke="#e8c040" stroke-width="2.8" stroke-linecap="butt"/>
<circle cx="1101.25" cy="936.25" r="17.5" fill="#262626" stroke="#e8e8e8" stroke-width="1.8"/>
<line x1="1087" y1="922" x2="1092.5" y2="928.5" stroke="#e08020" stroke-width="1.8"/>
<circle cx="1092.5" cy="928.5" r="2.6" fill="#e08020"/>
<text x="1101.25" y="968.75" fill="#ddd" font-size="8" text-anchor="middle" letter-spacing="0.28">7.14</text>
<text x="1101.25" y="986.25" fill="#d8d8d8" font-size="9.5" text-anchor="middle" letter-spacing="0.33">CEILING</text>
<circle cx="1100.5" cy="1005" r="13" fill="#262626" stroke="#e8e8e8" stroke-width="1.6"/>
<circle cx="1105.5" cy="999.5" r="2.3" fill="#e08020"/>
<text x="1101.25" y="1030.5" fill="#ddd" font-size="8" text-anchor="middle" letter-spacing="0.28">-0.50 dB</text>
<rect x="1074" y="1043.3" width="56.700000000000045" height="70.70000000000005" fill="#222" stroke="#151515" stroke-width="1"/>
<text x="1101.3" y="1053.3" fill="#ccc" font-size="8" text-anchor="middle" font-weight="bold" letter-spacing="0.28">GAIN</text>
<circle cx="1123.1" cy="1051.7" r="5.3" fill="#208a20"/>
<circle cx="1123.1" cy="1051.7" r="3.8" fill="#60e040"/>
<circle cx="1100.7" cy="1069.6" r="12.7" fill="#262626" stroke="#e0e0e0" stroke-width="1.5"/>
<circle cx="1095.3" cy="1064.3" r="2.3" fill="#e08020"/>
<text x="1100.7" y="1095.3" fill="#ccc" font-size="8" text-anchor="middle" letter-spacing="0.28">0.0 dB</text>
<rect x="1079" y="1098.7" width="47.299999999999955" height="12.0" fill="none" stroke="#a06010" stroke-width="1"/>
<text x="1102.7" y="1108" fill="#b07018" font-size="9" text-anchor="middle" letter-spacing="0.32">LEARN</text>
<rect x="1066" y="1118.7" width="72" height="70.0" fill="#5a5a5a"/>
<text x="1102.7" y="1125.3" fill="#ddd" font-size="7" text-anchor="middle" font-weight="bold" letter-spacing="0.25">SMOOTH</text>
<rect x="1075.3" y="1126.7" width="53.40000000000009" height="53.299999999999955" fill="#262626"/>
<text x="1071.5" y="1154" fill="#ddd" font-size="6.5" text-anchor="middle" font-weight="bold" letter-spacing="0.23" transform="rotate(-90 1071.5 1154)" dy="2.3">CLEAN</text>
<text x="1133.3" y="1153.3" fill="#ddd" font-size="6.5" text-anchor="middle" font-weight="bold" letter-spacing="0.23" transform="rotate(-90 1133.3 1153.3)" dy="2.3">AGGRESSIVE</text>
<text x="1102.7" y="1187.3" fill="#ddd" font-size="7" text-anchor="middle" font-weight="bold" letter-spacing="0.25">PUNCH</text>
<circle cx="1091.3" cy="1146.7" r="3.6" fill="url(#obM)" opacity="1"/>
<circle cx="1088" cy="1156" r="4" fill="url(#obM)" opacity="1"/>
<circle cx="1084.7" cy="1164" r="3.4" fill="url(#obM)" opacity="0.9"/>
<circle cx="1093.5" cy="1131.5" r="2.5" fill="url(#obM)" opacity="0.4"/>
<circle cx="1083" cy="1140" r="2.5" fill="url(#obM)" opacity="0.35"/>
<circle cx="1096" cy="1152" r="2.5" fill="url(#obM)" opacity="0.6"/>
<circle cx="1078" cy="1154" r="1.5" fill="#f0f0e0"/>
<circle cx="1102" cy="1153.3" r="5" fill="#301808" stroke="#e08020" stroke-width="1"/>
<circle cx="1102" cy="1153.3" r="2.5" fill="#000"/>
<rect x="1066" y="1190" width="72" height="10" fill="#3a3a3a"/>
<text x="1070" y="1199" fill="#ccc" font-size="7" font-weight="bold" letter-spacing="0.25">MODE</text>
<rect x="1138.7" y="900" width="23.799999999999955" height="300" fill="#0e0e0e"/>
<rect x="1162.5" y="900" width="37.5" height="300" fill="#1a4070"/>
<rect x="1162.5" y="900" width="37.5" height="17" fill="#111"/>
<text x="1144.5" y="906" fill="#ccc" font-size="6" text-anchor="middle" letter-spacing="0.21">L</text>
<text x="1156.25" y="906" fill="#ccc" font-size="6" text-anchor="middle" letter-spacing="0.21">R</text>
<text x="1144.5" y="914.5" fill="#ccc" font-size="5" text-anchor="middle" letter-spacing="0.18">4.5</text>
<text x="1156.25" y="914.5" fill="#ccc" font-size="5" text-anchor="middle" letter-spacing="0.18">4.5</text>
<text x="1174" y="906" fill="#ccc" font-size="6" text-anchor="middle" letter-spacing="0.21">L</text>
<text x="1189" y="906" fill="#ccc" font-size="6" text-anchor="middle" letter-spacing="0.21">R</text>
<text x="1174" y="914.5" fill="#ccc" font-size="5" text-anchor="middle" letter-spacing="0.18">-0.37</text>
<text x="1191" y="914.5" fill="#ccc" font-size="5" text-anchor="middle" letter-spacing="0.18">-0.51</text>
<rect x="1138.75" y="920" width="23.75" height="15" fill="#b04040"/>
<rect x="1138.75" y="967" width="23.75" height="3.5" fill="#f0f0f0"/>
<rect x="1165" y="925" width="11.25" height="98.75" fill="#4a88c4"/>
<rect x="1178.75" y="927.5" width="12.5" height="100.0" fill="#4a88c4"/>
<rect x="1163" y="932.5" width="15" height="2.5" fill="#f0f0f0"/>
<rect x="1178" y="936" width="21" height="3" fill="#f0f0f0"/>
<text x="1150.5" y="930.0" fill="#c8c8c8" font-size="7" text-anchor="middle" letter-spacing="0.25">-0.7</text>
<text x="1180.7" y="930.0" fill="#c8d8e8" font-size="7" text-anchor="middle" letter-spacing="0.25">-0.7</text>
<line x1="1159.5" y1="927.5" x2="1162.5" y2="927.5" stroke="#555" stroke-width="0.8"/>
<line x1="1195" y1="927.5" x2="1200" y2="927.5" stroke="#0a2040" stroke-width="1"/>
<line x1="1162.5" y1="927.5" x2="1166" y2="927.5" stroke="#0a2040" stroke-width="1"/>
<text x="1150.5" y="941.25" fill="#c8c8c8" font-size="7" text-anchor="middle" letter-spacing="0.25">-1.5</text>
<text x="1180.7" y="941.25" fill="#c8d8e8" font-size="7" text-anchor="middle" letter-spacing="0.25">-1.5</text>
<line x1="1159.5" y1="938.75" x2="1162.5" y2="938.75" stroke="#555" stroke-width="0.8"/>
<line x1="1195" y1="938.75" x2="1200" y2="938.75" stroke="#0a2040" stroke-width="1"/>
<line x1="1162.5" y1="938.75" x2="1166" y2="938.75" stroke="#0a2040" stroke-width="1"/>
<text x="1150.5" y="953.75" fill="#c8c8c8" font-size="7" text-anchor="middle" letter-spacing="0.25">-2.5</text>
<text x="1180.7" y="953.75" fill="#c8d8e8" font-size="7" text-anchor="middle" letter-spacing="0.25">-2.5</text>
<line x1="1159.5" y1="951.25" x2="1162.5" y2="951.25" stroke="#555" stroke-width="0.8"/>
<line x1="1195" y1="951.25" x2="1200" y2="951.25" stroke="#0a2040" stroke-width="1"/>
<line x1="1162.5" y1="951.25" x2="1166" y2="951.25" stroke="#0a2040" stroke-width="1"/>
<text x="1150.5" y="965.0" fill="#c8c8c8" font-size="7" text-anchor="middle" letter-spacing="0.25">-3.5</text>
<text x="1180.7" y="965.0" fill="#c8d8e8" font-size="7" text-anchor="middle" letter-spacing="0.25">-3.5</text>
<line x1="1159.5" y1="962.5" x2="1162.5" y2="962.5" stroke="#555" stroke-width="0.8"/>
<line x1="1195" y1="962.5" x2="1200" y2="962.5" stroke="#0a2040" stroke-width="1"/>
<line x1="1162.5" y1="962.5" x2="1166" y2="962.5" stroke="#0a2040" stroke-width="1"/>
<text x="1150.5" y="983.75" fill="#c8c8c8" font-size="7" text-anchor="middle" letter-spacing="0.25">-5</text>
<text x="1180.7" y="983.75" fill="#c8d8e8" font-size="7" text-anchor="middle" letter-spacing="0.25">-5</text>
<line x1="1159.5" y1="981.25" x2="1162.5" y2="981.25" stroke="#555" stroke-width="0.8"/>
<line x1="1195" y1="981.25" x2="1200" y2="981.25" stroke="#0a2040" stroke-width="1"/>
<line x1="1162.5" y1="981.25" x2="1166" y2="981.25" stroke="#0a2040" stroke-width="1"/>
<text x="1150.5" y="996.25" fill="#c8c8c8" font-size="7" text-anchor="middle" letter-spacing="0.25">-6</text>
<text x="1180.7" y="996.25" fill="#c8d8e8" font-size="7" text-anchor="middle" letter-spacing="0.25">-6</text>
<line x1="1159.5" y1="993.75" x2="1162.5" y2="993.75" stroke="#555" stroke-width="0.8"/>
<line x1="1195" y1="993.75" x2="1200" y2="993.75" stroke="#0a2040" stroke-width="1"/>
<line x1="1162.5" y1="993.75" x2="1166" y2="993.75" stroke="#0a2040" stroke-width="1"/>
<text x="1150.5" y="1008.75" fill="#c8c8c8" font-size="7" text-anchor="middle" letter-spacing="0.25">-7</text>
<text x="1180.7" y="1008.75" fill="#c8d8e8" font-size="7" text-anchor="middle" letter-spacing="0.25">-7</text>
<line x1="1159.5" y1="1006.25" x2="1162.5" y2="1006.25" stroke="#555" stroke-width="0.8"/>
<line x1="1195" y1="1006.25" x2="1200" y2="1006.25" stroke="#0a2040" stroke-width="1"/>
<line x1="1162.5" y1="1006.25" x2="1166" y2="1006.25" stroke="#0a2040" stroke-width="1"/>
<text x="1150.5" y="1021.25" fill="#c8c8c8" font-size="7" text-anchor="middle" letter-spacing="0.25">-8</text>
<text x="1180.7" y="1021.25" fill="#c8d8e8" font-size="7" text-anchor="middle" letter-spacing="0.25">-8</text>
<line x1="1159.5" y1="1018.75" x2="1162.5" y2="1018.75" stroke="#555" stroke-width="0.8"/>
<line x1="1195" y1="1018.75" x2="1200" y2="1018.75" stroke="#0a2040" stroke-width="1"/>
<line x1="1162.5" y1="1018.75" x2="1166" y2="1018.75" stroke="#0a2040" stroke-width="1"/>
<text x="1150.5" y="1033.75" fill="#c8c8c8" font-size="7" text-anchor="middle" letter-spacing="0.25">-9</text>
<text x="1180.7" y="1033.75" fill="#c8d8e8" font-size="7" text-anchor="middle" letter-spacing="0.25">-9</text>
<line x1="1159.5" y1="1031.25" x2="1162.5" y2="1031.25" stroke="#555" stroke-width="0.8"/>
<line x1="1195" y1="1031.25" x2="1200" y2="1031.25" stroke="#0a2040" stroke-width="1"/>
<line x1="1162.5" y1="1031.25" x2="1166" y2="1031.25" stroke="#0a2040" stroke-width="1"/>
<text x="1150.5" y="1046.25" fill="#c8c8c8" font-size="7" text-anchor="middle" letter-spacing="0.25">-10</text>
<text x="1180.7" y="1046.25" fill="#c8d8e8" font-size="7" text-anchor="middle" letter-spacing="0.25">-10</text>
<line x1="1159.5" y1="1043.75" x2="1162.5" y2="1043.75" stroke="#555" stroke-width="0.8"/>
<line x1="1195" y1="1043.75" x2="1200" y2="1043.75" stroke="#0a2040" stroke-width="1"/>
<line x1="1162.5" y1="1043.75" x2="1166" y2="1043.75" stroke="#0a2040" stroke-width="1"/>
<text x="1150.5" y="1070.5" fill="#c8c8c8" font-size="7" text-anchor="middle" letter-spacing="0.25">-12</text>
<text x="1180.7" y="1070.5" fill="#c8d8e8" font-size="7" text-anchor="middle" letter-spacing="0.25">-12</text>
<line x1="1159.5" y1="1068" x2="1162.5" y2="1068" stroke="#555" stroke-width="0.8"/>
<line x1="1195" y1="1068" x2="1200" y2="1068" stroke="#0a2040" stroke-width="1"/>
<line x1="1162.5" y1="1068" x2="1166" y2="1068" stroke="#0a2040" stroke-width="1"/>
<text x="1150.5" y="1095.2" fill="#c8c8c8" font-size="7" text-anchor="middle" letter-spacing="0.25">-14</text>
<text x="1180.7" y="1095.2" fill="#c8d8e8" font-size="7" text-anchor="middle" letter-spacing="0.25">-14</text>
<line x1="1159.5" y1="1092.7" x2="1162.5" y2="1092.7" stroke="#555" stroke-width="0.8"/>
<line x1="1195" y1="1092.7" x2="1200" y2="1092.7" stroke="#0a2040" stroke-width="1"/>
<line x1="1162.5" y1="1092.7" x2="1166" y2="1092.7" stroke="#0a2040" stroke-width="1"/>
<text x="1150.5" y="1119.8" fill="#c8c8c8" font-size="7" text-anchor="middle" letter-spacing="0.25">-16</text>
<text x="1180.7" y="1119.8" fill="#c8d8e8" font-size="7" text-anchor="middle" letter-spacing="0.25">-16</text>
<line x1="1159.5" y1="1117.3" x2="1162.5" y2="1117.3" stroke="#555" stroke-width="0.8"/>
<line x1="1195" y1="1117.3" x2="1200" y2="1117.3" stroke="#0a2040" stroke-width="1"/>
<line x1="1162.5" y1="1117.3" x2="1166" y2="1117.3" stroke="#0a2040" stroke-width="1"/>
<text x="1150.5" y="1144.5" fill="#c8c8c8" font-size="7" text-anchor="middle" letter-spacing="0.25">-18</text>
<text x="1180.7" y="1144.5" fill="#c8d8e8" font-size="7" text-anchor="middle" letter-spacing="0.25">-18</text>
<line x1="1159.5" y1="1142" x2="1162.5" y2="1142" stroke="#555" stroke-width="0.8"/>
<line x1="1195" y1="1142" x2="1200" y2="1142" stroke="#0a2040" stroke-width="1"/>
<line x1="1162.5" y1="1142" x2="1166" y2="1142" stroke="#0a2040" stroke-width="1"/>
<text x="1150.5" y="1169.2" fill="#c8c8c8" font-size="7" text-anchor="middle" letter-spacing="0.25">-20</text>
<text x="1180.7" y="1169.2" fill="#c8d8e8" font-size="7" text-anchor="middle" letter-spacing="0.25">-20</text>
<line x1="1159.5" y1="1166.7" x2="1162.5" y2="1166.7" stroke="#555" stroke-width="0.8"/>
<line x1="1195" y1="1166.7" x2="1200" y2="1166.7" stroke="#0a2040" stroke-width="1"/>
<line x1="1162.5" y1="1166.7" x2="1166" y2="1166.7" stroke="#0a2040" stroke-width="1"/>
<text x="1078" y="1197.3" fill="#70f040" font-size="20" textLength="122" lengthAdjust="spacingAndGlyphs">GoAudiO.io</text>
</g>
</svg></body></html>
